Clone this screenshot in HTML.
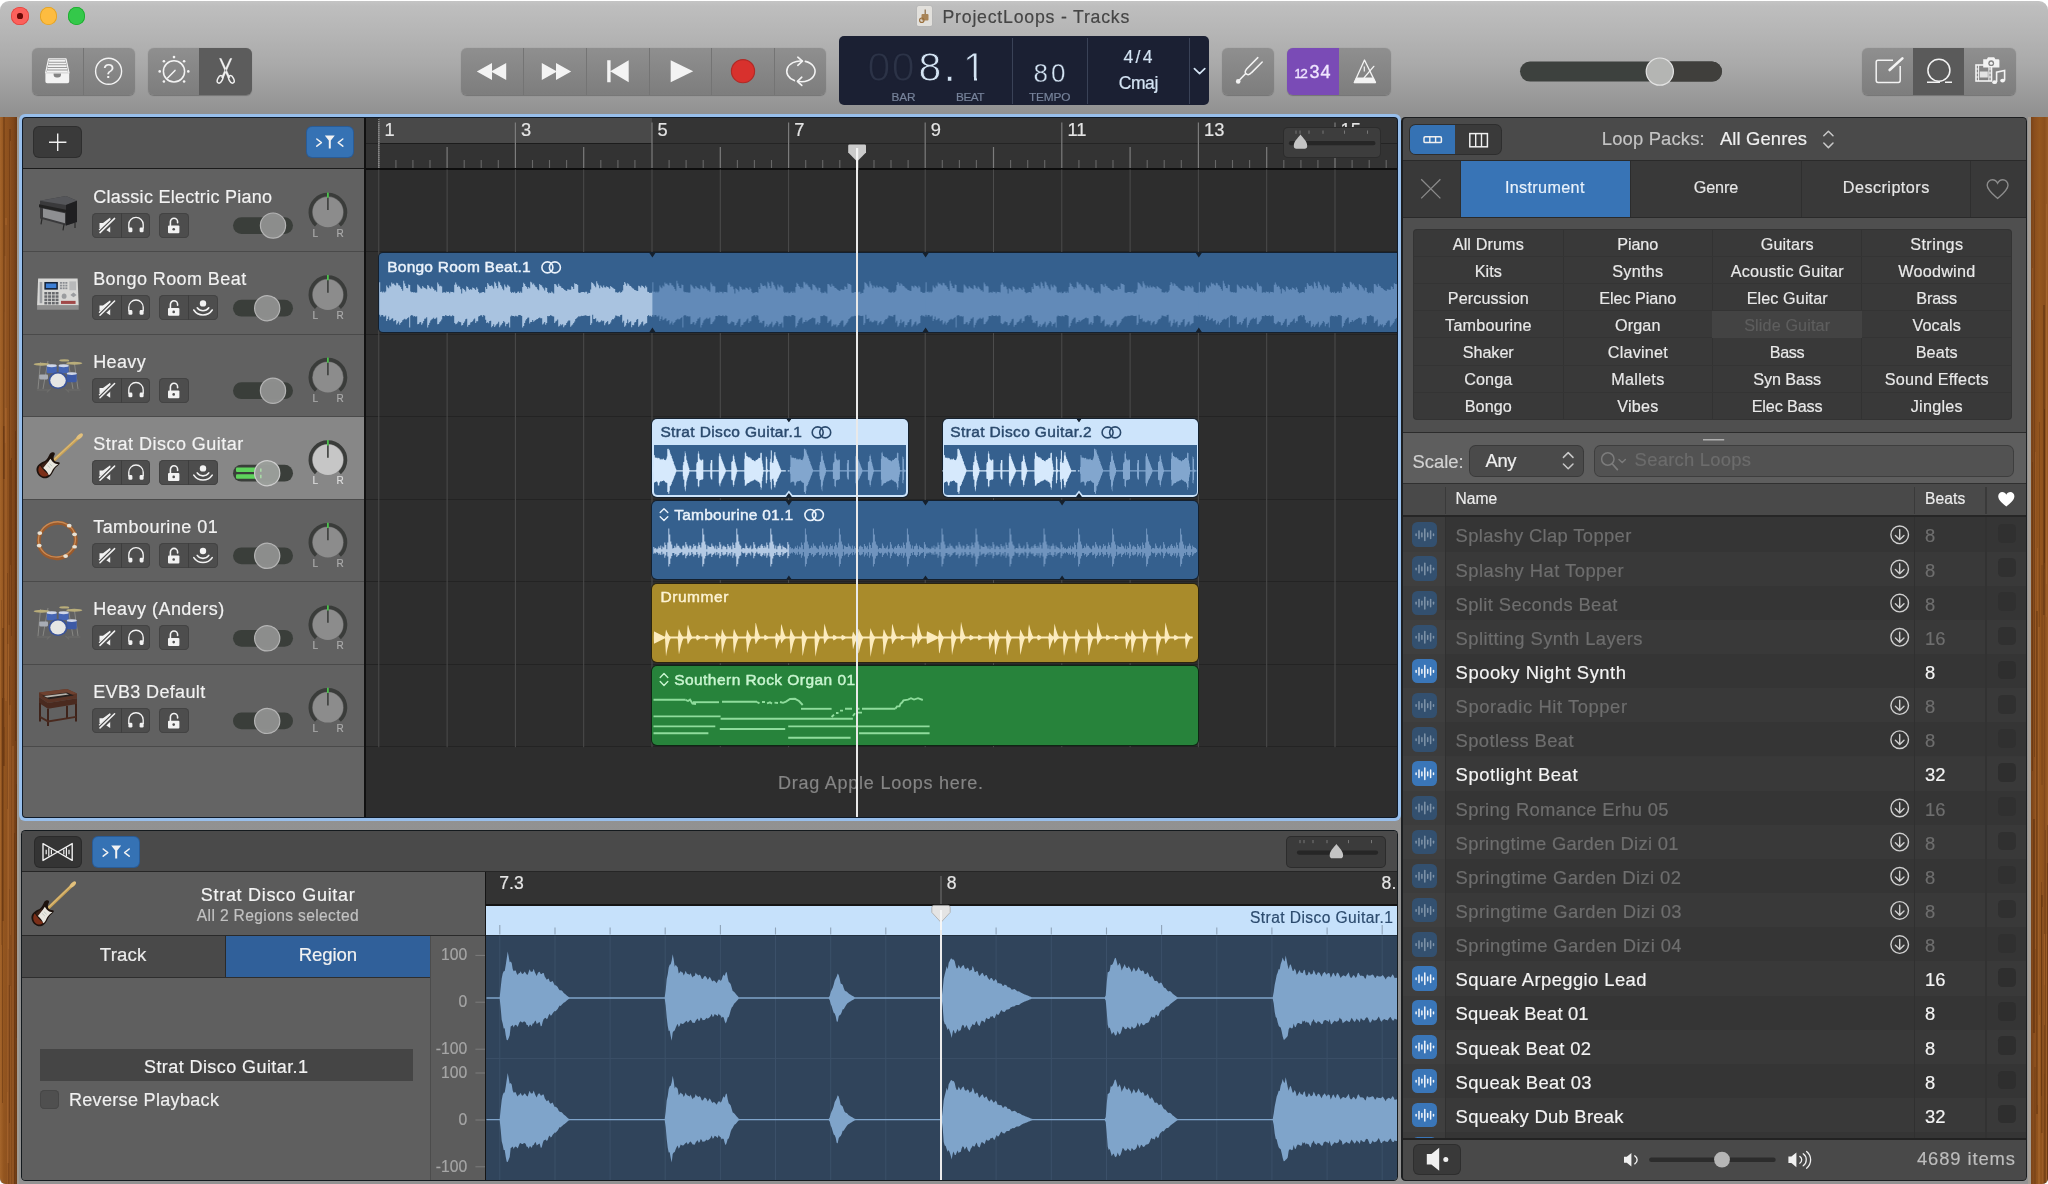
<!DOCTYPE html>
<html><head><meta charset="utf-8"><title>ProjectLoops - Tracks</title>
<style>
html,body{margin:0;padding:0;background:#fff;}
body{width:2048px;height:1184px;position:relative;overflow:hidden;font-family:"Liberation Sans",sans-serif;}
.a{position:absolute;box-sizing:border-box;}
.t{position:absolute;line-height:1;white-space:nowrap;font-family:"Liberation Sans",sans-serif;-webkit-text-stroke:0.18px currentColor;}
svg{overflow:visible;}
</style></head><body><div id="app" style="position:absolute;left:0;top:0;width:2048px;height:1184px;will-change:transform;">
<!-- toolbar -->
<div class="a" style="left:0;top:1.3px;width:2048px;height:1182.7px;border-radius:9px 9px 5px 5px;background:linear-gradient(to bottom,#c4c4c4 0px,#bebebe 5px,#b5b5b5 32px,#aaaaaa 62px,#919191 112px,#929292 100%);"></div>
<div class="a" style="left:11.4px;top:7.4px;width:17.2px;height:17.2px;border-radius:50%;background:#fc605b;box-shadow:inset 0 0 0 0.8px #e0443e;"></div>
<div class="a" style="left:39.9px;top:7.4px;width:17.2px;height:17.2px;border-radius:50%;background:#fdbc40;box-shadow:inset 0 0 0 0.8px #dfa023;"></div>
<div class="a" style="left:67.9px;top:7.4px;width:17.2px;height:17.2px;border-radius:50%;background:#34c84a;box-shadow:inset 0 0 0 0.8px #1aab2c;"></div>
<div class="a" style="left:17.4px;top:13.4px;width:5.2px;height:5.2px;background:#6b0a07;border-radius:50%;"></div>
<div class="a" style="left:917.0px;top:6.0px;width:14.5px;height:20.0px;background:#e2e0dc;border-radius:1.5px;box-shadow:0 0 1px #999;"></div>
<svg class="a" style="left:917.0px;top:6.0px;" width="14.5" height="20.0" viewBox="0 0 14.5 20.0"><path d="M8.2 3.5 L8.2 9" stroke="#8a6a45" stroke-width="1.2"/><rect x="4.5" y="8" width="7" height="6.5" rx="1" fill="#a88458"/><circle cx="4.8" cy="14.2" r="2.2" fill="none" stroke="#9a6f3c" stroke-width="1.2"/></svg>
<span class="t" style="left:942.5px;top:8.5px;font-size:17.7px;color:#454545;letter-spacing:0.79px;">ProjectLoops - Tracks</span>
<div class="a" style="left:31.5px;top:48px;width:103.5px;height:47.3px;border-radius:6px;background:linear-gradient(to bottom,#8f8f8f,#7d7d7d);box-shadow:0 0.5px 1px rgba(0,0,0,.25);overflow:hidden;"><div class="a" style="left:51.0px;top:0;width:1px;height:47.3px;background:#747474;"></div></div>
<div class="a" style="left:148px;top:48px;width:103.7px;height:47.3px;border-radius:6px;background:linear-gradient(to bottom,#8f8f8f,#7d7d7d);box-shadow:0 0.5px 1px rgba(0,0,0,.25);overflow:hidden;"><div class="a" style="left:51px;top:0;width:52.69999999999999px;height:47.3px;background:#5c5c5c;"></div></div>
<div class="a" style="left:460.7px;top:47.6px;width:365.3px;height:47.8px;border-radius:6px;background:linear-gradient(to bottom,#8f8f8f,#7d7d7d);box-shadow:0 0.5px 1px rgba(0,0,0,.25);overflow:hidden;"><div class="a" style="left:62.599999999999966px;top:0;width:1px;height:47.8px;background:#747474;"></div><div class="a" style="left:125.50000000000006px;top:0;width:1px;height:47.8px;background:#747474;"></div><div class="a" style="left:188.40000000000003px;top:0;width:1px;height:47.8px;background:#747474;"></div><div class="a" style="left:250.50000000000006px;top:0;width:1px;height:47.8px;background:#747474;"></div><div class="a" style="left:313.00000000000006px;top:0;width:1px;height:47.8px;background:#747474;"></div></div>
<div class="a" style="left:1222px;top:47.6px;width:52px;height:47.8px;border-radius:6px;background:linear-gradient(to bottom,#8f8f8f,#7d7d7d);box-shadow:0 0.5px 1px rgba(0,0,0,.25);overflow:hidden;"></div>
<div class="a" style="left:1287px;top:47.6px;width:103.7px;height:47.8px;border-radius:6px;background:linear-gradient(to bottom,#8f8f8f,#7d7d7d);box-shadow:0 0.5px 1px rgba(0,0,0,.25);overflow:hidden;"><div class="a" style="left:0px;top:0;width:51.5px;height:47.8px;background:#7a4bb6;"></div></div>
<div class="a" style="left:1861.8px;top:48px;width:154.7px;height:47px;border-radius:6px;background:linear-gradient(to bottom,#8f8f8f,#7d7d7d);box-shadow:0 0.5px 1px rgba(0,0,0,.25);overflow:hidden;"><div class="a" style="left:51.600000000000136px;top:0;width:50.899999999999864px;height:47px;background:#5a5a5a;"></div></div>
<svg class="a" style="left:0.0px;top:0.0px;" width="2048.0" height="116.0" viewBox="0 0 2048.0 116.0"><path d="M48.6 58.9 H66 L69 72.8 H45.6 Z" fill="none" stroke="#f3f3f3" stroke-width="1.2" stroke-linejoin="round"/><path d="M49.1 60.9 H65.5" stroke="#f3f3f3" stroke-width="1.75"/><path d="M48.5 63.5 H66.1" stroke="#f3f3f3" stroke-width="1.75"/><path d="M47.9 66.1 H66.7" stroke="#f3f3f3" stroke-width="1.75"/><path d="M47.4 68.7 H67.2" stroke="#f3f3f3" stroke-width="1.75"/><path d="M46.8 71.3 H67.8" stroke="#f3f3f3" stroke-width="1.75"/><path d="M45.4 73.2 H53.6 V74.4 Q53.6 77.4 56.6 77.4 H58 Q61 77.4 61 74.4 V73.2 H69.2 V81.4 Q69.2 83.2 67.4 83.2 H47.2 Q45.4 83.2 45.4 81.4 Z" fill="#f3f3f3"/><circle cx="108.6" cy="71.2" r="13" fill="none" stroke="#f3f3f3" stroke-width="1.4"/><text x="108.6" y="78.4" font-size="20" fill="#f3f3f3" text-anchor="middle" font-family="Liberation Sans,sans-serif">?</text><circle cx="174" cy="71.4" r="10.6" fill="none" stroke="#f3f3f3" stroke-width="1.5"/><path d="M175 70.4 L167.6 78" stroke="#f3f3f3" stroke-width="1.5" stroke-linecap="round"/><circle cx="174.0" cy="57.1" r="1.3" fill="#f3f3f3"/><circle cx="184.1" cy="61.3" r="1.3" fill="#f3f3f3"/><circle cx="188.3" cy="71.4" r="1.3" fill="#f3f3f3"/><circle cx="184.1" cy="81.5" r="1.3" fill="#f3f3f3"/><circle cx="163.9" cy="81.5" r="1.3" fill="#f3f3f3"/><circle cx="159.7" cy="71.4" r="1.3" fill="#f3f3f3"/><circle cx="163.9" cy="61.3" r="1.3" fill="#f3f3f3"/><path d="M219.6 58.4 L221.2 58.6 L229.9 77.4 L228.2 78.2 Z M231.8 58.4 L230.2 58.6 L221.5 77.4 L223.2 78.2 Z" fill="#f3f3f3" stroke="#f3f3f3" stroke-width="0.5" stroke-linejoin="round"/><ellipse cx="220" cy="79.4" rx="2.3" ry="4" transform="rotate(27 220 79.4)" fill="none" stroke="#f3f3f3" stroke-width="1.45"/><ellipse cx="231.4" cy="79.4" rx="2.3" ry="4" transform="rotate(-27 231.4 79.4)" fill="none" stroke="#f3f3f3" stroke-width="1.45"/><path d="M476.8 71.5 L492 63 V80 Z M491 71.5 L506.2 63 V80 Z" fill="#f3f3f3"/><path d="M571.2 71.5 L556 63 V80 Z M557 71.5 L541.8 63 V80 Z" fill="#f3f3f3"/><path d="M607.2 60.3 H610.6 V82.3 H607.2 Z M610.2 71.3 L628.7 60.3 V82.3 Z" fill="#f3f3f3"/><path d="M670.7 60.3 L693.2 71.3 L670.7 82.3 Z" fill="#f3f3f3"/><circle cx="743" cy="71.2" r="11.6" fill="#d8312d" stroke="#b02a26" stroke-width="1.1"/><path d="M794.4 80.6 A13.4 10.3 0 0 1 802 61.1" fill="none" stroke="#f3f3f3" stroke-width="1.6" stroke-linecap="round"/><path d="M797.8 57.2 L802.4 61.2 L797.8 65.3" fill="none" stroke="#f3f3f3" stroke-width="1.6" stroke-linejoin="round" stroke-linecap="round"/><path d="M805.4 61.4 A13.4 10.3 0 0 1 797.8 81.3" fill="none" stroke="#f3f3f3" stroke-width="1.6" stroke-linecap="round"/><path d="M801.8 77.2 L797.4 81.3 L801.8 85.4" fill="none" stroke="#f3f3f3" stroke-width="1.6" stroke-linejoin="round" stroke-linecap="round"/><circle cx="1238.2" cy="81.4" r="2.3" fill="#f3f3f3"/><path d="M1238.5 81 L1246 73.2" stroke="#f3f3f3" stroke-width="1.6"/><path d="M1257.8 57.6 L1246.6 69 Q1243.8 72.6 1246.6 74.2 Q1249 75.6 1251.6 72.6 L1262.2 62" fill="none" stroke="#f3f3f3" stroke-width="1.5" stroke-linecap="round"/><text y="77.9" fill="#f0e6ff" stroke="#f0e6ff" stroke-width="0.35" font-family="Liberation Sans,sans-serif"><tspan x="1294.6" font-size="12.6">1</tspan><tspan x="1300.3" font-size="13.6">2</tspan><tspan x="1309.6" font-size="18">3</tspan><tspan x="1320.6" font-size="18">4</tspan></text><path d="M1364.5 60 L1354.3 82.6 H1375.5 Z" fill="none" stroke="#f3f3f3" stroke-width="1.3" stroke-linejoin="round"/><path d="M1356.4 77.9 L1354.3 82.6 H1375.5 L1373.4 77.9 Z" fill="#f3f3f3" stroke="#f3f3f3" stroke-width="0.8" stroke-linejoin="round"/><path d="M1364.3 66.4 V71.6" stroke="#f3f3f3" stroke-width="1.2"/><path d="M1364.2 77.6 L1373.8 66.4" stroke="#f3f3f3" stroke-width="1.4" stroke-linecap="round"/><rect x="1520" y="61.6" width="202" height="20" rx="10" fill="#3d413e"/><rect x="1660" y="61.6" width="62" height="20" rx="10" fill="#403f3c"/><circle cx="1659.8" cy="71.6" r="13.6" fill="#b4b5b3" stroke="#e4e4e4" stroke-width="1.2"/><path d="M1893 60.3 H1878 Q1876.2 60.3 1876.2 62.1 V80.6 Q1876.2 82.4 1878 82.4 H1898.4 Q1900.2 82.4 1900.2 80.6 V66" fill="none" stroke="#f3f3f3" stroke-width="1.5"/><path d="M1889.6 70 L1902.4 58.4" stroke="#f3f3f3" stroke-width="2.6" stroke-linecap="round"/><circle cx="1938.9" cy="70.3" r="11" fill="none" stroke="#f3f3f3" stroke-width="1.5"/><path d="M1927 82.3 H1940 M1945 82.3 H1952" stroke="#f3f3f3" stroke-width="1.4"/><rect x="1976" y="65" width="15.5" height="16" fill="none" stroke="#f3f3f3" stroke-width="1.6"/><path d="M1978.6 65 V81 M1988.9 65 V81" stroke="#f3f3f3" stroke-width="1"/><path d="M1976 69 H1978.6 M1976 73 H1978.6 M1976 77 H1978.6 M1988.9 69 H1991.5 M1988.9 73 H1991.5 M1988.9 77 H1991.5" stroke="#f3f3f3" stroke-width="1"/><rect x="1979.8" y="71.5" width="8" height="6" fill="#f3f3f3" opacity=".85"/><path d="M1983.2 59.3 H1986.8 L1988 57.2 H1994.2 L1995.4 59.3 H1998.2 Q1999.4 59.3 1999.4 60.5 V67.6 H1983.2 Z" fill="#f3f3f3"/><circle cx="1991.2" cy="63.2" r="2.9" fill="#858585"/><circle cx="1991.2" cy="63.2" r="1.5" fill="#f3f3f3"/><path d="M1996.6 82 V72.2 L2004.6 70.4 V80.4" fill="none" stroke="#f3f3f3" stroke-width="1.6"/><ellipse cx="1994.6" cy="82.2" rx="2.4" ry="1.9" fill="#f3f3f3"/><ellipse cx="2002.6" cy="80.6" rx="2.4" ry="1.9" fill="#f3f3f3"/></svg>
<div class="a" style="left:839.2px;top:36.3px;width:370.0px;height:69.2px;background:#1b2033;border-radius:5px;"></div>
<div class="a" style="left:1011.5px;top:38.0px;width:1.0px;height:66.0px;background:#3a4257;"></div>
<div class="a" style="left:1086.9px;top:38.0px;width:1.0px;height:66.0px;background:#3a4257;"></div>
<div class="a" style="left:1189.3px;top:38.0px;width:1.0px;height:66.0px;background:#3a4257;"></div>
<span class="t" style="left:867.5px;top:46.9px;font-size:41px;color:#2c3347;letter-spacing:1.40px;-webkit-text-stroke:1.1px #1b2033;">00</span>
<span class="t" style="left:918.5px;top:46.9px;font-size:41px;color:#d4e4f4;-webkit-text-stroke:0.9px #1b2033;">8</span>
<span class="t" style="left:944.0px;top:46.9px;font-size:41px;color:#d4e4f4;-webkit-text-stroke:0.5px #1b2033;">.</span>
<span class="t" style="left:963.0px;top:46.9px;font-size:41px;color:#d4e4f4;-webkit-text-stroke:0.9px #1b2033;">1</span>
<div class="a" style="left:964.0px;top:77.2px;width:9.7px;height:4.6px;background:#1b2033;"></div>
<div class="a" style="left:977.3px;top:77.2px;width:8.0px;height:4.6px;background:#1b2033;"></div>
<span class="t" style="left:891.5px;top:92.0px;font-size:11.8px;color:#77839b;letter-spacing:-0.13px;">BAR</span>
<span class="t" style="left:956.0px;top:92.0px;font-size:11.8px;color:#77839b;letter-spacing:-0.48px;">BEAT</span>
<span class="t" style="left:1029.0px;top:92.0px;font-size:11.8px;color:#77839b;letter-spacing:-0.11px;">TEMPO</span>
<span class="t" style="left:1033.5px;top:59.6px;font-size:26px;color:#d4e4f4;letter-spacing:3.08px;-webkit-text-stroke:0.4px #1b2033;">80</span>
<span class="t" style="left:1123.5px;top:48.7px;font-size:17.5px;color:#d4e4f4;letter-spacing:2.34px;">4/4</span>
<span class="t" style="left:1118.8px;top:74.9px;font-size:17.5px;color:#d4e4f4;letter-spacing:-0.45px;">Cmaj</span>
<svg class="a" style="left:1190.0px;top:60.0px;" width="20.0" height="24.0" viewBox="0 0 20.0 24.0"><path d="M4.4 8.6 L9.6 13.6 L14.8 8.6" fill="none" stroke="#d4e4f4" stroke-width="1.7" stroke-linecap="round" stroke-linejoin="round"/></svg>
<!-- wood -->
<div class="a" style="left:0px;top:116.5px;width:16.5px;height:1067.5px;background:linear-gradient(to right,#a5652b 0%,#93551f 22%,#8c501e 50%,#80471a 78%,#6a3915 100%);overflow:hidden;border-radius:0 0 0 6px;"><div class="a" style="left:5.3px;top:108px;width:1.6px;height:183px;background:rgba(60,25,5,0.19);"></div><div class="a" style="left:1.0px;top:483px;width:0.8px;height:345px;background:rgba(60,25,5,0.16);"></div><div class="a" style="left:9.1px;top:12px;width:1.5px;height:576px;background:rgba(60,25,5,0.22);"></div><div class="a" style="left:6.5px;top:975px;width:0.9px;height:536px;background:rgba(190,120,60,0.20);"></div><div class="a" style="left:8.9px;top:549px;width:1.5px;height:457px;background:rgba(60,25,5,0.22);"></div><div class="a" style="left:10.5px;top:341px;width:1.5px;height:178px;background:rgba(60,25,5,0.23);"></div><div class="a" style="left:8.2px;top:508px;width:1.7px;height:360px;background:rgba(190,120,60,0.19);"></div><div class="a" style="left:4.1px;top:139px;width:1.7px;height:187px;background:rgba(190,120,60,0.21);"></div><div class="a" style="left:14.4px;top:716px;width:1.1px;height:591px;background:rgba(60,25,5,0.21);"></div><div class="a" style="left:2.7px;top:309px;width:1.9px;height:340px;background:rgba(60,25,5,0.26);"></div><div class="a" style="left:9.5px;top:869px;width:1.2px;height:463px;background:rgba(190,120,60,0.22);"></div><div class="a" style="left:7.5px;top:832px;width:1.9px;height:363px;background:rgba(60,25,5,0.13);"></div><div class="a" style="left:11.6px;top:629px;width:2.0px;height:520px;background:rgba(190,120,60,0.25);"></div><div class="a" style="left:14.6px;top:314px;width:1.9px;height:310px;background:rgba(60,25,5,0.21);"></div><div class="a" style="left:3.6px;top:252px;width:1.7px;height:329px;background:rgba(190,120,60,0.13);"></div><div class="a" style="left:7.4px;top:527px;width:1.9px;height:519px;background:rgba(190,120,60,0.25);"></div><div class="a" style="left:16.3px;top:667px;width:1.3px;height:254px;background:rgba(60,25,5,0.15);"></div><div class="a" style="left:3.8px;top:195px;width:1.4px;height:415px;background:rgba(190,120,60,0.17);"></div><div class="a" style="left:2.4px;top:511px;width:1.5px;height:293px;background:rgba(60,25,5,0.24);"></div><div class="a" style="left:8.5px;top:598px;width:1.6px;height:174px;background:rgba(190,120,60,0.19);"></div><div class="a" style="left:6.5px;top:456px;width:1.3px;height:236px;background:rgba(60,25,5,0.20);"></div><div class="a" style="left:1.8px;top:581px;width:0.9px;height:405px;background:rgba(60,25,5,0.29);"></div><div class="a" style="left:10.1px;top:24px;width:1.0px;height:319px;background:rgba(190,120,60,0.29);"></div><div class="a" style="left:9.9px;top:448px;width:0.9px;height:370px;background:rgba(190,120,60,0.21);"></div><div class="a" style="left:5.1px;top:101px;width:1.7px;height:483px;background:rgba(190,120,60,0.27);"></div><div class="a" style="left:2.7px;top:-26px;width:1.9px;height:388px;background:rgba(60,25,5,0.24);"></div></div>
<div class="a" style="left:2030.5px;top:116.5px;width:17.5px;height:1067.5px;background:linear-gradient(to right,#7a4318 0%,#8a4e1d 20%,#95571f 50%,#8b4f1d 80%,#9c5d26 100%);overflow:hidden;border-radius:0 0 6px 0;"><div class="a" style="left:16.0px;top:746px;width:1.2px;height:439px;background:rgba(60,25,5,0.25);"></div><div class="a" style="left:4.6px;top:335px;width:1.0px;height:497px;background:rgba(190,120,60,0.23);"></div><div class="a" style="left:10.7px;top:778px;width:1.7px;height:238px;background:rgba(60,25,5,0.27);"></div><div class="a" style="left:12.9px;top:188px;width:1.4px;height:310px;background:rgba(60,25,5,0.30);"></div><div class="a" style="left:13.8px;top:446px;width:1.0px;height:422px;background:rgba(190,120,60,0.20);"></div><div class="a" style="left:16.4px;top:987px;width:1.9px;height:314px;background:rgba(60,25,5,0.14);"></div><div class="a" style="left:8.2px;top:305px;width:1.4px;height:593px;background:rgba(60,25,5,0.21);"></div><div class="a" style="left:11.4px;top:790px;width:0.9px;height:447px;background:rgba(190,120,60,0.26);"></div><div class="a" style="left:13.1px;top:452px;width:1.0px;height:505px;background:rgba(190,120,60,0.14);"></div><div class="a" style="left:16.6px;top:708px;width:1.4px;height:485px;background:rgba(60,25,5,0.25);"></div><div class="a" style="left:3.0px;top:83px;width:1.0px;height:557px;background:rgba(60,25,5,0.23);"></div><div class="a" style="left:10.4px;top:448px;width:1.9px;height:220px;background:rgba(60,25,5,0.12);"></div><div class="a" style="left:14.0px;top:713px;width:0.9px;height:487px;background:rgba(60,25,5,0.20);"></div><div class="a" style="left:15.3px;top:817px;width:1.1px;height:263px;background:rgba(190,120,60,0.21);"></div><div class="a" style="left:13.4px;top:292px;width:1.5px;height:525px;background:rgba(60,25,5,0.28);"></div><div class="a" style="left:6.2px;top:431px;width:1.5px;height:557px;background:rgba(190,120,60,0.27);"></div><div class="a" style="left:15.4px;top:87px;width:1.0px;height:380px;background:rgba(190,120,60,0.26);"></div><div class="a" style="left:10.6px;top:765px;width:1.0px;height:214px;background:rgba(60,25,5,0.22);"></div><div class="a" style="left:5.7px;top:494px;width:1.5px;height:503px;background:rgba(60,25,5,0.28);"></div><div class="a" style="left:1.0px;top:151px;width:0.9px;height:194px;background:rgba(190,120,60,0.22);"></div><div class="a" style="left:13.3px;top:908px;width:1.3px;height:426px;background:rgba(60,25,5,0.24);"></div><div class="a" style="left:7.9px;top:510px;width:1.4px;height:574px;background:rgba(190,120,60,0.29);"></div><div class="a" style="left:15.6px;top:163px;width:1.3px;height:337px;background:rgba(190,120,60,0.20);"></div><div class="a" style="left:1.3px;top:203px;width:0.9px;height:451px;background:rgba(60,25,5,0.28);"></div><div class="a" style="left:2.7px;top:702px;width:1.6px;height:214px;background:rgba(60,25,5,0.29);"></div><div class="a" style="left:3.8px;top:950px;width:1.3px;height:369px;background:rgba(60,25,5,0.15);"></div></div>
<div class="a" style="left:16.5px;top:116.5px;width:2.0px;height:1067.5px;background:#a09a92;"></div>
<div class="a" style="left:2027.5px;top:116.5px;width:3.0px;height:1067.5px;background:#a39c94;"></div>
<!-- tracks -->
<div class="a" style="left:18.8px;top:113.8px;width:1382.4px;height:707.4px;background:#98bfec;border-radius:6px;"></div>
<div class="a" style="left:21.6px;top:116.8px;width:1376.8px;height:701.6px;background:#0f1a28;border-radius:4px;"></div>
<div class="a" style="left:22.6px;top:117.8px;width:1374.8px;height:699.6px;border-radius:3px;overflow:hidden;background:#2d2d2d;">
<div class="a" style="left:0.0px;top:0.0px;width:341.6px;height:51.0px;background:#545454;"></div>
<div class="a" style="left:0.0px;top:50.2px;width:343.6px;height:1.6px;background:#1b1b1b;"></div>
<div class="a" style="left:0.0px;top:51.0px;width:341.6px;height:83.0px;background:#616161;"></div>
<div class="a" style="left:0.0px;top:133.6px;width:341.6px;height:83.0px;background:#616161;"></div>
<div class="a" style="left:0.0px;top:216.1px;width:341.6px;height:83.0px;background:#616161;"></div>
<div class="a" style="left:0.0px;top:298.6px;width:341.6px;height:83.0px;background:#878787;"></div>
<div class="a" style="left:0.0px;top:381.2px;width:341.6px;height:83.0px;background:#616161;"></div>
<div class="a" style="left:0.0px;top:463.7px;width:341.6px;height:83.0px;background:#616161;"></div>
<div class="a" style="left:0.0px;top:546.3px;width:341.6px;height:83.0px;background:#616161;"></div>
<div class="a" style="left:0.0px;top:133.2px;width:341.6px;height:1.2px;background:#4a4a4a;"></div>
<div class="a" style="left:0.0px;top:215.8px;width:341.6px;height:1.2px;background:#4a4a4a;"></div>
<div class="a" style="left:0.0px;top:298.3px;width:341.6px;height:1.2px;background:#4a4a4a;"></div>
<div class="a" style="left:0.0px;top:380.9px;width:341.6px;height:1.2px;background:#4a4a4a;"></div>
<div class="a" style="left:0.0px;top:463.4px;width:341.6px;height:1.2px;background:#4a4a4a;"></div>
<div class="a" style="left:0.0px;top:546.0px;width:341.6px;height:1.2px;background:#4a4a4a;"></div>
<div class="a" style="left:0.0px;top:628.5px;width:341.6px;height:1.2px;background:#4a4a4a;"></div>
<div class="a" style="left:0.0px;top:628.9px;width:341.6px;height:80.0px;background:#646464;"></div>
<div class="a" style="left:341.6px;top:0.0px;width:2.1px;height:700.0px;background:#111111;"></div>
<div class="a" style="left:11.7px;top:9.2px;width:46.8px;height:30.4px;background:#3a3a3a;border-radius:5px;box-shadow:0 0 0 1px #2e2e2e;"></div>
<div class="a" style="left:284.0px;top:9.2px;width:46.6px;height:30.4px;background:#3572b4;border-radius:5px;box-shadow:0 0 0 1px #2a5c96;"></div>
<div class="a" style="left:343.6px;top:0.0px;width:1031.2px;height:25.4px;background:#343434;"></div>
<div class="a" style="left:356.2px;top:0.0px;width:273.2px;height:25.4px;background:#494949;"></div>
<div class="a" style="left:343.6px;top:25.4px;width:1031.2px;height:1.0px;background:#242424;"></div>
<div class="a" style="left:356.2px;top:25.4px;width:273.2px;height:1.2px;background:#1c1c1c;"></div>
<div class="a" style="left:343.6px;top:26.4px;width:1031.2px;height:24.0px;background:#333333;"></div>
<div class="a" style="left:343.6px;top:50.4px;width:1031.2px;height:1.5px;background:#0e0e0e;"></div>
<div class="a" style="left:343.6px;top:51.9px;width:12.6px;height:577.5px;background:#303030;"></div>
<div class="a" style="left:343.6px;top:133.2px;width:1031.2px;height:1.1px;background:#232323;"></div>
<div class="a" style="left:343.6px;top:215.8px;width:1031.2px;height:1.1px;background:#232323;"></div>
<div class="a" style="left:343.6px;top:298.3px;width:1031.2px;height:1.1px;background:#232323;"></div>
<div class="a" style="left:343.6px;top:380.9px;width:1031.2px;height:1.1px;background:#232323;"></div>
<div class="a" style="left:343.6px;top:463.4px;width:1031.2px;height:1.1px;background:#232323;"></div>
<div class="a" style="left:343.6px;top:546.0px;width:1031.2px;height:1.1px;background:#232323;"></div>
<div class="a" style="left:343.6px;top:628.6px;width:1031.2px;height:1.1px;background:#232323;"></div>
<svg class="a" style="left:-22.6px;top:-117.8px;" width="1400.0" height="830.0" viewBox="0 0 1400.0 830.0"><path d="M378.8 169.5 V747.2" stroke="#4c4c4c" stroke-width="1"/><path d="M378.8 122.5 V168" stroke="#7c7c7c" stroke-width="1.2"/><path d="M395.9 160 V168" stroke="#686868" stroke-width="1.1"/><path d="M412.9 160 V168" stroke="#686868" stroke-width="1.1"/><path d="M430.0 160 V168" stroke="#686868" stroke-width="1.1"/><path d="M447.1 169.5 V747.2" stroke="#4c4c4c" stroke-width="1"/><path d="M447.1 147 V168" stroke="#7c7c7c" stroke-width="1.2"/><path d="M464.2 160 V168" stroke="#686868" stroke-width="1.1"/><path d="M481.2 160 V168" stroke="#686868" stroke-width="1.1"/><path d="M498.3 160 V168" stroke="#686868" stroke-width="1.1"/><path d="M515.4 169.5 V747.2" stroke="#4c4c4c" stroke-width="1"/><path d="M515.4 122.5 V168" stroke="#7c7c7c" stroke-width="1.2"/><path d="M532.5 160 V168" stroke="#686868" stroke-width="1.1"/><path d="M549.5 160 V168" stroke="#686868" stroke-width="1.1"/><path d="M566.6 160 V168" stroke="#686868" stroke-width="1.1"/><path d="M583.7 169.5 V747.2" stroke="#4c4c4c" stroke-width="1"/><path d="M583.7 147 V168" stroke="#7c7c7c" stroke-width="1.2"/><path d="M600.8 160 V168" stroke="#686868" stroke-width="1.1"/><path d="M617.9 160 V168" stroke="#686868" stroke-width="1.1"/><path d="M634.9 160 V168" stroke="#686868" stroke-width="1.1"/><path d="M652.0 169.5 V747.2" stroke="#4c4c4c" stroke-width="1"/><path d="M652.0 122.5 V168" stroke="#7c7c7c" stroke-width="1.2"/><path d="M669.1 160 V168" stroke="#686868" stroke-width="1.1"/><path d="M686.1 160 V168" stroke="#686868" stroke-width="1.1"/><path d="M703.2 160 V168" stroke="#686868" stroke-width="1.1"/><path d="M720.3 169.5 V747.2" stroke="#4c4c4c" stroke-width="1"/><path d="M720.3 147 V168" stroke="#7c7c7c" stroke-width="1.2"/><path d="M737.4 160 V168" stroke="#686868" stroke-width="1.1"/><path d="M754.4 160 V168" stroke="#686868" stroke-width="1.1"/><path d="M771.5 160 V168" stroke="#686868" stroke-width="1.1"/><path d="M788.6 169.5 V747.2" stroke="#4c4c4c" stroke-width="1"/><path d="M788.6 122.5 V168" stroke="#7c7c7c" stroke-width="1.2"/><path d="M805.7 160 V168" stroke="#686868" stroke-width="1.1"/><path d="M822.7 160 V168" stroke="#686868" stroke-width="1.1"/><path d="M839.8 160 V168" stroke="#686868" stroke-width="1.1"/><path d="M856.9 169.5 V747.2" stroke="#4c4c4c" stroke-width="1"/><path d="M856.9 147 V168" stroke="#7c7c7c" stroke-width="1.2"/><path d="M874.0 160 V168" stroke="#686868" stroke-width="1.1"/><path d="M891.0 160 V168" stroke="#686868" stroke-width="1.1"/><path d="M908.1 160 V168" stroke="#686868" stroke-width="1.1"/><path d="M925.2 169.5 V747.2" stroke="#4c4c4c" stroke-width="1"/><path d="M925.2 122.5 V168" stroke="#7c7c7c" stroke-width="1.2"/><path d="M942.3 160 V168" stroke="#686868" stroke-width="1.1"/><path d="M959.4 160 V168" stroke="#686868" stroke-width="1.1"/><path d="M976.4 160 V168" stroke="#686868" stroke-width="1.1"/><path d="M993.5 169.5 V747.2" stroke="#4c4c4c" stroke-width="1"/><path d="M993.5 147 V168" stroke="#7c7c7c" stroke-width="1.2"/><path d="M1010.6 160 V168" stroke="#686868" stroke-width="1.1"/><path d="M1027.7 160 V168" stroke="#686868" stroke-width="1.1"/><path d="M1044.7 160 V168" stroke="#686868" stroke-width="1.1"/><path d="M1061.8 169.5 V747.2" stroke="#4c4c4c" stroke-width="1"/><path d="M1061.8 122.5 V168" stroke="#7c7c7c" stroke-width="1.2"/><path d="M1078.9 160 V168" stroke="#686868" stroke-width="1.1"/><path d="M1096.0 160 V168" stroke="#686868" stroke-width="1.1"/><path d="M1113.0 160 V168" stroke="#686868" stroke-width="1.1"/><path d="M1130.1 169.5 V747.2" stroke="#4c4c4c" stroke-width="1"/><path d="M1130.1 147 V168" stroke="#7c7c7c" stroke-width="1.2"/><path d="M1147.2 160 V168" stroke="#686868" stroke-width="1.1"/><path d="M1164.2 160 V168" stroke="#686868" stroke-width="1.1"/><path d="M1181.3 160 V168" stroke="#686868" stroke-width="1.1"/><path d="M1198.4 169.5 V747.2" stroke="#4c4c4c" stroke-width="1"/><path d="M1198.4 122.5 V168" stroke="#7c7c7c" stroke-width="1.2"/><path d="M1215.5 160 V168" stroke="#686868" stroke-width="1.1"/><path d="M1232.5 160 V168" stroke="#686868" stroke-width="1.1"/><path d="M1249.6 160 V168" stroke="#686868" stroke-width="1.1"/><path d="M1266.7 169.5 V747.2" stroke="#4c4c4c" stroke-width="1"/><path d="M1266.7 147 V168" stroke="#7c7c7c" stroke-width="1.2"/><path d="M1283.8 160 V168" stroke="#686868" stroke-width="1.1"/><path d="M1300.9 160 V168" stroke="#686868" stroke-width="1.1"/><path d="M1317.9 160 V168" stroke="#686868" stroke-width="1.1"/><path d="M1335.0 169.5 V747.2" stroke="#4c4c4c" stroke-width="1"/><path d="M1335.0 122.5 V168" stroke="#7c7c7c" stroke-width="1.2"/><path d="M1352.1 160 V168" stroke="#686868" stroke-width="1.1"/><path d="M1369.2 160 V168" stroke="#686868" stroke-width="1.1"/><path d="M1386.2 160 V168" stroke="#686868" stroke-width="1.1"/><path d="M378.8 119 V168" stroke="#8a8a8a" stroke-width="1.4" stroke-dasharray="1 1"/></svg>
<span class="t" style="left:361.8px;top:3.5px;font-size:18.3px;color:#e4e4e4;">1</span>
<span class="t" style="left:498.4px;top:3.5px;font-size:18.3px;color:#e4e4e4;">3</span>
<span class="t" style="left:635.0px;top:3.5px;font-size:18.3px;color:#e4e4e4;">5</span>
<span class="t" style="left:771.6px;top:3.5px;font-size:18.3px;color:#e4e4e4;">7</span>
<span class="t" style="left:908.2px;top:3.5px;font-size:18.3px;color:#e4e4e4;">9</span>
<span class="t" style="left:1044.8px;top:3.5px;font-size:18.3px;color:#e4e4e4;">11</span>
<span class="t" style="left:1181.4px;top:3.5px;font-size:18.3px;color:#e4e4e4;">13</span>
<span class="t" style="left:1318.0px;top:3.5px;font-size:18.3px;color:#e4e4e4;">15</span>
<div class="a" style="left:1261.1px;top:10.0px;width:96.0px;height:28.8px;background:#3d3d3d;border-radius:4px;box-shadow:0 0 0 1px #2c2c2c;"></div>
<div class="a" style="left:355.6px;top:134.6px;width:1030.0px;height:80.2px;background:#14202e;border-radius:5px 0 0 5px;"></div>
<div class="a" style="left:356.6px;top:135.6px;width:1030.0px;height:78.2px;background:#35608e;border-radius:4px 0 0 4px;"></div>
<span class="t" style="left:364.6px;top:141.5px;font-size:15.5px;color:#eaf2fb;letter-spacing:0.24px;-webkit-text-stroke:0.45px currentColor;">Bongo Room Beat.1</span>
<div class="a" style="left:628.9px;top:300.0px;width:257.1px;height:79.8px;background:#16222f;border-radius:6px;"></div>
<div class="a" style="left:629.9px;top:301.0px;width:255.1px;height:77.8px;background:#cde4fb;border-radius:5px;"></div>
<div class="a" style="left:631.3px;top:327.4px;width:252.3px;height:50.1px;background:#35608e;border-radius:0 0 3.5px 3.5px;"></div>
<span class="t" style="left:637.8px;top:306.6px;font-size:15.5px;color:#2b4a6d;letter-spacing:0.37px;-webkit-text-stroke:0.45px currentColor;">Strat Disco Guitar.1</span>
<div class="a" style="left:919.0px;top:300.0px;width:257.4px;height:79.8px;background:#16222f;border-radius:6px;"></div>
<div class="a" style="left:920.0px;top:301.0px;width:255.4px;height:77.8px;background:#cde4fb;border-radius:5px;"></div>
<div class="a" style="left:921.4px;top:327.4px;width:252.6px;height:50.1px;background:#35608e;border-radius:0 0 3.5px 3.5px;"></div>
<span class="t" style="left:927.7px;top:306.6px;font-size:15.5px;color:#2b4a6d;letter-spacing:0.37px;-webkit-text-stroke:0.45px currentColor;">Strat Disco Guitar.2</span>
<div class="a" style="left:628.9px;top:382.6px;width:547.5px;height:80.0px;background:#14202e;border-radius:6px;"></div>
<div class="a" style="left:629.9px;top:383.6px;width:545.5px;height:78.0px;background:#35608e;border-radius:5px;"></div>
<span class="t" style="left:651.6px;top:389.1px;font-size:15.5px;color:#eaf2fb;letter-spacing:0.25px;-webkit-text-stroke:0.45px currentColor;">Tambourine 01.1</span>
<div class="a" style="left:628.9px;top:465.2px;width:547.5px;height:79.8px;background:#2a2410;border-radius:6px;"></div>
<div class="a" style="left:629.9px;top:466.2px;width:545.5px;height:77.8px;background:#a98b2b;border-radius:5px;"></div>
<span class="t" style="left:637.8px;top:471.5px;font-size:15.5px;color:#fdf3d3;letter-spacing:0.57px;-webkit-text-stroke:0.45px currentColor;">Drummer</span>
<div class="a" style="left:628.9px;top:547.6px;width:547.5px;height:80.2px;background:#0f2614;border-radius:6px;"></div>
<div class="a" style="left:629.9px;top:548.6px;width:545.5px;height:78.2px;background:#27833b;border-radius:5px;"></div>
<span class="t" style="left:651.6px;top:554.1px;font-size:15.5px;color:#c9f5d0;letter-spacing:0.45px;-webkit-text-stroke:0.45px currentColor;">Southern Rock Organ 01</span>
<span class="t" style="left:755.4px;top:656.4px;font-size:18px;color:#858585;letter-spacing:0.76px;">Drag Apple Loops here.</span>
<span class="t" style="left:70.6px;top:69.9px;font-size:18px;color:#f2f2f2;letter-spacing:0.28px;">Classic Electric Piano</span>
<svg class="a" style="left:13.4px;top:73.0px;" width="44.0" height="40.0" viewBox="0 0 44.0 40.0"><g transform="translate(0 -2) scale(1.0 1.18)"><path d="M4 10 L30 6 L41 10 L41 28 L30 31 L4 25 Z" fill="#3a3a3c"/><path d="M4 10 L30 6 L41 10 L30 13.5 Z" fill="#55565a"/><path d="M3 13 L30 17.5 L30 20 L3 15.5 Z" fill="#222"/><path d="M7 16.5 L29 20.5 L29 29 L7 24 Z" fill="#8e8f92"/><path d="M30 13.5 L41 10 V28 L30 31 Z" fill="#1f1f21"/><path d="M6 25 L5 30 M28 30 L27 35 M39 28.5 L39 33" stroke="#2a2a2a" stroke-width="1.2"/></g></svg>
<div class="a" style="left:69.7px;top:94.9px;width:58.2px;height:25.0px;background:#4d4d4d;border-radius:4.5px;box-shadow:inset 0 0 0 1px #434343;"></div>
<div class="a" style="left:98.4px;top:94.9px;width:1.0px;height:25.0px;background:#3e3e3e;"></div>
<div class="a" style="left:136.7px;top:94.9px;width:30.0px;height:25.0px;background:#4d4d4d;border-radius:4.5px;box-shadow:inset 0 0 0 1px #434343;"></div>
<span class="t" style="left:289.8px;top:110.9px;font-size:10px;color:#ababab;">L</span>
<span class="t" style="left:314.0px;top:110.9px;font-size:10px;color:#ababab;">R</span>
<span class="t" style="left:70.6px;top:152.4px;font-size:18px;color:#f2f2f2;letter-spacing:0.42px;">Bongo Room Beat</span>
<svg class="a" style="left:13.4px;top:155.6px;" width="44.0" height="40.0" viewBox="0 0 44.0 40.0"><g transform="translate(-1 -4) scale(1.04 1.18)"><path d="M3 8 H41 L42 31 H2 Z" fill="#d8d8d6"/><path d="M2 31 H42 V34.5 H2 Z" fill="#8e8e8e"/><rect x="9" y="11" width="13" height="6.5" fill="#16243a"/><rect x="10.5" y="12.3" width="10" height="3.8" fill="#3c7fd6"/><rect x="9.0" y="19.5" width="2.8" height="2.1" fill="#66686c"/><rect x="12.6" y="19.5" width="2.8" height="2.1" fill="#66686c"/><rect x="16.2" y="19.5" width="2.8" height="2.1" fill="#66686c"/><rect x="19.8" y="19.5" width="2.8" height="2.1" fill="#66686c"/><rect x="9.0" y="22.3" width="2.8" height="2.1" fill="#66686c"/><rect x="12.6" y="22.3" width="2.8" height="2.1" fill="#66686c"/><rect x="16.2" y="22.3" width="2.8" height="2.1" fill="#66686c"/><rect x="19.8" y="22.3" width="2.8" height="2.1" fill="#66686c"/><rect x="9.0" y="25.1" width="2.8" height="2.1" fill="#66686c"/><rect x="12.6" y="25.1" width="2.8" height="2.1" fill="#66686c"/><rect x="16.2" y="25.1" width="2.8" height="2.1" fill="#66686c"/><rect x="19.8" y="25.1" width="2.8" height="2.1" fill="#66686c"/><rect x="9.0" y="27.9" width="2.8" height="2.1" fill="#66686c"/><rect x="12.6" y="27.9" width="2.8" height="2.1" fill="#66686c"/><rect x="16.2" y="27.9" width="2.8" height="2.1" fill="#66686c"/><rect x="19.8" y="27.9" width="2.8" height="2.1" fill="#66686c"/><rect x="24.0" y="11.0" width="1.9" height="1.5" fill="#8a8d92"/><rect x="26.6" y="11.0" width="1.9" height="1.5" fill="#8a8d92"/><rect x="29.2" y="11.0" width="1.9" height="1.5" fill="#8a8d92"/><rect x="24.0" y="13.3" width="1.9" height="1.5" fill="#8a8d92"/><rect x="26.6" y="13.3" width="1.9" height="1.5" fill="#8a8d92"/><rect x="29.2" y="13.3" width="1.9" height="1.5" fill="#8a8d92"/><rect x="24.0" y="15.6" width="1.9" height="1.5" fill="#8a8d92"/><rect x="26.6" y="15.6" width="1.9" height="1.5" fill="#8a8d92"/><rect x="29.2" y="15.6" width="1.9" height="1.5" fill="#8a8d92"/><rect x="33" y="10.5" width="6.5" height="7.5" fill="#b8b9ba"/><circle cx="28" cy="23" r="2.3" fill="#9a9c9f"/><rect x="25" y="27" width="14" height="2.6" fill="#a04848"/><rect x="4.5" y="11" width="2.5" height="18" fill="#9d9fa2"/><path d="M34 22 l3 -2 l3 2 l-3 2z" fill="#9a9c9f"/></g></svg>
<div class="a" style="left:69.7px;top:177.4px;width:58.2px;height:25.0px;background:#4d4d4d;border-radius:4.5px;box-shadow:inset 0 0 0 1px #434343;"></div>
<div class="a" style="left:98.4px;top:177.4px;width:1.0px;height:25.0px;background:#3e3e3e;"></div>
<div class="a" style="left:136.7px;top:177.4px;width:58.4px;height:25.0px;background:#4d4d4d;border-radius:4.5px;box-shadow:inset 0 0 0 1px #434343;"></div>
<div class="a" style="left:165.8px;top:177.4px;width:1.0px;height:25.0px;background:#3e3e3e;"></div>
<span class="t" style="left:289.8px;top:193.5px;font-size:10px;color:#ababab;">L</span>
<span class="t" style="left:314.0px;top:193.5px;font-size:10px;color:#ababab;">R</span>
<span class="t" style="left:70.6px;top:235.0px;font-size:18px;color:#f2f2f2;letter-spacing:0.37px;">Heavy</span>
<svg class="a" style="left:13.4px;top:238.1px;" width="44.0" height="40.0" viewBox="0 0 44.0 40.0"><g transform="translate(-5.5 -4) scale(1.25 1.12)"><path d="M8 9 L6 33 M35 9 L38 33 M14 8 L10 33 M30 8 L34 33" stroke="#8a8a86" stroke-width="0.8"/><ellipse cx="9" cy="11" rx="6.5" ry="1.3" fill="#b9ad7a"/><ellipse cx="35" cy="10" rx="6.5" ry="1.3" fill="#b9ad7a"/><ellipse cx="27" cy="7.5" rx="4" ry="1" fill="#b9ad7a"/><rect x="13" y="12" width="8" height="7" rx="1" fill="#4565b4"/><rect x="22.5" y="12" width="8" height="7" rx="1" fill="#4565b4"/><ellipse cx="17" cy="12.3" rx="4" ry="1.3" fill="#cfd6e8"/><ellipse cx="26.5" cy="12.3" rx="4" ry="1.3" fill="#cfd6e8"/><rect x="29" y="19" width="8" height="8" rx="1" fill="#3d5aa6"/><ellipse cx="33" cy="19.3" rx="4" ry="1.3" fill="#cfd6e8"/><rect x="7" y="20" width="7" height="4.5" rx="1" fill="#a8acb4"/><circle cx="22" cy="25.5" r="7.6" fill="#3a5398"/><circle cx="22" cy="25.5" r="6.2" fill="#e6e6e4"/><path d="M5 34 H15 M30 34 H40 M16 33 L13 36 M28 33 L31 36" stroke="#6e6e6c" stroke-width="0.9"/></g></svg>
<div class="a" style="left:69.7px;top:260.0px;width:58.2px;height:25.0px;background:#4d4d4d;border-radius:4.5px;box-shadow:inset 0 0 0 1px #434343;"></div>
<div class="a" style="left:98.4px;top:260.0px;width:1.0px;height:25.0px;background:#3e3e3e;"></div>
<div class="a" style="left:136.7px;top:260.0px;width:30.0px;height:25.0px;background:#4d4d4d;border-radius:4.5px;box-shadow:inset 0 0 0 1px #434343;"></div>
<span class="t" style="left:289.8px;top:276.0px;font-size:10px;color:#ababab;">L</span>
<span class="t" style="left:314.0px;top:276.0px;font-size:10px;color:#ababab;">R</span>
<span class="t" style="left:70.6px;top:317.5px;font-size:18px;color:#f2f2f2;letter-spacing:0.47px;">Strat Disco Guitar</span>
<svg class="a" style="left:13.4px;top:320.6px;" width="44.0" height="40.0" viewBox="0 0 44.0 40.0"><g transform="translate(0 0)"><path d="M16.6 23.4 L41.4 0.6" stroke="#c9a257" stroke-width="3" stroke-linecap="round"/><path d="M17.4 22.2 L41 0.4" stroke="#dcbb78" stroke-width="1.1"/><ellipse cx="43.6" cy="-1.6" rx="4" ry="2" transform="rotate(-42 43.6 -1.6)" fill="#e2c07c"/><path d="M16.4 14.2 C18.6 13.8 19.6 15.6 18.2 17.4 C17.2 19 17.4 21.6 18.6 23 C20.4 24.6 22.6 23.4 23.8 24.8 C24.2 26.4 20.6 28.4 18.6 31 C16.6 34 15.6 38.4 11.2 40 C6.6 41.4 1.6 38 0.6 33 C-0.2 28.6 3 25.6 7.6 23.6 C11.6 21.8 12.4 18.4 13.6 16.2 C14.2 15 15.2 14.4 16.4 14.2 Z" fill="#1d120d"/><path d="M4 27.6 C1.6 30 1.8 34.6 4.6 37 C7.4 39.4 11 38.8 12.6 36.4 C10.4 35 6.4 31.6 4 27.6 Z" fill="#7c2f18"/><path d="M5 27 C7 25.4 9.4 24.6 11 23 L13 25 L6.6 30.4 Z" fill="#3a2016"/><path d="M14.4 20.8 C15.6 22.6 17 24.6 19 25.4 C20.4 26 21.6 25.6 22.4 26 C20.4 27.6 18.2 29.2 16.8 31.6 C15.8 33.6 14.8 36.4 12.8 37.2 C12 34.4 9.4 31.8 7.2 30 C9.2 27.4 12 24.6 14.4 20.8 Z" fill="#e9e7df"/><path d="M11.6 27.4 L14.4 30 M13.4 25.6 L16.2 28.2" stroke="#b9c4bc" stroke-width="0.9"/></g></svg>
<div class="a" style="left:69.7px;top:342.5px;width:58.2px;height:25.0px;background:#4d4d4d;border-radius:4.5px;box-shadow:inset 0 0 0 1px #434343;"></div>
<div class="a" style="left:98.4px;top:342.5px;width:1.0px;height:25.0px;background:#3e3e3e;"></div>
<div class="a" style="left:136.7px;top:342.5px;width:58.4px;height:25.0px;background:#4d4d4d;border-radius:4.5px;box-shadow:inset 0 0 0 1px #434343;"></div>
<div class="a" style="left:165.8px;top:342.5px;width:1.0px;height:25.0px;background:#3e3e3e;"></div>
<span class="t" style="left:289.8px;top:358.6px;font-size:10px;color:#dcdcdc;">L</span>
<span class="t" style="left:314.0px;top:358.6px;font-size:10px;color:#dcdcdc;">R</span>
<span class="t" style="left:70.6px;top:400.1px;font-size:18px;color:#f2f2f2;letter-spacing:0.45px;">Tambourine 01</span>
<svg class="a" style="left:13.4px;top:403.2px;" width="44.0" height="40.0" viewBox="0 0 44.0 40.0"><g transform="translate(-4 -4) scale(1.2 1.24)"><ellipse cx="21" cy="19" rx="15.5" ry="14.2" fill="none" stroke="#9a5a2c" stroke-width="3.2" transform="rotate(-12 21 19)"/><ellipse cx="21" cy="19" rx="15.5" ry="14.2" fill="none" stroke="#c78a55" stroke-width="1.1" transform="rotate(-12 21 19) translate(0,-0.9)"/><ellipse cx="31" cy="7" rx="2" ry="1.5" fill="#e6e2d6"/><ellipse cx="35.5" cy="14" rx="2" ry="1.5" fill="#e6e2d6"/><ellipse cx="35.5" cy="24" rx="2" ry="1.5" fill="#e6e2d6"/><ellipse cx="28" cy="31.5" rx="2" ry="1.5" fill="#e6e2d6"/><ellipse cx="6.5" cy="13" rx="2" ry="1.5" fill="#e6e2d6"/><ellipse cx="6" cy="23" rx="2" ry="1.5" fill="#e6e2d6"/></g></svg>
<div class="a" style="left:69.7px;top:425.1px;width:58.2px;height:25.0px;background:#4d4d4d;border-radius:4.5px;box-shadow:inset 0 0 0 1px #434343;"></div>
<div class="a" style="left:98.4px;top:425.1px;width:1.0px;height:25.0px;background:#3e3e3e;"></div>
<div class="a" style="left:136.7px;top:425.1px;width:58.4px;height:25.0px;background:#4d4d4d;border-radius:4.5px;box-shadow:inset 0 0 0 1px #434343;"></div>
<div class="a" style="left:165.8px;top:425.1px;width:1.0px;height:25.0px;background:#3e3e3e;"></div>
<span class="t" style="left:289.8px;top:441.1px;font-size:10px;color:#ababab;">L</span>
<span class="t" style="left:314.0px;top:441.1px;font-size:10px;color:#ababab;">R</span>
<span class="t" style="left:70.6px;top:482.6px;font-size:18px;color:#f2f2f2;letter-spacing:0.46px;">Heavy (Anders)</span>
<svg class="a" style="left:13.4px;top:485.7px;" width="44.0" height="40.0" viewBox="0 0 44.0 40.0"><g transform="translate(-5.5 -4) scale(1.25 1.12)"><path d="M8 9 L6 33 M35 9 L38 33 M14 8 L10 33 M30 8 L34 33" stroke="#8a8a86" stroke-width="0.8"/><ellipse cx="9" cy="11" rx="6.5" ry="1.3" fill="#b9ad7a"/><ellipse cx="35" cy="10" rx="6.5" ry="1.3" fill="#b9ad7a"/><ellipse cx="27" cy="7.5" rx="4" ry="1" fill="#b9ad7a"/><rect x="13" y="12" width="8" height="7" rx="1" fill="#4565b4"/><rect x="22.5" y="12" width="8" height="7" rx="1" fill="#4565b4"/><ellipse cx="17" cy="12.3" rx="4" ry="1.3" fill="#cfd6e8"/><ellipse cx="26.5" cy="12.3" rx="4" ry="1.3" fill="#cfd6e8"/><rect x="29" y="19" width="8" height="8" rx="1" fill="#3d5aa6"/><ellipse cx="33" cy="19.3" rx="4" ry="1.3" fill="#cfd6e8"/><rect x="7" y="20" width="7" height="4.5" rx="1" fill="#a8acb4"/><circle cx="22" cy="25.5" r="7.6" fill="#3a5398"/><circle cx="22" cy="25.5" r="6.2" fill="#e6e6e4"/><path d="M5 34 H15 M30 34 H40 M16 33 L13 36 M28 33 L31 36" stroke="#6e6e6c" stroke-width="0.9"/></g></svg>
<div class="a" style="left:69.7px;top:507.6px;width:58.2px;height:25.0px;background:#4d4d4d;border-radius:4.5px;box-shadow:inset 0 0 0 1px #434343;"></div>
<div class="a" style="left:98.4px;top:507.6px;width:1.0px;height:25.0px;background:#3e3e3e;"></div>
<div class="a" style="left:136.7px;top:507.6px;width:30.0px;height:25.0px;background:#4d4d4d;border-radius:4.5px;box-shadow:inset 0 0 0 1px #434343;"></div>
<span class="t" style="left:289.8px;top:523.7px;font-size:10px;color:#ababab;">L</span>
<span class="t" style="left:314.0px;top:523.7px;font-size:10px;color:#ababab;">R</span>
<span class="t" style="left:70.6px;top:565.2px;font-size:18px;color:#f2f2f2;letter-spacing:0.36px;">EVB3 Default</span>
<svg class="a" style="left:13.4px;top:568.3px;" width="44.0" height="40.0" viewBox="0 0 44.0 40.0"><g transform="translate(0 -4) scale(1.0 1.16)"><path d="M3 9 L31 6 L41 10 L41 14 L12 18 L3 13 Z" fill="#5a3426"/><path d="M3 9 L31 6 L41 10 L13 13.6 Z" fill="#6f4230"/><path d="M6 11.8 L31 9 L38 11.6 L13 14.8 Z" fill="#26201e"/><path d="M8 12 L30 9.8 L33 10.8 L11 13.4 Z" fill="#b8b4ac"/><path d="M3 13 L12 18 L41 14 V19 L12 23 L3 18 Z" fill="#4a2a1f"/><path d="M4 18 V34 M12 23 V38 M40 19 V34 M31 20.5 V31" stroke="#3e231a" stroke-width="2"/><path d="M4 30 L12 34 L40 30" stroke="#4a2a1f" stroke-width="1.6" fill="none"/></g></svg>
<div class="a" style="left:69.7px;top:590.2px;width:58.2px;height:25.0px;background:#4d4d4d;border-radius:4.5px;box-shadow:inset 0 0 0 1px #434343;"></div>
<div class="a" style="left:98.4px;top:590.2px;width:1.0px;height:25.0px;background:#3e3e3e;"></div>
<div class="a" style="left:136.7px;top:590.2px;width:30.0px;height:25.0px;background:#4d4d4d;border-radius:4.5px;box-shadow:inset 0 0 0 1px #434343;"></div>
<span class="t" style="left:289.8px;top:606.2px;font-size:10px;color:#ababab;">L</span>
<span class="t" style="left:314.0px;top:606.2px;font-size:10px;color:#ababab;">R</span>
<svg class="a" style="left:-22.6px;top:-117.8px;" width="1400.0" height="830.0" viewBox="0 0 1400.0 830.0"><path d="M49 142.2 H66.4 M57.7 133.5 V150.9" stroke="#f0f0f0" stroke-width="1.4"/><path d="M324.8 135.6 H334.8 L330.8 140.6 V148.6 H328.8 V140.6 Z" fill="#f2f2f2"/><path d="M316.8 139.0 L321.4 142.6 L316.8 146.2 M342.8 139.0 L338.2 142.6 L342.8 146.2" fill="none" stroke="#f2f2f2" stroke-width="1.5" stroke-linecap="round" stroke-linejoin="round"/><path d="M1291 143.2 H1373.4" stroke="#262626" stroke-width="4.2" stroke-linecap="round"/><path d="M1296 130.5 V133.8" stroke="#777" stroke-width="1"/><path d="M1300 130.5 V133.8" stroke="#777" stroke-width="1"/><path d="M1309 130.5 V133.8" stroke="#777" stroke-width="1"/><path d="M1323 130.5 V133.8" stroke="#777" stroke-width="1"/><path d="M1344.5 130.5 V133.8" stroke="#777" stroke-width="1"/><path d="M1367.5 130.5 V133.8" stroke="#777" stroke-width="1"/><path d="M1300.5 134.6 C1303.5 138.5 1307.2 141.5 1307.2 146 Q1307.2 148.8 1304.6 148.8 H1296.4 Q1293.8 148.8 1293.8 146 C1293.8 141.5 1297.5 138.5 1300.5 134.6 Z" fill="#c4c4c4"/><path d="M379.2 304.3L379.2 282.3L380.2 282.3L380.2 292L381.2 292L381.2 291.4L382.2 291.4L382.2 292.5L383.2 292.5L383.2 291.4L384.2 291.4L384.2 292.5L385.2 292.5L385.2 291.4L386.2 291.4L386.2 285.4L387.2 285.4L387.2 287.3L388.2 287.3L388.2 288.2L389.2 288.2L389.2 285.5L390.2 285.5L390.2 286.6L391.2 286.6L391.2 282.4L392.2 282.4L392.2 283.8L393.2 283.8L393.2 283.5L394.2 283.5L394.2 284.8L395.2 284.8L395.2 285.5L396.2 285.5L396.2 282.8L397.2 282.8L397.2 283.2L398.2 283.2L398.2 285.3L399.2 285.3L399.2 285.6L400.2 285.6L400.2 287L401.2 287L401.2 289.1L402.2 289.1L402.2 290.7L403.2 290.7L403.2 280.8L404.2 280.8L404.2 283.6L405.2 283.6L405.2 286L406.2 286L406.2 288L407.2 288L407.2 288.3L408.2 288.3L408.2 284.4L409.2 284.4L409.2 285L410.2 285L410.2 291.6L411.2 291.6L411.2 292.2L412.2 292.2L412.2 292.1L413.2 292.1L413.2 292.4L414.2 292.4L414.2 292.3L415.2 292.3L415.2 292.7L416.2 292.7L416.2 292.5L417.2 292.5L417.2 284.4L418.2 284.4L418.2 285.6L419.2 285.6L419.2 286.7L420.2 286.7L420.2 288.3L421.2 288.3L421.2 288.7L422.2 288.7L422.2 285.9L423.2 285.9L423.2 287.2L424.2 287.2L424.2 288L425.2 288L425.2 288.4L426.2 288.4L426.2 289.3L427.2 289.3L427.2 285.1L428.2 285.1L428.2 285.7L429.2 285.7L429.2 287.8L430.2 287.8L430.2 288.7L431.2 288.7L431.2 286.4L432.2 286.4L432.2 287.5L433.2 287.5L433.2 289.1L434.2 289.1L434.2 290.6L435.2 290.6L435.2 290.3L436.2 290.3L436.2 291.8L437.2 291.8L437.2 282.4L438.2 282.4L438.2 284.3L439.2 284.3L439.2 286.3L440.2 286.3L440.2 285.8L441.2 285.8L441.2 286.4L442.2 286.4L442.2 292.7L443.2 292.7L443.2 292.2L444.2 292.2L444.2 292.3L445.2 292.3L445.2 292.8L446.2 292.8L446.2 291.4L447.2 291.4L447.2 292L448.2 292L448.2 291.8L449.2 291.8L449.2 293.2L450.2 293.2L450.2 291.8L451.2 291.8L451.2 292.1L452.2 292.1L452.2 292L453.2 292L453.2 292.5L454.2 292.5L454.2 284.7L455.2 284.7L455.2 282.4L456.2 282.4L456.2 284.5L457.2 284.5L457.2 287L458.2 287L458.2 285.8L459.2 285.8L459.2 286.8L460.2 286.8L460.2 289.3L461.2 289.3L461.2 293.6L462.2 293.6L462.2 288.3L463.2 288.3L463.2 289L464.2 289L464.2 290.1L465.2 290.1L465.2 291.4L466.2 291.4L466.2 286.2L467.2 286.2L467.2 287L468.2 287L468.2 288.7L469.2 288.7L469.2 290.1L470.2 290.1L470.2 288.9L471.2 288.9L471.2 289.8L472.2 289.8L472.2 287.4L473.2 287.4L473.2 288L474.2 288L474.2 288.8L475.2 288.8L475.2 290L476.2 290L476.2 287.3L477.2 287.3L477.2 288.8L478.2 288.8L478.2 291.9L479.2 291.9L479.2 293.2L480.2 293.2L480.2 292.7L481.2 292.7L481.2 292.5L482.2 292.5L482.2 292.1L483.2 292.1L483.2 291.9L484.2 291.9L484.2 292.7L485.2 292.7L485.2 287.1L486.2 287.1L486.2 289.1L487.2 289.1L487.2 283.1L488.2 283.1L488.2 284.5L489.2 284.5L489.2 286L490.2 286L490.2 286.1L491.2 286.1L491.2 285.3L492.2 285.3L492.2 286.5L493.2 286.5L493.2 288.4L494.2 288.4L494.2 281.8L495.2 281.8L495.2 283.3L496.2 283.3L496.2 285.9L497.2 285.9L497.2 288.2L498.2 288.2L498.2 281.6L499.2 281.6L499.2 282.6L500.2 282.6L500.2 285.1L501.2 285.1L501.2 286.6L502.2 286.6L502.2 288.7L503.2 288.7L503.2 290.2L504.2 290.2L504.2 284.5L505.2 284.5L505.2 286.4L506.2 286.4L506.2 287.6L507.2 287.6L507.2 284.8L508.2 284.8L508.2 285.8L509.2 285.8L509.2 286.8L510.2 286.8L510.2 291.7L511.2 291.7L511.2 292.9L512.2 292.9L512.2 291.9L513.2 291.9L513.2 292.8L514.2 292.8L514.2 291.8L515.2 291.8L515.2 293.2L516.2 293.2L516.2 293.1L517.2 293.1L517.2 291.7L518.2 291.7L518.2 291.5L519.2 291.5L519.2 293L520.2 293L520.2 291.4L521.2 291.4L521.2 292.8L522.2 292.8L522.2 287L523.2 287L523.2 282.7L524.2 282.7L524.2 284.1L525.2 284.1L525.2 286.1L526.2 286.1L526.2 286.9L527.2 286.9L527.2 288.7L528.2 288.7L528.2 287L529.2 287L529.2 288.3L530.2 288.3L530.2 281.7L531.2 281.7L531.2 282.4L532.2 282.4L532.2 284.4L533.2 284.4L533.2 283.5L534.2 283.5L534.2 285.3L535.2 285.3L535.2 286.7L536.2 286.7L536.2 287.2L537.2 287.2L537.2 289.2L538.2 289.2L538.2 290.2L539.2 290.2L539.2 283.9L540.2 283.9L540.2 284.9L541.2 284.9L541.2 285.4L542.2 285.4L542.2 287.2L543.2 287.2L543.2 288.4L544.2 288.4L544.2 290.6L545.2 290.6L545.2 287.6L546.2 287.6L546.2 288.1L547.2 288.1L547.2 291.9L548.2 291.9L548.2 293.2L549.2 293.2L549.2 292.5L550.2 292.5L550.2 293.1L551.2 293.1L551.2 291.6L552.2 291.6L552.2 292.6L553.2 292.6L553.2 293.6L554.2 293.6L554.2 284L555.2 284L555.2 284.2L556.2 284.2L556.2 285.6L557.2 285.6L557.2 286.9L558.2 286.9L558.2 283.8L559.2 283.8L559.2 285.7L560.2 285.7L560.2 286.3L561.2 286.3L561.2 287.7L562.2 287.7L562.2 287.9L563.2 287.9L563.2 289L564.2 289L564.2 290L565.2 290L565.2 290.6L566.2 290.6L566.2 291L567.2 291L567.2 289.2L568.2 289.2L568.2 289.6L569.2 289.6L569.2 289.7L570.2 289.7L570.2 289.7L571.2 289.7L571.2 286.2L572.2 286.2L572.2 286.9L573.2 286.9L573.2 289.1L574.2 289.1L574.2 283.3L575.2 283.3L575.2 284.1L576.2 284.1L576.2 283.9L577.2 283.9L577.2 285L578.2 285L578.2 292.6L579.2 292.6L579.2 293L580.2 293L580.2 292.5L581.2 292.5L581.2 292.1L582.2 292.1L582.2 292L583.2 292L583.2 291.9L584.2 291.9L584.2 292.6L585.2 292.6L585.2 291.8L586.2 291.8L586.2 291.7L587.2 291.7L587.2 293.7L588.2 293.7L588.2 292.7L589.2 292.7L589.2 293L590.2 293L590.2 289.5L591.2 289.5L591.2 282.3L592.2 282.3L592.2 283.1L593.2 283.1L593.2 284.3L594.2 284.3L594.2 285.7L595.2 285.7L595.2 287.3L596.2 287.3L596.2 281.2L597.2 281.2L597.2 283.6L598.2 283.6L598.2 285.3L599.2 285.3L599.2 288.3L600.2 288.3L600.2 285.5L601.2 285.5L601.2 286.8L602.2 286.8L602.2 287.8L603.2 287.8L603.2 285.5L604.2 285.5L604.2 287.3L605.2 287.3L605.2 287.6L606.2 287.6L606.2 286.2L607.2 286.2L607.2 286.9L608.2 286.9L608.2 287.6L609.2 287.6L609.2 288.8L610.2 288.8L610.2 285.9L611.2 285.9L611.2 286.9L612.2 286.9L612.2 287.7L613.2 287.7L613.2 288.6L614.2 288.6L614.2 288.9L615.2 288.9L615.2 292.3L616.2 292.3L616.2 292.3L617.2 292.3L617.2 292.7L618.2 292.7L618.2 292.3L619.2 292.3L619.2 291.6L620.2 291.6L620.2 292.8L621.2 292.8L621.2 292.1L622.2 292.1L622.2 290.6L623.2 290.6L623.2 285L624.2 285L624.2 282.1L625.2 282.1L625.2 283.6L626.2 283.6L626.2 285.8L627.2 285.8L627.2 283.3L628.2 283.3L628.2 284.2L629.2 284.2L629.2 285.8L630.2 285.8L630.2 286.1L631.2 286.1L631.2 287.3L632.2 287.3L632.2 288.2L633.2 288.2L633.2 288.7L634.2 288.7L634.2 289.9L635.2 289.9L635.2 290.3L636.2 290.3L636.2 290.7L637.2 290.7L637.2 291.1L638.2 291.1L638.2 285.8L639.2 285.8L639.2 286.3L640.2 286.3L640.2 287.4L641.2 287.4L641.2 285.4L642.2 285.4L642.2 286.1L643.2 286.1L643.2 287.1L644.2 287.1L644.2 288.2L645.2 288.2L645.2 285.8L646.2 285.8L646.2 287.2L647.2 287.2L647.2 291.8L648.2 291.8L648.2 291.9L649.2 291.9L649.2 292.9L650.2 292.9L650.2 292.7L651.2 292.7L651.2 292.8L652.2 292.8L652.2 291.4L653.2 291.4L653.2 304.3L653.2 314.8L652.2 314.8L652.2 316.8L651.2 316.8L651.2 315.8L650.2 315.8L650.2 316.3L649.2 316.3L649.2 315.1L648.2 315.1L648.2 316L647.2 316L647.2 323.1L646.2 323.1L646.2 323.5L645.2 323.5L645.2 324.2L644.2 324.2L644.2 325.4L643.2 325.4L643.2 321.5L642.2 321.5L642.2 322.2L641.2 322.2L641.2 324.2L640.2 324.2L640.2 325.4L639.2 325.4L639.2 326.8L638.2 326.8L638.2 319.1L637.2 319.1L637.2 319.8L636.2 319.8L636.2 322.1L635.2 322.1L635.2 322.4L634.2 322.4L634.2 325.2L633.2 325.2L633.2 325L632.2 325L632.2 327.3L631.2 327.3L631.2 321.2L630.2 321.2L630.2 321.9L629.2 321.9L629.2 323.3L628.2 323.3L628.2 319.5L627.2 319.5L627.2 323.1L626.2 323.1L626.2 325.4L625.2 325.4L625.2 326.8L624.2 326.8L624.2 320.7L623.2 320.7L623.2 322.6L622.2 322.6L622.2 314.7L621.2 314.7L621.2 315.1L620.2 315.1L620.2 316.7L619.2 316.7L619.2 316.2L618.2 316.2L618.2 316.2L617.2 316.2L617.2 315.7L616.2 315.7L616.2 315.4L615.2 315.4L615.2 317.8L614.2 317.8L614.2 319.3L613.2 319.3L613.2 319.1L612.2 319.1L612.2 320.3L611.2 320.3L611.2 322.4L610.2 322.4L610.2 324L609.2 324L609.2 324.5L608.2 324.5L608.2 321.1L607.2 321.1L607.2 322.1L606.2 322.1L606.2 323.2L605.2 323.2L605.2 325.3L604.2 325.3L604.2 320.7L603.2 320.7L603.2 321.3L602.2 321.3L602.2 320.2L601.2 320.2L601.2 321.5L600.2 321.5L600.2 322.3L599.2 322.3L599.2 322.3L598.2 322.3L598.2 320.8L597.2 320.8L597.2 321.7L596.2 321.7L596.2 318.2L595.2 318.2L595.2 318.9L594.2 318.9L594.2 318.9L593.2 318.9L593.2 314.8L592.2 314.8L592.2 323.3L591.2 323.3L591.2 325L590.2 325L590.2 315.7L589.2 315.7L589.2 316L588.2 316L588.2 316.1L587.2 316.1L587.2 315.8L586.2 315.8L586.2 315.3L585.2 315.3L585.2 315.6L584.2 315.6L584.2 315.8L583.2 315.8L583.2 316.1L582.2 316.1L582.2 315.8L581.2 315.8L581.2 316.3L580.2 316.3L580.2 316.4L579.2 316.4L579.2 316.3L578.2 316.3L578.2 317.3L577.2 317.3L577.2 318.3L576.2 318.3L576.2 318.9L575.2 318.9L575.2 321.4L574.2 321.4L574.2 323L573.2 323L573.2 324.6L572.2 324.6L572.2 325.6L571.2 325.6L571.2 326.7L570.2 326.7L570.2 320.4L569.2 320.4L569.2 320.6L568.2 320.6L568.2 321.5L567.2 321.5L567.2 323.1L566.2 323.1L566.2 325.1L565.2 325.1L565.2 325.6L564.2 325.6L564.2 327.3L563.2 327.3L563.2 324.2L562.2 324.2L562.2 325.3L561.2 325.3L561.2 324.2L560.2 324.2L560.2 325.8L559.2 325.8L559.2 326.4L558.2 326.4L558.2 319.5L557.2 319.5L557.2 320.7L556.2 320.7L556.2 321.5L555.2 321.5L555.2 323.1L554.2 323.1L554.2 316.4L553.2 316.4L553.2 316.2L552.2 316.2L552.2 315.7L551.2 315.7L551.2 314.9L550.2 314.9L550.2 316L549.2 316L549.2 316.2L548.2 316.2L548.2 316L547.2 316L547.2 323L546.2 323L546.2 324.7L545.2 324.7L545.2 322L544.2 322L544.2 323.6L543.2 323.6L543.2 324.4L542.2 324.4L542.2 318.3L541.2 318.3L541.2 318.2L540.2 318.2L540.2 317.4L539.2 317.4L539.2 318L538.2 318L538.2 318.9L537.2 318.9L537.2 319.2L536.2 319.2L536.2 320L535.2 320L535.2 320.8L534.2 320.8L534.2 321.7L533.2 321.7L533.2 320.1L532.2 320.1L532.2 322L531.2 322L531.2 322.1L530.2 322.1L530.2 323.6L529.2 323.6L529.2 317.4L528.2 317.4L528.2 317.8L527.2 317.8L527.2 319L526.2 319L526.2 320.6L525.2 320.6L525.2 323L524.2 323L524.2 325.9L523.2 325.9L523.2 327.5L522.2 327.5L522.2 316.1L521.2 316.1L521.2 315.2L520.2 315.2L520.2 315L519.2 315L519.2 314.9L518.2 314.9L518.2 316.5L517.2 316.5L517.2 316.2L516.2 316.2L516.2 315.8L515.2 315.8L515.2 316.4L514.2 316.4L514.2 316L513.2 316L513.2 316L512.2 316L512.2 315.5L511.2 315.5L511.2 316.6L510.2 316.6L510.2 327.6L509.2 327.6L509.2 322.4L508.2 322.4L508.2 323.8L507.2 323.8L507.2 324.1L506.2 324.1L506.2 326.3L505.2 326.3L505.2 322.3L504.2 322.3L504.2 321L503.2 321L503.2 322.9L502.2 322.9L502.2 324.5L501.2 324.5L501.2 325.6L500.2 325.6L500.2 327.3L499.2 327.3L499.2 321.8L498.2 321.8L498.2 323.5L497.2 323.5L497.2 324.3L496.2 324.3L496.2 325.5L495.2 325.5L495.2 326.9L494.2 326.9L494.2 324.3L493.2 324.3L493.2 326L492.2 326L492.2 327.2L491.2 327.2L491.2 320.7L490.2 320.7L490.2 321.1L489.2 321.1L489.2 323.2L488.2 323.2L488.2 322.2L487.2 322.2L487.2 323L486.2 323L486.2 319.8L485.2 319.8L485.2 315.7L484.2 315.7L484.2 314.9L483.2 314.9L483.2 316.7L482.2 316.7L482.2 315.2L481.2 315.2L481.2 315.3L480.2 315.3L480.2 316L479.2 316L479.2 316.5L478.2 316.5L478.2 321.2L477.2 321.2L477.2 321.2L476.2 321.2L476.2 323.1L475.2 323.1L475.2 318.4L474.2 318.4L474.2 319.6L473.2 319.6L473.2 321.2L472.2 321.2L472.2 321.9L471.2 321.9L471.2 322.6L470.2 322.6L470.2 324.8L469.2 324.8L469.2 325.1L468.2 325.1L468.2 326.8L467.2 326.8L467.2 318.8L466.2 318.8L466.2 319.2L465.2 319.2L465.2 321.6L464.2 321.6L464.2 322.9L463.2 322.9L463.2 324.9L462.2 324.9L462.2 325.5L461.2 325.5L461.2 322.2L460.2 322.2L460.2 322.1L459.2 322.1L459.2 321.2L458.2 321.2L458.2 322.5L457.2 322.5L457.2 323.7L456.2 323.7L456.2 324.3L455.2 324.3L455.2 323L454.2 323L454.2 315.9L453.2 315.9L453.2 315.3L452.2 315.3L452.2 316.2L451.2 316.2L451.2 316.2L450.2 316.2L450.2 315.3L449.2 315.3L449.2 315.9L448.2 315.9L448.2 316.1L447.2 316.1L447.2 315.7L446.2 315.7L446.2 315L445.2 315L445.2 316.3L444.2 316.3L444.2 316L443.2 316L443.2 315.9L442.2 315.9L442.2 319.6L441.2 319.6L441.2 321.3L440.2 321.3L440.2 322.2L439.2 322.2L439.2 323.9L438.2 323.9L438.2 324.2L437.2 324.2L437.2 317.4L436.2 317.4L436.2 318.4L435.2 318.4L435.2 319.1L434.2 319.1L434.2 317.7L433.2 317.7L433.2 318.7L432.2 318.7L432.2 319.5L431.2 319.5L431.2 320.5L430.2 320.5L430.2 322.8L429.2 322.8L429.2 325.1L428.2 325.1L428.2 327.4L427.2 327.4L427.2 317.2L426.2 317.2L426.2 318.6L425.2 318.6L425.2 318.7L424.2 318.7L424.2 321L423.2 321L423.2 323.2L422.2 323.2L422.2 324.8L421.2 324.8L421.2 322L420.2 322L420.2 322.6L419.2 322.6L419.2 323.9L418.2 323.9L418.2 324.3L417.2 324.3L417.2 316.3L416.2 316.3L416.2 316.8L415.2 316.8L415.2 316.1L414.2 316.1L414.2 316.5L413.2 316.5L413.2 315.4L412.2 315.4L412.2 314.9L411.2 314.9L411.2 315.8L410.2 315.8L410.2 327.4L409.2 327.4L409.2 317.3L408.2 317.3L408.2 318L407.2 318L407.2 319.2L406.2 319.2L406.2 319.5L405.2 319.5L405.2 318.7L404.2 318.7L404.2 319.6L403.2 319.6L403.2 320.2L402.2 320.2L402.2 321.9L401.2 321.9L401.2 322.9L400.2 322.9L400.2 324.8L399.2 324.8L399.2 321.6L398.2 321.6L398.2 323.3L397.2 323.3L397.2 324.6L396.2 324.6L396.2 320L395.2 320L395.2 320.7L394.2 320.7L394.2 321.3L393.2 321.3L393.2 318.2L392.2 318.2L392.2 318.8L391.2 318.8L391.2 319.8L390.2 319.8L390.2 320.2L389.2 320.2L389.2 316.5L388.2 316.5L388.2 319.1L387.2 319.1L387.2 321.1L386.2 321.1L386.2 315.4L385.2 315.4L385.2 316.6L384.2 316.6L384.2 316.4L383.2 316.4L383.2 314.9L382.2 314.9L382.2 314.9L381.2 314.9L381.2 316.6L380.2 316.6L380.2 314.8L379.2 314.8Z" fill="#a9c3e0"/><path d="M649.2 252.7 H655.6 L652.4 257.4 Z M649.2 332.3 H655.6 L652.4 327.6 Z" fill="#16202c"/><path d="M652.4 304.3L652.4 282.3L653.4 282.3L653.4 292L654.4 292L654.4 291.4L655.4 291.4L655.4 292.5L656.4 292.5L656.4 291.4L657.4 291.4L657.4 292.5L658.4 292.5L658.4 291.4L659.4 291.4L659.4 285.4L660.4 285.4L660.4 287.3L661.4 287.3L661.4 288.2L662.4 288.2L662.4 285.5L663.4 285.5L663.4 286.6L664.4 286.6L664.4 282.4L665.4 282.4L665.4 283.8L666.4 283.8L666.4 283.5L667.4 283.5L667.4 284.8L668.4 284.8L668.4 285.5L669.4 285.5L669.4 282.8L670.4 282.8L670.4 283.2L671.4 283.2L671.4 285.3L672.4 285.3L672.4 285.6L673.4 285.6L673.4 287L674.4 287L674.4 289.1L675.4 289.1L675.4 290.7L676.4 290.7L676.4 280.8L677.4 280.8L677.4 283.6L678.4 283.6L678.4 286L679.4 286L679.4 288L680.4 288L680.4 288.3L681.4 288.3L681.4 284.4L682.4 284.4L682.4 285L683.4 285L683.4 291.6L684.4 291.6L684.4 292.2L685.4 292.2L685.4 292.1L686.4 292.1L686.4 292.4L687.4 292.4L687.4 292.3L688.4 292.3L688.4 292.7L689.4 292.7L689.4 292.5L690.4 292.5L690.4 284.4L691.4 284.4L691.4 285.6L692.4 285.6L692.4 286.7L693.4 286.7L693.4 288.3L694.4 288.3L694.4 288.7L695.4 288.7L695.4 285.9L696.4 285.9L696.4 287.2L697.4 287.2L697.4 288L698.4 288L698.4 288.4L699.4 288.4L699.4 289.3L700.4 289.3L700.4 285.1L701.4 285.1L701.4 285.7L702.4 285.7L702.4 287.8L703.4 287.8L703.4 288.7L704.4 288.7L704.4 286.4L705.4 286.4L705.4 287.5L706.4 287.5L706.4 289.1L707.4 289.1L707.4 290.6L708.4 290.6L708.4 290.3L709.4 290.3L709.4 291.8L710.4 291.8L710.4 282.4L711.4 282.4L711.4 284.3L712.4 284.3L712.4 286.3L713.4 286.3L713.4 285.8L714.4 285.8L714.4 286.4L715.4 286.4L715.4 292.7L716.4 292.7L716.4 292.2L717.4 292.2L717.4 292.3L718.4 292.3L718.4 292.8L719.4 292.8L719.4 291.4L720.4 291.4L720.4 292L721.4 292L721.4 291.8L722.4 291.8L722.4 293.2L723.4 293.2L723.4 291.8L724.4 291.8L724.4 292.1L725.4 292.1L725.4 292L726.4 292L726.4 292.5L727.4 292.5L727.4 284.7L728.4 284.7L728.4 282.4L729.4 282.4L729.4 284.5L730.4 284.5L730.4 287L731.4 287L731.4 285.8L732.4 285.8L732.4 286.8L733.4 286.8L733.4 289.3L734.4 289.3L734.4 293.6L735.4 293.6L735.4 288.3L736.4 288.3L736.4 289L737.4 289L737.4 290.1L738.4 290.1L738.4 291.4L739.4 291.4L739.4 286.2L740.4 286.2L740.4 287L741.4 287L741.4 288.7L742.4 288.7L742.4 290.1L743.4 290.1L743.4 288.9L744.4 288.9L744.4 289.8L745.4 289.8L745.4 287.4L746.4 287.4L746.4 288L747.4 288L747.4 288.8L748.4 288.8L748.4 290L749.4 290L749.4 287.3L750.4 287.3L750.4 288.8L751.4 288.8L751.4 291.9L752.4 291.9L752.4 293.2L753.4 293.2L753.4 292.7L754.4 292.7L754.4 292.5L755.4 292.5L755.4 292.1L756.4 292.1L756.4 291.9L757.4 291.9L757.4 292.7L758.4 292.7L758.4 287.1L759.4 287.1L759.4 289.1L760.4 289.1L760.4 283.1L761.4 283.1L761.4 284.5L762.4 284.5L762.4 286L763.4 286L763.4 286.1L764.4 286.1L764.4 285.3L765.4 285.3L765.4 286.5L766.4 286.5L766.4 288.4L767.4 288.4L767.4 281.8L768.4 281.8L768.4 283.3L769.4 283.3L769.4 285.9L770.4 285.9L770.4 288.2L771.4 288.2L771.4 281.6L772.4 281.6L772.4 282.6L773.4 282.6L773.4 285.1L774.4 285.1L774.4 286.6L775.4 286.6L775.4 288.7L776.4 288.7L776.4 290.2L777.4 290.2L777.4 284.5L778.4 284.5L778.4 286.4L779.4 286.4L779.4 287.6L780.4 287.6L780.4 284.8L781.4 284.8L781.4 285.8L782.4 285.8L782.4 286.8L783.4 286.8L783.4 291.7L784.4 291.7L784.4 292.9L785.4 292.9L785.4 291.9L786.4 291.9L786.4 292.8L787.4 292.8L787.4 291.8L788.4 291.8L788.4 293.2L789.4 293.2L789.4 293.1L790.4 293.1L790.4 291.7L791.4 291.7L791.4 291.5L792.4 291.5L792.4 293L793.4 293L793.4 291.4L794.4 291.4L794.4 292.8L795.4 292.8L795.4 287L796.4 287L796.4 282.7L797.4 282.7L797.4 284.1L798.4 284.1L798.4 286.1L799.4 286.1L799.4 286.9L800.4 286.9L800.4 288.7L801.4 288.7L801.4 287L802.4 287L802.4 288.3L803.4 288.3L803.4 281.7L804.4 281.7L804.4 282.4L805.4 282.4L805.4 284.4L806.4 284.4L806.4 283.5L807.4 283.5L807.4 285.3L808.4 285.3L808.4 286.7L809.4 286.7L809.4 287.2L810.4 287.2L810.4 289.2L811.4 289.2L811.4 290.2L812.4 290.2L812.4 283.9L813.4 283.9L813.4 284.9L814.4 284.9L814.4 285.4L815.4 285.4L815.4 287.2L816.4 287.2L816.4 288.4L817.4 288.4L817.4 290.6L818.4 290.6L818.4 287.6L819.4 287.6L819.4 288.1L820.4 288.1L820.4 291.9L821.4 291.9L821.4 293.2L822.4 293.2L822.4 292.5L823.4 292.5L823.4 293.1L824.4 293.1L824.4 291.6L825.4 291.6L825.4 292.6L826.4 292.6L826.4 293.6L827.4 293.6L827.4 284L828.4 284L828.4 284.2L829.4 284.2L829.4 285.6L830.4 285.6L830.4 286.9L831.4 286.9L831.4 283.8L832.4 283.8L832.4 285.7L833.4 285.7L833.4 286.3L834.4 286.3L834.4 287.7L835.4 287.7L835.4 287.9L836.4 287.9L836.4 289L837.4 289L837.4 290L838.4 290L838.4 290.6L839.4 290.6L839.4 291L840.4 291L840.4 289.2L841.4 289.2L841.4 289.6L842.4 289.6L842.4 289.7L843.4 289.7L843.4 289.7L844.4 289.7L844.4 286.2L845.4 286.2L845.4 286.9L846.4 286.9L846.4 289.1L847.4 289.1L847.4 283.3L848.4 283.3L848.4 284.1L849.4 284.1L849.4 283.9L850.4 283.9L850.4 285L851.4 285L851.4 292.6L852.4 292.6L852.4 293L853.4 293L853.4 292.5L854.4 292.5L854.4 292.1L855.4 292.1L855.4 292L856.4 292L856.4 291.9L857.4 291.9L857.4 292.6L858.4 292.6L858.4 291.8L859.4 291.8L859.4 291.7L860.4 291.7L860.4 293.7L861.4 293.7L861.4 292.7L862.4 292.7L862.4 293L863.4 293L863.4 289.5L864.4 289.5L864.4 282.3L865.4 282.3L865.4 283.1L866.4 283.1L866.4 284.3L867.4 284.3L867.4 285.7L868.4 285.7L868.4 287.3L869.4 287.3L869.4 281.2L870.4 281.2L870.4 283.6L871.4 283.6L871.4 285.3L872.4 285.3L872.4 288.3L873.4 288.3L873.4 285.5L874.4 285.5L874.4 286.8L875.4 286.8L875.4 287.8L876.4 287.8L876.4 285.5L877.4 285.5L877.4 287.3L878.4 287.3L878.4 287.6L879.4 287.6L879.4 286.2L880.4 286.2L880.4 286.9L881.4 286.9L881.4 287.6L882.4 287.6L882.4 288.8L883.4 288.8L883.4 285.9L884.4 285.9L884.4 286.9L885.4 286.9L885.4 287.7L886.4 287.7L886.4 288.6L887.4 288.6L887.4 288.9L888.4 288.9L888.4 292.3L889.4 292.3L889.4 292.3L890.4 292.3L890.4 292.7L891.4 292.7L891.4 292.3L892.4 292.3L892.4 291.6L893.4 291.6L893.4 292.8L894.4 292.8L894.4 292.1L895.4 292.1L895.4 290.6L896.4 290.6L896.4 285L897.4 285L897.4 282.1L898.4 282.1L898.4 283.6L899.4 283.6L899.4 285.8L900.4 285.8L900.4 283.3L901.4 283.3L901.4 284.2L902.4 284.2L902.4 285.8L903.4 285.8L903.4 286.1L904.4 286.1L904.4 287.3L905.4 287.3L905.4 288.2L906.4 288.2L906.4 288.7L907.4 288.7L907.4 289.9L908.4 289.9L908.4 290.3L909.4 290.3L909.4 290.7L910.4 290.7L910.4 291.1L911.4 291.1L911.4 285.8L912.4 285.8L912.4 286.3L913.4 286.3L913.4 287.4L914.4 287.4L914.4 285.4L915.4 285.4L915.4 286.1L916.4 286.1L916.4 287.1L917.4 287.1L917.4 288.2L918.4 288.2L918.4 285.8L919.4 285.8L919.4 287.2L920.4 287.2L920.4 291.8L921.4 291.8L921.4 291.9L922.4 291.9L922.4 292.9L923.4 292.9L923.4 292.7L924.4 292.7L924.4 292.8L925.4 292.8L925.4 291.4L926.4 291.4L926.4 304.3L926.4 314.8L925.4 314.8L925.4 316.8L924.4 316.8L924.4 315.8L923.4 315.8L923.4 316.3L922.4 316.3L922.4 315.1L921.4 315.1L921.4 316L920.4 316L920.4 323.1L919.4 323.1L919.4 323.5L918.4 323.5L918.4 324.2L917.4 324.2L917.4 325.4L916.4 325.4L916.4 321.5L915.4 321.5L915.4 322.2L914.4 322.2L914.4 324.2L913.4 324.2L913.4 325.4L912.4 325.4L912.4 326.8L911.4 326.8L911.4 319.1L910.4 319.1L910.4 319.8L909.4 319.8L909.4 322.1L908.4 322.1L908.4 322.4L907.4 322.4L907.4 325.2L906.4 325.2L906.4 325L905.4 325L905.4 327.3L904.4 327.3L904.4 321.2L903.4 321.2L903.4 321.9L902.4 321.9L902.4 323.3L901.4 323.3L901.4 319.5L900.4 319.5L900.4 323.1L899.4 323.1L899.4 325.4L898.4 325.4L898.4 326.8L897.4 326.8L897.4 320.7L896.4 320.7L896.4 322.6L895.4 322.6L895.4 314.7L894.4 314.7L894.4 315.1L893.4 315.1L893.4 316.7L892.4 316.7L892.4 316.2L891.4 316.2L891.4 316.2L890.4 316.2L890.4 315.7L889.4 315.7L889.4 315.4L888.4 315.4L888.4 317.8L887.4 317.8L887.4 319.3L886.4 319.3L886.4 319.1L885.4 319.1L885.4 320.3L884.4 320.3L884.4 322.4L883.4 322.4L883.4 324L882.4 324L882.4 324.5L881.4 324.5L881.4 321.1L880.4 321.1L880.4 322.1L879.4 322.1L879.4 323.2L878.4 323.2L878.4 325.3L877.4 325.3L877.4 320.7L876.4 320.7L876.4 321.3L875.4 321.3L875.4 320.2L874.4 320.2L874.4 321.5L873.4 321.5L873.4 322.3L872.4 322.3L872.4 322.3L871.4 322.3L871.4 320.8L870.4 320.8L870.4 321.7L869.4 321.7L869.4 318.2L868.4 318.2L868.4 318.9L867.4 318.9L867.4 318.9L866.4 318.9L866.4 314.8L865.4 314.8L865.4 323.3L864.4 323.3L864.4 325L863.4 325L863.4 315.7L862.4 315.7L862.4 316L861.4 316L861.4 316.1L860.4 316.1L860.4 315.8L859.4 315.8L859.4 315.3L858.4 315.3L858.4 315.6L857.4 315.6L857.4 315.8L856.4 315.8L856.4 316.1L855.4 316.1L855.4 315.8L854.4 315.8L854.4 316.3L853.4 316.3L853.4 316.4L852.4 316.4L852.4 316.3L851.4 316.3L851.4 317.3L850.4 317.3L850.4 318.3L849.4 318.3L849.4 318.9L848.4 318.9L848.4 321.4L847.4 321.4L847.4 323L846.4 323L846.4 324.6L845.4 324.6L845.4 325.6L844.4 325.6L844.4 326.7L843.4 326.7L843.4 320.4L842.4 320.4L842.4 320.6L841.4 320.6L841.4 321.5L840.4 321.5L840.4 323.1L839.4 323.1L839.4 325.1L838.4 325.1L838.4 325.6L837.4 325.6L837.4 327.3L836.4 327.3L836.4 324.2L835.4 324.2L835.4 325.3L834.4 325.3L834.4 324.2L833.4 324.2L833.4 325.8L832.4 325.8L832.4 326.4L831.4 326.4L831.4 319.5L830.4 319.5L830.4 320.7L829.4 320.7L829.4 321.5L828.4 321.5L828.4 323.1L827.4 323.1L827.4 316.4L826.4 316.4L826.4 316.2L825.4 316.2L825.4 315.7L824.4 315.7L824.4 314.9L823.4 314.9L823.4 316L822.4 316L822.4 316.2L821.4 316.2L821.4 316L820.4 316L820.4 323L819.4 323L819.4 324.7L818.4 324.7L818.4 322L817.4 322L817.4 323.6L816.4 323.6L816.4 324.4L815.4 324.4L815.4 318.3L814.4 318.3L814.4 318.2L813.4 318.2L813.4 317.4L812.4 317.4L812.4 318L811.4 318L811.4 318.9L810.4 318.9L810.4 319.2L809.4 319.2L809.4 320L808.4 320L808.4 320.8L807.4 320.8L807.4 321.7L806.4 321.7L806.4 320.1L805.4 320.1L805.4 322L804.4 322L804.4 322.1L803.4 322.1L803.4 323.6L802.4 323.6L802.4 317.4L801.4 317.4L801.4 317.8L800.4 317.8L800.4 319L799.4 319L799.4 320.6L798.4 320.6L798.4 323L797.4 323L797.4 325.9L796.4 325.9L796.4 327.5L795.4 327.5L795.4 316.1L794.4 316.1L794.4 315.2L793.4 315.2L793.4 315L792.4 315L792.4 314.9L791.4 314.9L791.4 316.5L790.4 316.5L790.4 316.2L789.4 316.2L789.4 315.8L788.4 315.8L788.4 316.4L787.4 316.4L787.4 316L786.4 316L786.4 316L785.4 316L785.4 315.5L784.4 315.5L784.4 316.6L783.4 316.6L783.4 327.6L782.4 327.6L782.4 322.4L781.4 322.4L781.4 323.8L780.4 323.8L780.4 324.1L779.4 324.1L779.4 326.3L778.4 326.3L778.4 322.3L777.4 322.3L777.4 321L776.4 321L776.4 322.9L775.4 322.9L775.4 324.5L774.4 324.5L774.4 325.6L773.4 325.6L773.4 327.3L772.4 327.3L772.4 321.8L771.4 321.8L771.4 323.5L770.4 323.5L770.4 324.3L769.4 324.3L769.4 325.5L768.4 325.5L768.4 326.9L767.4 326.9L767.4 324.3L766.4 324.3L766.4 326L765.4 326L765.4 327.2L764.4 327.2L764.4 320.7L763.4 320.7L763.4 321.1L762.4 321.1L762.4 323.2L761.4 323.2L761.4 322.2L760.4 322.2L760.4 323L759.4 323L759.4 319.8L758.4 319.8L758.4 315.7L757.4 315.7L757.4 314.9L756.4 314.9L756.4 316.7L755.4 316.7L755.4 315.2L754.4 315.2L754.4 315.3L753.4 315.3L753.4 316L752.4 316L752.4 316.5L751.4 316.5L751.4 321.2L750.4 321.2L750.4 321.2L749.4 321.2L749.4 323.1L748.4 323.1L748.4 318.4L747.4 318.4L747.4 319.6L746.4 319.6L746.4 321.2L745.4 321.2L745.4 321.9L744.4 321.9L744.4 322.6L743.4 322.6L743.4 324.8L742.4 324.8L742.4 325.1L741.4 325.1L741.4 326.8L740.4 326.8L740.4 318.8L739.4 318.8L739.4 319.2L738.4 319.2L738.4 321.6L737.4 321.6L737.4 322.9L736.4 322.9L736.4 324.9L735.4 324.9L735.4 325.5L734.4 325.5L734.4 322.2L733.4 322.2L733.4 322.1L732.4 322.1L732.4 321.2L731.4 321.2L731.4 322.5L730.4 322.5L730.4 323.7L729.4 323.7L729.4 324.3L728.4 324.3L728.4 323L727.4 323L727.4 315.9L726.4 315.9L726.4 315.3L725.4 315.3L725.4 316.2L724.4 316.2L724.4 316.2L723.4 316.2L723.4 315.3L722.4 315.3L722.4 315.9L721.4 315.9L721.4 316.1L720.4 316.1L720.4 315.7L719.4 315.7L719.4 315L718.4 315L718.4 316.3L717.4 316.3L717.4 316L716.4 316L716.4 315.9L715.4 315.9L715.4 319.6L714.4 319.6L714.4 321.3L713.4 321.3L713.4 322.2L712.4 322.2L712.4 323.9L711.4 323.9L711.4 324.2L710.4 324.2L710.4 317.4L709.4 317.4L709.4 318.4L708.4 318.4L708.4 319.1L707.4 319.1L707.4 317.7L706.4 317.7L706.4 318.7L705.4 318.7L705.4 319.5L704.4 319.5L704.4 320.5L703.4 320.5L703.4 322.8L702.4 322.8L702.4 325.1L701.4 325.1L701.4 327.4L700.4 327.4L700.4 317.2L699.4 317.2L699.4 318.6L698.4 318.6L698.4 318.7L697.4 318.7L697.4 321L696.4 321L696.4 323.2L695.4 323.2L695.4 324.8L694.4 324.8L694.4 322L693.4 322L693.4 322.6L692.4 322.6L692.4 323.9L691.4 323.9L691.4 324.3L690.4 324.3L690.4 316.3L689.4 316.3L689.4 316.8L688.4 316.8L688.4 316.1L687.4 316.1L687.4 316.5L686.4 316.5L686.4 315.4L685.4 315.4L685.4 314.9L684.4 314.9L684.4 315.8L683.4 315.8L683.4 327.4L682.4 327.4L682.4 317.3L681.4 317.3L681.4 318L680.4 318L680.4 319.2L679.4 319.2L679.4 319.5L678.4 319.5L678.4 318.7L677.4 318.7L677.4 319.6L676.4 319.6L676.4 320.2L675.4 320.2L675.4 321.9L674.4 321.9L674.4 322.9L673.4 322.9L673.4 324.8L672.4 324.8L672.4 321.6L671.4 321.6L671.4 323.3L670.4 323.3L670.4 324.6L669.4 324.6L669.4 320L668.4 320L668.4 320.7L667.4 320.7L667.4 321.3L666.4 321.3L666.4 318.2L665.4 318.2L665.4 318.8L664.4 318.8L664.4 319.8L663.4 319.8L663.4 320.2L662.4 320.2L662.4 316.5L661.4 316.5L661.4 319.1L660.4 319.1L660.4 321.1L659.4 321.1L659.4 315.4L658.4 315.4L658.4 316.6L657.4 316.6L657.4 316.4L656.4 316.4L656.4 314.9L655.4 314.9L655.4 314.9L654.4 314.9L654.4 316.6L653.4 316.6L653.4 314.8L652.4 314.8Z" fill="#628ab8"/><path d="M922.4 252.7 H928.8 L925.6 257.4 Z M922.4 332.3 H928.8 L925.6 327.6 Z" fill="#16202c"/><path d="M925.6 304.3L925.6 282.3L926.6 282.3L926.6 292L927.6 292L927.6 291.4L928.6 291.4L928.6 292.5L929.6 292.5L929.6 291.4L930.6 291.4L930.6 292.5L931.6 292.5L931.6 291.4L932.6 291.4L932.6 285.4L933.6 285.4L933.6 287.3L934.6 287.3L934.6 288.2L935.6 288.2L935.6 285.5L936.6 285.5L936.6 286.6L937.6 286.6L937.6 282.4L938.6 282.4L938.6 283.8L939.6 283.8L939.6 283.5L940.6 283.5L940.6 284.8L941.6 284.8L941.6 285.5L942.6 285.5L942.6 282.8L943.6 282.8L943.6 283.2L944.6 283.2L944.6 285.3L945.6 285.3L945.6 285.6L946.6 285.6L946.6 287L947.6 287L947.6 289.1L948.6 289.1L948.6 290.7L949.6 290.7L949.6 280.8L950.6 280.8L950.6 283.6L951.6 283.6L951.6 286L952.6 286L952.6 288L953.6 288L953.6 288.3L954.6 288.3L954.6 284.4L955.6 284.4L955.6 285L956.6 285L956.6 291.6L957.6 291.6L957.6 292.2L958.6 292.2L958.6 292.1L959.6 292.1L959.6 292.4L960.6 292.4L960.6 292.3L961.6 292.3L961.6 292.7L962.6 292.7L962.6 292.5L963.6 292.5L963.6 284.4L964.6 284.4L964.6 285.6L965.6 285.6L965.6 286.7L966.6 286.7L966.6 288.3L967.6 288.3L967.6 288.7L968.6 288.7L968.6 285.9L969.6 285.9L969.6 287.2L970.6 287.2L970.6 288L971.6 288L971.6 288.4L972.6 288.4L972.6 289.3L973.6 289.3L973.6 285.1L974.6 285.1L974.6 285.7L975.6 285.7L975.6 287.8L976.6 287.8L976.6 288.7L977.6 288.7L977.6 286.4L978.6 286.4L978.6 287.5L979.6 287.5L979.6 289.1L980.6 289.1L980.6 290.6L981.6 290.6L981.6 290.3L982.6 290.3L982.6 291.8L983.6 291.8L983.6 282.4L984.6 282.4L984.6 284.3L985.6 284.3L985.6 286.3L986.6 286.3L986.6 285.8L987.6 285.8L987.6 286.4L988.6 286.4L988.6 292.7L989.6 292.7L989.6 292.2L990.6 292.2L990.6 292.3L991.6 292.3L991.6 292.8L992.6 292.8L992.6 291.4L993.6 291.4L993.6 292L994.6 292L994.6 291.8L995.6 291.8L995.6 293.2L996.6 293.2L996.6 291.8L997.6 291.8L997.6 292.1L998.6 292.1L998.6 292L999.6 292L999.6 292.5L1000.6 292.5L1000.6 284.7L1001.6 284.7L1001.6 282.4L1002.6 282.4L1002.6 284.5L1003.6 284.5L1003.6 287L1004.6 287L1004.6 285.8L1005.6 285.8L1005.6 286.8L1006.6 286.8L1006.6 289.3L1007.6 289.3L1007.6 293.6L1008.6 293.6L1008.6 288.3L1009.6 288.3L1009.6 289L1010.6 289L1010.6 290.1L1011.6 290.1L1011.6 291.4L1012.6 291.4L1012.6 286.2L1013.6 286.2L1013.6 287L1014.6 287L1014.6 288.7L1015.6 288.7L1015.6 290.1L1016.6 290.1L1016.6 288.9L1017.6 288.9L1017.6 289.8L1018.6 289.8L1018.6 287.4L1019.6 287.4L1019.6 288L1020.6 288L1020.6 288.8L1021.6 288.8L1021.6 290L1022.6 290L1022.6 287.3L1023.6 287.3L1023.6 288.8L1024.6 288.8L1024.6 291.9L1025.6 291.9L1025.6 293.2L1026.6 293.2L1026.6 292.7L1027.6 292.7L1027.6 292.5L1028.6 292.5L1028.6 292.1L1029.6 292.1L1029.6 291.9L1030.6 291.9L1030.6 292.7L1031.6 292.7L1031.6 287.1L1032.6 287.1L1032.6 289.1L1033.6 289.1L1033.6 283.1L1034.6 283.1L1034.6 284.5L1035.6 284.5L1035.6 286L1036.6 286L1036.6 286.1L1037.6 286.1L1037.6 285.3L1038.6 285.3L1038.6 286.5L1039.6 286.5L1039.6 288.4L1040.6 288.4L1040.6 281.8L1041.6 281.8L1041.6 283.3L1042.6 283.3L1042.6 285.9L1043.6 285.9L1043.6 288.2L1044.6 288.2L1044.6 281.6L1045.6 281.6L1045.6 282.6L1046.6 282.6L1046.6 285.1L1047.6 285.1L1047.6 286.6L1048.6 286.6L1048.6 288.7L1049.6 288.7L1049.6 290.2L1050.6 290.2L1050.6 284.5L1051.6 284.5L1051.6 286.4L1052.6 286.4L1052.6 287.6L1053.6 287.6L1053.6 284.8L1054.6 284.8L1054.6 285.8L1055.6 285.8L1055.6 286.8L1056.6 286.8L1056.6 291.7L1057.6 291.7L1057.6 292.9L1058.6 292.9L1058.6 291.9L1059.6 291.9L1059.6 292.8L1060.6 292.8L1060.6 291.8L1061.6 291.8L1061.6 293.2L1062.6 293.2L1062.6 293.1L1063.6 293.1L1063.6 291.7L1064.6 291.7L1064.6 291.5L1065.6 291.5L1065.6 293L1066.6 293L1066.6 291.4L1067.6 291.4L1067.6 292.8L1068.6 292.8L1068.6 287L1069.6 287L1069.6 282.7L1070.6 282.7L1070.6 284.1L1071.6 284.1L1071.6 286.1L1072.6 286.1L1072.6 286.9L1073.6 286.9L1073.6 288.7L1074.6 288.7L1074.6 287L1075.6 287L1075.6 288.3L1076.6 288.3L1076.6 281.7L1077.6 281.7L1077.6 282.4L1078.6 282.4L1078.6 284.4L1079.6 284.4L1079.6 283.5L1080.6 283.5L1080.6 285.3L1081.6 285.3L1081.6 286.7L1082.6 286.7L1082.6 287.2L1083.6 287.2L1083.6 289.2L1084.6 289.2L1084.6 290.2L1085.6 290.2L1085.6 283.9L1086.6 283.9L1086.6 284.9L1087.6 284.9L1087.6 285.4L1088.6 285.4L1088.6 287.2L1089.6 287.2L1089.6 288.4L1090.6 288.4L1090.6 290.6L1091.6 290.6L1091.6 287.6L1092.6 287.6L1092.6 288.1L1093.6 288.1L1093.6 291.9L1094.6 291.9L1094.6 293.2L1095.6 293.2L1095.6 292.5L1096.6 292.5L1096.6 293.1L1097.6 293.1L1097.6 291.6L1098.6 291.6L1098.6 292.6L1099.6 292.6L1099.6 293.6L1100.6 293.6L1100.6 284L1101.6 284L1101.6 284.2L1102.6 284.2L1102.6 285.6L1103.6 285.6L1103.6 286.9L1104.6 286.9L1104.6 283.8L1105.6 283.8L1105.6 285.7L1106.6 285.7L1106.6 286.3L1107.6 286.3L1107.6 287.7L1108.6 287.7L1108.6 287.9L1109.6 287.9L1109.6 289L1110.6 289L1110.6 290L1111.6 290L1111.6 290.6L1112.6 290.6L1112.6 291L1113.6 291L1113.6 289.2L1114.6 289.2L1114.6 289.6L1115.6 289.6L1115.6 289.7L1116.6 289.7L1116.6 289.7L1117.6 289.7L1117.6 286.2L1118.6 286.2L1118.6 286.9L1119.6 286.9L1119.6 289.1L1120.6 289.1L1120.6 283.3L1121.6 283.3L1121.6 284.1L1122.6 284.1L1122.6 283.9L1123.6 283.9L1123.6 285L1124.6 285L1124.6 292.6L1125.6 292.6L1125.6 293L1126.6 293L1126.6 292.5L1127.6 292.5L1127.6 292.1L1128.6 292.1L1128.6 292L1129.6 292L1129.6 291.9L1130.6 291.9L1130.6 292.6L1131.6 292.6L1131.6 291.8L1132.6 291.8L1132.6 291.7L1133.6 291.7L1133.6 293.7L1134.6 293.7L1134.6 292.7L1135.6 292.7L1135.6 293L1136.6 293L1136.6 289.5L1137.6 289.5L1137.6 282.3L1138.6 282.3L1138.6 283.1L1139.6 283.1L1139.6 284.3L1140.6 284.3L1140.6 285.7L1141.6 285.7L1141.6 287.3L1142.6 287.3L1142.6 281.2L1143.6 281.2L1143.6 283.6L1144.6 283.6L1144.6 285.3L1145.6 285.3L1145.6 288.3L1146.6 288.3L1146.6 285.5L1147.6 285.5L1147.6 286.8L1148.6 286.8L1148.6 287.8L1149.6 287.8L1149.6 285.5L1150.6 285.5L1150.6 287.3L1151.6 287.3L1151.6 287.6L1152.6 287.6L1152.6 286.2L1153.6 286.2L1153.6 286.9L1154.6 286.9L1154.6 287.6L1155.6 287.6L1155.6 288.8L1156.6 288.8L1156.6 285.9L1157.6 285.9L1157.6 286.9L1158.6 286.9L1158.6 287.7L1159.6 287.7L1159.6 288.6L1160.6 288.6L1160.6 288.9L1161.6 288.9L1161.6 292.3L1162.6 292.3L1162.6 292.3L1163.6 292.3L1163.6 292.7L1164.6 292.7L1164.6 292.3L1165.6 292.3L1165.6 291.6L1166.6 291.6L1166.6 292.8L1167.6 292.8L1167.6 292.1L1168.6 292.1L1168.6 290.6L1169.6 290.6L1169.6 285L1170.6 285L1170.6 282.1L1171.6 282.1L1171.6 283.6L1172.6 283.6L1172.6 285.8L1173.6 285.8L1173.6 283.3L1174.6 283.3L1174.6 284.2L1175.6 284.2L1175.6 285.8L1176.6 285.8L1176.6 286.1L1177.6 286.1L1177.6 287.3L1178.6 287.3L1178.6 288.2L1179.6 288.2L1179.6 288.7L1180.6 288.7L1180.6 289.9L1181.6 289.9L1181.6 290.3L1182.6 290.3L1182.6 290.7L1183.6 290.7L1183.6 291.1L1184.6 291.1L1184.6 285.8L1185.6 285.8L1185.6 286.3L1186.6 286.3L1186.6 287.4L1187.6 287.4L1187.6 285.4L1188.6 285.4L1188.6 286.1L1189.6 286.1L1189.6 287.1L1190.6 287.1L1190.6 288.2L1191.6 288.2L1191.6 285.8L1192.6 285.8L1192.6 287.2L1193.6 287.2L1193.6 291.8L1194.6 291.8L1194.6 291.9L1195.6 291.9L1195.6 292.9L1196.6 292.9L1196.6 292.7L1197.6 292.7L1197.6 292.8L1198.6 292.8L1198.6 291.4L1199.6 291.4L1199.6 304.3L1199.6 314.8L1198.6 314.8L1198.6 316.8L1197.6 316.8L1197.6 315.8L1196.6 315.8L1196.6 316.3L1195.6 316.3L1195.6 315.1L1194.6 315.1L1194.6 316L1193.6 316L1193.6 323.1L1192.6 323.1L1192.6 323.5L1191.6 323.5L1191.6 324.2L1190.6 324.2L1190.6 325.4L1189.6 325.4L1189.6 321.5L1188.6 321.5L1188.6 322.2L1187.6 322.2L1187.6 324.2L1186.6 324.2L1186.6 325.4L1185.6 325.4L1185.6 326.8L1184.6 326.8L1184.6 319.1L1183.6 319.1L1183.6 319.8L1182.6 319.8L1182.6 322.1L1181.6 322.1L1181.6 322.4L1180.6 322.4L1180.6 325.2L1179.6 325.2L1179.6 325L1178.6 325L1178.6 327.3L1177.6 327.3L1177.6 321.2L1176.6 321.2L1176.6 321.9L1175.6 321.9L1175.6 323.3L1174.6 323.3L1174.6 319.5L1173.6 319.5L1173.6 323.1L1172.6 323.1L1172.6 325.4L1171.6 325.4L1171.6 326.8L1170.6 326.8L1170.6 320.7L1169.6 320.7L1169.6 322.6L1168.6 322.6L1168.6 314.7L1167.6 314.7L1167.6 315.1L1166.6 315.1L1166.6 316.7L1165.6 316.7L1165.6 316.2L1164.6 316.2L1164.6 316.2L1163.6 316.2L1163.6 315.7L1162.6 315.7L1162.6 315.4L1161.6 315.4L1161.6 317.8L1160.6 317.8L1160.6 319.3L1159.6 319.3L1159.6 319.1L1158.6 319.1L1158.6 320.3L1157.6 320.3L1157.6 322.4L1156.6 322.4L1156.6 324L1155.6 324L1155.6 324.5L1154.6 324.5L1154.6 321.1L1153.6 321.1L1153.6 322.1L1152.6 322.1L1152.6 323.2L1151.6 323.2L1151.6 325.3L1150.6 325.3L1150.6 320.7L1149.6 320.7L1149.6 321.3L1148.6 321.3L1148.6 320.2L1147.6 320.2L1147.6 321.5L1146.6 321.5L1146.6 322.3L1145.6 322.3L1145.6 322.3L1144.6 322.3L1144.6 320.8L1143.6 320.8L1143.6 321.7L1142.6 321.7L1142.6 318.2L1141.6 318.2L1141.6 318.9L1140.6 318.9L1140.6 318.9L1139.6 318.9L1139.6 314.8L1138.6 314.8L1138.6 323.3L1137.6 323.3L1137.6 325L1136.6 325L1136.6 315.7L1135.6 315.7L1135.6 316L1134.6 316L1134.6 316.1L1133.6 316.1L1133.6 315.8L1132.6 315.8L1132.6 315.3L1131.6 315.3L1131.6 315.6L1130.6 315.6L1130.6 315.8L1129.6 315.8L1129.6 316.1L1128.6 316.1L1128.6 315.8L1127.6 315.8L1127.6 316.3L1126.6 316.3L1126.6 316.4L1125.6 316.4L1125.6 316.3L1124.6 316.3L1124.6 317.3L1123.6 317.3L1123.6 318.3L1122.6 318.3L1122.6 318.9L1121.6 318.9L1121.6 321.4L1120.6 321.4L1120.6 323L1119.6 323L1119.6 324.6L1118.6 324.6L1118.6 325.6L1117.6 325.6L1117.6 326.7L1116.6 326.7L1116.6 320.4L1115.6 320.4L1115.6 320.6L1114.6 320.6L1114.6 321.5L1113.6 321.5L1113.6 323.1L1112.6 323.1L1112.6 325.1L1111.6 325.1L1111.6 325.6L1110.6 325.6L1110.6 327.3L1109.6 327.3L1109.6 324.2L1108.6 324.2L1108.6 325.3L1107.6 325.3L1107.6 324.2L1106.6 324.2L1106.6 325.8L1105.6 325.8L1105.6 326.4L1104.6 326.4L1104.6 319.5L1103.6 319.5L1103.6 320.7L1102.6 320.7L1102.6 321.5L1101.6 321.5L1101.6 323.1L1100.6 323.1L1100.6 316.4L1099.6 316.4L1099.6 316.2L1098.6 316.2L1098.6 315.7L1097.6 315.7L1097.6 314.9L1096.6 314.9L1096.6 316L1095.6 316L1095.6 316.2L1094.6 316.2L1094.6 316L1093.6 316L1093.6 323L1092.6 323L1092.6 324.7L1091.6 324.7L1091.6 322L1090.6 322L1090.6 323.6L1089.6 323.6L1089.6 324.4L1088.6 324.4L1088.6 318.3L1087.6 318.3L1087.6 318.2L1086.6 318.2L1086.6 317.4L1085.6 317.4L1085.6 318L1084.6 318L1084.6 318.9L1083.6 318.9L1083.6 319.2L1082.6 319.2L1082.6 320L1081.6 320L1081.6 320.8L1080.6 320.8L1080.6 321.7L1079.6 321.7L1079.6 320.1L1078.6 320.1L1078.6 322L1077.6 322L1077.6 322.1L1076.6 322.1L1076.6 323.6L1075.6 323.6L1075.6 317.4L1074.6 317.4L1074.6 317.8L1073.6 317.8L1073.6 319L1072.6 319L1072.6 320.6L1071.6 320.6L1071.6 323L1070.6 323L1070.6 325.9L1069.6 325.9L1069.6 327.5L1068.6 327.5L1068.6 316.1L1067.6 316.1L1067.6 315.2L1066.6 315.2L1066.6 315L1065.6 315L1065.6 314.9L1064.6 314.9L1064.6 316.5L1063.6 316.5L1063.6 316.2L1062.6 316.2L1062.6 315.8L1061.6 315.8L1061.6 316.4L1060.6 316.4L1060.6 316L1059.6 316L1059.6 316L1058.6 316L1058.6 315.5L1057.6 315.5L1057.6 316.6L1056.6 316.6L1056.6 327.6L1055.6 327.6L1055.6 322.4L1054.6 322.4L1054.6 323.8L1053.6 323.8L1053.6 324.1L1052.6 324.1L1052.6 326.3L1051.6 326.3L1051.6 322.3L1050.6 322.3L1050.6 321L1049.6 321L1049.6 322.9L1048.6 322.9L1048.6 324.5L1047.6 324.5L1047.6 325.6L1046.6 325.6L1046.6 327.3L1045.6 327.3L1045.6 321.8L1044.6 321.8L1044.6 323.5L1043.6 323.5L1043.6 324.3L1042.6 324.3L1042.6 325.5L1041.6 325.5L1041.6 326.9L1040.6 326.9L1040.6 324.3L1039.6 324.3L1039.6 326L1038.6 326L1038.6 327.2L1037.6 327.2L1037.6 320.7L1036.6 320.7L1036.6 321.1L1035.6 321.1L1035.6 323.2L1034.6 323.2L1034.6 322.2L1033.6 322.2L1033.6 323L1032.6 323L1032.6 319.8L1031.6 319.8L1031.6 315.7L1030.6 315.7L1030.6 314.9L1029.6 314.9L1029.6 316.7L1028.6 316.7L1028.6 315.2L1027.6 315.2L1027.6 315.3L1026.6 315.3L1026.6 316L1025.6 316L1025.6 316.5L1024.6 316.5L1024.6 321.2L1023.6 321.2L1023.6 321.2L1022.6 321.2L1022.6 323.1L1021.6 323.1L1021.6 318.4L1020.6 318.4L1020.6 319.6L1019.6 319.6L1019.6 321.2L1018.6 321.2L1018.6 321.9L1017.6 321.9L1017.6 322.6L1016.6 322.6L1016.6 324.8L1015.6 324.8L1015.6 325.1L1014.6 325.1L1014.6 326.8L1013.6 326.8L1013.6 318.8L1012.6 318.8L1012.6 319.2L1011.6 319.2L1011.6 321.6L1010.6 321.6L1010.6 322.9L1009.6 322.9L1009.6 324.9L1008.6 324.9L1008.6 325.5L1007.6 325.5L1007.6 322.2L1006.6 322.2L1006.6 322.1L1005.6 322.1L1005.6 321.2L1004.6 321.2L1004.6 322.5L1003.6 322.5L1003.6 323.7L1002.6 323.7L1002.6 324.3L1001.6 324.3L1001.6 323L1000.6 323L1000.6 315.9L999.6 315.9L999.6 315.3L998.6 315.3L998.6 316.2L997.6 316.2L997.6 316.2L996.6 316.2L996.6 315.3L995.6 315.3L995.6 315.9L994.6 315.9L994.6 316.1L993.6 316.1L993.6 315.7L992.6 315.7L992.6 315L991.6 315L991.6 316.3L990.6 316.3L990.6 316L989.6 316L989.6 315.9L988.6 315.9L988.6 319.6L987.6 319.6L987.6 321.3L986.6 321.3L986.6 322.2L985.6 322.2L985.6 323.9L984.6 323.9L984.6 324.2L983.6 324.2L983.6 317.4L982.6 317.4L982.6 318.4L981.6 318.4L981.6 319.1L980.6 319.1L980.6 317.7L979.6 317.7L979.6 318.7L978.6 318.7L978.6 319.5L977.6 319.5L977.6 320.5L976.6 320.5L976.6 322.8L975.6 322.8L975.6 325.1L974.6 325.1L974.6 327.4L973.6 327.4L973.6 317.2L972.6 317.2L972.6 318.6L971.6 318.6L971.6 318.7L970.6 318.7L970.6 321L969.6 321L969.6 323.2L968.6 323.2L968.6 324.8L967.6 324.8L967.6 322L966.6 322L966.6 322.6L965.6 322.6L965.6 323.9L964.6 323.9L964.6 324.3L963.6 324.3L963.6 316.3L962.6 316.3L962.6 316.8L961.6 316.8L961.6 316.1L960.6 316.1L960.6 316.5L959.6 316.5L959.6 315.4L958.6 315.4L958.6 314.9L957.6 314.9L957.6 315.8L956.6 315.8L956.6 327.4L955.6 327.4L955.6 317.3L954.6 317.3L954.6 318L953.6 318L953.6 319.2L952.6 319.2L952.6 319.5L951.6 319.5L951.6 318.7L950.6 318.7L950.6 319.6L949.6 319.6L949.6 320.2L948.6 320.2L948.6 321.9L947.6 321.9L947.6 322.9L946.6 322.9L946.6 324.8L945.6 324.8L945.6 321.6L944.6 321.6L944.6 323.3L943.6 323.3L943.6 324.6L942.6 324.6L942.6 320L941.6 320L941.6 320.7L940.6 320.7L940.6 321.3L939.6 321.3L939.6 318.2L938.6 318.2L938.6 318.8L937.6 318.8L937.6 319.8L936.6 319.8L936.6 320.2L935.6 320.2L935.6 316.5L934.6 316.5L934.6 319.1L933.6 319.1L933.6 321.1L932.6 321.1L932.6 315.4L931.6 315.4L931.6 316.6L930.6 316.6L930.6 316.4L929.6 316.4L929.6 314.9L928.6 314.9L928.6 314.9L927.6 314.9L927.6 316.6L926.6 316.6L926.6 314.8L925.6 314.8Z" fill="#628ab8"/><path d="M1195.6 252.7 H1202.0 L1198.8 257.4 Z M1195.6 332.3 H1202.0 L1198.8 327.6 Z" fill="#16202c"/><path d="M1198.8 304.3L1198.8 282.3L1199.8 282.3L1199.8 292L1200.8 292L1200.8 291.4L1201.8 291.4L1201.8 292.5L1202.8 292.5L1202.8 291.4L1203.8 291.4L1203.8 292.5L1204.8 292.5L1204.8 291.4L1205.8 291.4L1205.8 285.4L1206.8 285.4L1206.8 287.3L1207.8 287.3L1207.8 288.2L1208.8 288.2L1208.8 285.5L1209.8 285.5L1209.8 286.6L1210.8 286.6L1210.8 282.4L1211.8 282.4L1211.8 283.8L1212.8 283.8L1212.8 283.5L1213.8 283.5L1213.8 284.8L1214.8 284.8L1214.8 285.5L1215.8 285.5L1215.8 282.8L1216.8 282.8L1216.8 283.2L1217.8 283.2L1217.8 285.3L1218.8 285.3L1218.8 285.6L1219.8 285.6L1219.8 287L1220.8 287L1220.8 289.1L1221.8 289.1L1221.8 290.7L1222.8 290.7L1222.8 280.8L1223.8 280.8L1223.8 283.6L1224.8 283.6L1224.8 286L1225.8 286L1225.8 288L1226.8 288L1226.8 288.3L1227.8 288.3L1227.8 284.4L1228.8 284.4L1228.8 285L1229.8 285L1229.8 291.6L1230.8 291.6L1230.8 292.2L1231.8 292.2L1231.8 292.1L1232.8 292.1L1232.8 292.4L1233.8 292.4L1233.8 292.3L1234.8 292.3L1234.8 292.7L1235.8 292.7L1235.8 292.5L1236.8 292.5L1236.8 284.4L1237.8 284.4L1237.8 285.6L1238.8 285.6L1238.8 286.7L1239.8 286.7L1239.8 288.3L1240.8 288.3L1240.8 288.7L1241.8 288.7L1241.8 285.9L1242.8 285.9L1242.8 287.2L1243.8 287.2L1243.8 288L1244.8 288L1244.8 288.4L1245.8 288.4L1245.8 289.3L1246.8 289.3L1246.8 285.1L1247.8 285.1L1247.8 285.7L1248.8 285.7L1248.8 287.8L1249.8 287.8L1249.8 288.7L1250.8 288.7L1250.8 286.4L1251.8 286.4L1251.8 287.5L1252.8 287.5L1252.8 289.1L1253.8 289.1L1253.8 290.6L1254.8 290.6L1254.8 290.3L1255.8 290.3L1255.8 291.8L1256.8 291.8L1256.8 282.4L1257.8 282.4L1257.8 284.3L1258.8 284.3L1258.8 286.3L1259.8 286.3L1259.8 285.8L1260.8 285.8L1260.8 286.4L1261.8 286.4L1261.8 292.7L1262.8 292.7L1262.8 292.2L1263.8 292.2L1263.8 292.3L1264.8 292.3L1264.8 292.8L1265.8 292.8L1265.8 291.4L1266.8 291.4L1266.8 292L1267.8 292L1267.8 291.8L1268.8 291.8L1268.8 293.2L1269.8 293.2L1269.8 291.8L1270.8 291.8L1270.8 292.1L1271.8 292.1L1271.8 292L1272.8 292L1272.8 292.5L1273.8 292.5L1273.8 284.7L1274.8 284.7L1274.8 282.4L1275.8 282.4L1275.8 284.5L1276.8 284.5L1276.8 287L1277.8 287L1277.8 285.8L1278.8 285.8L1278.8 286.8L1279.8 286.8L1279.8 289.3L1280.8 289.3L1280.8 293.6L1281.8 293.6L1281.8 288.3L1282.8 288.3L1282.8 289L1283.8 289L1283.8 290.1L1284.8 290.1L1284.8 291.4L1285.8 291.4L1285.8 286.2L1286.8 286.2L1286.8 287L1287.8 287L1287.8 288.7L1288.8 288.7L1288.8 290.1L1289.8 290.1L1289.8 288.9L1290.8 288.9L1290.8 289.8L1291.8 289.8L1291.8 287.4L1292.8 287.4L1292.8 288L1293.8 288L1293.8 288.8L1294.8 288.8L1294.8 290L1295.8 290L1295.8 287.3L1296.8 287.3L1296.8 288.8L1297.8 288.8L1297.8 291.9L1298.8 291.9L1298.8 293.2L1299.8 293.2L1299.8 292.7L1300.8 292.7L1300.8 292.5L1301.8 292.5L1301.8 292.1L1302.8 292.1L1302.8 291.9L1303.8 291.9L1303.8 292.7L1304.8 292.7L1304.8 287.1L1305.8 287.1L1305.8 289.1L1306.8 289.1L1306.8 283.1L1307.8 283.1L1307.8 284.5L1308.8 284.5L1308.8 286L1309.8 286L1309.8 286.1L1310.8 286.1L1310.8 285.3L1311.8 285.3L1311.8 286.5L1312.8 286.5L1312.8 288.4L1313.8 288.4L1313.8 281.8L1314.8 281.8L1314.8 283.3L1315.8 283.3L1315.8 285.9L1316.8 285.9L1316.8 288.2L1317.8 288.2L1317.8 281.6L1318.8 281.6L1318.8 282.6L1319.8 282.6L1319.8 285.1L1320.8 285.1L1320.8 286.6L1321.8 286.6L1321.8 288.7L1322.8 288.7L1322.8 290.2L1323.8 290.2L1323.8 284.5L1324.8 284.5L1324.8 286.4L1325.8 286.4L1325.8 287.6L1326.8 287.6L1326.8 284.8L1327.8 284.8L1327.8 285.8L1328.8 285.8L1328.8 286.8L1329.8 286.8L1329.8 291.7L1330.8 291.7L1330.8 292.9L1331.8 292.9L1331.8 291.9L1332.8 291.9L1332.8 292.8L1333.8 292.8L1333.8 291.8L1334.8 291.8L1334.8 293.2L1335.8 293.2L1335.8 293.1L1336.8 293.1L1336.8 291.7L1337.8 291.7L1337.8 291.5L1338.8 291.5L1338.8 293L1339.8 293L1339.8 291.4L1340.8 291.4L1340.8 292.8L1341.8 292.8L1341.8 287L1342.8 287L1342.8 282.7L1343.8 282.7L1343.8 284.1L1344.8 284.1L1344.8 286.1L1345.8 286.1L1345.8 286.9L1346.8 286.9L1346.8 288.7L1347.8 288.7L1347.8 287L1348.8 287L1348.8 288.3L1349.8 288.3L1349.8 281.7L1350.8 281.7L1350.8 282.4L1351.8 282.4L1351.8 284.4L1352.8 284.4L1352.8 283.5L1353.8 283.5L1353.8 285.3L1354.8 285.3L1354.8 286.7L1355.8 286.7L1355.8 287.2L1356.8 287.2L1356.8 289.2L1357.8 289.2L1357.8 290.2L1358.8 290.2L1358.8 283.9L1359.8 283.9L1359.8 284.9L1360.8 284.9L1360.8 285.4L1361.8 285.4L1361.8 287.2L1362.8 287.2L1362.8 288.4L1363.8 288.4L1363.8 290.6L1364.8 290.6L1364.8 287.6L1365.8 287.6L1365.8 288.1L1366.8 288.1L1366.8 291.9L1367.8 291.9L1367.8 293.2L1368.8 293.2L1368.8 292.5L1369.8 292.5L1369.8 293.1L1370.8 293.1L1370.8 291.6L1371.8 291.6L1371.8 292.6L1372.8 292.6L1372.8 293.6L1373.8 293.6L1373.8 284L1374.8 284L1374.8 284.2L1375.8 284.2L1375.8 285.6L1376.8 285.6L1376.8 286.9L1377.8 286.9L1377.8 283.8L1378.8 283.8L1378.8 285.7L1379.8 285.7L1379.8 286.3L1380.8 286.3L1380.8 287.7L1381.8 287.7L1381.8 287.9L1382.8 287.9L1382.8 289L1383.8 289L1383.8 290L1384.8 290L1384.8 290.6L1385.8 290.6L1385.8 291L1386.8 291L1386.8 289.2L1387.8 289.2L1387.8 289.6L1388.8 289.6L1388.8 289.7L1389.8 289.7L1389.8 289.7L1390.8 289.7L1390.8 286.2L1391.8 286.2L1391.8 286.9L1392.8 286.9L1392.8 289.1L1393.8 289.1L1393.8 283.3L1394.8 283.3L1394.8 284.1L1395.8 284.1L1395.8 283.9L1396.8 283.9L1396.8 285L1397.8 285L1397.8 304.3L1397.8 317.3L1396.8 317.3L1396.8 318.3L1395.8 318.3L1395.8 318.9L1394.8 318.9L1394.8 321.4L1393.8 321.4L1393.8 323L1392.8 323L1392.8 324.6L1391.8 324.6L1391.8 325.6L1390.8 325.6L1390.8 326.7L1389.8 326.7L1389.8 320.4L1388.8 320.4L1388.8 320.6L1387.8 320.6L1387.8 321.5L1386.8 321.5L1386.8 323.1L1385.8 323.1L1385.8 325.1L1384.8 325.1L1384.8 325.6L1383.8 325.6L1383.8 327.3L1382.8 327.3L1382.8 324.2L1381.8 324.2L1381.8 325.3L1380.8 325.3L1380.8 324.2L1379.8 324.2L1379.8 325.8L1378.8 325.8L1378.8 326.4L1377.8 326.4L1377.8 319.5L1376.8 319.5L1376.8 320.7L1375.8 320.7L1375.8 321.5L1374.8 321.5L1374.8 323.1L1373.8 323.1L1373.8 316.4L1372.8 316.4L1372.8 316.2L1371.8 316.2L1371.8 315.7L1370.8 315.7L1370.8 314.9L1369.8 314.9L1369.8 316L1368.8 316L1368.8 316.2L1367.8 316.2L1367.8 316L1366.8 316L1366.8 323L1365.8 323L1365.8 324.7L1364.8 324.7L1364.8 322L1363.8 322L1363.8 323.6L1362.8 323.6L1362.8 324.4L1361.8 324.4L1361.8 318.3L1360.8 318.3L1360.8 318.2L1359.8 318.2L1359.8 317.4L1358.8 317.4L1358.8 318L1357.8 318L1357.8 318.9L1356.8 318.9L1356.8 319.2L1355.8 319.2L1355.8 320L1354.8 320L1354.8 320.8L1353.8 320.8L1353.8 321.7L1352.8 321.7L1352.8 320.1L1351.8 320.1L1351.8 322L1350.8 322L1350.8 322.1L1349.8 322.1L1349.8 323.6L1348.8 323.6L1348.8 317.4L1347.8 317.4L1347.8 317.8L1346.8 317.8L1346.8 319L1345.8 319L1345.8 320.6L1344.8 320.6L1344.8 323L1343.8 323L1343.8 325.9L1342.8 325.9L1342.8 327.5L1341.8 327.5L1341.8 316.1L1340.8 316.1L1340.8 315.2L1339.8 315.2L1339.8 315L1338.8 315L1338.8 314.9L1337.8 314.9L1337.8 316.5L1336.8 316.5L1336.8 316.2L1335.8 316.2L1335.8 315.8L1334.8 315.8L1334.8 316.4L1333.8 316.4L1333.8 316L1332.8 316L1332.8 316L1331.8 316L1331.8 315.5L1330.8 315.5L1330.8 316.6L1329.8 316.6L1329.8 327.6L1328.8 327.6L1328.8 322.4L1327.8 322.4L1327.8 323.8L1326.8 323.8L1326.8 324.1L1325.8 324.1L1325.8 326.3L1324.8 326.3L1324.8 322.3L1323.8 322.3L1323.8 321L1322.8 321L1322.8 322.9L1321.8 322.9L1321.8 324.5L1320.8 324.5L1320.8 325.6L1319.8 325.6L1319.8 327.3L1318.8 327.3L1318.8 321.8L1317.8 321.8L1317.8 323.5L1316.8 323.5L1316.8 324.3L1315.8 324.3L1315.8 325.5L1314.8 325.5L1314.8 326.9L1313.8 326.9L1313.8 324.3L1312.8 324.3L1312.8 326L1311.8 326L1311.8 327.2L1310.8 327.2L1310.8 320.7L1309.8 320.7L1309.8 321.1L1308.8 321.1L1308.8 323.2L1307.8 323.2L1307.8 322.2L1306.8 322.2L1306.8 323L1305.8 323L1305.8 319.8L1304.8 319.8L1304.8 315.7L1303.8 315.7L1303.8 314.9L1302.8 314.9L1302.8 316.7L1301.8 316.7L1301.8 315.2L1300.8 315.2L1300.8 315.3L1299.8 315.3L1299.8 316L1298.8 316L1298.8 316.5L1297.8 316.5L1297.8 321.2L1296.8 321.2L1296.8 321.2L1295.8 321.2L1295.8 323.1L1294.8 323.1L1294.8 318.4L1293.8 318.4L1293.8 319.6L1292.8 319.6L1292.8 321.2L1291.8 321.2L1291.8 321.9L1290.8 321.9L1290.8 322.6L1289.8 322.6L1289.8 324.8L1288.8 324.8L1288.8 325.1L1287.8 325.1L1287.8 326.8L1286.8 326.8L1286.8 318.8L1285.8 318.8L1285.8 319.2L1284.8 319.2L1284.8 321.6L1283.8 321.6L1283.8 322.9L1282.8 322.9L1282.8 324.9L1281.8 324.9L1281.8 325.5L1280.8 325.5L1280.8 322.2L1279.8 322.2L1279.8 322.1L1278.8 322.1L1278.8 321.2L1277.8 321.2L1277.8 322.5L1276.8 322.5L1276.8 323.7L1275.8 323.7L1275.8 324.3L1274.8 324.3L1274.8 323L1273.8 323L1273.8 315.9L1272.8 315.9L1272.8 315.3L1271.8 315.3L1271.8 316.2L1270.8 316.2L1270.8 316.2L1269.8 316.2L1269.8 315.3L1268.8 315.3L1268.8 315.9L1267.8 315.9L1267.8 316.1L1266.8 316.1L1266.8 315.7L1265.8 315.7L1265.8 315L1264.8 315L1264.8 316.3L1263.8 316.3L1263.8 316L1262.8 316L1262.8 315.9L1261.8 315.9L1261.8 319.6L1260.8 319.6L1260.8 321.3L1259.8 321.3L1259.8 322.2L1258.8 322.2L1258.8 323.9L1257.8 323.9L1257.8 324.2L1256.8 324.2L1256.8 317.4L1255.8 317.4L1255.8 318.4L1254.8 318.4L1254.8 319.1L1253.8 319.1L1253.8 317.7L1252.8 317.7L1252.8 318.7L1251.8 318.7L1251.8 319.5L1250.8 319.5L1250.8 320.5L1249.8 320.5L1249.8 322.8L1248.8 322.8L1248.8 325.1L1247.8 325.1L1247.8 327.4L1246.8 327.4L1246.8 317.2L1245.8 317.2L1245.8 318.6L1244.8 318.6L1244.8 318.7L1243.8 318.7L1243.8 321L1242.8 321L1242.8 323.2L1241.8 323.2L1241.8 324.8L1240.8 324.8L1240.8 322L1239.8 322L1239.8 322.6L1238.8 322.6L1238.8 323.9L1237.8 323.9L1237.8 324.3L1236.8 324.3L1236.8 316.3L1235.8 316.3L1235.8 316.8L1234.8 316.8L1234.8 316.1L1233.8 316.1L1233.8 316.5L1232.8 316.5L1232.8 315.4L1231.8 315.4L1231.8 314.9L1230.8 314.9L1230.8 315.8L1229.8 315.8L1229.8 327.4L1228.8 327.4L1228.8 317.3L1227.8 317.3L1227.8 318L1226.8 318L1226.8 319.2L1225.8 319.2L1225.8 319.5L1224.8 319.5L1224.8 318.7L1223.8 318.7L1223.8 319.6L1222.8 319.6L1222.8 320.2L1221.8 320.2L1221.8 321.9L1220.8 321.9L1220.8 322.9L1219.8 322.9L1219.8 324.8L1218.8 324.8L1218.8 321.6L1217.8 321.6L1217.8 323.3L1216.8 323.3L1216.8 324.6L1215.8 324.6L1215.8 320L1214.8 320L1214.8 320.7L1213.8 320.7L1213.8 321.3L1212.8 321.3L1212.8 318.2L1211.8 318.2L1211.8 318.8L1210.8 318.8L1210.8 319.8L1209.8 319.8L1209.8 320.2L1208.8 320.2L1208.8 316.5L1207.8 316.5L1207.8 319.1L1206.8 319.1L1206.8 321.1L1205.8 321.1L1205.8 315.4L1204.8 315.4L1204.8 316.6L1203.8 316.6L1203.8 316.4L1202.8 316.4L1202.8 314.9L1201.8 314.9L1201.8 314.9L1200.8 314.9L1200.8 316.6L1199.8 316.6L1199.8 314.8L1198.8 314.8Z" fill="#628ab8"/><circle cx="547.4" cy="267.4" r="5.5" fill="none" stroke="#eaf2fb" stroke-width="1.6"/><circle cx="554.9" cy="267.4" r="5.5" fill="none" stroke="#eaf2fb" stroke-width="1.6"/><path d="M652.3 470.8L652.3 470.2L652.8 470.2L652.8 470.2L653.3 470.2L653.3 467L653.8 467L653.8 455.1L654.3 455.1L654.3 455.2L654.8 455.2L654.8 457.4L655.3 457.4L655.3 457.7L655.8 457.7L655.8 457.6L656.3 457.6L656.3 457.9L656.8 457.9L656.8 457.6L657.3 457.6L657.3 458.3L657.8 458.3L657.8 458.2L658.3 458.2L658.3 457.7L658.8 457.7L658.8 457.9L659.3 457.9L659.3 458.4L659.8 458.4L659.8 459.4L660.3 459.4L660.3 459.4L660.8 459.4L660.8 458.7L661.3 458.7L661.3 459.6L661.8 459.6L661.8 459.2L662.3 459.2L662.3 459.5L662.8 459.5L662.8 458.7L663.3 458.7L663.3 458.6L663.8 458.6L663.8 459.4L664.3 459.4L664.3 459.9L664.8 459.9L664.8 460L665.3 460L665.3 460.2L665.8 460.2L665.8 459.4L666.3 459.4L666.3 458.4L666.8 458.4L666.8 456.5L667.3 456.5L667.3 449L667.8 449L667.8 448.4L668.3 448.4L668.3 448.9L668.8 448.9L668.8 450.5L669.3 450.5L669.3 449.7L669.8 449.7L669.8 452.4L670.3 452.4L670.3 454L670.8 454L670.8 455.4L671.3 455.4L671.3 455.7L671.8 455.7L671.8 458L672.3 458L672.3 459.2L672.8 459.2L672.8 461L673.3 461L673.3 461.8L673.8 461.8L673.8 463.9L674.3 463.9L674.3 465.2L674.8 465.2L674.8 466.3L675.3 466.3L675.3 467.8L675.8 467.8L675.8 469.1L676.3 469.1L676.3 470.2L676.8 470.2L676.8 470.2L677.3 470.2L677.3 470.2L677.8 470.2L677.8 470.2L678.3 470.2L678.3 470.2L678.8 470.2L678.8 470.2L679.3 470.2L679.3 470.2L679.8 470.2L679.8 470.2L680.3 470.2L680.3 470.2L680.8 470.2L680.8 470.2L681.3 470.2L681.3 470.2L681.8 470.2L681.8 470.2L682.3 470.2L682.3 470.2L682.8 470.2L682.8 465.2L683.3 465.2L683.3 462.1L683.8 462.1L683.8 461.8L684.3 461.8L684.3 456.2L684.8 456.2L684.8 451.3L685.3 451.3L685.3 453.2L685.8 453.2L685.8 455.8L686.3 455.8L686.3 459.7L686.8 459.7L686.8 460.8L687.3 460.8L687.3 463L687.8 463L687.8 464.4L688.3 464.4L688.3 466.5L688.8 466.5L688.8 468.1L689.3 468.1L689.3 470L689.8 470L689.8 470.2L690.3 470.2L690.3 470.2L690.8 470.2L690.8 470.2L691.3 470.2L691.3 470.2L691.8 470.2L691.8 470.2L692.3 470.2L692.3 470.2L692.8 470.2L692.8 470.2L693.3 470.2L693.3 470.2L693.8 470.2L693.8 470.2L694.3 470.2L694.3 470.2L694.8 470.2L694.8 470.2L695.3 470.2L695.3 470.2L695.8 470.2L695.8 469.8L696.3 469.8L696.3 463.4L696.8 463.4L696.8 462.3L697.3 462.3L697.3 462.1L697.8 462.1L697.8 453.4L698.3 453.4L698.3 451.3L698.8 451.3L698.8 453.8L699.3 453.8L699.3 458.5L699.8 458.5L699.8 459.6L700.3 459.6L700.3 459.8L700.8 459.8L700.8 460.5L701.3 460.5L701.3 460.5L701.8 460.5L701.8 459.4L702.3 459.4L702.3 459.6L702.8 459.6L702.8 459.8L703.3 459.8L703.3 470.2L703.8 470.2L703.8 470.2L704.3 470.2L704.3 470.2L704.8 470.2L704.8 470.2L705.3 470.2L705.3 470.2L705.8 470.2L705.8 470.2L706.3 470.2L706.3 470.2L706.8 470.2L706.8 470.2L707.3 470.2L707.3 470.2L707.8 470.2L707.8 470.2L708.3 470.2L708.3 470.2L708.8 470.2L708.8 470.2L709.3 470.2L709.3 470.2L709.8 470.2L709.8 470.2L710.3 470.2L710.3 463.2L710.8 463.2L710.8 459.9L711.3 459.9L711.3 460L711.8 460L711.8 460.1L712.3 460.1L712.3 470.2L712.8 470.2L712.8 470.2L713.3 470.2L713.3 470.2L713.8 470.2L713.8 470.2L714.3 470.2L714.3 470.2L714.8 470.2L714.8 470.2L715.3 470.2L715.3 470.2L715.8 470.2L715.8 470.2L716.3 470.2L716.3 470.2L716.8 470.2L716.8 470.2L717.3 470.2L717.3 470.2L717.8 470.2L717.8 470.2L718.3 470.2L718.3 470.2L718.8 470.2L718.8 456.2L719.3 456.2L719.3 453.3L719.8 453.3L719.8 453.7L720.3 453.7L720.3 455.9L720.8 455.9L720.8 457.3L721.3 457.3L721.3 459.1L721.8 459.1L721.8 460.4L722.3 460.4L722.3 461.6L722.8 461.6L722.8 462.7L723.3 462.7L723.3 464.1L723.8 464.1L723.8 465.5L724.3 465.5L724.3 466.7L724.8 466.7L724.8 467.9L725.3 467.9L725.3 469.3L725.8 469.3L725.8 470.2L726.3 470.2L726.3 470.2L726.8 470.2L726.8 470.2L727.3 470.2L727.3 470.2L727.8 470.2L727.8 470.2L728.3 470.2L728.3 470.2L728.8 470.2L728.8 470.2L729.3 470.2L729.3 470.2L729.8 470.2L729.8 470.2L730.3 470.2L730.3 470.2L730.8 470.2L730.8 470.2L731.3 470.2L731.3 461.9L731.8 461.9L731.8 461.6L732.3 461.6L732.3 461L732.8 461L732.8 455.9L733.3 455.9L733.3 454.6L733.8 454.6L733.8 456.2L734.3 456.2L734.3 459.3L734.8 459.3L734.8 461.9L735.3 461.9L735.3 463.6L735.8 463.6L735.8 465.7L736.3 465.7L736.3 467.5L736.8 467.5L736.8 469.6L737.3 469.6L737.3 470.2L737.8 470.2L737.8 470.2L738.3 470.2L738.3 470.2L738.8 470.2L738.8 470.2L739.3 470.2L739.3 470.2L739.8 470.2L739.8 470.2L740.3 470.2L740.3 470.2L740.8 470.2L740.8 470.2L741.3 470.2L741.3 470.2L741.8 470.2L741.8 470.2L742.3 470.2L742.3 470.2L742.8 470.2L742.8 470.2L743.3 470.2L743.3 470.2L743.8 470.2L743.8 470.2L744.3 470.2L744.3 458.8L744.8 458.8L744.8 452.7L745.3 452.7L745.3 451.7L745.8 451.7L745.8 453.5L746.3 453.5L746.3 456.1L746.8 456.1L746.8 456.1L747.3 456.1L747.3 456.6L747.8 456.6L747.8 456.9L748.3 456.9L748.3 457.4L748.8 457.4L748.8 457.3L749.3 457.3L749.3 457.4L749.8 457.4L749.8 457.3L750.3 457.3L750.3 458.3L750.8 458.3L750.8 458.7L751.3 458.7L751.3 458.5L751.8 458.5L751.8 459.9L752.3 459.9L752.3 460.1L752.8 460.1L752.8 460.2L753.3 460.2L753.3 459.9L753.8 459.9L753.8 460.8L754.3 460.8L754.3 461L754.8 461L754.8 461.5L755.3 461.5L755.3 460.6L755.8 460.6L755.8 459.8L756.3 459.8L756.3 460.1L756.8 460.1L756.8 460.1L757.3 460.1L757.3 459L757.8 459L757.8 459.1L758.3 459.1L758.3 457.7L758.8 457.7L758.8 458L759.3 458L759.3 458L759.8 458L759.8 457.8L760.3 457.8L760.3 453.3L760.8 453.3L760.8 452.5L761.3 452.5L761.3 452.9L761.8 452.9L761.8 460.6L762.3 460.6L762.3 463.5L762.8 463.5L762.8 466.7L763.3 466.7L763.3 469.9L763.8 469.9L763.8 470.2L764.3 470.2L764.3 470.2L764.8 470.2L764.8 470.2L765.3 470.2L765.3 470.2L765.8 470.2L765.8 456.4L766.3 456.4L766.3 456.9L766.8 456.9L766.8 459.1L767.3 459.1L767.3 469.2L767.8 469.2L767.8 470.2L768.3 470.2L768.3 470.2L768.8 470.2L768.8 470.2L769.3 470.2L769.3 470.2L769.8 470.2L769.8 462L770.3 462L770.3 458.8L770.8 458.8L770.8 450.2L771.3 450.2L771.3 450.4L771.8 450.4L771.8 462.5L772.3 462.5L772.3 462.7L772.8 462.7L772.8 463.1L773.3 463.1L773.3 460.8L773.8 460.8L773.8 455.4L774.3 455.4L774.3 452.3L774.8 452.3L774.8 451.9L775.3 451.9L775.3 455.4L775.8 455.4L775.8 457.3L776.3 457.3L776.3 459L776.8 459L776.8 459.4L777.3 459.4L777.3 461.1L777.8 461.1L777.8 462.1L778.3 462.1L778.3 463.6L778.8 463.6L778.8 464.8L779.3 464.8L779.3 465.9L779.8 465.9L779.8 467.4L780.3 467.4L780.3 468.5L780.8 468.5L780.8 469.8L781.3 469.8L781.3 470.2L781.8 470.2L781.8 470.2L782.3 470.2L782.3 470.2L782.8 470.2L782.8 470.2L783.3 470.2L783.3 470.2L783.8 470.2L783.8 470.2L784.3 470.2L784.3 470.2L784.8 470.2L784.8 470.2L785.3 470.2L785.3 470.2L785.8 470.2L785.8 470.8L786.3 470.8L786.3 470.8L786.8 470.8L786.8 470.8L787.3 470.8L787.3 470.8L787.8 470.8L787.8 470.2L788.3 470.2L788.3 470.2L788.8 470.2L788.8 470.8L788.8 471.4L788.3 471.4L788.3 471.4L787.8 471.4L787.8 470.8L787.3 470.8L787.3 470.8L786.8 470.8L786.8 470.8L786.3 470.8L786.3 470.8L785.8 470.8L785.8 471.4L785.3 471.4L785.3 471.4L784.8 471.4L784.8 471.4L784.3 471.4L784.3 471.4L783.8 471.4L783.8 471.4L783.3 471.4L783.3 471.4L782.8 471.4L782.8 471.4L782.3 471.4L782.3 471.4L781.8 471.4L781.8 471.4L781.3 471.4L781.3 471.8L780.8 471.8L780.8 472.9L780.3 472.9L780.3 474L779.8 474L779.8 475L779.3 475L779.3 476.2L778.8 476.2L778.8 477.4L778.3 477.4L778.3 478.3L777.8 478.3L777.8 479.1L777.3 479.1L777.3 481L776.8 481L776.8 481.7L776.3 481.7L776.3 482.3L775.8 482.3L775.8 485.2L775.3 485.2L775.3 487.5L774.8 487.5L774.8 487.2L774.3 487.2L774.3 485L773.8 485L773.8 480.8L773.3 480.8L773.3 478.6L772.8 478.6L772.8 479L772.3 479L772.3 479.4L771.8 479.4L771.8 489.8L771.3 489.8L771.3 488.4L770.8 488.4L770.8 482L770.3 482L770.3 479.4L769.8 479.4L769.8 471.4L769.3 471.4L769.3 471.4L768.8 471.4L768.8 471.4L768.3 471.4L768.3 471.4L767.8 471.4L767.8 472.3L767.3 472.3L767.3 480.1L766.8 480.1L766.8 483.5L766.3 483.5L766.3 483.1L765.8 483.1L765.8 471.4L765.3 471.4L765.3 471.4L764.8 471.4L764.8 471.4L764.3 471.4L764.3 471.4L763.8 471.4L763.8 471.7L763.3 471.7L763.3 474.4L762.8 474.4L762.8 477.3L762.3 477.3L762.3 480.9L761.8 480.9L761.8 487.7L761.3 487.7L761.3 489.8L760.8 489.8L760.8 486.9L760.3 486.9L760.3 483.6L759.8 483.6L759.8 483.2L759.3 483.2L759.3 482L758.8 482L758.8 481.8L758.3 481.8L758.3 481.8L757.8 481.8L757.8 481.4L757.3 481.4L757.3 480.5L756.8 480.5L756.8 481L756.3 481L756.3 480.3L755.8 480.3L755.8 480.3L755.3 480.3L755.3 479.6L754.8 479.6L754.8 479.4L754.3 479.4L754.3 480.1L753.8 480.1L753.8 480.4L753.3 480.4L753.3 480.5L752.8 480.5L752.8 480.8L752.3 480.8L752.3 481.2L751.8 481.2L751.8 481.2L751.3 481.2L751.3 481.2L750.8 481.2L750.8 481.7L750.3 481.7L750.3 481.7L749.8 481.7L749.8 482.3L749.3 482.3L749.3 483L748.8 483L748.8 483.1L748.3 483.1L748.3 483.1L747.8 483.1L747.8 483.6L747.3 483.6L747.3 483.5L746.8 483.5L746.8 484.4L746.3 484.4L746.3 485.4L745.8 485.4L745.8 485.6L745.3 485.6L745.3 485.9L744.8 485.9L744.8 479.8L744.3 479.8L744.3 471.4L743.8 471.4L743.8 471.4L743.3 471.4L743.3 471.4L742.8 471.4L742.8 471.4L742.3 471.4L742.3 471.4L741.8 471.4L741.8 471.4L741.3 471.4L741.3 471.4L740.8 471.4L740.8 471.4L740.3 471.4L740.3 471.4L739.8 471.4L739.8 471.4L739.3 471.4L739.3 471.4L738.8 471.4L738.8 471.4L738.3 471.4L738.3 471.4L737.8 471.4L737.8 471.4L737.3 471.4L737.3 472L736.8 472L736.8 473.8L736.3 473.8L736.3 475.6L735.8 475.6L735.8 477.5L735.3 477.5L735.3 479.5L734.8 479.5L734.8 481.3L734.3 481.3L734.3 485.1L733.8 485.1L733.8 486.7L733.3 486.7L733.3 484.8L732.8 484.8L732.8 480.2L732.3 480.2L732.3 480.2L731.8 480.2L731.8 479.7L731.3 479.7L731.3 471.4L730.8 471.4L730.8 471.4L730.3 471.4L730.3 471.4L729.8 471.4L729.8 471.4L729.3 471.4L729.3 471.4L728.8 471.4L728.8 471.4L728.3 471.4L728.3 471.4L727.8 471.4L727.8 471.4L727.3 471.4L727.3 471.4L726.8 471.4L726.8 471.4L726.3 471.4L726.3 471.4L725.8 471.4L725.8 472.2L725.3 472.2L725.3 473.4L724.8 473.4L724.8 474.4L724.3 474.4L724.3 475.7L723.8 475.7L723.8 476.6L723.3 476.6L723.3 477.9L722.8 477.9L722.8 478.9L722.3 478.9L722.3 479.8L721.8 479.8L721.8 480.7L721.3 480.7L721.3 482.5L720.8 482.5L720.8 483.6L720.3 483.6L720.3 486.4L719.8 486.4L719.8 485.6L719.3 485.6L719.3 483.3L718.8 483.3L718.8 471.4L718.3 471.4L718.3 471.4L717.8 471.4L717.8 471.4L717.3 471.4L717.3 471.4L716.8 471.4L716.8 471.4L716.3 471.4L716.3 471.4L715.8 471.4L715.8 471.4L715.3 471.4L715.3 471.4L714.8 471.4L714.8 471.4L714.3 471.4L714.3 471.4L713.8 471.4L713.8 471.4L713.3 471.4L713.3 471.4L712.8 471.4L712.8 471.4L712.3 471.4L712.3 479.5L711.8 479.5L711.8 479.6L711.3 479.6L711.3 479.2L710.8 479.2L710.8 477.4L710.3 477.4L710.3 471.4L709.8 471.4L709.8 471.4L709.3 471.4L709.3 471.4L708.8 471.4L708.8 471.4L708.3 471.4L708.3 471.4L707.8 471.4L707.8 471.4L707.3 471.4L707.3 471.4L706.8 471.4L706.8 471.4L706.3 471.4L706.3 471.4L705.8 471.4L705.8 471.4L705.3 471.4L705.3 471.4L704.8 471.4L704.8 471.4L704.3 471.4L704.3 471.4L703.8 471.4L703.8 471.4L703.3 471.4L703.3 479L702.8 479L702.8 479.5L702.3 479.5L702.3 480.1L701.8 480.1L701.8 479.6L701.3 479.6L701.3 479.8L700.8 479.8L700.8 480L700.3 480L700.3 480.1L699.8 480.1L699.8 480.8L699.3 480.8L699.3 486.5L698.8 486.5L698.8 487.2L698.3 487.2L698.3 485.9L697.8 485.9L697.8 478.9L697.3 478.9L697.3 479L696.8 479L696.8 478.7L696.3 478.7L696.3 471.8L695.8 471.8L695.8 471.4L695.3 471.4L695.3 471.4L694.8 471.4L694.8 471.4L694.3 471.4L694.3 471.4L693.8 471.4L693.8 471.4L693.3 471.4L693.3 471.4L692.8 471.4L692.8 471.4L692.3 471.4L692.3 471.4L691.8 471.4L691.8 471.4L691.3 471.4L691.3 471.4L690.8 471.4L690.8 471.4L690.3 471.4L690.3 471.4L689.8 471.4L689.8 471.6L689.3 471.6L689.3 473.3L688.8 473.3L688.8 475L688.3 475L688.3 476.2L687.8 476.2L687.8 477.8L687.3 477.8L687.3 479.7L686.8 479.7L686.8 481.5L686.3 481.5L686.3 485.4L685.8 485.4L685.8 491.3L685.3 491.3L685.3 489.6L684.8 489.6L684.8 486.8L684.3 486.8L684.3 479.7L683.8 479.7L683.8 479.5L683.3 479.5L683.3 476.2L682.8 476.2L682.8 471.4L682.3 471.4L682.3 471.4L681.8 471.4L681.8 471.4L681.3 471.4L681.3 471.4L680.8 471.4L680.8 471.4L680.3 471.4L680.3 471.4L679.8 471.4L679.8 471.4L679.3 471.4L679.3 471.4L678.8 471.4L678.8 471.4L678.3 471.4L678.3 471.4L677.8 471.4L677.8 471.4L677.3 471.4L677.3 471.4L676.8 471.4L676.8 471.4L676.3 471.4L676.3 472.3L675.8 472.3L675.8 473.6L675.3 473.6L675.3 474.9L674.8 474.9L674.8 475.9L674.3 475.9L674.3 477.5L673.8 477.5L673.8 478.8L673.3 478.8L673.3 480L672.8 480L672.8 481.3L672.3 481.3L672.3 482.1L671.8 482.1L671.8 484.1L671.3 484.1L671.3 485L670.8 485L670.8 486.3L670.3 486.3L670.3 485.9L669.8 485.9L669.8 490.7L669.3 490.7L669.3 493.7L668.8 493.7L668.8 493.8L668.3 493.8L668.3 491.9L667.8 491.9L667.8 492L667.3 492L667.3 483.1L666.8 483.1L666.8 482.8L666.3 482.8L666.3 482.4L665.8 482.4L665.8 482.5L665.3 482.5L665.3 482.1L664.8 482.1L664.8 481L664.3 481L664.3 480.7L663.8 480.7L663.8 480.3L663.3 480.3L663.3 480.9L662.8 480.9L662.8 481.1L662.3 481.1L662.3 481L661.8 481L661.8 481.5L661.3 481.5L661.3 481.6L660.8 481.6L660.8 481.1L660.3 481.1L660.3 482L659.8 482L659.8 482.8L659.3 482.8L659.3 485.4L658.8 485.4L658.8 485.5L658.3 485.5L658.3 485.6L657.8 485.6L657.8 482.4L657.3 482.4L657.3 481.8L656.8 481.8L656.8 481.5L656.3 481.5L656.3 481.4L655.8 481.4L655.8 482.1L655.3 482.1L655.3 482L654.8 482L654.8 482.6L654.3 482.6L654.3 482.7L653.8 482.7L653.8 473.7L653.3 473.7L653.3 471.4L652.8 471.4L652.8 471.4L652.3 471.4Z" fill="#d6e9fc"/><path d="M788.9 470.8L788.9 470.2L789.4 470.2L789.4 470.2L789.9 470.2L789.9 467L790.4 467L790.4 455.1L790.9 455.1L790.9 455.2L791.4 455.2L791.4 457.4L791.9 457.4L791.9 457.7L792.4 457.7L792.4 457.6L792.9 457.6L792.9 457.9L793.4 457.9L793.4 457.6L793.9 457.6L793.9 458.3L794.4 458.3L794.4 458.2L794.9 458.2L794.9 457.7L795.4 457.7L795.4 457.9L795.9 457.9L795.9 458.4L796.4 458.4L796.4 459.4L796.9 459.4L796.9 459.4L797.4 459.4L797.4 458.7L797.9 458.7L797.9 459.6L798.4 459.6L798.4 459.2L798.9 459.2L798.9 459.5L799.4 459.5L799.4 458.7L799.9 458.7L799.9 458.6L800.4 458.6L800.4 459.4L800.9 459.4L800.9 459.9L801.4 459.9L801.4 460L801.9 460L801.9 460.2L802.4 460.2L802.4 459.4L802.9 459.4L802.9 458.4L803.4 458.4L803.4 456.5L803.9 456.5L803.9 449L804.4 449L804.4 448.4L804.9 448.4L804.9 448.9L805.4 448.9L805.4 450.5L805.9 450.5L805.9 449.7L806.4 449.7L806.4 452.4L806.9 452.4L806.9 454L807.4 454L807.4 455.4L807.9 455.4L807.9 455.7L808.4 455.7L808.4 458L808.9 458L808.9 459.2L809.4 459.2L809.4 461L809.9 461L809.9 461.8L810.4 461.8L810.4 463.9L810.9 463.9L810.9 465.2L811.4 465.2L811.4 466.3L811.9 466.3L811.9 467.8L812.4 467.8L812.4 469.1L812.9 469.1L812.9 470.2L813.4 470.2L813.4 470.2L813.9 470.2L813.9 470.2L814.4 470.2L814.4 470.2L814.9 470.2L814.9 470.2L815.4 470.2L815.4 470.2L815.9 470.2L815.9 470.2L816.4 470.2L816.4 470.2L816.9 470.2L816.9 470.2L817.4 470.2L817.4 470.2L817.9 470.2L817.9 470.2L818.4 470.2L818.4 470.2L818.9 470.2L818.9 470.2L819.4 470.2L819.4 465.2L819.9 465.2L819.9 462.1L820.4 462.1L820.4 461.8L820.9 461.8L820.9 456.2L821.4 456.2L821.4 451.3L821.9 451.3L821.9 453.2L822.4 453.2L822.4 455.8L822.9 455.8L822.9 459.7L823.4 459.7L823.4 460.8L823.9 460.8L823.9 463L824.4 463L824.4 464.4L824.9 464.4L824.9 466.5L825.4 466.5L825.4 468.1L825.9 468.1L825.9 470L826.4 470L826.4 470.2L826.9 470.2L826.9 470.2L827.4 470.2L827.4 470.2L827.9 470.2L827.9 470.2L828.4 470.2L828.4 470.2L828.9 470.2L828.9 470.2L829.4 470.2L829.4 470.2L829.9 470.2L829.9 470.2L830.4 470.2L830.4 470.2L830.9 470.2L830.9 470.2L831.4 470.2L831.4 470.2L831.9 470.2L831.9 470.2L832.4 470.2L832.4 469.8L832.9 469.8L832.9 463.4L833.4 463.4L833.4 462.3L833.9 462.3L833.9 462.1L834.4 462.1L834.4 453.4L834.9 453.4L834.9 451.3L835.4 451.3L835.4 453.8L835.9 453.8L835.9 458.5L836.4 458.5L836.4 459.6L836.9 459.6L836.9 459.8L837.4 459.8L837.4 460.5L837.9 460.5L837.9 460.5L838.4 460.5L838.4 459.4L838.9 459.4L838.9 459.6L839.4 459.6L839.4 459.8L839.9 459.8L839.9 470.2L840.4 470.2L840.4 470.2L840.9 470.2L840.9 470.2L841.4 470.2L841.4 470.2L841.9 470.2L841.9 470.2L842.4 470.2L842.4 470.2L842.9 470.2L842.9 470.2L843.4 470.2L843.4 470.2L843.9 470.2L843.9 470.2L844.4 470.2L844.4 470.2L844.9 470.2L844.9 470.2L845.4 470.2L845.4 470.2L845.9 470.2L845.9 470.2L846.4 470.2L846.4 470.2L846.9 470.2L846.9 463.2L847.4 463.2L847.4 459.9L847.9 459.9L847.9 460L848.4 460L848.4 460.1L848.9 460.1L848.9 470.2L849.4 470.2L849.4 470.2L849.9 470.2L849.9 470.2L850.4 470.2L850.4 470.2L850.9 470.2L850.9 470.2L851.4 470.2L851.4 470.2L851.9 470.2L851.9 470.2L852.4 470.2L852.4 470.2L852.9 470.2L852.9 470.2L853.4 470.2L853.4 470.2L853.9 470.2L853.9 470.2L854.4 470.2L854.4 470.2L854.9 470.2L854.9 470.2L855.4 470.2L855.4 456.2L855.9 456.2L855.9 453.3L856.4 453.3L856.4 453.7L856.9 453.7L856.9 455.9L857.4 455.9L857.4 457.3L857.9 457.3L857.9 459.1L858.4 459.1L858.4 460.4L858.9 460.4L858.9 461.6L859.4 461.6L859.4 462.7L859.9 462.7L859.9 464.1L860.4 464.1L860.4 465.5L860.9 465.5L860.9 466.7L861.4 466.7L861.4 467.9L861.9 467.9L861.9 469.3L862.4 469.3L862.4 470.2L862.9 470.2L862.9 470.2L863.4 470.2L863.4 470.2L863.9 470.2L863.9 470.2L864.4 470.2L864.4 470.2L864.9 470.2L864.9 470.2L865.4 470.2L865.4 470.2L865.9 470.2L865.9 470.2L866.4 470.2L866.4 470.2L866.9 470.2L866.9 470.2L867.4 470.2L867.4 470.2L867.9 470.2L867.9 461.9L868.4 461.9L868.4 461.6L868.9 461.6L868.9 461L869.4 461L869.4 455.9L869.9 455.9L869.9 454.6L870.4 454.6L870.4 456.2L870.9 456.2L870.9 459.3L871.4 459.3L871.4 461.9L871.9 461.9L871.9 463.6L872.4 463.6L872.4 465.7L872.9 465.7L872.9 467.5L873.4 467.5L873.4 469.6L873.9 469.6L873.9 470.2L874.4 470.2L874.4 470.2L874.9 470.2L874.9 470.2L875.4 470.2L875.4 470.2L875.9 470.2L875.9 470.2L876.4 470.2L876.4 470.2L876.9 470.2L876.9 470.2L877.4 470.2L877.4 470.2L877.9 470.2L877.9 470.2L878.4 470.2L878.4 470.2L878.9 470.2L878.9 470.2L879.4 470.2L879.4 470.2L879.9 470.2L879.9 470.2L880.4 470.2L880.4 470.2L880.9 470.2L880.9 458.8L881.4 458.8L881.4 452.7L881.9 452.7L881.9 451.7L882.4 451.7L882.4 453.5L882.9 453.5L882.9 456.1L883.4 456.1L883.4 456.1L883.9 456.1L883.9 456.6L884.4 456.6L884.4 456.9L884.9 456.9L884.9 457.4L885.4 457.4L885.4 457.3L885.9 457.3L885.9 457.4L886.4 457.4L886.4 457.3L886.9 457.3L886.9 458.3L887.4 458.3L887.4 458.7L887.9 458.7L887.9 458.5L888.4 458.5L888.4 459.9L888.9 459.9L888.9 460.1L889.4 460.1L889.4 460.2L889.9 460.2L889.9 459.9L890.4 459.9L890.4 460.8L890.9 460.8L890.9 461L891.4 461L891.4 461.5L891.9 461.5L891.9 460.6L892.4 460.6L892.4 459.8L892.9 459.8L892.9 460.1L893.4 460.1L893.4 460.1L893.9 460.1L893.9 459L894.4 459L894.4 459.1L894.9 459.1L894.9 457.7L895.4 457.7L895.4 458L895.9 458L895.9 458L896.4 458L896.4 457.8L896.9 457.8L896.9 453.3L897.4 453.3L897.4 452.5L897.9 452.5L897.9 452.9L898.4 452.9L898.4 460.6L898.9 460.6L898.9 463.5L899.4 463.5L899.4 466.7L899.9 466.7L899.9 469.9L900.4 469.9L900.4 470.2L900.9 470.2L900.9 470.2L901.4 470.2L901.4 470.2L901.9 470.2L901.9 470.2L902.4 470.2L902.4 456.4L902.9 456.4L902.9 456.9L903.4 456.9L903.4 459.1L903.9 459.1L903.9 469.2L904.4 469.2L904.4 470.2L904.9 470.2L904.9 470.2L905.4 470.2L905.4 470.2L905.9 470.2L905.9 470.8L905.9 471.4L905.4 471.4L905.4 471.4L904.9 471.4L904.9 471.4L904.4 471.4L904.4 472.3L903.9 472.3L903.9 480.1L903.4 480.1L903.4 483.5L902.9 483.5L902.9 483.1L902.4 483.1L902.4 471.4L901.9 471.4L901.9 471.4L901.4 471.4L901.4 471.4L900.9 471.4L900.9 471.4L900.4 471.4L900.4 471.7L899.9 471.7L899.9 474.4L899.4 474.4L899.4 477.3L898.9 477.3L898.9 480.9L898.4 480.9L898.4 487.7L897.9 487.7L897.9 489.8L897.4 489.8L897.4 486.9L896.9 486.9L896.9 483.6L896.4 483.6L896.4 483.2L895.9 483.2L895.9 482L895.4 482L895.4 481.8L894.9 481.8L894.9 481.8L894.4 481.8L894.4 481.4L893.9 481.4L893.9 480.5L893.4 480.5L893.4 481L892.9 481L892.9 480.3L892.4 480.3L892.4 480.3L891.9 480.3L891.9 479.6L891.4 479.6L891.4 479.4L890.9 479.4L890.9 480.1L890.4 480.1L890.4 480.4L889.9 480.4L889.9 480.5L889.4 480.5L889.4 480.8L888.9 480.8L888.9 481.2L888.4 481.2L888.4 481.2L887.9 481.2L887.9 481.2L887.4 481.2L887.4 481.7L886.9 481.7L886.9 481.7L886.4 481.7L886.4 482.3L885.9 482.3L885.9 483L885.4 483L885.4 483.1L884.9 483.1L884.9 483.1L884.4 483.1L884.4 483.6L883.9 483.6L883.9 483.5L883.4 483.5L883.4 484.4L882.9 484.4L882.9 485.4L882.4 485.4L882.4 485.6L881.9 485.6L881.9 485.9L881.4 485.9L881.4 479.8L880.9 479.8L880.9 471.4L880.4 471.4L880.4 471.4L879.9 471.4L879.9 471.4L879.4 471.4L879.4 471.4L878.9 471.4L878.9 471.4L878.4 471.4L878.4 471.4L877.9 471.4L877.9 471.4L877.4 471.4L877.4 471.4L876.9 471.4L876.9 471.4L876.4 471.4L876.4 471.4L875.9 471.4L875.9 471.4L875.4 471.4L875.4 471.4L874.9 471.4L874.9 471.4L874.4 471.4L874.4 471.4L873.9 471.4L873.9 472L873.4 472L873.4 473.8L872.9 473.8L872.9 475.6L872.4 475.6L872.4 477.5L871.9 477.5L871.9 479.5L871.4 479.5L871.4 481.3L870.9 481.3L870.9 485.1L870.4 485.1L870.4 486.7L869.9 486.7L869.9 484.8L869.4 484.8L869.4 480.2L868.9 480.2L868.9 480.2L868.4 480.2L868.4 479.7L867.9 479.7L867.9 471.4L867.4 471.4L867.4 471.4L866.9 471.4L866.9 471.4L866.4 471.4L866.4 471.4L865.9 471.4L865.9 471.4L865.4 471.4L865.4 471.4L864.9 471.4L864.9 471.4L864.4 471.4L864.4 471.4L863.9 471.4L863.9 471.4L863.4 471.4L863.4 471.4L862.9 471.4L862.9 471.4L862.4 471.4L862.4 472.2L861.9 472.2L861.9 473.4L861.4 473.4L861.4 474.4L860.9 474.4L860.9 475.7L860.4 475.7L860.4 476.6L859.9 476.6L859.9 477.9L859.4 477.9L859.4 478.9L858.9 478.9L858.9 479.8L858.4 479.8L858.4 480.7L857.9 480.7L857.9 482.5L857.4 482.5L857.4 483.6L856.9 483.6L856.9 486.4L856.4 486.4L856.4 485.6L855.9 485.6L855.9 483.3L855.4 483.3L855.4 471.4L854.9 471.4L854.9 471.4L854.4 471.4L854.4 471.4L853.9 471.4L853.9 471.4L853.4 471.4L853.4 471.4L852.9 471.4L852.9 471.4L852.4 471.4L852.4 471.4L851.9 471.4L851.9 471.4L851.4 471.4L851.4 471.4L850.9 471.4L850.9 471.4L850.4 471.4L850.4 471.4L849.9 471.4L849.9 471.4L849.4 471.4L849.4 471.4L848.9 471.4L848.9 479.5L848.4 479.5L848.4 479.6L847.9 479.6L847.9 479.2L847.4 479.2L847.4 477.4L846.9 477.4L846.9 471.4L846.4 471.4L846.4 471.4L845.9 471.4L845.9 471.4L845.4 471.4L845.4 471.4L844.9 471.4L844.9 471.4L844.4 471.4L844.4 471.4L843.9 471.4L843.9 471.4L843.4 471.4L843.4 471.4L842.9 471.4L842.9 471.4L842.4 471.4L842.4 471.4L841.9 471.4L841.9 471.4L841.4 471.4L841.4 471.4L840.9 471.4L840.9 471.4L840.4 471.4L840.4 471.4L839.9 471.4L839.9 479L839.4 479L839.4 479.5L838.9 479.5L838.9 480.1L838.4 480.1L838.4 479.6L837.9 479.6L837.9 479.8L837.4 479.8L837.4 480L836.9 480L836.9 480.1L836.4 480.1L836.4 480.8L835.9 480.8L835.9 486.5L835.4 486.5L835.4 487.2L834.9 487.2L834.9 485.9L834.4 485.9L834.4 478.9L833.9 478.9L833.9 479L833.4 479L833.4 478.7L832.9 478.7L832.9 471.8L832.4 471.8L832.4 471.4L831.9 471.4L831.9 471.4L831.4 471.4L831.4 471.4L830.9 471.4L830.9 471.4L830.4 471.4L830.4 471.4L829.9 471.4L829.9 471.4L829.4 471.4L829.4 471.4L828.9 471.4L828.9 471.4L828.4 471.4L828.4 471.4L827.9 471.4L827.9 471.4L827.4 471.4L827.4 471.4L826.9 471.4L826.9 471.4L826.4 471.4L826.4 471.6L825.9 471.6L825.9 473.3L825.4 473.3L825.4 475L824.9 475L824.9 476.2L824.4 476.2L824.4 477.8L823.9 477.8L823.9 479.7L823.4 479.7L823.4 481.5L822.9 481.5L822.9 485.4L822.4 485.4L822.4 491.3L821.9 491.3L821.9 489.6L821.4 489.6L821.4 486.8L820.9 486.8L820.9 479.7L820.4 479.7L820.4 479.5L819.9 479.5L819.9 476.2L819.4 476.2L819.4 471.4L818.9 471.4L818.9 471.4L818.4 471.4L818.4 471.4L817.9 471.4L817.9 471.4L817.4 471.4L817.4 471.4L816.9 471.4L816.9 471.4L816.4 471.4L816.4 471.4L815.9 471.4L815.9 471.4L815.4 471.4L815.4 471.4L814.9 471.4L814.9 471.4L814.4 471.4L814.4 471.4L813.9 471.4L813.9 471.4L813.4 471.4L813.4 471.4L812.9 471.4L812.9 472.3L812.4 472.3L812.4 473.6L811.9 473.6L811.9 474.9L811.4 474.9L811.4 475.9L810.9 475.9L810.9 477.5L810.4 477.5L810.4 478.8L809.9 478.8L809.9 480L809.4 480L809.4 481.3L808.9 481.3L808.9 482.1L808.4 482.1L808.4 484.1L807.9 484.1L807.9 485L807.4 485L807.4 486.3L806.9 486.3L806.9 485.9L806.4 485.9L806.4 490.7L805.9 490.7L805.9 493.7L805.4 493.7L805.4 493.8L804.9 493.8L804.9 491.9L804.4 491.9L804.4 492L803.9 492L803.9 483.1L803.4 483.1L803.4 482.8L802.9 482.8L802.9 482.4L802.4 482.4L802.4 482.5L801.9 482.5L801.9 482.1L801.4 482.1L801.4 481L800.9 481L800.9 480.7L800.4 480.7L800.4 480.3L799.9 480.3L799.9 480.9L799.4 480.9L799.4 481.1L798.9 481.1L798.9 481L798.4 481L798.4 481.5L797.9 481.5L797.9 481.6L797.4 481.6L797.4 481.1L796.9 481.1L796.9 482L796.4 482L796.4 482.8L795.9 482.8L795.9 485.4L795.4 485.4L795.4 485.5L794.9 485.5L794.9 485.6L794.4 485.6L794.4 482.4L793.9 482.4L793.9 481.8L793.4 481.8L793.4 481.5L792.9 481.5L792.9 481.4L792.4 481.4L792.4 482.1L791.9 482.1L791.9 482L791.4 482L791.4 482.6L790.9 482.6L790.9 482.7L790.4 482.7L790.4 473.7L789.9 473.7L789.9 471.4L789.4 471.4L789.4 471.4L788.9 471.4Z" fill="#82a6ce"/><path d="M785.7 418.1 H792.1 L788.9 422.8 Z M785.7 497.3 H792.1 L788.9 492.6 Z" fill="#16222f"/><path d="M785.5 419.4 L788.9 423.6 L792.3 419.4 M785.5 496.0 L788.9 491.8 L792.3 496.0" fill="none" stroke="#cde4fb" stroke-width="1.5"/><circle cx="817.7" cy="432.4" r="5.5" fill="none" stroke="#2b4a6d" stroke-width="1.6"/><circle cx="825.2" cy="432.4" r="5.5" fill="none" stroke="#2b4a6d" stroke-width="1.6"/><path d="M942.4 470.8L942.4 470.2L942.9 470.2L942.9 470.2L943.4 470.2L943.4 467L943.9 467L943.9 455.1L944.4 455.1L944.4 455.2L944.9 455.2L944.9 457.4L945.4 457.4L945.4 457.7L945.9 457.7L945.9 457.6L946.4 457.6L946.4 457.9L946.9 457.9L946.9 457.6L947.4 457.6L947.4 458.3L947.9 458.3L947.9 458.2L948.4 458.2L948.4 457.7L948.9 457.7L948.9 457.9L949.4 457.9L949.4 458.4L949.9 458.4L949.9 459.4L950.4 459.4L950.4 459.4L950.9 459.4L950.9 458.7L951.4 458.7L951.4 459.6L951.9 459.6L951.9 459.2L952.4 459.2L952.4 459.5L952.9 459.5L952.9 458.7L953.4 458.7L953.4 458.6L953.9 458.6L953.9 459.4L954.4 459.4L954.4 459.9L954.9 459.9L954.9 460L955.4 460L955.4 460.2L955.9 460.2L955.9 459.4L956.4 459.4L956.4 458.4L956.9 458.4L956.9 456.5L957.4 456.5L957.4 449L957.9 449L957.9 448.4L958.4 448.4L958.4 448.9L958.9 448.9L958.9 450.5L959.4 450.5L959.4 449.7L959.9 449.7L959.9 452.4L960.4 452.4L960.4 454L960.9 454L960.9 455.4L961.4 455.4L961.4 455.7L961.9 455.7L961.9 458L962.4 458L962.4 459.2L962.9 459.2L962.9 461L963.4 461L963.4 461.8L963.9 461.8L963.9 463.9L964.4 463.9L964.4 465.2L964.9 465.2L964.9 466.3L965.4 466.3L965.4 467.8L965.9 467.8L965.9 469.1L966.4 469.1L966.4 470.2L966.9 470.2L966.9 470.2L967.4 470.2L967.4 470.2L967.9 470.2L967.9 470.2L968.4 470.2L968.4 470.2L968.9 470.2L968.9 470.2L969.4 470.2L969.4 470.2L969.9 470.2L969.9 470.2L970.4 470.2L970.4 470.2L970.9 470.2L970.9 470.2L971.4 470.2L971.4 470.2L971.9 470.2L971.9 470.2L972.4 470.2L972.4 470.2L972.9 470.2L972.9 465.2L973.4 465.2L973.4 462.1L973.9 462.1L973.9 461.8L974.4 461.8L974.4 456.2L974.9 456.2L974.9 451.3L975.4 451.3L975.4 453.2L975.9 453.2L975.9 455.8L976.4 455.8L976.4 459.7L976.9 459.7L976.9 460.8L977.4 460.8L977.4 463L977.9 463L977.9 464.4L978.4 464.4L978.4 466.5L978.9 466.5L978.9 468.1L979.4 468.1L979.4 470L979.9 470L979.9 470.2L980.4 470.2L980.4 470.2L980.9 470.2L980.9 470.2L981.4 470.2L981.4 470.2L981.9 470.2L981.9 470.2L982.4 470.2L982.4 470.2L982.9 470.2L982.9 470.2L983.4 470.2L983.4 470.2L983.9 470.2L983.9 470.2L984.4 470.2L984.4 470.2L984.9 470.2L984.9 470.2L985.4 470.2L985.4 470.2L985.9 470.2L985.9 469.8L986.4 469.8L986.4 463.4L986.9 463.4L986.9 462.3L987.4 462.3L987.4 462.1L987.9 462.1L987.9 453.4L988.4 453.4L988.4 451.3L988.9 451.3L988.9 453.8L989.4 453.8L989.4 458.5L989.9 458.5L989.9 459.6L990.4 459.6L990.4 459.8L990.9 459.8L990.9 460.5L991.4 460.5L991.4 460.5L991.9 460.5L991.9 459.4L992.4 459.4L992.4 459.6L992.9 459.6L992.9 459.8L993.4 459.8L993.4 470.2L993.9 470.2L993.9 470.2L994.4 470.2L994.4 470.2L994.9 470.2L994.9 470.2L995.4 470.2L995.4 470.2L995.9 470.2L995.9 470.2L996.4 470.2L996.4 470.2L996.9 470.2L996.9 470.2L997.4 470.2L997.4 470.2L997.9 470.2L997.9 470.2L998.4 470.2L998.4 470.2L998.9 470.2L998.9 470.2L999.4 470.2L999.4 470.2L999.9 470.2L999.9 470.2L1000.4 470.2L1000.4 463.2L1000.9 463.2L1000.9 459.9L1001.4 459.9L1001.4 460L1001.9 460L1001.9 460.1L1002.4 460.1L1002.4 470.2L1002.9 470.2L1002.9 470.2L1003.4 470.2L1003.4 470.2L1003.9 470.2L1003.9 470.2L1004.4 470.2L1004.4 470.2L1004.9 470.2L1004.9 470.2L1005.4 470.2L1005.4 470.2L1005.9 470.2L1005.9 470.2L1006.4 470.2L1006.4 470.2L1006.9 470.2L1006.9 470.2L1007.4 470.2L1007.4 470.2L1007.9 470.2L1007.9 470.2L1008.4 470.2L1008.4 470.2L1008.9 470.2L1008.9 456.2L1009.4 456.2L1009.4 453.3L1009.9 453.3L1009.9 453.7L1010.4 453.7L1010.4 455.9L1010.9 455.9L1010.9 457.3L1011.4 457.3L1011.4 459.1L1011.9 459.1L1011.9 460.4L1012.4 460.4L1012.4 461.6L1012.9 461.6L1012.9 462.7L1013.4 462.7L1013.4 464.1L1013.9 464.1L1013.9 465.5L1014.4 465.5L1014.4 466.7L1014.9 466.7L1014.9 467.9L1015.4 467.9L1015.4 469.3L1015.9 469.3L1015.9 470.2L1016.4 470.2L1016.4 470.2L1016.9 470.2L1016.9 470.2L1017.4 470.2L1017.4 470.2L1017.9 470.2L1017.9 470.2L1018.4 470.2L1018.4 470.2L1018.9 470.2L1018.9 470.2L1019.4 470.2L1019.4 470.2L1019.9 470.2L1019.9 470.2L1020.4 470.2L1020.4 470.2L1020.9 470.2L1020.9 470.2L1021.4 470.2L1021.4 461.9L1021.9 461.9L1021.9 461.6L1022.4 461.6L1022.4 461L1022.9 461L1022.9 455.9L1023.4 455.9L1023.4 454.6L1023.9 454.6L1023.9 456.2L1024.4 456.2L1024.4 459.3L1024.9 459.3L1024.9 461.9L1025.4 461.9L1025.4 463.6L1025.9 463.6L1025.9 465.7L1026.4 465.7L1026.4 467.5L1026.9 467.5L1026.9 469.6L1027.4 469.6L1027.4 470.2L1027.9 470.2L1027.9 470.2L1028.4 470.2L1028.4 470.2L1028.9 470.2L1028.9 470.2L1029.4 470.2L1029.4 470.2L1029.9 470.2L1029.9 470.2L1030.4 470.2L1030.4 470.2L1030.9 470.2L1030.9 470.2L1031.4 470.2L1031.4 470.2L1031.9 470.2L1031.9 470.2L1032.4 470.2L1032.4 470.2L1032.9 470.2L1032.9 470.2L1033.4 470.2L1033.4 470.2L1033.9 470.2L1033.9 470.2L1034.4 470.2L1034.4 458.8L1034.9 458.8L1034.9 452.7L1035.4 452.7L1035.4 451.7L1035.9 451.7L1035.9 453.5L1036.4 453.5L1036.4 456.1L1036.9 456.1L1036.9 456.1L1037.4 456.1L1037.4 456.6L1037.9 456.6L1037.9 456.9L1038.4 456.9L1038.4 457.4L1038.9 457.4L1038.9 457.3L1039.4 457.3L1039.4 457.4L1039.9 457.4L1039.9 457.3L1040.4 457.3L1040.4 458.3L1040.9 458.3L1040.9 458.7L1041.4 458.7L1041.4 458.5L1041.9 458.5L1041.9 459.9L1042.4 459.9L1042.4 460.1L1042.9 460.1L1042.9 460.2L1043.4 460.2L1043.4 459.9L1043.9 459.9L1043.9 460.8L1044.4 460.8L1044.4 461L1044.9 461L1044.9 461.5L1045.4 461.5L1045.4 460.6L1045.9 460.6L1045.9 459.8L1046.4 459.8L1046.4 460.1L1046.9 460.1L1046.9 460.1L1047.4 460.1L1047.4 459L1047.9 459L1047.9 459.1L1048.4 459.1L1048.4 457.7L1048.9 457.7L1048.9 458L1049.4 458L1049.4 458L1049.9 458L1049.9 457.8L1050.4 457.8L1050.4 453.3L1050.9 453.3L1050.9 452.5L1051.4 452.5L1051.4 452.9L1051.9 452.9L1051.9 460.6L1052.4 460.6L1052.4 463.5L1052.9 463.5L1052.9 466.7L1053.4 466.7L1053.4 469.9L1053.9 469.9L1053.9 470.2L1054.4 470.2L1054.4 470.2L1054.9 470.2L1054.9 470.2L1055.4 470.2L1055.4 470.2L1055.9 470.2L1055.9 456.4L1056.4 456.4L1056.4 456.9L1056.9 456.9L1056.9 459.1L1057.4 459.1L1057.4 469.2L1057.9 469.2L1057.9 470.2L1058.4 470.2L1058.4 470.2L1058.9 470.2L1058.9 470.2L1059.4 470.2L1059.4 470.2L1059.9 470.2L1059.9 462L1060.4 462L1060.4 458.8L1060.9 458.8L1060.9 450.2L1061.4 450.2L1061.4 450.4L1061.9 450.4L1061.9 462.5L1062.4 462.5L1062.4 462.7L1062.9 462.7L1062.9 463.1L1063.4 463.1L1063.4 460.8L1063.9 460.8L1063.9 455.4L1064.4 455.4L1064.4 452.3L1064.9 452.3L1064.9 451.9L1065.4 451.9L1065.4 455.4L1065.9 455.4L1065.9 457.3L1066.4 457.3L1066.4 459L1066.9 459L1066.9 459.4L1067.4 459.4L1067.4 461.1L1067.9 461.1L1067.9 462.1L1068.4 462.1L1068.4 463.6L1068.9 463.6L1068.9 464.8L1069.4 464.8L1069.4 465.9L1069.9 465.9L1069.9 467.4L1070.4 467.4L1070.4 468.5L1070.9 468.5L1070.9 469.8L1071.4 469.8L1071.4 470.2L1071.9 470.2L1071.9 470.2L1072.4 470.2L1072.4 470.2L1072.9 470.2L1072.9 470.2L1073.4 470.2L1073.4 470.2L1073.9 470.2L1073.9 470.2L1074.4 470.2L1074.4 470.2L1074.9 470.2L1074.9 470.2L1075.4 470.2L1075.4 470.2L1075.9 470.2L1075.9 470.8L1076.4 470.8L1076.4 470.8L1076.9 470.8L1076.9 470.8L1077.4 470.8L1077.4 470.8L1077.9 470.8L1077.9 470.2L1078.4 470.2L1078.4 470.2L1078.9 470.2L1078.9 470.8L1078.9 471.4L1078.4 471.4L1078.4 471.4L1077.9 471.4L1077.9 470.8L1077.4 470.8L1077.4 470.8L1076.9 470.8L1076.9 470.8L1076.4 470.8L1076.4 470.8L1075.9 470.8L1075.9 471.4L1075.4 471.4L1075.4 471.4L1074.9 471.4L1074.9 471.4L1074.4 471.4L1074.4 471.4L1073.9 471.4L1073.9 471.4L1073.4 471.4L1073.4 471.4L1072.9 471.4L1072.9 471.4L1072.4 471.4L1072.4 471.4L1071.9 471.4L1071.9 471.4L1071.4 471.4L1071.4 471.8L1070.9 471.8L1070.9 472.9L1070.4 472.9L1070.4 474L1069.9 474L1069.9 475L1069.4 475L1069.4 476.2L1068.9 476.2L1068.9 477.4L1068.4 477.4L1068.4 478.3L1067.9 478.3L1067.9 479.1L1067.4 479.1L1067.4 481L1066.9 481L1066.9 481.7L1066.4 481.7L1066.4 482.3L1065.9 482.3L1065.9 485.2L1065.4 485.2L1065.4 487.5L1064.9 487.5L1064.9 487.2L1064.4 487.2L1064.4 485L1063.9 485L1063.9 480.8L1063.4 480.8L1063.4 478.6L1062.9 478.6L1062.9 479L1062.4 479L1062.4 479.4L1061.9 479.4L1061.9 489.8L1061.4 489.8L1061.4 488.4L1060.9 488.4L1060.9 482L1060.4 482L1060.4 479.4L1059.9 479.4L1059.9 471.4L1059.4 471.4L1059.4 471.4L1058.9 471.4L1058.9 471.4L1058.4 471.4L1058.4 471.4L1057.9 471.4L1057.9 472.3L1057.4 472.3L1057.4 480.1L1056.9 480.1L1056.9 483.5L1056.4 483.5L1056.4 483.1L1055.9 483.1L1055.9 471.4L1055.4 471.4L1055.4 471.4L1054.9 471.4L1054.9 471.4L1054.4 471.4L1054.4 471.4L1053.9 471.4L1053.9 471.7L1053.4 471.7L1053.4 474.4L1052.9 474.4L1052.9 477.3L1052.4 477.3L1052.4 480.9L1051.9 480.9L1051.9 487.7L1051.4 487.7L1051.4 489.8L1050.9 489.8L1050.9 486.9L1050.4 486.9L1050.4 483.6L1049.9 483.6L1049.9 483.2L1049.4 483.2L1049.4 482L1048.9 482L1048.9 481.8L1048.4 481.8L1048.4 481.8L1047.9 481.8L1047.9 481.4L1047.4 481.4L1047.4 480.5L1046.9 480.5L1046.9 481L1046.4 481L1046.4 480.3L1045.9 480.3L1045.9 480.3L1045.4 480.3L1045.4 479.6L1044.9 479.6L1044.9 479.4L1044.4 479.4L1044.4 480.1L1043.9 480.1L1043.9 480.4L1043.4 480.4L1043.4 480.5L1042.9 480.5L1042.9 480.8L1042.4 480.8L1042.4 481.2L1041.9 481.2L1041.9 481.2L1041.4 481.2L1041.4 481.2L1040.9 481.2L1040.9 481.7L1040.4 481.7L1040.4 481.7L1039.9 481.7L1039.9 482.3L1039.4 482.3L1039.4 483L1038.9 483L1038.9 483.1L1038.4 483.1L1038.4 483.1L1037.9 483.1L1037.9 483.6L1037.4 483.6L1037.4 483.5L1036.9 483.5L1036.9 484.4L1036.4 484.4L1036.4 485.4L1035.9 485.4L1035.9 485.6L1035.4 485.6L1035.4 485.9L1034.9 485.9L1034.9 479.8L1034.4 479.8L1034.4 471.4L1033.9 471.4L1033.9 471.4L1033.4 471.4L1033.4 471.4L1032.9 471.4L1032.9 471.4L1032.4 471.4L1032.4 471.4L1031.9 471.4L1031.9 471.4L1031.4 471.4L1031.4 471.4L1030.9 471.4L1030.9 471.4L1030.4 471.4L1030.4 471.4L1029.9 471.4L1029.9 471.4L1029.4 471.4L1029.4 471.4L1028.9 471.4L1028.9 471.4L1028.4 471.4L1028.4 471.4L1027.9 471.4L1027.9 471.4L1027.4 471.4L1027.4 472L1026.9 472L1026.9 473.8L1026.4 473.8L1026.4 475.6L1025.9 475.6L1025.9 477.5L1025.4 477.5L1025.4 479.5L1024.9 479.5L1024.9 481.3L1024.4 481.3L1024.4 485.1L1023.9 485.1L1023.9 486.7L1023.4 486.7L1023.4 484.8L1022.9 484.8L1022.9 480.2L1022.4 480.2L1022.4 480.2L1021.9 480.2L1021.9 479.7L1021.4 479.7L1021.4 471.4L1020.9 471.4L1020.9 471.4L1020.4 471.4L1020.4 471.4L1019.9 471.4L1019.9 471.4L1019.4 471.4L1019.4 471.4L1018.9 471.4L1018.9 471.4L1018.4 471.4L1018.4 471.4L1017.9 471.4L1017.9 471.4L1017.4 471.4L1017.4 471.4L1016.9 471.4L1016.9 471.4L1016.4 471.4L1016.4 471.4L1015.9 471.4L1015.9 472.2L1015.4 472.2L1015.4 473.4L1014.9 473.4L1014.9 474.4L1014.4 474.4L1014.4 475.7L1013.9 475.7L1013.9 476.6L1013.4 476.6L1013.4 477.9L1012.9 477.9L1012.9 478.9L1012.4 478.9L1012.4 479.8L1011.9 479.8L1011.9 480.7L1011.4 480.7L1011.4 482.5L1010.9 482.5L1010.9 483.6L1010.4 483.6L1010.4 486.4L1009.9 486.4L1009.9 485.6L1009.4 485.6L1009.4 483.3L1008.9 483.3L1008.9 471.4L1008.4 471.4L1008.4 471.4L1007.9 471.4L1007.9 471.4L1007.4 471.4L1007.4 471.4L1006.9 471.4L1006.9 471.4L1006.4 471.4L1006.4 471.4L1005.9 471.4L1005.9 471.4L1005.4 471.4L1005.4 471.4L1004.9 471.4L1004.9 471.4L1004.4 471.4L1004.4 471.4L1003.9 471.4L1003.9 471.4L1003.4 471.4L1003.4 471.4L1002.9 471.4L1002.9 471.4L1002.4 471.4L1002.4 479.5L1001.9 479.5L1001.9 479.6L1001.4 479.6L1001.4 479.2L1000.9 479.2L1000.9 477.4L1000.4 477.4L1000.4 471.4L999.9 471.4L999.9 471.4L999.4 471.4L999.4 471.4L998.9 471.4L998.9 471.4L998.4 471.4L998.4 471.4L997.9 471.4L997.9 471.4L997.4 471.4L997.4 471.4L996.9 471.4L996.9 471.4L996.4 471.4L996.4 471.4L995.9 471.4L995.9 471.4L995.4 471.4L995.4 471.4L994.9 471.4L994.9 471.4L994.4 471.4L994.4 471.4L993.9 471.4L993.9 471.4L993.4 471.4L993.4 479L992.9 479L992.9 479.5L992.4 479.5L992.4 480.1L991.9 480.1L991.9 479.6L991.4 479.6L991.4 479.8L990.9 479.8L990.9 480L990.4 480L990.4 480.1L989.9 480.1L989.9 480.8L989.4 480.8L989.4 486.5L988.9 486.5L988.9 487.2L988.4 487.2L988.4 485.9L987.9 485.9L987.9 478.9L987.4 478.9L987.4 479L986.9 479L986.9 478.7L986.4 478.7L986.4 471.8L985.9 471.8L985.9 471.4L985.4 471.4L985.4 471.4L984.9 471.4L984.9 471.4L984.4 471.4L984.4 471.4L983.9 471.4L983.9 471.4L983.4 471.4L983.4 471.4L982.9 471.4L982.9 471.4L982.4 471.4L982.4 471.4L981.9 471.4L981.9 471.4L981.4 471.4L981.4 471.4L980.9 471.4L980.9 471.4L980.4 471.4L980.4 471.4L979.9 471.4L979.9 471.6L979.4 471.6L979.4 473.3L978.9 473.3L978.9 475L978.4 475L978.4 476.2L977.9 476.2L977.9 477.8L977.4 477.8L977.4 479.7L976.9 479.7L976.9 481.5L976.4 481.5L976.4 485.4L975.9 485.4L975.9 491.3L975.4 491.3L975.4 489.6L974.9 489.6L974.9 486.8L974.4 486.8L974.4 479.7L973.9 479.7L973.9 479.5L973.4 479.5L973.4 476.2L972.9 476.2L972.9 471.4L972.4 471.4L972.4 471.4L971.9 471.4L971.9 471.4L971.4 471.4L971.4 471.4L970.9 471.4L970.9 471.4L970.4 471.4L970.4 471.4L969.9 471.4L969.9 471.4L969.4 471.4L969.4 471.4L968.9 471.4L968.9 471.4L968.4 471.4L968.4 471.4L967.9 471.4L967.9 471.4L967.4 471.4L967.4 471.4L966.9 471.4L966.9 471.4L966.4 471.4L966.4 472.3L965.9 472.3L965.9 473.6L965.4 473.6L965.4 474.9L964.9 474.9L964.9 475.9L964.4 475.9L964.4 477.5L963.9 477.5L963.9 478.8L963.4 478.8L963.4 480L962.9 480L962.9 481.3L962.4 481.3L962.4 482.1L961.9 482.1L961.9 484.1L961.4 484.1L961.4 485L960.9 485L960.9 486.3L960.4 486.3L960.4 485.9L959.9 485.9L959.9 490.7L959.4 490.7L959.4 493.7L958.9 493.7L958.9 493.8L958.4 493.8L958.4 491.9L957.9 491.9L957.9 492L957.4 492L957.4 483.1L956.9 483.1L956.9 482.8L956.4 482.8L956.4 482.4L955.9 482.4L955.9 482.5L955.4 482.5L955.4 482.1L954.9 482.1L954.9 481L954.4 481L954.4 480.7L953.9 480.7L953.9 480.3L953.4 480.3L953.4 480.9L952.9 480.9L952.9 481.1L952.4 481.1L952.4 481L951.9 481L951.9 481.5L951.4 481.5L951.4 481.6L950.9 481.6L950.9 481.1L950.4 481.1L950.4 482L949.9 482L949.9 482.8L949.4 482.8L949.4 485.4L948.9 485.4L948.9 485.5L948.4 485.5L948.4 485.6L947.9 485.6L947.9 482.4L947.4 482.4L947.4 481.8L946.9 481.8L946.9 481.5L946.4 481.5L946.4 481.4L945.9 481.4L945.9 482.1L945.4 482.1L945.4 482L944.9 482L944.9 482.6L944.4 482.6L944.4 482.7L943.9 482.7L943.9 473.7L943.4 473.7L943.4 471.4L942.9 471.4L942.9 471.4L942.4 471.4Z" fill="#d6e9fc"/><path d="M1079 470.8L1079 470.2L1079.5 470.2L1079.5 470.2L1080 470.2L1080 467L1080.5 467L1080.5 455.1L1081 455.1L1081 455.2L1081.5 455.2L1081.5 457.4L1082 457.4L1082 457.7L1082.5 457.7L1082.5 457.6L1083 457.6L1083 457.9L1083.5 457.9L1083.5 457.6L1084 457.6L1084 458.3L1084.5 458.3L1084.5 458.2L1085 458.2L1085 457.7L1085.5 457.7L1085.5 457.9L1086 457.9L1086 458.4L1086.5 458.4L1086.5 459.4L1087 459.4L1087 459.4L1087.5 459.4L1087.5 458.7L1088 458.7L1088 459.6L1088.5 459.6L1088.5 459.2L1089 459.2L1089 459.5L1089.5 459.5L1089.5 458.7L1090 458.7L1090 458.6L1090.5 458.6L1090.5 459.4L1091 459.4L1091 459.9L1091.5 459.9L1091.5 460L1092 460L1092 460.2L1092.5 460.2L1092.5 459.4L1093 459.4L1093 458.4L1093.5 458.4L1093.5 456.5L1094 456.5L1094 449L1094.5 449L1094.5 448.4L1095 448.4L1095 448.9L1095.5 448.9L1095.5 450.5L1096 450.5L1096 449.7L1096.5 449.7L1096.5 452.4L1097 452.4L1097 454L1097.5 454L1097.5 455.4L1098 455.4L1098 455.7L1098.5 455.7L1098.5 458L1099 458L1099 459.2L1099.5 459.2L1099.5 461L1100 461L1100 461.8L1100.5 461.8L1100.5 463.9L1101 463.9L1101 465.2L1101.5 465.2L1101.5 466.3L1102 466.3L1102 467.8L1102.5 467.8L1102.5 469.1L1103 469.1L1103 470.2L1103.5 470.2L1103.5 470.2L1104 470.2L1104 470.2L1104.5 470.2L1104.5 470.2L1105 470.2L1105 470.2L1105.5 470.2L1105.5 470.2L1106 470.2L1106 470.2L1106.5 470.2L1106.5 470.2L1107 470.2L1107 470.2L1107.5 470.2L1107.5 470.2L1108 470.2L1108 470.2L1108.5 470.2L1108.5 470.2L1109 470.2L1109 470.2L1109.5 470.2L1109.5 465.2L1110 465.2L1110 462.1L1110.5 462.1L1110.5 461.8L1111 461.8L1111 456.2L1111.5 456.2L1111.5 451.3L1112 451.3L1112 453.2L1112.5 453.2L1112.5 455.8L1113 455.8L1113 459.7L1113.5 459.7L1113.5 460.8L1114 460.8L1114 463L1114.5 463L1114.5 464.4L1115 464.4L1115 466.5L1115.5 466.5L1115.5 468.1L1116 468.1L1116 470L1116.5 470L1116.5 470.2L1117 470.2L1117 470.2L1117.5 470.2L1117.5 470.2L1118 470.2L1118 470.2L1118.5 470.2L1118.5 470.2L1119 470.2L1119 470.2L1119.5 470.2L1119.5 470.2L1120 470.2L1120 470.2L1120.5 470.2L1120.5 470.2L1121 470.2L1121 470.2L1121.5 470.2L1121.5 470.2L1122 470.2L1122 470.2L1122.5 470.2L1122.5 469.8L1123 469.8L1123 463.4L1123.5 463.4L1123.5 462.3L1124 462.3L1124 462.1L1124.5 462.1L1124.5 453.4L1125 453.4L1125 451.3L1125.5 451.3L1125.5 453.8L1126 453.8L1126 458.5L1126.5 458.5L1126.5 459.6L1127 459.6L1127 459.8L1127.5 459.8L1127.5 460.5L1128 460.5L1128 460.5L1128.5 460.5L1128.5 459.4L1129 459.4L1129 459.6L1129.5 459.6L1129.5 459.8L1130 459.8L1130 470.2L1130.5 470.2L1130.5 470.2L1131 470.2L1131 470.2L1131.5 470.2L1131.5 470.2L1132 470.2L1132 470.2L1132.5 470.2L1132.5 470.2L1133 470.2L1133 470.2L1133.5 470.2L1133.5 470.2L1134 470.2L1134 470.2L1134.5 470.2L1134.5 470.2L1135 470.2L1135 470.2L1135.5 470.2L1135.5 470.2L1136 470.2L1136 470.2L1136.5 470.2L1136.5 470.2L1137 470.2L1137 463.2L1137.5 463.2L1137.5 459.9L1138 459.9L1138 460L1138.5 460L1138.5 460.1L1139 460.1L1139 470.2L1139.5 470.2L1139.5 470.2L1140 470.2L1140 470.2L1140.5 470.2L1140.5 470.2L1141 470.2L1141 470.2L1141.5 470.2L1141.5 470.2L1142 470.2L1142 470.2L1142.5 470.2L1142.5 470.2L1143 470.2L1143 470.2L1143.5 470.2L1143.5 470.2L1144 470.2L1144 470.2L1144.5 470.2L1144.5 470.2L1145 470.2L1145 470.2L1145.5 470.2L1145.5 456.2L1146 456.2L1146 453.3L1146.5 453.3L1146.5 453.7L1147 453.7L1147 455.9L1147.5 455.9L1147.5 457.3L1148 457.3L1148 459.1L1148.5 459.1L1148.5 460.4L1149 460.4L1149 461.6L1149.5 461.6L1149.5 462.7L1150 462.7L1150 464.1L1150.5 464.1L1150.5 465.5L1151 465.5L1151 466.7L1151.5 466.7L1151.5 467.9L1152 467.9L1152 469.3L1152.5 469.3L1152.5 470.2L1153 470.2L1153 470.2L1153.5 470.2L1153.5 470.2L1154 470.2L1154 470.2L1154.5 470.2L1154.5 470.2L1155 470.2L1155 470.2L1155.5 470.2L1155.5 470.2L1156 470.2L1156 470.2L1156.5 470.2L1156.5 470.2L1157 470.2L1157 470.2L1157.5 470.2L1157.5 470.2L1158 470.2L1158 461.9L1158.5 461.9L1158.5 461.6L1159 461.6L1159 461L1159.5 461L1159.5 455.9L1160 455.9L1160 454.6L1160.5 454.6L1160.5 456.2L1161 456.2L1161 459.3L1161.5 459.3L1161.5 461.9L1162 461.9L1162 463.6L1162.5 463.6L1162.5 465.7L1163 465.7L1163 467.5L1163.5 467.5L1163.5 469.6L1164 469.6L1164 470.2L1164.5 470.2L1164.5 470.2L1165 470.2L1165 470.2L1165.5 470.2L1165.5 470.2L1166 470.2L1166 470.2L1166.5 470.2L1166.5 470.2L1167 470.2L1167 470.2L1167.5 470.2L1167.5 470.2L1168 470.2L1168 470.2L1168.5 470.2L1168.5 470.2L1169 470.2L1169 470.2L1169.5 470.2L1169.5 470.2L1170 470.2L1170 470.2L1170.5 470.2L1170.5 470.2L1171 470.2L1171 458.8L1171.5 458.8L1171.5 452.7L1172 452.7L1172 451.7L1172.5 451.7L1172.5 453.5L1173 453.5L1173 456.1L1173.5 456.1L1173.5 456.1L1174 456.1L1174 456.6L1174.5 456.6L1174.5 456.9L1175 456.9L1175 457.4L1175.5 457.4L1175.5 457.3L1176 457.3L1176 457.4L1176.5 457.4L1176.5 457.3L1177 457.3L1177 458.3L1177.5 458.3L1177.5 458.7L1178 458.7L1178 458.5L1178.5 458.5L1178.5 459.9L1179 459.9L1179 460.1L1179.5 460.1L1179.5 460.2L1180 460.2L1180 459.9L1180.5 459.9L1180.5 460.8L1181 460.8L1181 461L1181.5 461L1181.5 461.5L1182 461.5L1182 460.6L1182.5 460.6L1182.5 459.8L1183 459.8L1183 460.1L1183.5 460.1L1183.5 460.1L1184 460.1L1184 459L1184.5 459L1184.5 459.1L1185 459.1L1185 457.7L1185.5 457.7L1185.5 458L1186 458L1186 458L1186.5 458L1186.5 457.8L1187 457.8L1187 453.3L1187.5 453.3L1187.5 452.5L1188 452.5L1188 452.9L1188.5 452.9L1188.5 460.6L1189 460.6L1189 463.5L1189.5 463.5L1189.5 466.7L1190 466.7L1190 469.9L1190.5 469.9L1190.5 470.2L1191 470.2L1191 470.2L1191.5 470.2L1191.5 470.2L1192 470.2L1192 470.2L1192.5 470.2L1192.5 456.4L1193 456.4L1193 456.9L1193.5 456.9L1193.5 459.1L1194 459.1L1194 469.2L1194.5 469.2L1194.5 470.2L1195 470.2L1195 470.2L1195.5 470.2L1195.5 470.2L1196 470.2L1196 470.2L1196.5 470.2L1196.5 470.8L1196.5 471.4L1196 471.4L1196 471.4L1195.5 471.4L1195.5 471.4L1195 471.4L1195 471.4L1194.5 471.4L1194.5 472.3L1194 472.3L1194 480.1L1193.5 480.1L1193.5 483.5L1193 483.5L1193 483.1L1192.5 483.1L1192.5 471.4L1192 471.4L1192 471.4L1191.5 471.4L1191.5 471.4L1191 471.4L1191 471.4L1190.5 471.4L1190.5 471.7L1190 471.7L1190 474.4L1189.5 474.4L1189.5 477.3L1189 477.3L1189 480.9L1188.5 480.9L1188.5 487.7L1188 487.7L1188 489.8L1187.5 489.8L1187.5 486.9L1187 486.9L1187 483.6L1186.5 483.6L1186.5 483.2L1186 483.2L1186 482L1185.5 482L1185.5 481.8L1185 481.8L1185 481.8L1184.5 481.8L1184.5 481.4L1184 481.4L1184 480.5L1183.5 480.5L1183.5 481L1183 481L1183 480.3L1182.5 480.3L1182.5 480.3L1182 480.3L1182 479.6L1181.5 479.6L1181.5 479.4L1181 479.4L1181 480.1L1180.5 480.1L1180.5 480.4L1180 480.4L1180 480.5L1179.5 480.5L1179.5 480.8L1179 480.8L1179 481.2L1178.5 481.2L1178.5 481.2L1178 481.2L1178 481.2L1177.5 481.2L1177.5 481.7L1177 481.7L1177 481.7L1176.5 481.7L1176.5 482.3L1176 482.3L1176 483L1175.5 483L1175.5 483.1L1175 483.1L1175 483.1L1174.5 483.1L1174.5 483.6L1174 483.6L1174 483.5L1173.5 483.5L1173.5 484.4L1173 484.4L1173 485.4L1172.5 485.4L1172.5 485.6L1172 485.6L1172 485.9L1171.5 485.9L1171.5 479.8L1171 479.8L1171 471.4L1170.5 471.4L1170.5 471.4L1170 471.4L1170 471.4L1169.5 471.4L1169.5 471.4L1169 471.4L1169 471.4L1168.5 471.4L1168.5 471.4L1168 471.4L1168 471.4L1167.5 471.4L1167.5 471.4L1167 471.4L1167 471.4L1166.5 471.4L1166.5 471.4L1166 471.4L1166 471.4L1165.5 471.4L1165.5 471.4L1165 471.4L1165 471.4L1164.5 471.4L1164.5 471.4L1164 471.4L1164 472L1163.5 472L1163.5 473.8L1163 473.8L1163 475.6L1162.5 475.6L1162.5 477.5L1162 477.5L1162 479.5L1161.5 479.5L1161.5 481.3L1161 481.3L1161 485.1L1160.5 485.1L1160.5 486.7L1160 486.7L1160 484.8L1159.5 484.8L1159.5 480.2L1159 480.2L1159 480.2L1158.5 480.2L1158.5 479.7L1158 479.7L1158 471.4L1157.5 471.4L1157.5 471.4L1157 471.4L1157 471.4L1156.5 471.4L1156.5 471.4L1156 471.4L1156 471.4L1155.5 471.4L1155.5 471.4L1155 471.4L1155 471.4L1154.5 471.4L1154.5 471.4L1154 471.4L1154 471.4L1153.5 471.4L1153.5 471.4L1153 471.4L1153 471.4L1152.5 471.4L1152.5 472.2L1152 472.2L1152 473.4L1151.5 473.4L1151.5 474.4L1151 474.4L1151 475.7L1150.5 475.7L1150.5 476.6L1150 476.6L1150 477.9L1149.5 477.9L1149.5 478.9L1149 478.9L1149 479.8L1148.5 479.8L1148.5 480.7L1148 480.7L1148 482.5L1147.5 482.5L1147.5 483.6L1147 483.6L1147 486.4L1146.5 486.4L1146.5 485.6L1146 485.6L1146 483.3L1145.5 483.3L1145.5 471.4L1145 471.4L1145 471.4L1144.5 471.4L1144.5 471.4L1144 471.4L1144 471.4L1143.5 471.4L1143.5 471.4L1143 471.4L1143 471.4L1142.5 471.4L1142.5 471.4L1142 471.4L1142 471.4L1141.5 471.4L1141.5 471.4L1141 471.4L1141 471.4L1140.5 471.4L1140.5 471.4L1140 471.4L1140 471.4L1139.5 471.4L1139.5 471.4L1139 471.4L1139 479.5L1138.5 479.5L1138.5 479.6L1138 479.6L1138 479.2L1137.5 479.2L1137.5 477.4L1137 477.4L1137 471.4L1136.5 471.4L1136.5 471.4L1136 471.4L1136 471.4L1135.5 471.4L1135.5 471.4L1135 471.4L1135 471.4L1134.5 471.4L1134.5 471.4L1134 471.4L1134 471.4L1133.5 471.4L1133.5 471.4L1133 471.4L1133 471.4L1132.5 471.4L1132.5 471.4L1132 471.4L1132 471.4L1131.5 471.4L1131.5 471.4L1131 471.4L1131 471.4L1130.5 471.4L1130.5 471.4L1130 471.4L1130 479L1129.5 479L1129.5 479.5L1129 479.5L1129 480.1L1128.5 480.1L1128.5 479.6L1128 479.6L1128 479.8L1127.5 479.8L1127.5 480L1127 480L1127 480.1L1126.5 480.1L1126.5 480.8L1126 480.8L1126 486.5L1125.5 486.5L1125.5 487.2L1125 487.2L1125 485.9L1124.5 485.9L1124.5 478.9L1124 478.9L1124 479L1123.5 479L1123.5 478.7L1123 478.7L1123 471.8L1122.5 471.8L1122.5 471.4L1122 471.4L1122 471.4L1121.5 471.4L1121.5 471.4L1121 471.4L1121 471.4L1120.5 471.4L1120.5 471.4L1120 471.4L1120 471.4L1119.5 471.4L1119.5 471.4L1119 471.4L1119 471.4L1118.5 471.4L1118.5 471.4L1118 471.4L1118 471.4L1117.5 471.4L1117.5 471.4L1117 471.4L1117 471.4L1116.5 471.4L1116.5 471.6L1116 471.6L1116 473.3L1115.5 473.3L1115.5 475L1115 475L1115 476.2L1114.5 476.2L1114.5 477.8L1114 477.8L1114 479.7L1113.5 479.7L1113.5 481.5L1113 481.5L1113 485.4L1112.5 485.4L1112.5 491.3L1112 491.3L1112 489.6L1111.5 489.6L1111.5 486.8L1111 486.8L1111 479.7L1110.5 479.7L1110.5 479.5L1110 479.5L1110 476.2L1109.5 476.2L1109.5 471.4L1109 471.4L1109 471.4L1108.5 471.4L1108.5 471.4L1108 471.4L1108 471.4L1107.5 471.4L1107.5 471.4L1107 471.4L1107 471.4L1106.5 471.4L1106.5 471.4L1106 471.4L1106 471.4L1105.5 471.4L1105.5 471.4L1105 471.4L1105 471.4L1104.5 471.4L1104.5 471.4L1104 471.4L1104 471.4L1103.5 471.4L1103.5 471.4L1103 471.4L1103 472.3L1102.5 472.3L1102.5 473.6L1102 473.6L1102 474.9L1101.5 474.9L1101.5 475.9L1101 475.9L1101 477.5L1100.5 477.5L1100.5 478.8L1100 478.8L1100 480L1099.5 480L1099.5 481.3L1099 481.3L1099 482.1L1098.5 482.1L1098.5 484.1L1098 484.1L1098 485L1097.5 485L1097.5 486.3L1097 486.3L1097 485.9L1096.5 485.9L1096.5 490.7L1096 490.7L1096 493.7L1095.5 493.7L1095.5 493.8L1095 493.8L1095 491.9L1094.5 491.9L1094.5 492L1094 492L1094 483.1L1093.5 483.1L1093.5 482.8L1093 482.8L1093 482.4L1092.5 482.4L1092.5 482.5L1092 482.5L1092 482.1L1091.5 482.1L1091.5 481L1091 481L1091 480.7L1090.5 480.7L1090.5 480.3L1090 480.3L1090 480.9L1089.5 480.9L1089.5 481.1L1089 481.1L1089 481L1088.5 481L1088.5 481.5L1088 481.5L1088 481.6L1087.5 481.6L1087.5 481.1L1087 481.1L1087 482L1086.5 482L1086.5 482.8L1086 482.8L1086 485.4L1085.5 485.4L1085.5 485.5L1085 485.5L1085 485.6L1084.5 485.6L1084.5 482.4L1084 482.4L1084 481.8L1083.5 481.8L1083.5 481.5L1083 481.5L1083 481.4L1082.5 481.4L1082.5 482.1L1082 482.1L1082 482L1081.5 482L1081.5 482.6L1081 482.6L1081 482.7L1080.5 482.7L1080.5 473.7L1080 473.7L1080 471.4L1079.5 471.4L1079.5 471.4L1079 471.4Z" fill="#82a6ce"/><path d="M1075.8 418.1 H1082.2 L1079.0 422.8 Z M1075.8 497.3 H1082.2 L1079.0 492.6 Z" fill="#16222f"/><path d="M1075.6 419.4 L1079.0 423.6 L1082.4 419.4 M1075.6 496.0 L1079.0 491.8 L1082.4 496.0" fill="none" stroke="#cde4fb" stroke-width="1.5"/><circle cx="1107.6" cy="432.4" r="5.5" fill="none" stroke="#2b4a6d" stroke-width="1.6"/><circle cx="1115.1" cy="432.4" r="5.5" fill="none" stroke="#2b4a6d" stroke-width="1.6"/><path d="M653.3 550.6L653.3 547.1L654.3 547.1L654.3 548.4L655.3 548.4L655.3 548L656.3 548L656.3 549.2L657.3 549.2L657.3 548.4L658.3 548.4L658.3 546.6L659.3 546.6L659.3 548L660.3 548L660.3 545.6L661.3 545.6L661.3 549.2L662.3 549.2L662.3 546.6L663.3 546.6L663.3 547.6L664.3 547.6L664.3 542.6L665.3 542.6L665.3 545L666.3 545L666.3 549.2L667.3 549.2L667.3 542.6L668.3 542.6L668.3 528.6L669.3 528.6L669.3 534.6L670.3 534.6L670.3 541.6L671.3 541.6L671.3 544.6L672.3 544.6L672.3 548.4L673.3 548.4L673.3 548L674.3 548L674.3 545.8L675.3 545.8L675.3 547.6L676.3 547.6L676.3 543.6L677.3 543.6L677.3 545.7L678.3 545.7L678.3 545.8L679.3 545.8L679.3 547.6L680.3 547.6L680.3 548.4L681.3 548.4L681.3 549.2L682.3 549.2L682.3 545.8L683.3 545.8L683.3 545.6L684.3 545.6L684.3 547.6L685.3 547.6L685.3 542.1L686.3 542.1L686.3 544.6L687.3 544.6L687.3 546.6L688.3 546.6L688.3 548.4L689.3 548.4L689.3 545.6L690.3 545.6L690.3 545.8L691.3 545.8L691.3 549.2L692.3 549.2L692.3 547.6L693.3 547.6L693.3 544.1L694.3 544.1L694.3 546.1L695.3 546.1L695.3 545.6L696.3 545.6L696.3 549.2L697.3 549.2L697.3 546.2L698.3 546.2L698.3 542.6L699.3 542.6L699.3 545L700.3 545L700.3 547.6L701.3 547.6L701.3 542.6L702.3 542.6L702.3 528.6L703.3 528.6L703.3 534.6L704.3 534.6L704.3 541.6L705.3 541.6L705.3 544.6L706.3 544.6L706.3 549.2L707.3 549.2L707.3 545.6L708.3 545.6L708.3 546.2L709.3 546.2L709.3 547.1L710.3 547.1L710.3 547.1L711.3 547.1L711.3 543.6L712.3 543.6L712.3 545.7L713.3 545.7L713.3 546.6L714.3 546.6L714.3 548.4L715.3 548.4L715.3 545.6L716.3 545.6L716.3 549.2L717.3 549.2L717.3 546.2L718.3 546.2L718.3 548L719.3 548L719.3 542.1L720.3 542.1L720.3 544.6L721.3 544.6L721.3 549.2L722.3 549.2L722.3 546.6L723.3 546.6L723.3 545.6L724.3 545.6L724.3 546.6L725.3 546.6L725.3 547.1L726.3 547.1L726.3 549.2L727.3 549.2L727.3 544.1L728.3 544.1L728.3 546.1L729.3 546.1L729.3 547.6L730.3 547.6L730.3 545.8L731.3 545.8L731.3 549.2L732.3 549.2L732.3 542.6L733.3 542.6L733.3 545L734.3 545L734.3 548L735.3 548L735.3 542.6L736.3 542.6L736.3 528.6L737.3 528.6L737.3 534.6L738.3 534.6L738.3 541.6L739.3 541.6L739.3 544.6L740.3 544.6L740.3 545.8L741.3 545.8L741.3 549.2L742.3 549.2L742.3 548L743.3 548L743.3 548L744.3 548L744.3 548.4L745.3 548.4L745.3 543.6L746.3 543.6L746.3 545.7L747.3 545.7L747.3 548L748.3 548L748.3 548.4L749.3 548.4L749.3 547.6L750.3 547.6L750.3 545.6L751.3 545.6L751.3 549.2L752.3 549.2L752.3 548.4L753.3 548.4L753.3 542.1L754.3 542.1L754.3 544.6L755.3 544.6L755.3 548L756.3 548L756.3 549.2L757.3 549.2L757.3 547.6L758.3 547.6L758.3 546.2L759.3 546.2L759.3 548L760.3 548L760.3 545.6L761.3 545.6L761.3 544.1L762.3 544.1L762.3 546.1L763.3 546.1L763.3 548L764.3 548L764.3 545.8L765.3 545.8L765.3 547.6L766.3 547.6L766.3 542.6L767.3 542.6L767.3 545L768.3 545L768.3 548.4L769.3 548.4L769.3 542.6L770.3 542.6L770.3 528.6L771.3 528.6L771.3 534.6L772.3 534.6L772.3 541.6L773.3 541.6L773.3 544.6L774.3 544.6L774.3 548.4L775.3 548.4L775.3 545.6L776.3 545.6L776.3 549.2L777.3 549.2L777.3 546.2L778.3 546.2L778.3 545.8L779.3 545.8L779.3 543.6L780.3 543.6L780.3 545.7L781.3 545.7L781.3 549.2L782.3 549.2L782.3 545.6L783.3 545.6L783.3 547.1L784.3 547.1L784.3 547.6L785.3 547.6L785.3 548L786.3 548L786.3 549.2L787.3 549.2L787.3 542.1L788.3 542.1L788.3 544.6L789.3 544.6L789.3 550.6L789.3 556L788.3 556L788.3 558.2L787.3 558.2L787.3 552L786.3 552L786.3 553L785.3 553L785.3 553.2L784.3 553.2L784.3 554.4L783.3 554.4L783.3 556L782.3 556L782.3 552.1L781.3 552.1L781.3 555L780.3 555L780.3 556.9L779.3 556.9L779.3 555.4L778.3 555.4L778.3 555L777.3 555L777.3 552L776.3 552L776.3 554.9L775.3 554.9L775.3 553L774.3 553L774.3 556.1L773.3 556.1L773.3 558.6L772.3 558.6L772.3 564.1L771.3 564.1L771.3 566.6L770.3 566.6L770.3 556.6L769.3 556.6L769.3 552.7L768.3 552.7L768.3 555.6L767.3 555.6L767.3 557.8L766.3 557.8L766.3 553.2L765.3 553.2L765.3 555.8L764.3 555.8L764.3 553.3L763.3 553.3L763.3 555.1L762.3 555.1L762.3 556.5L761.3 556.5L761.3 556.1L760.3 556.1L760.3 553.2L759.3 553.2L759.3 554.3L758.3 554.3L758.3 553.4L757.3 553.4L757.3 551.8L756.3 551.8L756.3 553.2L755.3 553.2L755.3 556L754.3 556L754.3 558.2L753.3 558.2L753.3 552.8L752.3 552.8L752.3 551.8L751.3 551.8L751.3 555.4L750.3 555.4L750.3 553.6L749.3 553.6L749.3 552.8L748.3 552.8L748.3 553.4L747.3 553.4L747.3 555L746.3 555L746.3 556.9L745.3 556.9L745.3 552.8L744.3 552.8L744.3 553.4L743.3 553.4L743.3 553.1L742.3 553.1L742.3 551.8L741.3 551.8L741.3 555.5L740.3 555.5L740.3 556.1L739.3 556.1L739.3 558.6L738.3 558.6L738.3 564.1L737.3 564.1L737.3 566.6L736.3 566.6L736.3 556.6L735.3 556.6L735.3 553.2L734.3 553.2L734.3 555.6L733.3 555.6L733.3 557.8L732.3 557.8L732.3 551.9L731.3 551.9L731.3 555.7L730.3 555.7L730.3 553.3L729.3 553.3L729.3 554.7L728.3 554.7L728.3 556.5L727.3 556.5L727.3 551.9L726.3 551.9L726.3 554.3L725.3 554.3L725.3 554.7L724.3 554.7L724.3 555.6L723.3 555.6L723.3 554.7L722.3 554.7L722.3 551.9L721.3 551.9L721.3 556L720.3 556L720.3 558.2L719.3 558.2L719.3 553.2L718.3 553.2L718.3 554.7L717.3 554.7L717.3 552.1L716.3 552.1L716.3 555.2L715.3 555.2L715.3 552.7L714.3 552.7L714.3 554L713.3 554L713.3 555L712.3 555L712.3 556.9L711.3 556.9L711.3 553.6L710.3 553.6L710.3 553.7L709.3 553.7L709.3 554.5L708.3 554.5L708.3 555.5L707.3 555.5L707.3 551.8L706.3 551.8L706.3 556.1L705.3 556.1L705.3 558.6L704.3 558.6L704.3 564.1L703.3 564.1L703.3 566.6L702.3 566.6L702.3 556.6L701.3 556.6L701.3 553.4L700.3 553.4L700.3 555.6L699.3 555.6L699.3 557.8L698.3 557.8L698.3 554.3L697.3 554.3L697.3 551.9L696.3 551.9L696.3 555.1L695.3 555.1L695.3 554.8L694.3 554.8L694.3 556.5L693.3 556.5L693.3 553.8L692.3 553.8L692.3 552L691.3 552L691.3 554.9L690.3 554.9L690.3 556L689.3 556L689.3 552.5L688.3 552.5L688.3 554.7L687.3 554.7L687.3 556L686.3 556L686.3 558.2L685.3 558.2L685.3 553.7L684.3 553.7L684.3 555.1L683.3 555.1L683.3 555.2L682.3 555.2L682.3 552L681.3 552L681.3 552.7L680.3 552.7L680.3 553.2L679.3 553.2L679.3 555.1L678.3 555.1L678.3 555.8L677.3 555.8L677.3 556.9L676.3 556.9L676.3 553.9L675.3 553.9L675.3 555.2L674.3 555.2L674.3 552.9L673.3 552.9L673.3 553L672.3 553L672.3 556.1L671.3 556.1L671.3 558.6L670.3 558.6L670.3 564.1L669.3 564.1L669.3 566.6L668.3 566.6L668.3 556.6L667.3 556.6L667.3 552L666.3 552L666.3 555.6L665.3 555.6L665.3 557.8L664.3 557.8L664.3 553.7L663.3 553.7L663.3 554.5L662.3 554.5L662.3 551.8L661.3 551.8L661.3 555L660.3 555L660.3 553.4L659.3 553.4L659.3 554.7L658.3 554.7L658.3 552.9L657.3 552.9L657.3 551.9L656.3 551.9L656.3 553.4L655.3 553.4L655.3 552.7L654.3 552.7L654.3 553.7L653.3 553.7Z" fill="#b4cae4"/><path d="M788.9 550.6L788.9 548L789.9 548L789.9 547.1L790.9 547.1L790.9 548.4L791.9 548.4L791.9 548L792.9 548L792.9 549.2L793.9 549.2L793.9 548.4L794.9 548.4L794.9 546.6L795.9 546.6L795.9 548L796.9 548L796.9 545.6L797.9 545.6L797.9 549.2L798.9 549.2L798.9 546.6L799.9 546.6L799.9 547.6L800.9 547.6L800.9 542.6L801.9 542.6L801.9 545L802.9 545L802.9 549.2L803.9 549.2L803.9 542.6L804.9 542.6L804.9 528.6L805.9 528.6L805.9 534.6L806.9 534.6L806.9 541.6L807.9 541.6L807.9 544.6L808.9 544.6L808.9 548.4L809.9 548.4L809.9 548L810.9 548L810.9 545.8L811.9 545.8L811.9 547.6L812.9 547.6L812.9 543.6L813.9 543.6L813.9 545.7L814.9 545.7L814.9 545.8L815.9 545.8L815.9 547.6L816.9 547.6L816.9 548.4L817.9 548.4L817.9 549.2L818.9 549.2L818.9 545.8L819.9 545.8L819.9 545.6L820.9 545.6L820.9 547.6L821.9 547.6L821.9 542.1L822.9 542.1L822.9 544.6L823.9 544.6L823.9 546.6L824.9 546.6L824.9 548.4L825.9 548.4L825.9 545.6L826.9 545.6L826.9 545.8L827.9 545.8L827.9 549.2L828.9 549.2L828.9 547.6L829.9 547.6L829.9 544.1L830.9 544.1L830.9 546.1L831.9 546.1L831.9 545.6L832.9 545.6L832.9 549.2L833.9 549.2L833.9 546.2L834.9 546.2L834.9 542.6L835.9 542.6L835.9 545L836.9 545L836.9 547.6L837.9 547.6L837.9 542.6L838.9 542.6L838.9 528.6L839.9 528.6L839.9 534.6L840.9 534.6L840.9 541.6L841.9 541.6L841.9 544.6L842.9 544.6L842.9 549.2L843.9 549.2L843.9 545.6L844.9 545.6L844.9 546.2L845.9 546.2L845.9 547.1L846.9 547.1L846.9 547.1L847.9 547.1L847.9 543.6L848.9 543.6L848.9 545.7L849.9 545.7L849.9 546.6L850.9 546.6L850.9 548.4L851.9 548.4L851.9 545.6L852.9 545.6L852.9 549.2L853.9 549.2L853.9 546.2L854.9 546.2L854.9 548L855.9 548L855.9 542.1L856.9 542.1L856.9 544.6L857.9 544.6L857.9 549.2L858.9 549.2L858.9 546.6L859.9 546.6L859.9 545.6L860.9 545.6L860.9 546.6L861.9 546.6L861.9 547.1L862.9 547.1L862.9 549.2L863.9 549.2L863.9 544.1L864.9 544.1L864.9 546.1L865.9 546.1L865.9 547.6L866.9 547.6L866.9 545.8L867.9 545.8L867.9 549.2L868.9 549.2L868.9 542.6L869.9 542.6L869.9 545L870.9 545L870.9 548L871.9 548L871.9 542.6L872.9 542.6L872.9 528.6L873.9 528.6L873.9 534.6L874.9 534.6L874.9 541.6L875.9 541.6L875.9 544.6L876.9 544.6L876.9 545.8L877.9 545.8L877.9 549.2L878.9 549.2L878.9 548L879.9 548L879.9 548L880.9 548L880.9 548.4L881.9 548.4L881.9 543.6L882.9 543.6L882.9 545.7L883.9 545.7L883.9 548L884.9 548L884.9 548.4L885.9 548.4L885.9 547.6L886.9 547.6L886.9 545.6L887.9 545.6L887.9 549.2L888.9 549.2L888.9 548.4L889.9 548.4L889.9 542.1L890.9 542.1L890.9 544.6L891.9 544.6L891.9 548L892.9 548L892.9 549.2L893.9 549.2L893.9 547.6L894.9 547.6L894.9 546.2L895.9 546.2L895.9 548L896.9 548L896.9 545.6L897.9 545.6L897.9 544.1L898.9 544.1L898.9 546.1L899.9 546.1L899.9 548L900.9 548L900.9 545.8L901.9 545.8L901.9 547.6L902.9 547.6L902.9 542.6L903.9 542.6L903.9 545L904.9 545L904.9 548.4L905.9 548.4L905.9 542.6L906.9 542.6L906.9 528.6L907.9 528.6L907.9 534.6L908.9 534.6L908.9 541.6L909.9 541.6L909.9 544.6L910.9 544.6L910.9 548.4L911.9 548.4L911.9 545.6L912.9 545.6L912.9 549.2L913.9 549.2L913.9 546.2L914.9 546.2L914.9 545.8L915.9 545.8L915.9 543.6L916.9 543.6L916.9 545.7L917.9 545.7L917.9 549.2L918.9 549.2L918.9 545.6L919.9 545.6L919.9 547.1L920.9 547.1L920.9 547.6L921.9 547.6L921.9 548L922.9 548L922.9 549.2L923.9 549.2L923.9 542.1L924.9 542.1L924.9 544.6L925.9 544.6L925.9 550.6L925.9 556L924.9 556L924.9 558.2L923.9 558.2L923.9 552L922.9 552L922.9 553L921.9 553L921.9 553.2L920.9 553.2L920.9 554.4L919.9 554.4L919.9 556L918.9 556L918.9 552.1L917.9 552.1L917.9 555L916.9 555L916.9 556.9L915.9 556.9L915.9 555.4L914.9 555.4L914.9 555L913.9 555L913.9 552L912.9 552L912.9 554.9L911.9 554.9L911.9 553L910.9 553L910.9 556.1L909.9 556.1L909.9 558.6L908.9 558.6L908.9 564.1L907.9 564.1L907.9 566.6L906.9 566.6L906.9 556.6L905.9 556.6L905.9 552.7L904.9 552.7L904.9 555.6L903.9 555.6L903.9 557.8L902.9 557.8L902.9 553.2L901.9 553.2L901.9 555.8L900.9 555.8L900.9 553.3L899.9 553.3L899.9 555.1L898.9 555.1L898.9 556.5L897.9 556.5L897.9 556.1L896.9 556.1L896.9 553.2L895.9 553.2L895.9 554.3L894.9 554.3L894.9 553.4L893.9 553.4L893.9 551.8L892.9 551.8L892.9 553.2L891.9 553.2L891.9 556L890.9 556L890.9 558.2L889.9 558.2L889.9 552.8L888.9 552.8L888.9 551.8L887.9 551.8L887.9 555.4L886.9 555.4L886.9 553.6L885.9 553.6L885.9 552.8L884.9 552.8L884.9 553.4L883.9 553.4L883.9 555L882.9 555L882.9 556.9L881.9 556.9L881.9 552.8L880.9 552.8L880.9 553.4L879.9 553.4L879.9 553.1L878.9 553.1L878.9 551.8L877.9 551.8L877.9 555.5L876.9 555.5L876.9 556.1L875.9 556.1L875.9 558.6L874.9 558.6L874.9 564.1L873.9 564.1L873.9 566.6L872.9 566.6L872.9 556.6L871.9 556.6L871.9 553.2L870.9 553.2L870.9 555.6L869.9 555.6L869.9 557.8L868.9 557.8L868.9 551.9L867.9 551.9L867.9 555.7L866.9 555.7L866.9 553.3L865.9 553.3L865.9 554.7L864.9 554.7L864.9 556.5L863.9 556.5L863.9 551.9L862.9 551.9L862.9 554.3L861.9 554.3L861.9 554.7L860.9 554.7L860.9 555.6L859.9 555.6L859.9 554.7L858.9 554.7L858.9 551.9L857.9 551.9L857.9 556L856.9 556L856.9 558.2L855.9 558.2L855.9 553.2L854.9 553.2L854.9 554.7L853.9 554.7L853.9 552.1L852.9 552.1L852.9 555.2L851.9 555.2L851.9 552.7L850.9 552.7L850.9 554L849.9 554L849.9 555L848.9 555L848.9 556.9L847.9 556.9L847.9 553.6L846.9 553.6L846.9 553.7L845.9 553.7L845.9 554.5L844.9 554.5L844.9 555.5L843.9 555.5L843.9 551.8L842.9 551.8L842.9 556.1L841.9 556.1L841.9 558.6L840.9 558.6L840.9 564.1L839.9 564.1L839.9 566.6L838.9 566.6L838.9 556.6L837.9 556.6L837.9 553.4L836.9 553.4L836.9 555.6L835.9 555.6L835.9 557.8L834.9 557.8L834.9 554.3L833.9 554.3L833.9 551.9L832.9 551.9L832.9 555.1L831.9 555.1L831.9 554.8L830.9 554.8L830.9 556.5L829.9 556.5L829.9 553.8L828.9 553.8L828.9 552L827.9 552L827.9 554.9L826.9 554.9L826.9 556L825.9 556L825.9 552.5L824.9 552.5L824.9 554.7L823.9 554.7L823.9 556L822.9 556L822.9 558.2L821.9 558.2L821.9 553.7L820.9 553.7L820.9 555.1L819.9 555.1L819.9 555.2L818.9 555.2L818.9 552L817.9 552L817.9 552.7L816.9 552.7L816.9 553.2L815.9 553.2L815.9 555.1L814.9 555.1L814.9 555.8L813.9 555.8L813.9 556.9L812.9 556.9L812.9 553.9L811.9 553.9L811.9 555.2L810.9 555.2L810.9 552.9L809.9 552.9L809.9 553L808.9 553L808.9 556.1L807.9 556.1L807.9 558.6L806.9 558.6L806.9 564.1L805.9 564.1L805.9 566.6L804.9 566.6L804.9 556.6L803.9 556.6L803.9 552L802.9 552L802.9 555.6L801.9 555.6L801.9 557.8L800.9 557.8L800.9 553.7L799.9 553.7L799.9 554.5L798.9 554.5L798.9 551.8L797.9 551.8L797.9 555L796.9 555L796.9 553.4L795.9 553.4L795.9 554.7L794.9 554.7L794.9 552.9L793.9 552.9L793.9 551.9L792.9 551.9L792.9 553.4L791.9 553.4L791.9 552.7L790.9 552.7L790.9 553.7L789.9 553.7L789.9 553.2L788.9 553.2Z" fill="#7094be"/><path d="M785.7 500.7 H792.1 L788.9 505.4 Z M785.7 580.1 H792.1 L788.9 575.4 Z" fill="#16202c"/><path d="M925.5 550.6L925.5 548L926.5 548L926.5 547.1L927.5 547.1L927.5 548.4L928.5 548.4L928.5 548L929.5 548L929.5 549.2L930.5 549.2L930.5 548.4L931.5 548.4L931.5 546.6L932.5 546.6L932.5 548L933.5 548L933.5 545.6L934.5 545.6L934.5 549.2L935.5 549.2L935.5 546.6L936.5 546.6L936.5 547.6L937.5 547.6L937.5 542.6L938.5 542.6L938.5 545L939.5 545L939.5 549.2L940.5 549.2L940.5 542.6L941.5 542.6L941.5 528.6L942.5 528.6L942.5 534.6L943.5 534.6L943.5 541.6L944.5 541.6L944.5 544.6L945.5 544.6L945.5 548.4L946.5 548.4L946.5 548L947.5 548L947.5 545.8L948.5 545.8L948.5 547.6L949.5 547.6L949.5 543.6L950.5 543.6L950.5 545.7L951.5 545.7L951.5 545.8L952.5 545.8L952.5 547.6L953.5 547.6L953.5 548.4L954.5 548.4L954.5 549.2L955.5 549.2L955.5 545.8L956.5 545.8L956.5 545.6L957.5 545.6L957.5 547.6L958.5 547.6L958.5 542.1L959.5 542.1L959.5 544.6L960.5 544.6L960.5 546.6L961.5 546.6L961.5 548.4L962.5 548.4L962.5 545.6L963.5 545.6L963.5 545.8L964.5 545.8L964.5 549.2L965.5 549.2L965.5 547.6L966.5 547.6L966.5 544.1L967.5 544.1L967.5 546.1L968.5 546.1L968.5 545.6L969.5 545.6L969.5 549.2L970.5 549.2L970.5 546.2L971.5 546.2L971.5 542.6L972.5 542.6L972.5 545L973.5 545L973.5 547.6L974.5 547.6L974.5 542.6L975.5 542.6L975.5 528.6L976.5 528.6L976.5 534.6L977.5 534.6L977.5 541.6L978.5 541.6L978.5 544.6L979.5 544.6L979.5 549.2L980.5 549.2L980.5 545.6L981.5 545.6L981.5 546.2L982.5 546.2L982.5 547.1L983.5 547.1L983.5 547.1L984.5 547.1L984.5 543.6L985.5 543.6L985.5 545.7L986.5 545.7L986.5 546.6L987.5 546.6L987.5 548.4L988.5 548.4L988.5 545.6L989.5 545.6L989.5 549.2L990.5 549.2L990.5 546.2L991.5 546.2L991.5 548L992.5 548L992.5 542.1L993.5 542.1L993.5 544.6L994.5 544.6L994.5 549.2L995.5 549.2L995.5 546.6L996.5 546.6L996.5 545.6L997.5 545.6L997.5 546.6L998.5 546.6L998.5 547.1L999.5 547.1L999.5 549.2L1000.5 549.2L1000.5 544.1L1001.5 544.1L1001.5 546.1L1002.5 546.1L1002.5 547.6L1003.5 547.6L1003.5 545.8L1004.5 545.8L1004.5 549.2L1005.5 549.2L1005.5 542.6L1006.5 542.6L1006.5 545L1007.5 545L1007.5 548L1008.5 548L1008.5 542.6L1009.5 542.6L1009.5 528.6L1010.5 528.6L1010.5 534.6L1011.5 534.6L1011.5 541.6L1012.5 541.6L1012.5 544.6L1013.5 544.6L1013.5 545.8L1014.5 545.8L1014.5 549.2L1015.5 549.2L1015.5 548L1016.5 548L1016.5 548L1017.5 548L1017.5 548.4L1018.5 548.4L1018.5 543.6L1019.5 543.6L1019.5 545.7L1020.5 545.7L1020.5 548L1021.5 548L1021.5 548.4L1022.5 548.4L1022.5 547.6L1023.5 547.6L1023.5 545.6L1024.5 545.6L1024.5 549.2L1025.5 549.2L1025.5 548.4L1026.5 548.4L1026.5 542.1L1027.5 542.1L1027.5 544.6L1028.5 544.6L1028.5 548L1029.5 548L1029.5 549.2L1030.5 549.2L1030.5 547.6L1031.5 547.6L1031.5 546.2L1032.5 546.2L1032.5 548L1033.5 548L1033.5 545.6L1034.5 545.6L1034.5 544.1L1035.5 544.1L1035.5 546.1L1036.5 546.1L1036.5 548L1037.5 548L1037.5 545.8L1038.5 545.8L1038.5 547.6L1039.5 547.6L1039.5 542.6L1040.5 542.6L1040.5 545L1041.5 545L1041.5 548.4L1042.5 548.4L1042.5 542.6L1043.5 542.6L1043.5 528.6L1044.5 528.6L1044.5 534.6L1045.5 534.6L1045.5 541.6L1046.5 541.6L1046.5 544.6L1047.5 544.6L1047.5 548.4L1048.5 548.4L1048.5 545.6L1049.5 545.6L1049.5 549.2L1050.5 549.2L1050.5 546.2L1051.5 546.2L1051.5 545.8L1052.5 545.8L1052.5 543.6L1053.5 543.6L1053.5 545.7L1054.5 545.7L1054.5 549.2L1055.5 549.2L1055.5 545.6L1056.5 545.6L1056.5 547.1L1057.5 547.1L1057.5 547.6L1058.5 547.6L1058.5 548L1059.5 548L1059.5 549.2L1060.5 549.2L1060.5 542.1L1061.5 542.1L1061.5 544.6L1062.5 544.6L1062.5 550.6L1062.5 556L1061.5 556L1061.5 558.2L1060.5 558.2L1060.5 552L1059.5 552L1059.5 553L1058.5 553L1058.5 553.2L1057.5 553.2L1057.5 554.4L1056.5 554.4L1056.5 556L1055.5 556L1055.5 552.1L1054.5 552.1L1054.5 555L1053.5 555L1053.5 556.9L1052.5 556.9L1052.5 555.4L1051.5 555.4L1051.5 555L1050.5 555L1050.5 552L1049.5 552L1049.5 554.9L1048.5 554.9L1048.5 553L1047.5 553L1047.5 556.1L1046.5 556.1L1046.5 558.6L1045.5 558.6L1045.5 564.1L1044.5 564.1L1044.5 566.6L1043.5 566.6L1043.5 556.6L1042.5 556.6L1042.5 552.7L1041.5 552.7L1041.5 555.6L1040.5 555.6L1040.5 557.8L1039.5 557.8L1039.5 553.2L1038.5 553.2L1038.5 555.8L1037.5 555.8L1037.5 553.3L1036.5 553.3L1036.5 555.1L1035.5 555.1L1035.5 556.5L1034.5 556.5L1034.5 556.1L1033.5 556.1L1033.5 553.2L1032.5 553.2L1032.5 554.3L1031.5 554.3L1031.5 553.4L1030.5 553.4L1030.5 551.8L1029.5 551.8L1029.5 553.2L1028.5 553.2L1028.5 556L1027.5 556L1027.5 558.2L1026.5 558.2L1026.5 552.8L1025.5 552.8L1025.5 551.8L1024.5 551.8L1024.5 555.4L1023.5 555.4L1023.5 553.6L1022.5 553.6L1022.5 552.8L1021.5 552.8L1021.5 553.4L1020.5 553.4L1020.5 555L1019.5 555L1019.5 556.9L1018.5 556.9L1018.5 552.8L1017.5 552.8L1017.5 553.4L1016.5 553.4L1016.5 553.1L1015.5 553.1L1015.5 551.8L1014.5 551.8L1014.5 555.5L1013.5 555.5L1013.5 556.1L1012.5 556.1L1012.5 558.6L1011.5 558.6L1011.5 564.1L1010.5 564.1L1010.5 566.6L1009.5 566.6L1009.5 556.6L1008.5 556.6L1008.5 553.2L1007.5 553.2L1007.5 555.6L1006.5 555.6L1006.5 557.8L1005.5 557.8L1005.5 551.9L1004.5 551.9L1004.5 555.7L1003.5 555.7L1003.5 553.3L1002.5 553.3L1002.5 554.7L1001.5 554.7L1001.5 556.5L1000.5 556.5L1000.5 551.9L999.5 551.9L999.5 554.3L998.5 554.3L998.5 554.7L997.5 554.7L997.5 555.6L996.5 555.6L996.5 554.7L995.5 554.7L995.5 551.9L994.5 551.9L994.5 556L993.5 556L993.5 558.2L992.5 558.2L992.5 553.2L991.5 553.2L991.5 554.7L990.5 554.7L990.5 552.1L989.5 552.1L989.5 555.2L988.5 555.2L988.5 552.7L987.5 552.7L987.5 554L986.5 554L986.5 555L985.5 555L985.5 556.9L984.5 556.9L984.5 553.6L983.5 553.6L983.5 553.7L982.5 553.7L982.5 554.5L981.5 554.5L981.5 555.5L980.5 555.5L980.5 551.8L979.5 551.8L979.5 556.1L978.5 556.1L978.5 558.6L977.5 558.6L977.5 564.1L976.5 564.1L976.5 566.6L975.5 566.6L975.5 556.6L974.5 556.6L974.5 553.4L973.5 553.4L973.5 555.6L972.5 555.6L972.5 557.8L971.5 557.8L971.5 554.3L970.5 554.3L970.5 551.9L969.5 551.9L969.5 555.1L968.5 555.1L968.5 554.8L967.5 554.8L967.5 556.5L966.5 556.5L966.5 553.8L965.5 553.8L965.5 552L964.5 552L964.5 554.9L963.5 554.9L963.5 556L962.5 556L962.5 552.5L961.5 552.5L961.5 554.7L960.5 554.7L960.5 556L959.5 556L959.5 558.2L958.5 558.2L958.5 553.7L957.5 553.7L957.5 555.1L956.5 555.1L956.5 555.2L955.5 555.2L955.5 552L954.5 552L954.5 552.7L953.5 552.7L953.5 553.2L952.5 553.2L952.5 555.1L951.5 555.1L951.5 555.8L950.5 555.8L950.5 556.9L949.5 556.9L949.5 553.9L948.5 553.9L948.5 555.2L947.5 555.2L947.5 552.9L946.5 552.9L946.5 553L945.5 553L945.5 556.1L944.5 556.1L944.5 558.6L943.5 558.6L943.5 564.1L942.5 564.1L942.5 566.6L941.5 566.6L941.5 556.6L940.5 556.6L940.5 552L939.5 552L939.5 555.6L938.5 555.6L938.5 557.8L937.5 557.8L937.5 553.7L936.5 553.7L936.5 554.5L935.5 554.5L935.5 551.8L934.5 551.8L934.5 555L933.5 555L933.5 553.4L932.5 553.4L932.5 554.7L931.5 554.7L931.5 552.9L930.5 552.9L930.5 551.9L929.5 551.9L929.5 553.4L928.5 553.4L928.5 552.7L927.5 552.7L927.5 553.7L926.5 553.7L926.5 553.2L925.5 553.2Z" fill="#7094be"/><path d="M922.3 500.7 H928.7 L925.5 505.4 Z M922.3 580.1 H928.7 L925.5 575.4 Z" fill="#16202c"/><path d="M1062.1 550.6L1062.1 548L1063.1 548L1063.1 547.1L1064.1 547.1L1064.1 548.4L1065.1 548.4L1065.1 548L1066.1 548L1066.1 549.2L1067.1 549.2L1067.1 548.4L1068.1 548.4L1068.1 546.6L1069.1 546.6L1069.1 548L1070.1 548L1070.1 545.6L1071.1 545.6L1071.1 549.2L1072.1 549.2L1072.1 546.6L1073.1 546.6L1073.1 547.6L1074.1 547.6L1074.1 542.6L1075.1 542.6L1075.1 545L1076.1 545L1076.1 549.2L1077.1 549.2L1077.1 542.6L1078.1 542.6L1078.1 528.6L1079.1 528.6L1079.1 534.6L1080.1 534.6L1080.1 541.6L1081.1 541.6L1081.1 544.6L1082.1 544.6L1082.1 548.4L1083.1 548.4L1083.1 548L1084.1 548L1084.1 545.8L1085.1 545.8L1085.1 547.6L1086.1 547.6L1086.1 543.6L1087.1 543.6L1087.1 545.7L1088.1 545.7L1088.1 545.8L1089.1 545.8L1089.1 547.6L1090.1 547.6L1090.1 548.4L1091.1 548.4L1091.1 549.2L1092.1 549.2L1092.1 545.8L1093.1 545.8L1093.1 545.6L1094.1 545.6L1094.1 547.6L1095.1 547.6L1095.1 542.1L1096.1 542.1L1096.1 544.6L1097.1 544.6L1097.1 546.6L1098.1 546.6L1098.1 548.4L1099.1 548.4L1099.1 545.6L1100.1 545.6L1100.1 545.8L1101.1 545.8L1101.1 549.2L1102.1 549.2L1102.1 547.6L1103.1 547.6L1103.1 544.1L1104.1 544.1L1104.1 546.1L1105.1 546.1L1105.1 545.6L1106.1 545.6L1106.1 549.2L1107.1 549.2L1107.1 546.2L1108.1 546.2L1108.1 542.6L1109.1 542.6L1109.1 545L1110.1 545L1110.1 547.6L1111.1 547.6L1111.1 542.6L1112.1 542.6L1112.1 528.6L1113.1 528.6L1113.1 534.6L1114.1 534.6L1114.1 541.6L1115.1 541.6L1115.1 544.6L1116.1 544.6L1116.1 549.2L1117.1 549.2L1117.1 545.6L1118.1 545.6L1118.1 546.2L1119.1 546.2L1119.1 547.1L1120.1 547.1L1120.1 547.1L1121.1 547.1L1121.1 543.6L1122.1 543.6L1122.1 545.7L1123.1 545.7L1123.1 546.6L1124.1 546.6L1124.1 548.4L1125.1 548.4L1125.1 545.6L1126.1 545.6L1126.1 549.2L1127.1 549.2L1127.1 546.2L1128.1 546.2L1128.1 548L1129.1 548L1129.1 542.1L1130.1 542.1L1130.1 544.6L1131.1 544.6L1131.1 549.2L1132.1 549.2L1132.1 546.6L1133.1 546.6L1133.1 545.6L1134.1 545.6L1134.1 546.6L1135.1 546.6L1135.1 547.1L1136.1 547.1L1136.1 549.2L1137.1 549.2L1137.1 544.1L1138.1 544.1L1138.1 546.1L1139.1 546.1L1139.1 547.6L1140.1 547.6L1140.1 545.8L1141.1 545.8L1141.1 549.2L1142.1 549.2L1142.1 542.6L1143.1 542.6L1143.1 545L1144.1 545L1144.1 548L1145.1 548L1145.1 542.6L1146.1 542.6L1146.1 528.6L1147.1 528.6L1147.1 534.6L1148.1 534.6L1148.1 541.6L1149.1 541.6L1149.1 544.6L1150.1 544.6L1150.1 545.8L1151.1 545.8L1151.1 549.2L1152.1 549.2L1152.1 548L1153.1 548L1153.1 548L1154.1 548L1154.1 548.4L1155.1 548.4L1155.1 543.6L1156.1 543.6L1156.1 545.7L1157.1 545.7L1157.1 548L1158.1 548L1158.1 548.4L1159.1 548.4L1159.1 547.6L1160.1 547.6L1160.1 545.6L1161.1 545.6L1161.1 549.2L1162.1 549.2L1162.1 548.4L1163.1 548.4L1163.1 542.1L1164.1 542.1L1164.1 544.6L1165.1 544.6L1165.1 548L1166.1 548L1166.1 549.2L1167.1 549.2L1167.1 547.6L1168.1 547.6L1168.1 546.2L1169.1 546.2L1169.1 548L1170.1 548L1170.1 545.6L1171.1 545.6L1171.1 544.1L1172.1 544.1L1172.1 546.1L1173.1 546.1L1173.1 548L1174.1 548L1174.1 545.8L1175.1 545.8L1175.1 547.6L1176.1 547.6L1176.1 542.6L1177.1 542.6L1177.1 545L1178.1 545L1178.1 548.4L1179.1 548.4L1179.1 542.6L1180.1 542.6L1180.1 528.6L1181.1 528.6L1181.1 534.6L1182.1 534.6L1182.1 541.6L1183.1 541.6L1183.1 544.6L1184.1 544.6L1184.1 548.4L1185.1 548.4L1185.1 545.6L1186.1 545.6L1186.1 549.2L1187.1 549.2L1187.1 546.2L1188.1 546.2L1188.1 545.8L1189.1 545.8L1189.1 543.6L1190.1 543.6L1190.1 545.7L1191.1 545.7L1191.1 549.2L1192.1 549.2L1192.1 545.6L1193.1 545.6L1193.1 547.1L1194.1 547.1L1194.1 547.6L1195.1 547.6L1195.1 548L1196.1 548L1196.1 549.2L1197.1 549.2L1197.1 550.6L1197.1 552L1196.1 552L1196.1 553L1195.1 553L1195.1 553.2L1194.1 553.2L1194.1 554.4L1193.1 554.4L1193.1 556L1192.1 556L1192.1 552.1L1191.1 552.1L1191.1 555L1190.1 555L1190.1 556.9L1189.1 556.9L1189.1 555.4L1188.1 555.4L1188.1 555L1187.1 555L1187.1 552L1186.1 552L1186.1 554.9L1185.1 554.9L1185.1 553L1184.1 553L1184.1 556.1L1183.1 556.1L1183.1 558.6L1182.1 558.6L1182.1 564.1L1181.1 564.1L1181.1 566.6L1180.1 566.6L1180.1 556.6L1179.1 556.6L1179.1 552.7L1178.1 552.7L1178.1 555.6L1177.1 555.6L1177.1 557.8L1176.1 557.8L1176.1 553.2L1175.1 553.2L1175.1 555.8L1174.1 555.8L1174.1 553.3L1173.1 553.3L1173.1 555.1L1172.1 555.1L1172.1 556.5L1171.1 556.5L1171.1 556.1L1170.1 556.1L1170.1 553.2L1169.1 553.2L1169.1 554.3L1168.1 554.3L1168.1 553.4L1167.1 553.4L1167.1 551.8L1166.1 551.8L1166.1 553.2L1165.1 553.2L1165.1 556L1164.1 556L1164.1 558.2L1163.1 558.2L1163.1 552.8L1162.1 552.8L1162.1 551.8L1161.1 551.8L1161.1 555.4L1160.1 555.4L1160.1 553.6L1159.1 553.6L1159.1 552.8L1158.1 552.8L1158.1 553.4L1157.1 553.4L1157.1 555L1156.1 555L1156.1 556.9L1155.1 556.9L1155.1 552.8L1154.1 552.8L1154.1 553.4L1153.1 553.4L1153.1 553.1L1152.1 553.1L1152.1 551.8L1151.1 551.8L1151.1 555.5L1150.1 555.5L1150.1 556.1L1149.1 556.1L1149.1 558.6L1148.1 558.6L1148.1 564.1L1147.1 564.1L1147.1 566.6L1146.1 566.6L1146.1 556.6L1145.1 556.6L1145.1 553.2L1144.1 553.2L1144.1 555.6L1143.1 555.6L1143.1 557.8L1142.1 557.8L1142.1 551.9L1141.1 551.9L1141.1 555.7L1140.1 555.7L1140.1 553.3L1139.1 553.3L1139.1 554.7L1138.1 554.7L1138.1 556.5L1137.1 556.5L1137.1 551.9L1136.1 551.9L1136.1 554.3L1135.1 554.3L1135.1 554.7L1134.1 554.7L1134.1 555.6L1133.1 555.6L1133.1 554.7L1132.1 554.7L1132.1 551.9L1131.1 551.9L1131.1 556L1130.1 556L1130.1 558.2L1129.1 558.2L1129.1 553.2L1128.1 553.2L1128.1 554.7L1127.1 554.7L1127.1 552.1L1126.1 552.1L1126.1 555.2L1125.1 555.2L1125.1 552.7L1124.1 552.7L1124.1 554L1123.1 554L1123.1 555L1122.1 555L1122.1 556.9L1121.1 556.9L1121.1 553.6L1120.1 553.6L1120.1 553.7L1119.1 553.7L1119.1 554.5L1118.1 554.5L1118.1 555.5L1117.1 555.5L1117.1 551.8L1116.1 551.8L1116.1 556.1L1115.1 556.1L1115.1 558.6L1114.1 558.6L1114.1 564.1L1113.1 564.1L1113.1 566.6L1112.1 566.6L1112.1 556.6L1111.1 556.6L1111.1 553.4L1110.1 553.4L1110.1 555.6L1109.1 555.6L1109.1 557.8L1108.1 557.8L1108.1 554.3L1107.1 554.3L1107.1 551.9L1106.1 551.9L1106.1 555.1L1105.1 555.1L1105.1 554.8L1104.1 554.8L1104.1 556.5L1103.1 556.5L1103.1 553.8L1102.1 553.8L1102.1 552L1101.1 552L1101.1 554.9L1100.1 554.9L1100.1 556L1099.1 556L1099.1 552.5L1098.1 552.5L1098.1 554.7L1097.1 554.7L1097.1 556L1096.1 556L1096.1 558.2L1095.1 558.2L1095.1 553.7L1094.1 553.7L1094.1 555.1L1093.1 555.1L1093.1 555.2L1092.1 555.2L1092.1 552L1091.1 552L1091.1 552.7L1090.1 552.7L1090.1 553.2L1089.1 553.2L1089.1 555.1L1088.1 555.1L1088.1 555.8L1087.1 555.8L1087.1 556.9L1086.1 556.9L1086.1 553.9L1085.1 553.9L1085.1 555.2L1084.1 555.2L1084.1 552.9L1083.1 552.9L1083.1 553L1082.1 553L1082.1 556.1L1081.1 556.1L1081.1 558.6L1080.1 558.6L1080.1 564.1L1079.1 564.1L1079.1 566.6L1078.1 566.6L1078.1 556.6L1077.1 556.6L1077.1 552L1076.1 552L1076.1 555.6L1075.1 555.6L1075.1 557.8L1074.1 557.8L1074.1 553.7L1073.1 553.7L1073.1 554.5L1072.1 554.5L1072.1 551.8L1071.1 551.8L1071.1 555L1070.1 555L1070.1 553.4L1069.1 553.4L1069.1 554.7L1068.1 554.7L1068.1 552.9L1067.1 552.9L1067.1 551.9L1066.1 551.9L1066.1 553.4L1065.1 553.4L1065.1 552.7L1064.1 552.7L1064.1 553.7L1063.1 553.7L1063.1 553.2L1062.1 553.2Z" fill="#7094be"/><path d="M1058.9 500.7 H1065.3 L1062.1 505.4 Z M1058.9 580.1 H1065.3 L1062.1 575.4 Z" fill="#16202c"/><path d="M660.2 512.6 L664.0 508.8 L667.8 512.6 M660.2 516.8 L664.0 520.6 L667.8 516.8" fill="none" stroke="#eaf2fb" stroke-width="1.4" stroke-linejoin="round" stroke-linecap="round"/><circle cx="810.4" cy="515" r="5.5" fill="none" stroke="#eaf2fb" stroke-width="1.6"/><circle cx="817.9" cy="515" r="5.5" fill="none" stroke="#eaf2fb" stroke-width="1.6"/><path d="M653.8 637.6L654 631.4L654.5 631.6L655 631.9L655.5 632.1L656 632.4L656.5 632.6L657 632.9L657.5 633.1L658 633.4L658.5 633.6L659 633.9L659.5 634.1L660 634.4L660.5 634.6L661 634.9L661.5 635.1L662 635.4L662.5 635.6L663 635.9L663.5 636.1L664 636.4L664.5 636.6L665 636.6L665.5 633.4L666 629.4L666.5 630.6L667 631.7L667.5 632.8L668 633.7L668.5 634.6L669 635.4L669.5 636.1L670 636.3L670.5 636.5L671 636.6L671.5 636.6L672 636.6L672.5 636.6L673 636.6L673.5 636.6L674 636.6L674.5 636.6L675 636.6L675.5 636.6L676 636.6L676.5 636.6L677 636.6L677.5 636.6L678 636.2L678.5 631.1L679 629.1L679.5 630.4L680 631.6L680.5 632.8L681 633.8L681.5 634.7L682 635.5L682.5 636.2L683 636.4L683.5 636.6L684 636.6L684.5 636.6L685 636.6L685.5 636.6L686 636.6L686.5 636.6L687 634.8L687.5 626.9L688 624.5L688.5 626.5L689 628.4L689.5 630.1L690 631.7L690.5 633.1L691 634.4L691.5 635.5L692 636.4L692.5 636.6L693 636.6L693.5 636.6L694 636.6L694.5 636.6L695 636.6L695.5 636.6L696 636.6L696.5 635.4L697 634.8L697.5 635L698 635.3L698.5 635.6L699 635.9L699.5 636.1L700 636.4L700.5 636.6L701 636.6L701.5 636.6L702 636.6L702.5 636.6L703 636.6L703.5 636.6L704 636.6L704.5 636.6L705 635.7L705.5 634.8L706 635L706.5 635.3L707 635.6L707.5 635.8L708 636.1L708.5 636.4L709 636.6L709.5 636.6L710 636.6L710.5 636.6L711 636.6L711.5 636.6L712 636.6L712.5 636.6L713 636.6L713.5 636.6L714 636.6L714.5 636.6L715 636.6L715.5 636.6L716 634.1L716.5 632.5L717 633.3L717.5 634L718 634.6L718.5 635.3L719 635.7L719.5 636L720 636.2L720.5 636.4L721 636.6L721.5 633.2L722 628.7L722.5 630L723 631.2L723.5 632.4L724 633.4L724.5 634.4L725 635.2L725.5 635.9L726 636.3L726.5 636.5L727 636.6L727.5 636.6L728 636.6L728.5 636.6L729 636.6L729.5 636.6L730 636.6L730.5 636.6L731 636.6L731.5 636.6L732 636.6L732.5 636.6L733 636.6L733.5 631.6L734 628.7L734.5 630.1L735 631.3L735.5 632.5L736 633.5L736.5 634.5L737 635.3L737.5 636.1L738 636.4L738.5 636.6L739 636.6L739.5 636.6L740 636.6L740.5 636.6L741 636.6L741.5 636.6L742 636.6L742.5 636.6L743 636.6L743.5 636.6L744 636.6L744.5 636.6L745 636.6L745.5 636.6L746 636.6L746.5 634.4L747 629.7L747.5 630.2L748 631.4L748.5 632.5L749 633.5L749.5 634.4L750 635.2L750.5 635.9L751 636.3L751.5 636.5L752 636.6L752.5 636.6L753 636.6L753.5 636.6L754 636.6L754.5 636.6L755 632.1L755.5 622.9L756 623.2L756.5 625.4L757 627.6L757.5 629.5L758 631.3L758.5 632.9L759 634.3L759.5 635.4L760 636.4L760.5 636.6L761 636.6L761.5 636.6L762 636.6L762.5 636.6L763 636.6L763.5 636.6L764 636.6L764.5 635L765 634.8L765.5 635.1L766 635.4L766.5 635.7L767 635.9L767.5 636.2L768 636.5L768.5 636.6L769 636.6L769.5 636.6L770 636.6L770.5 636.6L771 636.6L771.5 636.6L772 636.6L772.5 636.6L773 636.6L773.5 636.6L774 636.6L774.5 636.6L775 636.6L775.5 635.7L776 632.7L776.5 632.8L777 633.6L777.5 634.3L778 634.9L778.5 635.5L779 635.8L779.5 636.1L780 636.3L780.5 634.4L781 626L781.5 623.9L782 626L782.5 628L783 629.8L783.5 631.5L784 632.9L784.5 634.3L785 635.4L785.5 636.3L786 636.6L786.5 636.6L787 636.6L787.5 636.6L788 636.6L788.5 636.6L789 636.6L789.5 636.6L790 634.4L790.5 629L791 629.1L791.5 630.4L792 631.7L792.5 632.8L793 633.9L793.5 634.8L794 635.6L794.5 636.3L795 636.5L795.5 636.6L796 636.6L796.5 636.6L797 636.6L797.5 636.6L798 636.6L798.5 636.6L799 636.6L799.5 636.6L800 636.6L800.5 636.6L801 636.6L801.5 636.6L802 634.4L802.5 629.7L803 630.4L803.5 631.5L804 632.6L804.5 633.6L805 634.5L805.5 635.3L806 636L806.5 636.3L807 636.5L807.5 636.6L808 636.6L808.5 636.6L809 636.6L809.5 636.6L810 636.6L810.5 636.6L811 636.6L811.5 636.6L812 636.6L812.5 636.6L813 636.6L813.5 636.6L814 636.6L814.5 636.6L815 632.6L815.5 629.7L816 630.8L816.5 632L817 633L817.5 633.9L818 634.8L818.5 635.6L819 636.2L819.5 636.4L820 636.6L820.5 636.6L821 636.6L821.5 636.6L822 636.6L822.5 636.6L823 636.6L823.5 636.3L824 628L824.5 623.5L825 625.6L825.5 627.6L826 629.5L826.5 631.1L827 632.7L827.5 634L828 635.2L828.5 636.1L829 636.6L829.5 636.6L830 636.6L830.5 636.6L831 636.6L831.5 636.6L832 636.6L832.5 636.6L833 635.9L833.5 634.7L834 635L834.5 635.3L835 635.5L835.5 635.8L836 636.1L836.5 636.4L837 636.6L837.5 636.6L838 636.6L838.5 636.6L839 636.6L839.5 636.6L840 636.6L840.5 636.6L841 636.6L841.5 636L842 634.7L842.5 635L843 635.2L843.5 635.5L844 635.8L844.5 636.1L845 636.3L845.5 636.6L846 636.6L846.5 636.6L847 636.6L847.5 636.6L848 636.6L848.5 636.6L849 636.6L849.5 636.6L850 636.6L850.5 636.6L851 636.6L851.5 636.6L852 636.6L852.5 634.2L853 631.4L853.5 632.3L854 633.2L854.5 634L855 634.7L855.5 635.4L856 635.9L856.5 636.1L857 636.3L857.5 636.6L858 634L858.5 628.8L859 629.5L859.5 630.8L860 632L860.5 633.1L861 634.1L861.5 635L862 635.7L862.5 636.3L863 636.5L863.5 636.6L864 636.6L864.5 636.6L865 636.6L865.5 636.6L866 636.6L866.5 636.6L867 636.6L867.5 636.6L868 636.6L868.5 636.6L869 636.6L869.5 636.6L870 632.5L870.5 628.1L871 629.6L871.5 630.9L872 632.1L872.5 633.2L873 634.2L873.5 635.1L874 635.9L874.5 636.3L875 636.6L875.5 636.6L876 636.6L876.5 636.6L877 636.6L877.5 636.6L878 636.6L878.5 636.6L879 636.6L879.5 636.6L880 636.6L880.5 636.6L881 636.6L881.5 636.6L882 636.6L882.5 636.6L883 635.1L883.5 629.9L884 629.2L884.5 630.5L885 631.7L885.5 632.9L886 633.9L886.5 634.8L887 635.6L887.5 636.2L888 636.5L888.5 636.6L889 636.6L889.5 636.6L890 636.6L890.5 636.6L891 636.6L891.5 634.1L892 625.7L892.5 623.7L893 625.9L893.5 627.9L894 629.7L894.5 631.4L895 632.9L895.5 634.2L896 635.4L896.5 636.3L897 636.6L897.5 636.6L898 636.6L898.5 636.6L899 636.6L899.5 636.6L900 636.6L900.5 636.6L901 635.6L901.5 634.8L902 635.1L902.5 635.3L903 635.6L903.5 635.9L904 636.1L904.5 636.4L905 636.6L905.5 636.6L906 636.6L906.5 636.6L907 636.6L907.5 636.6L908 636.6L908.5 636.6L909 636.6L909.5 636.6L910 636.6L910.5 636.6L911 636.6L911.5 636.6L912 636.1L912.5 632.6L913 631.9L913.5 632.8L914 633.6L914.5 634.4L915 635.1L915.5 635.7L916 636L916.5 636.2L917 636L917.5 627L918 622.3L918.5 624.6L919 626.8L919.5 628.8L920 630.6L920.5 632.3L921 633.7L921.5 635L922 636L922.5 636.6L923 636.6L923.5 636.6L924 636.6L924.5 636.6L925 636.6L925.5 636.6L926 636.6L926.5 636.6L927 631.3L927.5 631.5L928 631.8L928.5 632L929 632.3L929.5 632.5L930 632.8L930.5 633L931 633.3L931.5 633.5L932 633.8L932.5 634L933 634.3L933.5 634.5L934 634.8L934.5 635L935 635.3L935.5 635.5L936 635.8L936.5 636L937 636.3L937.5 636.5L938 636.6L938.5 635.2L939 630.3L939.5 629.7L940 631L940.5 632.1L941 633.2L941.5 634.1L942 635L942.5 635.7L943 636.2L943.5 636.5L944 636.6L944.5 636.6L945 636.6L945.5 636.6L946 636.6L946.5 636.6L947 636.6L947.5 636.6L948 636.6L948.5 636.6L949 636.6L949.5 636.6L950 636.6L950.5 636.6L951 636.6L951.5 633.3L952 628.9L952.5 630.2L953 631.4L953.5 632.5L954 633.5L954.5 634.4L955 635.3L955.5 636L956 636.3L956.5 636.5L957 636.6L957.5 636.6L958 636.6L958.5 636.6L959 636.6L959.5 636.6L960 636.6L960.5 628.9L961 621.6L961.5 624L962 626.2L962.5 628.3L963 630.1L963.5 631.8L964 633.4L964.5 634.7L965 635.8L965.5 636.6L966 636.6L966.5 636.6L967 636.6L967.5 636.6L968 636.6L968.5 636.6L969 636.6L969.5 636.3L970 634.7L970.5 634.9L971 635.2L971.5 635.5L972 635.8L972.5 636L973 636.3L973.5 636.6L974 636.6L974.5 636.6L975 636.6L975.5 636.6L976 636.6L976.5 636.6L977 636.6L977.5 636.6L978 636.2L978.5 634.6L979 634.9L979.5 635.2L980 635.5L980.5 635.7L981 636L981.5 636.3L982 636.6L982.5 636.6L983 636.6L983.5 636.6L984 636.6L984.5 636.6L985 636.6L985.5 636.6L986 636.6L986.5 636.6L987 636.6L987.5 636.6L988 636.6L988.5 636.6L989 635.1L989.5 631.8L990 632.5L990.5 633.3L991 634.1L991.5 634.8L992 635.4L992.5 635.9L993 636.1L993.5 636.3L994 636.5L994.5 635.2L995 630.2L995.5 629.5L996 630.8L996.5 632L997 633L997.5 634L998 634.9L998.5 635.7L999 636.2L999.5 636.5L1000 636.6L1000.5 636.6L1001 636.6L1001.5 636.6L1002 636.6L1002.5 636.6L1003 636.6L1003.5 636.6L1004 636.6L1004.5 636.6L1005 636.6L1005.5 636.6L1006 636.6L1006.5 634.1L1007 629.4L1007.5 630.3L1008 631.5L1008.5 632.6L1009 633.6L1009.5 634.5L1010 635.3L1010.5 636L1011 636.3L1011.5 636.5L1012 636.6L1012.5 636.6L1013 636.6L1013.5 636.6L1014 636.6L1014.5 636.6L1015 636.6L1015.5 636.6L1016 636.6L1016.5 636.6L1017 636.6L1017.5 636.6L1018 636.6L1018.5 636.6L1019 636.6L1019.5 636.2L1020 631.2L1020.5 629.2L1021 630.5L1021.5 631.7L1022 632.8L1022.5 633.8L1023 634.7L1023.5 635.5L1024 636.2L1024.5 636.4L1025 636.6L1025.5 636.6L1026 636.6L1026.5 636.6L1027 636.6L1027.5 636.6L1028 636L1028.5 628.1L1029 624.3L1029.5 626.3L1030 628.2L1030.5 629.9L1031 631.5L1031.5 633L1032 634.3L1032.5 635.4L1033 636.3L1033.5 636.6L1034 636.6L1034.5 636.6L1035 636.6L1035.5 636.6L1036 636.6L1036.5 636.6L1037 636.6L1037.5 635.8L1038 634.7L1038.5 635L1039 635.3L1039.5 635.5L1040 635.8L1040.5 636.1L1041 636.4L1041.5 636.6L1042 636.6L1042.5 636.6L1043 636.6L1043.5 636.6L1044 636.6L1044.5 636.6L1045 636.6L1045.5 636.6L1046 636.6L1046.5 636.6L1047 636.6L1047.5 636.6L1048 636.6L1048.5 636.6L1049 633.7L1049.5 632.2L1050 633L1050.5 633.8L1051 634.5L1051.5 635.1L1052 635.7L1052.5 636L1053 636.2L1053.5 636.4L1054 629.7L1054.5 623.5L1055 625.6L1055.5 627.6L1056 629.4L1056.5 631L1057 632.6L1057.5 633.9L1058 635.1L1058.5 636L1059 636.6L1059.5 636.6L1060 636.6L1060.5 636.6L1061 636.6L1061.5 636.6L1062 636.6L1062.5 636.6L1063 636.6L1063.5 632.1L1064 629.9L1064.5 631.1L1065 632.2L1065.5 633.2L1066 634.1L1066.5 634.9L1067 635.7L1067.5 636.2L1068 636.4L1068.5 636.6L1069 636.6L1069.5 636.6L1070 636.6L1070.5 636.6L1071 636.6L1071.5 636.6L1072 636.6L1072.5 636.6L1073 636.6L1073.5 636.6L1074 636.6L1074.5 636.6L1075 636.1L1075.5 630.9L1076 628.9L1076.5 630.3L1077 631.5L1077.5 632.6L1078 633.7L1078.5 634.6L1079 635.5L1079.5 636.2L1080 636.4L1080.5 636.6L1081 636.6L1081.5 636.6L1082 636.6L1082.5 636.6L1083 636.6L1083.5 636.6L1084 636.6L1084.5 636.6L1085 636.6L1085.5 636.6L1086 636.6L1086.5 636.6L1087 636.6L1087.5 636.6L1088 634.1L1088.5 629L1089 629.6L1089.5 630.9L1090 632L1090.5 633.1L1091 634.1L1091.5 635L1092 635.8L1092.5 636.3L1093 636.5L1093.5 636.6L1094 636.6L1094.5 636.6L1095 636.6L1095.5 636.6L1096 636.6L1096.5 636.6L1097 630.8L1097.5 621.9L1098 623.7L1098.5 625.9L1099 628L1099.5 629.9L1100 631.6L1100.5 633.2L1101 634.5L1101.5 635.6L1102 636.5L1102.5 636.6L1103 636.6L1103.5 636.6L1104 636.6L1104.5 636.6L1105 636.6L1105.5 636.6L1106 636.4L1106.5 634.6L1107 634.9L1107.5 635.2L1108 635.4L1108.5 635.7L1109 636L1109.5 636.2L1110 636.5L1110.5 636.6L1111 636.6L1111.5 636.6L1112 636.6L1112.5 636.6L1113 636.6L1113.5 636.6L1114 636.6L1114.5 636.4L1115 634.9L1115.5 634.9L1116 635.1L1116.5 635.4L1117 635.7L1117.5 636L1118 636.2L1118.5 636.5L1119 636.6L1119.5 636.6L1120 636.6L1120.5 636.6L1121 636.6L1121.5 636.6L1122 636.6L1122.5 636.6L1123 636.6L1123.5 636.6L1124 636.6L1124.5 636.6L1125 636.6L1125.5 635.6L1126 632.1L1126.5 632L1127 632.8L1127.5 633.7L1128 634.4L1128.5 635.1L1129 635.7L1129.5 636L1130 636.3L1130.5 636.5L1131 636.2L1131.5 631.4L1132 629.5L1132.5 630.8L1133 631.9L1133.5 633L1134 633.9L1134.5 634.8L1135 635.6L1135.5 636.2L1136 636.4L1136.5 636.6L1137 636.6L1137.5 636.6L1138 636.6L1138.5 636.6L1139 636.6L1139.5 636.6L1140 636.6L1140.5 636.6L1141 636.6L1141.5 636.6L1142 636.6L1142.5 636.6L1143 634.7L1143.5 629.4L1144 629.1L1144.5 630.5L1145 631.7L1145.5 632.8L1146 633.9L1146.5 634.8L1147 635.6L1147.5 636.3L1148 636.5L1148.5 636.6L1149 636.6L1149.5 636.6L1150 636.6L1150.5 636.6L1151 636.6L1151.5 636.6L1152 636.6L1152.5 636.6L1153 636.6L1153.5 636.6L1154 636.6L1154.5 636.6L1155 636.6L1155.5 636.6L1156 636.6L1156.5 632.7L1157 629.7L1157.5 630.9L1158 632L1158.5 633L1159 634L1159.5 634.8L1160 635.6L1160.5 636.2L1161 636.4L1161.5 636.6L1162 636.6L1162.5 636.6L1163 636.6L1163.5 636.6L1164 636.6L1164.5 636.6L1165 628.8L1165.5 622.3L1166 624.6L1166.5 626.7L1167 628.7L1167.5 630.5L1168 632.1L1168.5 633.6L1169 634.9L1169.5 635.9L1170 636.6L1170.5 636.6L1171 636.6L1171.5 636.6L1172 636.6L1172.5 636.6L1173 636.6L1173.5 636.6L1174 636L1174.5 634.7L1175 634.9L1175.5 635.2L1176 635.5L1176.5 635.8L1177 636L1177.5 636.3L1178 636.6L1178.5 636.6L1179 636.6L1179.5 636.6L1180 636.6L1180.5 636.6L1181 636.6L1181.5 636.6L1182 636.6L1182.5 636.6L1183 636.6L1183.5 636.6L1184 636.6L1184.5 636.6L1185 636.6L1185.5 634.4L1186 632.1L1186.5 632.9L1187 633.7L1187.5 634.4L1188 635.1L1188.5 635.6L1189 635.9L1189.5 636.1L1190 636.4L1190.5 636.6L1191 636.6L1191.5 636.6L1192 636.6L1192.5 636.6L1192.8 637.6L1192.5 638.6L1192 638.6L1191.5 638.6L1191 638.6L1190.5 638.6L1190 638.9L1189.5 639.7L1189 640.7L1188.5 641.8L1188 643.1L1187.5 644.5L1187 646L1186.5 647.7L1186 649.4L1185.5 644.6L1185 638.6L1184.5 638.6L1184 638.6L1183.5 638.6L1183 638.6L1182.5 638.6L1182 638.6L1181.5 638.6L1181 638.6L1180.5 638.6L1180 638.6L1179.5 638.6L1179 638.6L1178.5 638.6L1178 638.6L1177.5 638.9L1177 639.2L1176.5 639.4L1176 639.7L1175.5 640L1175 640.3L1174.5 640.5L1174 639L1173.5 638.6L1173 638.6L1172.5 638.6L1172 638.6L1171.5 638.6L1171 638.6L1170.5 638.6L1170 638.6L1169.5 638.8L1169 639.1L1168.5 639.3L1168 640L1167.5 640.7L1167 641.5L1166.5 642.4L1166 643.3L1165.5 644.3L1165 641.5L1164.5 638.6L1164 638.6L1163.5 638.6L1163 638.6L1162.5 638.6L1162 638.6L1161.5 638.6L1161 639.6L1160.5 640.9L1160 642.4L1159.5 644.2L1159 646.2L1158.5 648.4L1158 650.9L1157.5 653.5L1157 656.3L1156.5 649.4L1156 638.6L1155.5 638.6L1155 638.6L1154.5 638.6L1154 638.6L1153.5 638.6L1153 638.6L1152.5 638.6L1152 638.6L1151.5 638.6L1151 638.6L1150.5 638.6L1150 638.6L1149.5 638.6L1149 638.6L1148.5 638.6L1148 638.9L1147.5 639.9L1147 641.1L1146.5 642.6L1146 644.2L1145.5 646.1L1145 648.1L1144.5 650.3L1144 652.7L1143.5 652.2L1143 642.8L1142.5 638.6L1142 638.6L1141.5 638.6L1141 638.6L1140.5 638.6L1140 638.6L1139.5 638.6L1139 638.6L1138.5 638.6L1138 638.6L1137.5 638.6L1137 638.6L1136.5 638.6L1136 639.2L1135.5 640.3L1135 641.6L1134.5 643.1L1134 644.8L1133.5 646.8L1133 648.9L1132.5 651.2L1132 653.6L1131.5 649.9L1131 640.3L1130.5 638.7L1130 639.3L1129.5 640.3L1129 641.4L1128.5 642.6L1128 644L1127.5 645.6L1127 647.2L1126.5 649L1126 648.7L1125.5 641.5L1125 638.6L1124.5 638.6L1124 638.6L1123.5 638.6L1123 638.6L1122.5 638.6L1122 638.6L1121.5 638.6L1121 638.6L1120.5 638.6L1120 638.6L1119.5 638.6L1119 638.6L1118.5 638.7L1118 639L1117.5 639.2L1117 639.5L1116.5 639.8L1116 640.1L1115.5 640.3L1115 640.2L1114.5 638.7L1114 638.6L1113.5 638.6L1113 638.6L1112.5 638.6L1112 638.6L1111.5 638.6L1111 638.6L1110.5 638.6L1110 638.7L1109.5 639L1109 639.2L1108.5 639.5L1108 639.8L1107.5 640L1107 640.3L1106.5 640.6L1106 638.9L1105.5 638.6L1105 638.6L1104.5 638.6L1104 638.6L1103.5 638.6L1103 638.6L1102.5 638.6L1102 638.7L1101.5 638.9L1101 639.1L1100.5 639.7L1100 640.4L1099.5 641.2L1099 642.1L1098.5 643.1L1098 644.2L1097.5 645L1097 640.8L1096.5 638.6L1096 638.6L1095.5 638.6L1095 638.6L1094.5 638.6L1094 638.6L1093.5 638.6L1093 638.9L1092.5 640L1092 641.4L1091.5 643L1091 644.8L1090.5 646.8L1090 649.1L1089.5 651.5L1089 654.2L1088.5 655.4L1088 644.8L1087.5 638.6L1087 638.6L1086.5 638.6L1086 638.6L1085.5 638.6L1085 638.6L1084.5 638.6L1084 638.6L1083.5 638.6L1083 638.6L1082.5 638.6L1082 638.6L1081.5 638.6L1081 638.6L1080.5 638.6L1080 639.2L1079.5 640.3L1079 641.7L1078.5 643.3L1078 645L1077.5 647L1077 649.2L1076.5 651.6L1076 654.1L1075.5 650.4L1075 640.5L1074.5 638.6L1074 638.6L1073.5 638.6L1073 638.6L1072.5 638.6L1072 638.6L1071.5 638.6L1071 638.6L1070.5 638.6L1070 638.6L1069.5 638.6L1069 638.6L1068.5 638.6L1068 639.5L1067.5 640.7L1067 642.2L1066.5 644L1066 646L1065.5 648.2L1065 650.6L1064.5 653.2L1064 656L1063.5 650.7L1063 639.8L1062.5 638.6L1062 638.6L1061.5 638.6L1061 638.6L1060.5 638.6L1060 638.6L1059.5 638.6L1059 638.6L1058.5 638.8L1058 639.1L1057.5 639.3L1057 639.8L1056.5 640.5L1056 641.2L1055.5 642L1055 642.8L1054.5 643.7L1054 641L1053.5 638.8L1053 639.7L1052.5 640.7L1052 641.9L1051.5 643.2L1051 644.7L1050.5 646.3L1050 648L1049.5 649.9L1049 646.6L1048.5 639.3L1048 638.6L1047.5 638.6L1047 638.6L1046.5 638.6L1046 638.6L1045.5 638.6L1045 638.6L1044.5 638.6L1044 638.6L1043.5 638.6L1043 638.6L1042.5 638.6L1042 638.6L1041.5 638.6L1041 638.8L1040.5 639.1L1040 639.4L1039.5 639.7L1039 639.9L1038.5 640.2L1038 640.5L1037.5 639.6L1037 638.6L1036.5 638.6L1036 638.6L1035.5 638.6L1035 638.6L1034.5 638.6L1034 638.6L1033.5 638.6L1033 638.8L1032.5 639L1032 639.2L1031.5 639.7L1031 640.3L1030.5 641.1L1030 641.9L1029.5 642.7L1029 643.6L1028.5 641.9L1028 638.6L1027.5 638.6L1027 638.6L1026.5 638.6L1026 638.6L1025.5 638.6L1025 638.6L1024.5 639.3L1024 640.5L1023.5 641.9L1023 643.6L1022.5 645.5L1022 647.6L1021.5 649.9L1021 652.4L1020.5 655.1L1020 651L1019.5 640.6L1019 638.6L1018.5 638.6L1018 638.6L1017.5 638.6L1017 638.6L1016.5 638.6L1016 638.6L1015.5 638.6L1015 638.6L1014.5 638.6L1014 638.6L1013.5 638.6L1013 638.6L1012.5 638.6L1012 638.6L1011.5 638.8L1011 639.9L1010.5 641.2L1010 642.8L1009.5 644.6L1009 646.6L1008.5 648.8L1008 651.2L1007.5 653.7L1007 655.8L1006.5 645.4L1006 638.6L1005.5 638.6L1005 638.6L1004.5 638.6L1004 638.6L1003.5 638.6L1003 638.6L1002.5 638.6L1002 638.6L1001.5 638.6L1001 638.6L1000.5 638.6L1000 638.6L999.5 639.1L999 640.3L998.5 641.7L998 643.4L997.5 645.3L997 647.4L996.5 649.7L996 652.3L995.5 655L995 653.5L994.5 642.8L994 638.7L993.5 639.2L993 640.1L992.5 641.1L992 642.4L991.5 643.7L991 645.2L990.5 646.9L990 648.6L989.5 650.1L989 643L988.5 638.6L988 638.6L987.5 638.6L987 638.6L986.5 638.6L986 638.6L985.5 638.6L985 638.6L984.5 638.6L984 638.6L983.5 638.6L983 638.6L982.5 638.6L982 638.6L981.5 638.9L981 639.2L980.5 639.5L980 639.7L979.5 640L979 640.3L978.5 640.6L978 639.1L977.5 638.6L977 638.6L976.5 638.6L976 638.6L975.5 638.6L975 638.6L974.5 638.6L974 638.6L973.5 638.6L973 638.9L972.5 639.2L972 639.4L971.5 639.7L971 640L970.5 640.3L970 640.5L969.5 638.9L969 638.6L968.5 638.6L968 638.6L967.5 638.6L967 638.6L966.5 638.6L966 638.6L965.5 638.6L965 638.9L964.5 639.1L964 639.3L963.5 640L963 640.7L962.5 641.5L962 642.3L961.5 643.2L961 644.2L960.5 641.2L960 638.6L959.5 638.6L959 638.6L958.5 638.6L958 638.6L957.5 638.6L957 638.6L956.5 638.7L956 639.6L955.5 640.9L955 642.3L954.5 644L954 645.9L953.5 647.9L953 650.2L952.5 652.6L952 655.2L951.5 646.4L951 638.6L950.5 638.6L950 638.6L949.5 638.6L949 638.6L948.5 638.6L948 638.6L947.5 638.6L947 638.6L946.5 638.6L946 638.6L945.5 638.6L945 638.6L944.5 638.6L944 638.6L943.5 639L943 640.1L942.5 641.4L942 642.9L941.5 644.7L941 646.6L940.5 648.7L940 651L939.5 653.5L939 652.4L938.5 642.5L938 638.6L937.5 638.7L937 638.9L936.5 639.2L936 639.4L935.5 639.7L935 639.9L934.5 640.2L934 640.4L933.5 640.7L933 640.9L932.5 641.2L932 641.4L931.5 641.7L931 641.9L930.5 642.2L930 642.4L929.5 642.7L929 642.9L928.5 643.2L928 643.4L927.5 643.7L927 643.9L926.5 638.6L926 638.6L925.5 638.6L925 638.6L924.5 638.6L924 638.6L923.5 638.6L923 638.6L922.5 638.6L922 638.8L921.5 639L921 639.4L920.5 640.1L920 640.8L919.5 641.7L919 642.6L918.5 643.6L918 644.7L917.5 642.5L917 638.8L916.5 639.3L916 640.2L915.5 641.3L915 642.5L914.5 643.8L914 645.2L913.5 646.8L913 648.5L912.5 647.1L912 640.5L911.5 638.6L911 638.6L910.5 638.6L910 638.6L909.5 638.6L909 638.6L908.5 638.6L908 638.6L907.5 638.6L907 638.6L906.5 638.6L906 638.6L905.5 638.6L905 638.6L904.5 638.8L904 639.1L903.5 639.3L903 639.6L902.5 639.9L902 640.1L901.5 640.4L901 639.7L900.5 638.6L900 638.6L899.5 638.6L899 638.6L898.5 638.6L898 638.6L897.5 638.6L897 638.6L896.5 638.8L896 639L895.5 639.2L895 639.8L894.5 640.6L894 641.4L893.5 642.2L893 643.2L892.5 644.2L892 643.3L891.5 639.2L891 638.6L890.5 638.6L890 638.6L889.5 638.6L889 638.6L888.5 638.6L888 639.1L887.5 640.3L887 641.7L886.5 643.4L886 645.3L885.5 647.4L885 649.8L884.5 652.3L884 655L883.5 653.6L883 642.8L882.5 638.6L882 638.6L881.5 638.6L881 638.6L880.5 638.6L880 638.6L879.5 638.6L879 638.6L878.5 638.6L878 638.6L877.5 638.6L877 638.6L876.5 638.6L876 638.6L875.5 638.6L875 638.7L874.5 639.8L874 641.1L873.5 642.7L873 644.6L872.5 646.7L872 649L871.5 651.5L871 654.2L870.5 657.1L870 648.1L869.5 638.6L869 638.6L868.5 638.6L868 638.6L867.5 638.6L867 638.6L866.5 638.6L866 638.6L865.5 638.6L865 638.6L864.5 638.6L864 638.6L863.5 638.6L863 638.8L862.5 639.8L862 641L861.5 642.4L861 644.1L860.5 645.9L860 647.9L859.5 650.1L859 652.5L858.5 653.6L858 644.1L857.5 638.6L857 638.9L856.5 639.7L856 640.7L855.5 641.8L855 643.1L854.5 644.5L854 646L853.5 647.7L853 649.4L852.5 644L852 638.6L851.5 638.6L851 638.6L850.5 638.6L850 638.6L849.5 638.6L849 638.6L848.5 638.6L848 638.6L847.5 638.6L847 638.6L846.5 638.6L846 638.6L845.5 638.6L845 638.9L844.5 639.1L844 639.4L843.5 639.7L843 640L842.5 640.2L842 640.5L841.5 639.1L841 638.6L840.5 638.6L840 638.6L839.5 638.6L839 638.6L838.5 638.6L838 638.6L837.5 638.6L837 638.6L836.5 638.8L836 639.1L835.5 639.4L835 639.7L834.5 639.9L834 640.2L833.5 640.5L833 639.3L832.5 638.6L832 638.6L831.5 638.6L831 638.6L830.5 638.6L830 638.6L829.5 638.6L829 638.6L828.5 638.8L828 639L827.5 639.3L827 639.9L826.5 640.6L826 641.4L825.5 642.3L825 643.2L824.5 644.2L824 642.1L823.5 638.6L823 638.6L822.5 638.6L822 638.6L821.5 638.6L821 638.6L820.5 638.6L820 638.6L819.5 639.6L819 641L818.5 642.5L818 644.4L817.5 646.4L817 648.7L816.5 651.2L816 653.9L815.5 656.8L815 649.7L814.5 638.6L814 638.6L813.5 638.6L813 638.6L812.5 638.6L812 638.6L811.5 638.6L811 638.6L810.5 638.6L810 638.6L809.5 638.6L809 638.6L808.5 638.6L808 638.6L807.5 638.6L807 638.9L806.5 640.1L806 641.5L805.5 643.1L805 645L804.5 647.1L804 649.4L803.5 651.9L803 654.6L802.5 656.1L802 645.2L801.5 638.6L801 638.6L800.5 638.6L800 638.6L799.5 638.6L799 638.6L798.5 638.6L798 638.6L797.5 638.6L797 638.6L796.5 638.6L796 638.6L795.5 638.6L795 638.9L794.5 639.9L794 641.2L793.5 642.7L793 644.5L792.5 646.4L792 648.5L791.5 650.8L791 653.3L790.5 653.4L790 643.5L789.5 638.6L789 638.6L788.5 638.6L788 638.6L787.5 638.6L787 638.6L786.5 638.6L786 638.6L785.5 638.8L785 639L784.5 639.2L784 639.6L783.5 640.2L783 640.9L782.5 641.7L782 642.5L781.5 643.4L781 642.5L780.5 638.9L780 639.2L779.5 640.1L779 641.2L778.5 642.3L778 643.7L777.5 645.1L777 646.7L776.5 648.5L776 648.8L775.5 641.9L775 638.6L774.5 638.6L774 638.6L773.5 638.6L773 638.6L772.5 638.6L772 638.6L771.5 638.6L771 638.6L770.5 638.6L770 638.6L769.5 638.6L769 638.6L768.5 638.6L768 638.7L767.5 639L767 639.3L766.5 639.5L766 639.8L765.5 640.1L765 640.4L764.5 640.1L764 638.6L763.5 638.6L763 638.6L762.5 638.6L762 638.6L761.5 638.6L761 638.6L760.5 638.6L760 638.7L759.5 638.9L759 639.1L758.5 639.7L758 640.4L757.5 641.2L757 642.1L756.5 643L756 644L755.5 644.1L755 640.1L754.5 638.6L754 638.6L753.5 638.6L753 638.6L752.5 638.6L752 638.6L751.5 638.7L751 639.7L750.5 640.9L750 642.2L749.5 643.8L749 645.6L748.5 647.5L748 649.6L747.5 651.9L747 653L746.5 643.8L746 638.6L745.5 638.6L745 638.6L744.5 638.6L744 638.6L743.5 638.6L743 638.6L742.5 638.6L742 638.6L741.5 638.6L741 638.6L740.5 638.6L740 638.6L739.5 638.6L739 638.6L738.5 638.6L738 639.3L737.5 640.4L737 641.8L736.5 643.3L736 645.1L735.5 647L735 649.1L734.5 651.4L734 653.9L733.5 648.6L733 639L732.5 638.6L732 638.6L731.5 638.6L731 638.6L730.5 638.6L730 638.6L729.5 638.6L729 638.6L728.5 638.6L728 638.6L727.5 638.6L727 638.6L726.5 638.7L726 639.5L725.5 640.6L725 642L724.5 643.5L724 645.3L723.5 647.2L723 649.3L722.5 651.5L722 654L721.5 645.7L721 638.6L720.5 638.8L720 639.6L719.5 640.6L719 641.7L718.5 643L718 644.4L717.5 646L717 647.6L716.5 649.4L716 645.6L715.5 638.7L715 638.6L714.5 638.6L714 638.6L713.5 638.6L713 638.6L712.5 638.6L712 638.6L711.5 638.6L711 638.6L710.5 638.6L710 638.6L709.5 638.6L709 638.6L708.5 638.8L708 639.1L707.5 639.4L707 639.6L706.5 639.9L706 640.2L705.5 640.5L705 639.4L704.5 638.6L704 638.6L703.5 638.6L703 638.6L702.5 638.6L702 638.6L701.5 638.6L701 638.6L700.5 638.6L700 638.8L699.5 639.1L699 639.3L698.5 639.6L698 639.9L697.5 640.2L697 640.4L696.5 639.6L696 638.6L695.5 638.6L695 638.6L694.5 638.6L694 638.6L693.5 638.6L693 638.6L692.5 638.6L692 638.8L691.5 639L691 639.3L690.5 639.9L690 640.6L689.5 641.5L689 642.4L688.5 643.3L688 644.4L687.5 643.2L687 639.1L686.5 638.6L686 638.6L685.5 638.6L685 638.6L684.5 638.6L684 638.6L683.5 638.6L683 639.2L682.5 640.4L682 641.8L681.5 643.4L681 645.2L680.5 647.3L680 649.5L679.5 651.9L679 654.5L678.5 650.6L678 640.5L677.5 638.6L677 638.6L676.5 638.6L676 638.6L675.5 638.6L675 638.6L674.5 638.6L674 638.6L673.5 638.6L673 638.6L672.5 638.6L672 638.6L671.5 638.6L671 638.6L670.5 638.7L670 639.8L669.5 641.1L669 642.6L668.5 644.4L668 646.4L667.5 648.6L667 651L666.5 653.6L666 656.4L665.5 647.1L665 638.6L664.5 638.6L664 638.8L663.5 639.1L663 639.3L662.5 639.6L662 639.8L661.5 640.1L661 640.3L660.5 640.6L660 640.8L659.5 641.1L659 641.3L658.5 641.6L658 641.8L657.5 642.1L657 642.3L656.5 642.6L656 642.8L655.5 643.1L655 643.3L654.5 643.6L654 643.8Z" fill="#fcebbd"/><path d="M660.2 677.4 L664.0 673.6 L667.8 677.4 M660.2 681.6 L664.0 685.4 L667.8 681.6" fill="none" stroke="#c9f5d0" stroke-width="1.4" stroke-linejoin="round" stroke-linecap="round"/><path d="M653.5 699.8 H685.6" stroke="#8fdc9c" stroke-width="1.9"/><path d="M693.0 702.2 H719.0" stroke="#8fdc9c" stroke-width="1.9"/><path d="M722.0 701.8 H757.0" stroke="#8fdc9c" stroke-width="1.9"/><path d="M801.0 708.8 H831.6" stroke="#8fdc9c" stroke-width="1.9"/><path d="M862.0 708.8 H895.4" stroke="#8fdc9c" stroke-width="1.9"/><path d="M653.5 716.4 H720.6" stroke="#8fdc9c" stroke-width="1.9"/><path d="M720.6 718.8 H852.9" stroke="#8fdc9c" stroke-width="1.9"/><path d="M653.5 726.4 H715.3" stroke="#8fdc9c" stroke-width="1.9"/><path d="M719.8 729 H785.2" stroke="#8fdc9c" stroke-width="1.9"/><path d="M788.2 726.4 H929.6" stroke="#8fdc9c" stroke-width="1.9"/><path d="M653.5 733.2 H708.4" stroke="#8fdc9c" stroke-width="1.9"/><path d="M859.0 733.2 H929.6" stroke="#8fdc9c" stroke-width="1.9"/><path d="M788.2 737.8 H850.6" stroke="#8fdc9c" stroke-width="1.9"/><path d="M685.6 699.8 L688 701 L690 699.6 L692.5 703.6 L696 704" fill="none" stroke="#8fdc9c" stroke-width="1.9"/><path d="M757 702 L759.5 703.4 M762 702 L765 702 M767 703.4 L770 702.4 L772 703.6 M774.5 702.6 L778 703 M780 702 L783 702.8 L786 701.6 L790 699 L795 698.8 L799 701 L802.7 705" fill="none" stroke="#8fdc9c" stroke-width="1.9"/><path d="M831.6 717 L834 714.6 M836 713 L838.5 713 M840 710.6 L843 710.6 M845 708.8 L852 708.8 M853 716 L855 713.2 M857 712.6 L862 712.6 M857 708.8 L859.5 708.8" fill="none" stroke="#8fdc9c" stroke-width="1.9"/><path d="M895.4 708.8 L897 706.4 L899.5 706.4 L900.5 703.8 L902 702.6 L903.5 700.4 L908 699.6 L911 698.2 L914 699.6 L918 698.2 L922.8 700" fill="none" stroke="#8fdc9c" stroke-width="1.9"/><path d="M99.5 223.0 H103.0 L110.2 217.6 V232.6 L103.0 228.0 H99.5 Z" fill="#f2f2f2"/><path d="M98.2 234.0 L115.4 218.2" stroke="#4d4d4d" stroke-width="5.4"/><path d="M100.0 232.6 L114.6 218.4" stroke="#f2f2f2" stroke-width="1.5" stroke-linecap="round"/><path d="M99.4 229.6 L110.0 219.2" stroke="#f2f2f2" stroke-width="1.3" stroke-linecap="round"/><path d="M128.8 228.6 V224.6 A7.2 7.2 0 0 1 143.2 224.6 V228.6" fill="none" stroke="#f2f2f2" stroke-width="1.35"/><rect x="128.4" y="227.5" width="4" height="4.7" rx="1.3" fill="#f2f2f2"/><rect x="139.6" y="227.5" width="4" height="4.7" rx="1.3" fill="#f2f2f2"/><rect x="168.0" y="225.4" width="11.4" height="7.8" rx="1" fill="#f2f2f2"/><path d="M170.4 225.4 V221.8 A3.6 3.6 0 0 1 177.6 221.8 V222.7" fill="none" stroke="#f2f2f2" stroke-width="1.6" stroke-linecap="round"/><circle cx="173.7" cy="229.3" r="1.3" fill="#4d4d4d"/><rect x="233" y="217.2" width="60" height="16.8" rx="8.4" fill="#3a3e3a"/><circle cx="273" cy="225.6" r="12.6" fill="#8e908e" stroke="#b4b4b4" stroke-width="1.2" fill-opacity="0.97"/><path d="M316.1 225.2 A17.6 17.6 0 1 1 339.7 225.2" fill="none" stroke="#3a3c3a" stroke-width="3.6"/><circle cx="327.9" cy="212.1" r="15.2" fill="#8c8c8c"/><path d="M327.9 192.7 V210.1" stroke="#3c3e3c" stroke-width="1.6"/><path d="M327.9 192.5 V197.7" stroke="#4fd24f" stroke-width="1.6"/><path d="M99.5 305.6 H103.0 L110.2 300.2 V315.2 L103.0 310.6 H99.5 Z" fill="#f2f2f2"/><path d="M98.2 316.6 L115.4 300.8" stroke="#4d4d4d" stroke-width="5.4"/><path d="M100.0 315.2 L114.6 301.0" stroke="#f2f2f2" stroke-width="1.5" stroke-linecap="round"/><path d="M99.4 312.2 L110.0 301.8" stroke="#f2f2f2" stroke-width="1.3" stroke-linecap="round"/><path d="M128.8 311.2 V307.2 A7.2 7.2 0 0 1 143.2 307.2 V311.2" fill="none" stroke="#f2f2f2" stroke-width="1.35"/><rect x="128.4" y="310.1" width="4" height="4.7" rx="1.3" fill="#f2f2f2"/><rect x="139.6" y="310.1" width="4" height="4.7" rx="1.3" fill="#f2f2f2"/><rect x="168.0" y="308.0" width="11.4" height="7.8" rx="1" fill="#f2f2f2"/><path d="M170.4 308.0 V304.4 A3.6 3.6 0 0 1 177.6 304.4 V305.3" fill="none" stroke="#f2f2f2" stroke-width="1.6" stroke-linecap="round"/><circle cx="173.7" cy="311.9" r="1.3" fill="#4d4d4d"/><circle cx="203" cy="303.4" r="3.2" fill="#f2f2f2"/><path d="M197.2 307.8 A7.2 7.2 0 0 0 208.8 307.8" fill="none" stroke="#f2f2f2" stroke-width="1.6" stroke-linecap="round"/><path d="M193.8 310.0 A11 11 0 0 0 212.2 310.0" fill="none" stroke="#f2f2f2" stroke-width="1.6" stroke-linecap="round"/><rect x="233" y="299.8" width="60" height="16.8" rx="8.4" fill="#3a3e3a"/><circle cx="267.2" cy="308.2" r="12.6" fill="#8e908e" stroke="#b4b4b4" stroke-width="1.2" fill-opacity="0.97"/><path d="M316.1 307.7 A17.6 17.6 0 1 1 339.7 307.7" fill="none" stroke="#3a3c3a" stroke-width="3.6"/><circle cx="327.9" cy="294.7" r="15.2" fill="#8c8c8c"/><path d="M327.9 275.3 V292.7" stroke="#3c3e3c" stroke-width="1.6"/><path d="M327.9 275.1 V280.3" stroke="#4fd24f" stroke-width="1.6"/><path d="M99.5 388.1 H103.0 L110.2 382.7 V397.7 L103.0 393.1 H99.5 Z" fill="#f2f2f2"/><path d="M98.2 399.1 L115.4 383.3" stroke="#4d4d4d" stroke-width="5.4"/><path d="M100.0 397.7 L114.6 383.5" stroke="#f2f2f2" stroke-width="1.5" stroke-linecap="round"/><path d="M99.4 394.7 L110.0 384.3" stroke="#f2f2f2" stroke-width="1.3" stroke-linecap="round"/><path d="M128.8 393.7 V389.7 A7.2 7.2 0 0 1 143.2 389.7 V393.7" fill="none" stroke="#f2f2f2" stroke-width="1.35"/><rect x="128.4" y="392.6" width="4" height="4.7" rx="1.3" fill="#f2f2f2"/><rect x="139.6" y="392.6" width="4" height="4.7" rx="1.3" fill="#f2f2f2"/><rect x="168.0" y="390.5" width="11.4" height="7.8" rx="1" fill="#f2f2f2"/><path d="M170.4 390.5 V386.9 A3.6 3.6 0 0 1 177.6 386.9 V387.8" fill="none" stroke="#f2f2f2" stroke-width="1.6" stroke-linecap="round"/><circle cx="173.7" cy="394.4" r="1.3" fill="#4d4d4d"/><rect x="233" y="382.3" width="60" height="16.8" rx="8.4" fill="#3a3e3a"/><circle cx="273" cy="390.7" r="12.6" fill="#8e908e" stroke="#b4b4b4" stroke-width="1.2" fill-opacity="0.97"/><path d="M316.1 390.3 A17.6 17.6 0 1 1 339.7 390.3" fill="none" stroke="#3a3c3a" stroke-width="3.6"/><circle cx="327.9" cy="377.2" r="15.2" fill="#8c8c8c"/><path d="M327.9 357.8 V375.2" stroke="#3c3e3c" stroke-width="1.6"/><path d="M327.9 357.6 V362.8" stroke="#4fd24f" stroke-width="1.6"/><path d="M99.5 470.6 H103.0 L110.2 465.2 V480.2 L103.0 475.6 H99.5 Z" fill="#f2f2f2"/><path d="M98.2 481.6 L115.4 465.9" stroke="#4d4d4d" stroke-width="5.4"/><path d="M100.0 480.2 L114.6 466.1" stroke="#f2f2f2" stroke-width="1.5" stroke-linecap="round"/><path d="M99.4 477.2 L110.0 466.9" stroke="#f2f2f2" stroke-width="1.3" stroke-linecap="round"/><path d="M128.8 476.2 V472.2 A7.2 7.2 0 0 1 143.2 472.2 V476.2" fill="none" stroke="#f2f2f2" stroke-width="1.35"/><rect x="128.4" y="475.1" width="4" height="4.7" rx="1.3" fill="#f2f2f2"/><rect x="139.6" y="475.1" width="4" height="4.7" rx="1.3" fill="#f2f2f2"/><rect x="168.0" y="473.1" width="11.4" height="7.8" rx="1" fill="#f2f2f2"/><path d="M170.4 473.1 V469.4 A3.6 3.6 0 0 1 177.6 469.4 V470.4" fill="none" stroke="#f2f2f2" stroke-width="1.6" stroke-linecap="round"/><circle cx="173.7" cy="476.9" r="1.3" fill="#4d4d4d"/><circle cx="203" cy="468.4" r="3.2" fill="#f2f2f2"/><path d="M197.2 472.9 A7.2 7.2 0 0 0 208.8 472.9" fill="none" stroke="#f2f2f2" stroke-width="1.6" stroke-linecap="round"/><path d="M193.8 475.1 A11 11 0 0 0 212.2 475.1" fill="none" stroke="#f2f2f2" stroke-width="1.6" stroke-linecap="round"/><rect x="233" y="464.8" width="60" height="16.8" rx="8.4" fill="#3a3e3a"/><rect x="236" y="467.4" width="20" height="4.6" rx="1" fill="#5ed35c"/><rect x="236" y="474.2" width="20" height="4.6" rx="1" fill="#5ed35c"/><circle cx="267.2" cy="473.2" r="12.6" fill="#9b9f9b" stroke="#cdcdcd" stroke-width="1.2" fill-opacity="0.97"/><path d="M260.8 468.4 V471.8 M260.8 474.8 V478.2" stroke="#a9d9a6" stroke-width="1.6"/><path d="M316.1 472.8 A17.6 17.6 0 1 1 339.7 472.8" fill="none" stroke="#3a3c3a" stroke-width="3.6"/><circle cx="327.9" cy="459.8" r="15.2" fill="#c6c6c6"/><path d="M327.9 440.4 V457.8" stroke="#3c3e3c" stroke-width="1.6"/><path d="M327.9 440.1 V445.4" stroke="#4fd24f" stroke-width="1.6"/><path d="M99.5 553.2 H103.0 L110.2 547.8 V562.8 L103.0 558.2 H99.5 Z" fill="#f2f2f2"/><path d="M98.2 564.2 L115.4 548.4" stroke="#4d4d4d" stroke-width="5.4"/><path d="M100.0 562.8 L114.6 548.6" stroke="#f2f2f2" stroke-width="1.5" stroke-linecap="round"/><path d="M99.4 559.8 L110.0 549.4" stroke="#f2f2f2" stroke-width="1.3" stroke-linecap="round"/><path d="M128.8 558.8 V554.8 A7.2 7.2 0 0 1 143.2 554.8 V558.8" fill="none" stroke="#f2f2f2" stroke-width="1.35"/><rect x="128.4" y="557.7" width="4" height="4.7" rx="1.3" fill="#f2f2f2"/><rect x="139.6" y="557.7" width="4" height="4.7" rx="1.3" fill="#f2f2f2"/><rect x="168.0" y="555.6" width="11.4" height="7.8" rx="1" fill="#f2f2f2"/><path d="M170.4 555.6 V552.0 A3.6 3.6 0 0 1 177.6 552.0 V552.9" fill="none" stroke="#f2f2f2" stroke-width="1.6" stroke-linecap="round"/><circle cx="173.7" cy="559.5" r="1.3" fill="#4d4d4d"/><circle cx="203" cy="551.0" r="3.2" fill="#f2f2f2"/><path d="M197.2 555.4 A7.2 7.2 0 0 0 208.8 555.4" fill="none" stroke="#f2f2f2" stroke-width="1.6" stroke-linecap="round"/><path d="M193.8 557.6 A11 11 0 0 0 212.2 557.6" fill="none" stroke="#f2f2f2" stroke-width="1.6" stroke-linecap="round"/><rect x="233" y="547.4" width="60" height="16.8" rx="8.4" fill="#3a3e3a"/><circle cx="267.2" cy="555.8" r="12.6" fill="#8e908e" stroke="#b4b4b4" stroke-width="1.2" fill-opacity="0.97"/><path d="M316.1 555.4 A17.6 17.6 0 1 1 339.7 555.4" fill="none" stroke="#3a3c3a" stroke-width="3.6"/><circle cx="327.9" cy="542.3" r="15.2" fill="#8c8c8c"/><path d="M327.9 522.9 V540.3" stroke="#3c3e3c" stroke-width="1.6"/><path d="M327.9 522.7 V527.9" stroke="#4fd24f" stroke-width="1.6"/><path d="M99.5 635.8 H103.0 L110.2 630.4 V645.4 L103.0 640.8 H99.5 Z" fill="#f2f2f2"/><path d="M98.2 646.8 L115.4 631.0" stroke="#4d4d4d" stroke-width="5.4"/><path d="M100.0 645.4 L114.6 631.1" stroke="#f2f2f2" stroke-width="1.5" stroke-linecap="round"/><path d="M99.4 642.4 L110.0 632.0" stroke="#f2f2f2" stroke-width="1.3" stroke-linecap="round"/><path d="M128.8 641.4 V637.4 A7.2 7.2 0 0 1 143.2 637.4 V641.4" fill="none" stroke="#f2f2f2" stroke-width="1.35"/><rect x="128.4" y="640.2" width="4" height="4.7" rx="1.3" fill="#f2f2f2"/><rect x="139.6" y="640.2" width="4" height="4.7" rx="1.3" fill="#f2f2f2"/><rect x="168.0" y="638.1" width="11.4" height="7.8" rx="1" fill="#f2f2f2"/><path d="M170.4 638.1 V634.6 A3.6 3.6 0 0 1 177.6 634.6 V635.5" fill="none" stroke="#f2f2f2" stroke-width="1.6" stroke-linecap="round"/><circle cx="173.7" cy="642.1" r="1.3" fill="#4d4d4d"/><rect x="233" y="629.9" width="60" height="16.8" rx="8.4" fill="#3a3e3a"/><circle cx="267.2" cy="638.3" r="12.6" fill="#8e908e" stroke="#b4b4b4" stroke-width="1.2" fill-opacity="0.97"/><path d="M316.1 637.9 A17.6 17.6 0 1 1 339.7 637.9" fill="none" stroke="#3a3c3a" stroke-width="3.6"/><circle cx="327.9" cy="624.8" r="15.2" fill="#8c8c8c"/><path d="M327.9 605.4 V622.8" stroke="#3c3e3c" stroke-width="1.6"/><path d="M327.9 605.2 V610.4" stroke="#4fd24f" stroke-width="1.6"/><path d="M99.5 718.3 H103.0 L110.2 712.9 V727.9 L103.0 723.3 H99.5 Z" fill="#f2f2f2"/><path d="M98.2 729.3 L115.4 713.5" stroke="#4d4d4d" stroke-width="5.4"/><path d="M100.0 727.9 L114.6 713.7" stroke="#f2f2f2" stroke-width="1.5" stroke-linecap="round"/><path d="M99.4 724.9 L110.0 714.5" stroke="#f2f2f2" stroke-width="1.3" stroke-linecap="round"/><path d="M128.8 723.9 V719.9 A7.2 7.2 0 0 1 143.2 719.9 V723.9" fill="none" stroke="#f2f2f2" stroke-width="1.35"/><rect x="128.4" y="722.8" width="4" height="4.7" rx="1.3" fill="#f2f2f2"/><rect x="139.6" y="722.8" width="4" height="4.7" rx="1.3" fill="#f2f2f2"/><rect x="168.0" y="720.7" width="11.4" height="7.8" rx="1" fill="#f2f2f2"/><path d="M170.4 720.7 V717.1 A3.6 3.6 0 0 1 177.6 717.1 V718.0" fill="none" stroke="#f2f2f2" stroke-width="1.6" stroke-linecap="round"/><circle cx="173.7" cy="724.6" r="1.3" fill="#4d4d4d"/><rect x="233" y="712.5" width="60" height="16.8" rx="8.4" fill="#3a3e3a"/><circle cx="267.2" cy="720.9" r="12.6" fill="#8e908e" stroke="#b4b4b4" stroke-width="1.2" fill-opacity="0.97"/><path d="M316.1 720.5 A17.6 17.6 0 1 1 339.7 720.5" fill="none" stroke="#3a3c3a" stroke-width="3.6"/><circle cx="327.9" cy="707.4" r="15.2" fill="#8c8c8c"/><path d="M327.9 688.0 V705.4" stroke="#3c3e3c" stroke-width="1.6"/><path d="M327.9 687.8 V693.0" stroke="#4fd24f" stroke-width="1.6"/></svg>
<div class="a" style="left:833.4px;top:42.2px;width:2.2px;height:660.0px;background:#e9e9e9;"></div>
<svg class="a" style="left:-22.6px;top:-117.8px;" width="1400.0" height="200.0" viewBox="0 0 1400.0 200.0"><path d="M849.6 144.4 H864.6 Q866 144.4 866 145.8 V152.6 L857.1 161.6 L848.2 152.6 V145.8 Q848.2 144.4 849.6 144.4 Z" fill="#cbcbcb"/><path d="M857.1 148 V170" stroke="#f4f4f4" stroke-width="2.2"/></svg>
</div>
<!-- editor -->
<div class="a" style="left:20.6px;top:829.6px;width:1377.6px;height:351.4px;background:#141a1e;border-radius:4.5px;"></div>
<div class="a" style="left:21.8px;top:830.8px;width:1375.2px;height:349px;border-radius:3.5px;overflow:hidden;background:#5f5f5f;">
<div class="a" style="left:0.0px;top:0.0px;width:1376.0px;height:40.6px;background:#4a4a4a;"></div>
<div class="a" style="left:0.0px;top:40.4px;width:1376.0px;height:1.2px;background:#262626;"></div>
<div class="a" style="left:12.8px;top:6.2px;width:46.0px;height:29.8px;background:#343434;border-radius:5px;box-shadow:0 0 0 1px #2a2a2a;"></div>
<div class="a" style="left:71.2px;top:6.2px;width:46.2px;height:29.8px;background:#3572b4;border-radius:5px;box-shadow:0 0 0 1px #2a5c96;"></div>
<div class="a" style="left:1265.2px;top:6.2px;width:97.6px;height:29.6px;background:#3b3b3b;border-radius:4px;box-shadow:0 0 0 1px #2c2c2c;"></div>
<div class="a" style="left:0.0px;top:41.6px;width:463.2px;height:62.6px;background:#5b5b5b;"></div>
<div class="a" style="left:0.0px;top:104.2px;width:463.2px;height:1.2px;background:#2a2a2a;"></div>
<svg class="a" style="left:9.6px;top:55.2px;" width="44.0" height="40.0" viewBox="0 0 44.0 40.0"><g transform="scale(0.96 1.0)"><path d="M16.6 23.4 L41.4 0.6" stroke="#c9a257" stroke-width="3" stroke-linecap="round"/><path d="M17.4 22.2 L41 0.4" stroke="#dcbb78" stroke-width="1.1"/><ellipse cx="43.6" cy="-1.6" rx="4" ry="2" transform="rotate(-42 43.6 -1.6)" fill="#e2c07c"/><path d="M16.4 14.2 C18.6 13.8 19.6 15.6 18.2 17.4 C17.2 19 17.4 21.6 18.6 23 C20.4 24.6 22.6 23.4 23.8 24.8 C24.2 26.4 20.6 28.4 18.6 31 C16.6 34 15.6 38.4 11.2 40 C6.6 41.4 1.6 38 0.6 33 C-0.2 28.6 3 25.6 7.6 23.6 C11.6 21.8 12.4 18.4 13.6 16.2 C14.2 15 15.2 14.4 16.4 14.2 Z" fill="#1d120d"/><path d="M4 27.6 C1.6 30 1.8 34.6 4.6 37 C7.4 39.4 11 38.8 12.6 36.4 C10.4 35 6.4 31.6 4 27.6 Z" fill="#7c2f18"/><path d="M5 27 C7 25.4 9.4 24.6 11 23 L13 25 L6.6 30.4 Z" fill="#3a2016"/><path d="M14.4 20.8 C15.6 22.6 17 24.6 19 25.4 C20.4 26 21.6 25.6 22.4 26 C20.4 27.6 18.2 29.2 16.8 31.6 C15.8 33.6 14.8 36.4 12.8 37.2 C12 34.4 9.4 31.8 7.2 30 C9.2 27.4 12 24.6 14.4 20.8 Z" fill="#e9e7df"/><path d="M11.6 27.4 L14.4 30 M13.4 25.6 L16.2 28.2" stroke="#b9c4bc" stroke-width="0.9"/></g></svg>
<span class="t" style="left:179.0px;top:55.0px;font-size:18px;color:#f4f4f4;letter-spacing:0.70px;">Strat Disco Guitar</span>
<span class="t" style="left:175.0px;top:77.0px;font-size:15.6px;color:#c2c2c2;letter-spacing:0.36px;">All 2 Regions selected</span>
<div class="a" style="left:0.0px;top:105.4px;width:203.4px;height:40.4px;background:#494949;"></div>
<div class="a" style="left:203.4px;top:105.4px;width:205.2px;height:40.4px;background:#30609a;"></div>
<div class="a" style="left:202.8px;top:105.4px;width:1.2px;height:40.4px;background:#2a2a2a;"></div>
<div class="a" style="left:0.0px;top:145.8px;width:408.6px;height:1.2px;background:#2e2e2e;"></div>
<span class="t" style="left:78.0px;top:114.9px;font-size:18.6px;color:#ececec;letter-spacing:0.17px;">Track</span>
<span class="t" style="left:276.9px;top:114.9px;font-size:18.6px;color:#f2f2f2;letter-spacing:-0.09px;">Region</span>
<div class="a" style="left:0.0px;top:147.0px;width:408.6px;height:202.0px;background:#5f5f5f;"></div>
<div class="a" style="left:18.2px;top:218.4px;width:372.8px;height:32.2px;background:#454545;"></div>
<span class="t" style="left:122.2px;top:226.8px;font-size:18px;color:#f2f2f2;letter-spacing:0.42px;">Strat Disco Guitar.1</span>
<div class="a" style="left:18.2px;top:259.2px;width:19.4px;height:19.0px;background:#4f4f4f;border-radius:4.5px;box-shadow:inset 0 0 0 1px #474747;"></div>
<span class="t" style="left:47.1px;top:260.4px;font-size:18px;color:#f0f0f0;letter-spacing:0.33px;">Reverse Playback</span>
<div class="a" style="left:408.6px;top:105.4px;width:54.6px;height:244.0px;background:#5c5c5c;"></div>
<div class="a" style="left:408.2px;top:105.4px;width:1.0px;height:244.0px;background:#4c4c4c;"></div>
<span class="t" style="left:419.2px;top:116.5px;font-size:15.7px;color:#a6a6a6;">100</span>
<span class="t" style="left:436.7px;top:163.3px;font-size:15.7px;color:#a6a6a6;">0</span>
<span class="t" style="left:414.0px;top:210.3px;font-size:15.7px;color:#a6a6a6;">-100</span>
<span class="t" style="left:419.2px;top:234.1px;font-size:15.7px;color:#a6a6a6;">100</span>
<span class="t" style="left:436.7px;top:281.1px;font-size:15.7px;color:#a6a6a6;">0</span>
<span class="t" style="left:414.0px;top:327.9px;font-size:15.7px;color:#a6a6a6;">-100</span>
<div class="a" style="left:462.8px;top:41.6px;width:1.7px;height:308.0px;background:#151515;"></div>
<div class="a" style="left:464.4px;top:41.6px;width:912.0px;height:32.2px;background:#333333;"></div>
<div class="a" style="left:464.4px;top:73.6px;width:912.0px;height:1.2px;background:#141414;"></div>
<div class="a" style="left:464.4px;top:74.8px;width:912.0px;height:29.4px;background:#c6e1fb;"></div>
<div class="a" style="left:464.4px;top:104.2px;width:912.0px;height:245.0px;background:#30445b;"></div>
<div class="a" style="left:464.4px;top:103.8px;width:912.0px;height:1.0px;background:#22303f;"></div>
<div class="a" style="left:464.4px;top:227.2px;width:912.0px;height:1.0px;background:#3a4e66;"></div>
<span class="t" style="left:477.5px;top:44.1px;font-size:17.6px;color:#e6e6e6;">7.3</span>
<span class="t" style="left:925.0px;top:44.1px;font-size:17.6px;color:#e6e6e6;">8</span>
<span class="t" style="left:1359.8px;top:44.1px;font-size:17.6px;color:#e6e6e6;">8.</span>
<span class="t" style="left:1228.2px;top:79.6px;font-size:15.6px;color:#2c4b6e;letter-spacing:0.41px;">Strat Disco Guitar.1</span>
<svg class="a" style="left:-21.8px;top:-830.8px;" width="1400.0" height="360.0" viewBox="0 0 1400.0 360.0"><path d="M111.2 845.6 H121.2 L117.2 850.6 V858.6 H115.2 V850.6 Z" fill="#f2f2f2"/><path d="M103.2 849.0 L107.8 852.6 L103.2 856.2 M129.2 849.0 L124.6 852.6 L129.2 856.2" fill="none" stroke="#f2f2f2" stroke-width="1.5" stroke-linecap="round" stroke-linejoin="round"/><path d="M43 843.6 L57.6 852 L72.2 843.6 V860.4 L57.6 852 L43 860.4 Z" fill="none" stroke="#f0f0f0" stroke-width="1.4" stroke-linejoin="round"/><path d="M46.2 849.8 V854.2" stroke="#f0f0f0" stroke-width="1.2"/><path d="M48.8 847.4 V856.6" stroke="#f0f0f0" stroke-width="1.2"/><path d="M51.4 849.6 V854.4" stroke="#f0f0f0" stroke-width="1.2"/><path d="M63.8 849.6 V854.4" stroke="#f0f0f0" stroke-width="1.2"/><path d="M66.4 847.4 V856.6" stroke="#f0f0f0" stroke-width="1.2"/><path d="M69 849.8 V854.2" stroke="#f0f0f0" stroke-width="1.2"/><path d="M1299 852.6 H1376" stroke="#262626" stroke-width="4.2" stroke-linecap="round"/><path d="M1300 840 V843.2" stroke="#777" stroke-width="1"/><path d="M1304 840 V843.2" stroke="#777" stroke-width="1"/><path d="M1313 840 V843.2" stroke="#777" stroke-width="1"/><path d="M1327 840 V843.2" stroke="#777" stroke-width="1"/><path d="M1348.5 840 V843.2" stroke="#777" stroke-width="1"/><path d="M1371.5 840 V843.2" stroke="#777" stroke-width="1"/><path d="M1336.4 844 C1339.4 848 1343.1 851 1343.1 855.4 Q1343.1 858.2 1340.5 858.2 H1332.3 Q1329.7 858.2 1329.7 855.4 C1329.7 851 1333.4 848 1336.4 844 Z" fill="#c4c4c4"/><path d="M475.4 955.4 H485" stroke="#7c7c7c" stroke-width="1"/><path d="M475.4 1002.2 H485" stroke="#7c7c7c" stroke-width="1"/><path d="M475.4 1049.2 H485" stroke="#7c7c7c" stroke-width="1"/><path d="M475.4 1073 H485" stroke="#7c7c7c" stroke-width="1"/><path d="M475.4 1120 H485" stroke="#7c7c7c" stroke-width="1"/><path d="M475.4 1166.8 H485" stroke="#7c7c7c" stroke-width="1"/><path d="M499.8 925 V934.6" stroke="#8fa3b8" stroke-width="1.1"/><path d="M499.8 935.6 V1180" stroke="#3b5069" stroke-width="1"/><path d="M555.0 927.4 V934.6" stroke="#8fa3b8" stroke-width="1.1"/><path d="M555.0 935.6 V1180" stroke="#3b5069" stroke-width="1"/><path d="M610.1 927.4 V934.6" stroke="#8fa3b8" stroke-width="1.1"/><path d="M610.1 935.6 V1180" stroke="#3b5069" stroke-width="1"/><path d="M665.2 927.4 V934.6" stroke="#8fa3b8" stroke-width="1.1"/><path d="M665.2 935.6 V1180" stroke="#3b5069" stroke-width="1"/><path d="M720.4 925 V934.6" stroke="#8fa3b8" stroke-width="1.1"/><path d="M720.4 935.6 V1180" stroke="#3b5069" stroke-width="1"/><path d="M775.5 927.4 V934.6" stroke="#8fa3b8" stroke-width="1.1"/><path d="M775.5 935.6 V1180" stroke="#3b5069" stroke-width="1"/><path d="M830.7 927.4 V934.6" stroke="#8fa3b8" stroke-width="1.1"/><path d="M830.7 935.6 V1180" stroke="#3b5069" stroke-width="1"/><path d="M885.8 927.4 V934.6" stroke="#8fa3b8" stroke-width="1.1"/><path d="M885.8 935.6 V1180" stroke="#3b5069" stroke-width="1"/><path d="M941.0 925 V934.6" stroke="#8fa3b8" stroke-width="1.1"/><path d="M941.0 935.6 V1180" stroke="#3b5069" stroke-width="1"/><path d="M996.1 927.4 V934.6" stroke="#8fa3b8" stroke-width="1.1"/><path d="M996.1 935.6 V1180" stroke="#3b5069" stroke-width="1"/><path d="M1051.3 927.4 V934.6" stroke="#8fa3b8" stroke-width="1.1"/><path d="M1051.3 935.6 V1180" stroke="#3b5069" stroke-width="1"/><path d="M1106.5 927.4 V934.6" stroke="#8fa3b8" stroke-width="1.1"/><path d="M1106.5 935.6 V1180" stroke="#3b5069" stroke-width="1"/><path d="M1161.6 925 V934.6" stroke="#8fa3b8" stroke-width="1.1"/><path d="M1161.6 935.6 V1180" stroke="#3b5069" stroke-width="1"/><path d="M1216.8 927.4 V934.6" stroke="#8fa3b8" stroke-width="1.1"/><path d="M1216.8 935.6 V1180" stroke="#3b5069" stroke-width="1"/><path d="M1271.9 927.4 V934.6" stroke="#8fa3b8" stroke-width="1.1"/><path d="M1271.9 935.6 V1180" stroke="#3b5069" stroke-width="1"/><path d="M1327.1 927.4 V934.6" stroke="#8fa3b8" stroke-width="1.1"/><path d="M1327.1 935.6 V1180" stroke="#3b5069" stroke-width="1"/><path d="M1382.2 925 V934.6" stroke="#8fa3b8" stroke-width="1.1"/><path d="M1382.2 935.6 V1180" stroke="#3b5069" stroke-width="1"/><path d="M941 876 V904" stroke="#6e6e6e" stroke-width="1.1"/><path d="M486.2 998L486.7 997.3L487.7 997.3L488.7 997.3L489.7 997.3L490.7 997.3L491.7 997.3L492.7 997.3L493.7 997.3L494.7 997.3L495.7 997.3L496.7 997.3L497.7 997.3L498.7 997.3L499.7 997.3L500.7 987.4L501.7 978.5L502.7 973.4L503.7 971.2L504.7 971L505.7 965.2L506.7 958.4L507.7 951.5L508.7 956.7L509.7 962.2L510.7 961.4L511.7 963L512.7 969L513.7 971.2L514.7 970.6L515.7 970.6L516.7 973.4L517.7 975L518.7 973.2L519.7 972.9L520.7 971.2L521.7 973.6L522.7 974.1L523.7 973L524.7 971.6L525.7 972.9L526.7 974.5L527.7 974.8L528.7 971.7L529.7 969.2L530.7 971.7L531.7 971.8L532.7 971.6L533.7 968.8L534.7 972L535.7 974.1L536.7 975.9L537.7 973.2L538.7 972L539.7 971.8L540.7 973.9L541.7 973.9L542.7 972.9L543.7 972.9L544.7 976.6L545.7 978.1L546.7 979.7L547.7 978.9L548.7 978.6L549.7 981.5L550.7 982.1L551.7 981.4L552.7 980.9L553.7 983.3L554.7 985.3L555.7 985.2L556.7 986L557.7 987L558.7 989.1L559.7 990.2L560.7 990.3L561.7 990.6L562.7 991.6L563.7 992.9L564.7 993.7L565.7 994.5L566.7 995.4L567.7 996.3L568.7 997.1L569.7 997.3L570.7 997.3L571.7 997.3L572.7 997.3L573.7 997.3L574.7 997.3L575.7 997.3L576.7 997.3L577.7 997.3L578.7 997.3L579.7 997.3L580.7 997.3L581.7 997.3L582.7 997.3L583.7 997.3L584.7 997.3L585.7 997.3L586.7 997.3L587.7 997.3L588.7 997.3L589.7 997.3L590.7 997.3L591.7 997.3L592.7 997.3L593.7 997.3L594.7 997.3L595.7 997.3L596.7 997.3L597.7 997.3L598.7 997.3L599.7 997.3L600.7 997.3L601.7 997.3L602.7 997.3L603.7 997.3L604.7 997.3L605.7 997.3L606.7 997.3L607.7 997.3L608.7 997.3L609.7 997.3L610.7 997.3L611.7 997.3L612.7 997.3L613.7 997.3L614.7 997.3L615.7 997.3L616.7 997.3L617.7 997.3L618.7 997.3L619.7 997.3L620.7 997.3L621.7 997.3L622.7 997.3L623.7 997.3L624.7 997.3L625.7 997.3L626.7 997.3L627.7 997.3L628.7 997.3L629.7 997.3L630.7 997.3L631.7 997.3L632.7 997.3L633.7 997.3L634.7 997.3L635.7 997.3L636.7 997.3L637.7 997.3L638.7 997.3L639.7 997.3L640.7 997.3L641.7 997.3L642.7 997.3L643.7 997.3L644.7 997.3L645.7 997.3L646.7 997.3L647.7 997.3L648.7 997.3L649.7 997.3L650.7 997.3L651.7 997.3L652.7 997.3L653.7 997.3L654.7 997.3L655.7 997.3L656.7 997.3L657.7 997.3L658.7 997.3L659.7 997.3L660.7 997.3L661.7 997.3L662.7 997.3L663.7 997.3L664.7 997.3L665.7 989.9L666.7 978.9L667.7 974.6L668.7 967.4L669.7 964.7L670.7 964.2L671.7 960.6L672.7 954.2L673.7 959.4L674.7 966.8L675.7 964.8L676.7 966.2L677.7 967.2L678.7 973.6L679.7 972.4L680.7 970.9L681.7 972.2L682.7 972.6L683.7 975.5L684.7 973.6L685.7 970.8L686.7 973.3L687.7 973.9L688.7 974.3L689.7 974.8L690.7 973L691.7 975.9L692.7 977.6L693.7 976L694.7 975.9L695.7 972.4L696.7 974.3L697.7 974.8L698.7 975.5L699.7 974.5L700.7 975.9L701.7 978.7L702.7 978.9L703.7 977.3L704.7 975.9L705.7 976.3L706.7 977.7L707.7 979.8L708.7 978.4L709.7 976.7L710.7 978.4L711.7 980.4L712.7 981.4L713.7 980.2L714.7 980.9L715.7 982L716.7 983.2L717.7 981L718.7 979.6L719.7 979.8L720.7 981.1L721.7 979.5L722.7 976.3L723.7 974.6L724.7 976.1L725.7 972.7L726.7 972L727.7 977.7L728.7 981.7L729.7 982.7L730.7 984L731.7 987.4L732.7 990.9L733.7 991.5L734.7 992.4L735.7 993.7L736.7 994.9L737.7 996L738.7 997.2L739.7 997.3L740.7 997.3L741.7 997.3L742.7 997.3L743.7 997.3L744.7 997.3L745.7 997.3L746.7 997.3L747.7 997.3L748.7 997.3L749.7 997.3L750.7 997.3L751.7 997.3L752.7 997.3L753.7 997.3L754.7 997.3L755.7 997.3L756.7 997.3L757.7 997.3L758.7 997.3L759.7 997.3L760.7 997.3L761.7 997.3L762.7 997.3L763.7 997.3L764.7 997.3L765.7 997.3L766.7 997.3L767.7 997.3L768.7 997.3L769.7 997.3L770.7 997.3L771.7 997.3L772.7 997.3L773.7 997.3L774.7 997.3L775.7 997.3L776.7 997.3L777.7 997.3L778.7 997.3L779.7 997.3L780.7 997.3L781.7 997.3L782.7 997.3L783.7 997.3L784.7 997.3L785.7 997.3L786.7 997.3L787.7 997.3L788.7 997.3L789.7 997.3L790.7 997.3L791.7 997.3L792.7 997.3L793.7 997.3L794.7 997.3L795.7 997.3L796.7 997.3L797.7 997.3L798.7 997.3L799.7 997.3L800.7 997.3L801.7 997.3L802.7 997.3L803.7 997.3L804.7 997.3L805.7 997.3L806.7 997.3L807.7 997.3L808.7 997.3L809.7 997.3L810.7 997.3L811.7 997.3L812.7 997.3L813.7 997.3L814.7 997.3L815.7 997.3L816.7 997.3L817.7 997.3L818.7 997.3L819.7 997.3L820.7 997.3L821.7 997.3L822.7 997.3L823.7 997.3L824.7 997.3L825.7 997.3L826.7 997.3L827.7 997.3L828.7 997.3L829.7 996L830.7 992.1L831.7 989.7L832.7 987.7L833.7 984.6L834.7 980.4L835.7 978.6L836.7 976.6L837.7 973.6L838.7 975L839.7 978.7L840.7 983.4L841.7 983.9L842.7 984.8L843.7 988L844.7 990.4L845.7 991.2L846.7 991.4L847.7 992.5L848.7 993.6L849.7 994.2L850.7 994.8L851.7 995.4L852.7 996L853.7 996.6L854.7 997.2L855.7 997.3L856.7 997.3L857.7 997.3L858.7 997.3L859.7 997.3L860.7 997.3L861.7 997.3L862.7 997.3L863.7 997.3L864.7 997.3L865.7 997.3L866.7 997.3L867.7 997.3L868.7 997.3L869.7 997.3L870.7 997.3L871.7 997.3L872.7 997.3L873.7 997.3L874.7 997.3L875.7 997.3L876.7 997.3L877.7 997.3L878.7 997.3L879.7 997.3L880.7 997.3L881.7 997.3L882.7 997.3L883.7 997.3L884.7 997.3L885.7 997.3L886.7 997.3L887.7 997.3L888.7 997.3L889.7 997.3L890.7 997.3L891.7 997.3L892.7 997.3L893.7 997.3L894.7 997.3L895.7 997.3L896.7 997.3L897.7 997.3L898.7 997.3L899.7 997.3L900.7 997.3L901.7 997.3L902.7 997.3L903.7 997.3L904.7 997.3L905.7 997.3L906.7 997.3L907.7 997.3L908.7 997.3L909.7 997.3L910.7 997.3L911.7 997.3L912.7 997.3L913.7 997.3L914.7 997.3L915.7 997.3L916.7 997.3L917.7 997.3L918.7 997.3L919.7 997.3L920.7 997.3L921.7 997.3L922.7 997.3L923.7 997.3L924.7 997.3L925.7 997.3L926.7 997.3L927.7 997.3L928.7 997.3L929.7 997.3L930.7 997.3L931.7 997.3L932.7 997.3L933.7 997.3L934.7 997.3L935.7 997.3L936.7 997.3L937.7 997.3L938.7 997.3L939.7 997.3L940.7 997.3L941.7 997.3L942.7 989.1L943.7 978.7L944.7 974.3L945.7 970.6L946.7 966.2L947.7 969.2L948.7 962.7L949.7 960.9L950.7 958.8L951.7 958.4L952.7 959.7L953.7 959.5L954.7 961.3L955.7 965.8L956.7 968.5L957.7 968.1L958.7 964.8L959.7 966.9L960.7 968.6L961.7 966.6L962.7 965.5L963.7 964.9L964.7 968.3L965.7 969.1L966.7 968.6L967.7 967.6L968.7 968.7L969.7 971.3L970.7 970.1L971.7 970L972.7 965.8L973.7 968.2L974.7 971.9L975.7 972.1L976.7 971L977.7 971.3L978.7 975.1L979.7 976.1L980.7 974.4L981.7 973.3L982.7 972.7L983.7 975.3L984.7 976.5L985.7 975.1L986.7 975L987.7 977.6L988.7 979.1L989.7 979.9L990.7 977.9L991.7 977.9L992.7 979.6L993.7 981.2L994.7 980.2L995.7 979L996.7 980.4L997.7 983.4L998.7 983.1L999.7 983.6L1000.7 983.5L1001.7 984L1002.7 986.1L1003.7 985.8L1004.7 984.6L1005.7 985L1006.7 985.5L1007.7 987.3L1008.7 987.2L1009.7 987.5L1010.7 988.3L1011.7 989.8L1012.7 989.6L1013.7 989.3L1014.7 989.1L1015.7 990L1016.7 990.7L1017.7 991.6L1018.7 991.3L1019.7 991.8L1020.7 992.5L1021.7 993.1L1022.7 993.6L1023.7 994L1024.7 994.4L1025.7 994.8L1026.7 995.2L1027.7 995.6L1028.7 996L1029.7 996.4L1030.7 996.8L1031.7 997.2L1032.7 997.3L1033.7 997.3L1034.7 997.3L1035.7 997.3L1036.7 997.3L1037.7 997.3L1038.7 997.3L1039.7 997.3L1040.7 997.3L1041.7 997.3L1042.7 997.3L1043.7 997.3L1044.7 997.3L1045.7 997.3L1046.7 997.3L1047.7 997.3L1048.7 997.3L1049.7 997.3L1050.7 997.3L1051.7 997.3L1052.7 997.3L1053.7 997.3L1054.7 997.3L1055.7 997.3L1056.7 997.3L1057.7 997.3L1058.7 997.3L1059.7 997.3L1060.7 997.3L1061.7 997.3L1062.7 997.3L1063.7 997.3L1064.7 997.3L1065.7 997.3L1066.7 997.3L1067.7 997.3L1068.7 997.3L1069.7 997.3L1070.7 997.3L1071.7 997.3L1072.7 997.3L1073.7 997.3L1074.7 997.3L1075.7 997.3L1076.7 997.3L1077.7 997.3L1078.7 997.3L1079.7 997.3L1080.7 997.3L1081.7 997.3L1082.7 997.3L1083.7 997.3L1084.7 997.3L1085.7 997.3L1086.7 997.3L1087.7 997.3L1088.7 997.3L1089.7 997.3L1090.7 997.3L1091.7 997.3L1092.7 997.3L1093.7 997.3L1094.7 997.3L1095.7 997.3L1096.7 997.3L1097.7 997.3L1098.7 997.3L1099.7 997.3L1100.7 997.3L1101.7 997.3L1102.7 997.3L1103.7 997.3L1104.7 997.3L1105.7 995.6L1106.7 982.5L1107.7 972.3L1108.7 971.9L1109.7 970.8L1110.7 964.7L1111.7 965.1L1112.7 964L1113.7 961.6L1114.7 958.5L1115.7 957.8L1116.7 961.3L1117.7 965.7L1118.7 964.6L1119.7 962.7L1120.7 965.9L1121.7 970.4L1122.7 968L1123.7 966.3L1124.7 964L1125.7 966.8L1126.7 968L1127.7 968.1L1128.7 965.9L1129.7 968.1L1130.7 969.5L1131.7 972.3L1132.7 970L1133.7 967.5L1134.7 969.1L1135.7 971.4L1136.7 970.6L1137.7 969L1138.7 966.7L1139.7 969.5L1140.7 970.8L1141.7 971.3L1142.7 970.2L1143.7 971.3L1144.7 974.3L1145.7 974L1146.7 973.6L1147.7 972L1148.7 974.4L1149.7 976.9L1150.7 977.2L1151.7 975.4L1152.7 976.8L1153.7 978.9L1154.7 981.1L1155.7 981.1L1156.7 980.8L1157.7 981.8L1158.7 983.6L1159.7 983.2L1160.7 982.6L1161.7 983.1L1162.7 985.3L1163.7 987.2L1164.7 988L1165.7 988.2L1166.7 989.7L1167.7 991L1168.7 991.4L1169.7 991.1L1170.7 991.6L1171.7 992.6L1172.7 993.8L1173.7 994.5L1174.7 995.3L1175.7 996.1L1176.7 996.8L1177.7 997.3L1178.7 997.3L1179.7 997.3L1180.7 997.3L1181.7 997.3L1182.7 997.3L1183.7 997.3L1184.7 997.3L1185.7 997.3L1186.7 997.3L1187.7 997.3L1188.7 997.3L1189.7 997.3L1190.7 997.3L1191.7 997.3L1192.7 997.3L1193.7 997.3L1194.7 997.3L1195.7 997.3L1196.7 997.3L1197.7 997.3L1198.7 997.3L1199.7 997.3L1200.7 997.3L1201.7 997.3L1202.7 997.3L1203.7 997.3L1204.7 997.3L1205.7 997.3L1206.7 997.3L1207.7 997.3L1208.7 997.3L1209.7 997.3L1210.7 997.3L1211.7 997.3L1212.7 997.3L1213.7 997.3L1214.7 997.3L1215.7 997.3L1216.7 997.3L1217.7 997.3L1218.7 997.3L1219.7 997.3L1220.7 997.3L1221.7 997.3L1222.7 997.3L1223.7 997.3L1224.7 997.3L1225.7 997.3L1226.7 997.3L1227.7 997.3L1228.7 997.3L1229.7 997.3L1230.7 997.3L1231.7 997.3L1232.7 997.3L1233.7 997.3L1234.7 997.3L1235.7 997.3L1236.7 997.3L1237.7 997.3L1238.7 997.3L1239.7 997.3L1240.7 997.3L1241.7 997.3L1242.7 997.3L1243.7 997.3L1244.7 997.3L1245.7 997.3L1246.7 997.3L1247.7 997.3L1248.7 997.3L1249.7 997.3L1250.7 997.3L1251.7 997.3L1252.7 997.3L1253.7 997.3L1254.7 997.3L1255.7 997.3L1256.7 997.3L1257.7 997.3L1258.7 997.3L1259.7 997.3L1260.7 997.3L1261.7 997.3L1262.7 997.3L1263.7 997.3L1264.7 997.3L1265.7 997.3L1266.7 997.3L1267.7 997.3L1268.7 997.3L1269.7 997.3L1270.7 997.3L1271.7 997.3L1272.7 997.3L1273.7 992L1274.7 984.8L1275.7 980L1276.7 975L1277.7 972.5L1278.7 969.1L1279.7 969.5L1280.7 964L1281.7 961.3L1282.7 957.5L1283.7 960.3L1284.7 961.5L1285.7 955.6L1286.7 960.5L1287.7 965.4L1288.7 969.2L1289.7 965.3L1290.7 964.2L1291.7 967.5L1292.7 971.1L1293.7 970.7L1294.7 968.5L1295.7 970.5L1296.7 974.7L1297.7 973.6L1298.7 971.6L1299.7 970L1300.7 972.7L1301.7 972.7L1302.7 973.3L1303.7 970.3L1304.7 969.7L1305.7 974.7L1306.7 975.5L1307.7 974.7L1308.7 971.6L1309.7 972.4L1310.7 974.6L1311.7 974.3L1312.7 973.5L1313.7 969.8L1314.7 971.9L1315.7 974.5L1316.7 975L1317.7 972.6L1318.7 972.2L1319.7 973.1L1320.7 975.1L1321.7 976.7L1322.7 973.8L1323.7 972.8L1324.7 971.7L1325.7 973.5L1326.7 974.8L1327.7 973.2L1328.7 972.9L1329.7 973.6L1330.7 977.8L1331.7 975.9L1332.7 973.4L1333.7 972.8L1334.7 975.3L1335.7 976.5L1336.7 973.2L1337.7 972.4L1338.7 973.8L1339.7 975.9L1340.7 978L1341.7 976.5L1342.7 975.7L1343.7 975.3L1344.7 976.1L1345.7 976.4L1346.7 975.1L1347.7 973.8L1348.7 972.2L1349.7 976.1L1350.7 977.7L1351.7 977.7L1352.7 976.1L1353.7 975.1L1354.7 976.3L1355.7 978L1356.7 976.4L1357.7 973.3L1358.7 972.7L1359.7 975L1360.7 975.9L1361.7 975.6L1362.7 976L1363.7 976.3L1364.7 978.2L1365.7 978.8L1366.7 974.8L1367.7 974.6L1368.7 975.8L1369.7 975.6L1370.7 975.5L1371.7 974.8L1372.7 974.6L1373.7 975.5L1374.7 977.6L1375.7 978L1376.7 975.7L1377.7 975.8L1378.7 976.5L1379.7 976.5L1380.7 976.6L1381.7 976L1382.7 974.9L1383.7 976.3L1384.7 977.8L1385.7 979.6L1386.7 977.5L1387.7 976.8L1388.7 976.2L1389.7 976.7L1390.7 977.5L1391.7 975.8L1392.7 974.3L1393.7 975.9L1394.7 978.3L1395.7 977.8L1396.7 977.9L1397.7 975.9L1398.2 998L1397.7 1020.1L1396.7 1019.4L1395.7 1019.3L1394.7 1018.6L1393.7 1020.5L1392.7 1020.4L1391.7 1019.3L1390.7 1016.9L1389.7 1017.6L1388.7 1018.8L1387.7 1020.4L1386.7 1020.1L1385.7 1020.1L1384.7 1018.9L1383.7 1019.6L1382.7 1019.9L1381.7 1021.7L1380.7 1021.1L1379.7 1018.5L1378.7 1016.4L1377.7 1018.2L1376.7 1019.7L1375.7 1020.2L1374.7 1020.6L1373.7 1020.5L1372.7 1018.9L1371.7 1020.8L1370.7 1022.5L1369.7 1022.5L1368.7 1020L1367.7 1017.7L1366.7 1017.2L1365.7 1018L1364.7 1020.1L1363.7 1020.4L1362.7 1019.9L1361.7 1018.8L1360.7 1018.3L1359.7 1022.4L1358.7 1020.6L1357.7 1019.9L1356.7 1018.6L1355.7 1020.6L1354.7 1022.1L1353.7 1020.9L1352.7 1019.6L1351.7 1017.8L1350.7 1019.7L1349.7 1022.1L1348.7 1021.7L1347.7 1021.3L1346.7 1020.2L1345.7 1020.9L1344.7 1021.7L1343.7 1022.4L1342.7 1023.3L1341.7 1019.4L1340.7 1019L1339.7 1017.4L1338.7 1020.4L1337.7 1021.2L1336.7 1021.7L1335.7 1021.4L1334.7 1020.5L1333.7 1021.8L1332.7 1022.7L1331.7 1024.6L1330.7 1023.4L1329.7 1019L1328.7 1021.9L1327.7 1021L1326.7 1020.7L1325.7 1019.9L1324.7 1020.2L1323.7 1020.8L1322.7 1023.8L1321.7 1024.2L1320.7 1023.3L1319.7 1021.9L1318.7 1021.6L1317.7 1021.2L1316.7 1023.5L1315.7 1022.5L1314.7 1021.9L1313.7 1018.9L1312.7 1020.9L1311.7 1021.9L1310.7 1026L1309.7 1024.8L1308.7 1022.6L1307.7 1022.7L1306.7 1021.6L1305.7 1023.1L1304.7 1020.6L1303.7 1021.8L1302.7 1020.5L1301.7 1023.9L1300.7 1024.1L1299.7 1023.6L1298.7 1023.1L1297.7 1023L1296.7 1024.4L1295.7 1027.3L1294.7 1026.8L1293.7 1023.5L1292.7 1028.1L1291.7 1028.6L1290.7 1027.8L1289.7 1027.6L1288.7 1029.2L1287.7 1035.9L1286.7 1037.3L1285.7 1038.2L1284.7 1039.4L1283.7 1039.7L1282.7 1036.5L1281.7 1031.6L1280.7 1027.6L1279.7 1027L1278.7 1025.7L1277.7 1022.4L1276.7 1018L1275.7 1017.1L1274.7 1012L1273.7 1003.4L1272.7 998.7L1271.7 998.7L1270.7 998.7L1269.7 998.7L1268.7 998.7L1267.7 998.7L1266.7 998.7L1265.7 998.7L1264.7 998.7L1263.7 998.7L1262.7 998.7L1261.7 998.7L1260.7 998.7L1259.7 998.7L1258.7 998.7L1257.7 998.7L1256.7 998.7L1255.7 998.7L1254.7 998.7L1253.7 998.7L1252.7 998.7L1251.7 998.7L1250.7 998.7L1249.7 998.7L1248.7 998.7L1247.7 998.7L1246.7 998.7L1245.7 998.7L1244.7 998.7L1243.7 998.7L1242.7 998.7L1241.7 998.7L1240.7 998.7L1239.7 998.7L1238.7 998.7L1237.7 998.7L1236.7 998.7L1235.7 998.7L1234.7 998.7L1233.7 998.7L1232.7 998.7L1231.7 998.7L1230.7 998.7L1229.7 998.7L1228.7 998.7L1227.7 998.7L1226.7 998.7L1225.7 998.7L1224.7 998.7L1223.7 998.7L1222.7 998.7L1221.7 998.7L1220.7 998.7L1219.7 998.7L1218.7 998.7L1217.7 998.7L1216.7 998.7L1215.7 998.7L1214.7 998.7L1213.7 998.7L1212.7 998.7L1211.7 998.7L1210.7 998.7L1209.7 998.7L1208.7 998.7L1207.7 998.7L1206.7 998.7L1205.7 998.7L1204.7 998.7L1203.7 998.7L1202.7 998.7L1201.7 998.7L1200.7 998.7L1199.7 998.7L1198.7 998.7L1197.7 998.7L1196.7 998.7L1195.7 998.7L1194.7 998.7L1193.7 998.7L1192.7 998.7L1191.7 998.7L1190.7 998.7L1189.7 998.7L1188.7 998.7L1187.7 998.7L1186.7 998.7L1185.7 998.7L1184.7 998.7L1183.7 998.7L1182.7 998.7L1181.7 998.7L1180.7 998.7L1179.7 998.7L1178.7 998.7L1177.7 998.7L1176.7 999.2L1175.7 999.9L1174.7 1000.7L1173.7 1001.5L1172.7 1002.2L1171.7 1003L1170.7 1003.7L1169.7 1004.7L1168.7 1005.9L1167.7 1006.5L1166.7 1006.5L1165.7 1007.2L1164.7 1008.5L1163.7 1010L1162.7 1009.5L1161.7 1010.2L1160.7 1011.1L1159.7 1012.5L1158.7 1015.6L1157.7 1016.6L1156.7 1014.8L1155.7 1014.8L1154.7 1018.1L1153.7 1017.1L1152.7 1017.7L1151.7 1016.2L1150.7 1017.7L1149.7 1020.3L1148.7 1022.2L1147.7 1022.7L1146.7 1022.9L1145.7 1023.2L1144.7 1024.6L1143.7 1025.3L1142.7 1025L1141.7 1023.1L1140.7 1023.8L1139.7 1027L1138.7 1025L1137.7 1022.5L1136.7 1025.8L1135.7 1027.5L1134.7 1028.1L1133.7 1028.7L1132.7 1027.4L1131.7 1026.3L1130.7 1029.6L1129.7 1028.8L1128.7 1028L1127.7 1026.7L1126.7 1028.7L1125.7 1029.2L1124.7 1028.8L1123.7 1027.1L1122.7 1026.5L1121.7 1029.9L1120.7 1032.9L1119.7 1034.6L1118.7 1033.5L1117.7 1030.8L1116.7 1034.5L1115.7 1035.7L1114.7 1034.7L1113.7 1031.9L1112.7 1032.9L1111.7 1034.6L1110.7 1030.7L1109.7 1027.5L1108.7 1028.5L1107.7 1024.8L1106.7 1011.6L1105.7 1000.4L1104.7 998.7L1103.7 998.7L1102.7 998.7L1101.7 998.7L1100.7 998.7L1099.7 998.7L1098.7 998.7L1097.7 998.7L1096.7 998.7L1095.7 998.7L1094.7 998.7L1093.7 998.7L1092.7 998.7L1091.7 998.7L1090.7 998.7L1089.7 998.7L1088.7 998.7L1087.7 998.7L1086.7 998.7L1085.7 998.7L1084.7 998.7L1083.7 998.7L1082.7 998.7L1081.7 998.7L1080.7 998.7L1079.7 998.7L1078.7 998.7L1077.7 998.7L1076.7 998.7L1075.7 998.7L1074.7 998.7L1073.7 998.7L1072.7 998.7L1071.7 998.7L1070.7 998.7L1069.7 998.7L1068.7 998.7L1067.7 998.7L1066.7 998.7L1065.7 998.7L1064.7 998.7L1063.7 998.7L1062.7 998.7L1061.7 998.7L1060.7 998.7L1059.7 998.7L1058.7 998.7L1057.7 998.7L1056.7 998.7L1055.7 998.7L1054.7 998.7L1053.7 998.7L1052.7 998.7L1051.7 998.7L1050.7 998.7L1049.7 998.7L1048.7 998.7L1047.7 998.7L1046.7 998.7L1045.7 998.7L1044.7 998.7L1043.7 998.7L1042.7 998.7L1041.7 998.7L1040.7 998.7L1039.7 998.7L1038.7 998.7L1037.7 998.7L1036.7 998.7L1035.7 998.7L1034.7 998.7L1033.7 998.7L1032.7 998.7L1031.7 998.8L1030.7 999.2L1029.7 999.6L1028.7 1000L1027.7 1000.4L1026.7 1000.8L1025.7 1001.2L1024.7 1001.6L1023.7 1002L1022.7 1002.4L1021.7 1002.9L1020.7 1003.6L1019.7 1004.5L1018.7 1004.9L1017.7 1004.9L1016.7 1004.9L1015.7 1005.3L1014.7 1006.3L1013.7 1006.6L1012.7 1006.5L1011.7 1007.1L1010.7 1007.2L1009.7 1008.8L1008.7 1009.3L1007.7 1009.4L1006.7 1009.5L1005.7 1010.4L1004.7 1011.9L1003.7 1011.7L1002.7 1011.7L1001.7 1010L1000.7 1010.9L999.7 1013L998.7 1014.7L997.7 1015L996.7 1013.5L995.7 1015.4L994.7 1018.2L993.7 1017.9L992.7 1016L991.7 1016.7L990.7 1016.3L989.7 1018.4L988.7 1019L987.7 1019.1L986.7 1017.8L985.7 1019.1L984.7 1022.7L983.7 1021.6L982.7 1020.9L981.7 1020.4L980.7 1022.7L979.7 1025.9L978.7 1025.5L977.7 1024.3L976.7 1020.9L975.7 1022.3L974.7 1024.9L973.7 1024.9L972.7 1023.8L971.7 1026L970.7 1027.2L969.7 1030.5L968.7 1029.6L967.7 1028.1L966.7 1025L965.7 1026.5L964.7 1028.2L963.7 1025.5L962.7 1024.7L961.7 1026.6L960.7 1030.3L959.7 1030.5L958.7 1031.7L957.7 1028.8L956.7 1030.9L955.7 1033.3L954.7 1033.3L953.7 1029.8L952.7 1032.1L951.7 1038L950.7 1034.1L949.7 1030.9L948.7 1028.3L947.7 1030.1L946.7 1027.6L945.7 1024.5L944.7 1024L943.7 1020.5L942.7 1006.7L941.7 998.7L940.7 998.7L939.7 998.7L938.7 998.7L937.7 998.7L936.7 998.7L935.7 998.7L934.7 998.7L933.7 998.7L932.7 998.7L931.7 998.7L930.7 998.7L929.7 998.7L928.7 998.7L927.7 998.7L926.7 998.7L925.7 998.7L924.7 998.7L923.7 998.7L922.7 998.7L921.7 998.7L920.7 998.7L919.7 998.7L918.7 998.7L917.7 998.7L916.7 998.7L915.7 998.7L914.7 998.7L913.7 998.7L912.7 998.7L911.7 998.7L910.7 998.7L909.7 998.7L908.7 998.7L907.7 998.7L906.7 998.7L905.7 998.7L904.7 998.7L903.7 998.7L902.7 998.7L901.7 998.7L900.7 998.7L899.7 998.7L898.7 998.7L897.7 998.7L896.7 998.7L895.7 998.7L894.7 998.7L893.7 998.7L892.7 998.7L891.7 998.7L890.7 998.7L889.7 998.7L888.7 998.7L887.7 998.7L886.7 998.7L885.7 998.7L884.7 998.7L883.7 998.7L882.7 998.7L881.7 998.7L880.7 998.7L879.7 998.7L878.7 998.7L877.7 998.7L876.7 998.7L875.7 998.7L874.7 998.7L873.7 998.7L872.7 998.7L871.7 998.7L870.7 998.7L869.7 998.7L868.7 998.7L867.7 998.7L866.7 998.7L865.7 998.7L864.7 998.7L863.7 998.7L862.7 998.7L861.7 998.7L860.7 998.7L859.7 998.7L858.7 998.7L857.7 998.7L856.7 998.7L855.7 998.7L854.7 998.8L853.7 999.4L852.7 1000L851.7 1000.6L850.7 1001.2L849.7 1001.8L848.7 1002.4L847.7 1003.1L846.7 1004.3L845.7 1005.8L844.7 1007.4L843.7 1009.2L842.7 1009.2L841.7 1012.3L840.7 1014.4L839.7 1015.1L838.7 1016.6L837.7 1021.7L836.7 1021.5L835.7 1016.2L834.7 1013.6L833.7 1012.8L832.7 1009.7L831.7 1006.2L830.7 1003.9L829.7 1000L828.7 998.7L827.7 998.7L826.7 998.7L825.7 998.7L824.7 998.7L823.7 998.7L822.7 998.7L821.7 998.7L820.7 998.7L819.7 998.7L818.7 998.7L817.7 998.7L816.7 998.7L815.7 998.7L814.7 998.7L813.7 998.7L812.7 998.7L811.7 998.7L810.7 998.7L809.7 998.7L808.7 998.7L807.7 998.7L806.7 998.7L805.7 998.7L804.7 998.7L803.7 998.7L802.7 998.7L801.7 998.7L800.7 998.7L799.7 998.7L798.7 998.7L797.7 998.7L796.7 998.7L795.7 998.7L794.7 998.7L793.7 998.7L792.7 998.7L791.7 998.7L790.7 998.7L789.7 998.7L788.7 998.7L787.7 998.7L786.7 998.7L785.7 998.7L784.7 998.7L783.7 998.7L782.7 998.7L781.7 998.7L780.7 998.7L779.7 998.7L778.7 998.7L777.7 998.7L776.7 998.7L775.7 998.7L774.7 998.7L773.7 998.7L772.7 998.7L771.7 998.7L770.7 998.7L769.7 998.7L768.7 998.7L767.7 998.7L766.7 998.7L765.7 998.7L764.7 998.7L763.7 998.7L762.7 998.7L761.7 998.7L760.7 998.7L759.7 998.7L758.7 998.7L757.7 998.7L756.7 998.7L755.7 998.7L754.7 998.7L753.7 998.7L752.7 998.7L751.7 998.7L750.7 998.7L749.7 998.7L748.7 998.7L747.7 998.7L746.7 998.7L745.7 998.7L744.7 998.7L743.7 998.7L742.7 998.7L741.7 998.7L740.7 998.7L739.7 998.7L738.7 998.8L737.7 1000L736.7 1001.1L735.7 1002.3L734.7 1003L733.7 1004.5L732.7 1006.5L731.7 1007.6L730.7 1010.2L729.7 1014L728.7 1016.9L727.7 1017.5L726.7 1021.2L725.7 1023.6L724.7 1021.3L723.7 1017.4L722.7 1016.8L721.7 1017.9L720.7 1015.6L719.7 1015.2L718.7 1013.5L717.7 1016.3L716.7 1015.3L715.7 1014.7L714.7 1014.1L713.7 1016.3L712.7 1017.1L711.7 1013.8L710.7 1016.1L709.7 1017.3L708.7 1018.1L707.7 1018.8L706.7 1017.8L705.7 1018.8L704.7 1019.9L703.7 1019.9L702.7 1020.3L701.7 1018.3L700.7 1017.4L699.7 1020.5L698.7 1021.1L697.7 1018.6L696.7 1019.6L695.7 1020.8L694.7 1023.1L693.7 1022.8L692.7 1023L691.7 1021.3L690.7 1019.8L689.7 1020.4L688.7 1021.8L687.7 1022.8L686.7 1020.7L685.7 1021.5L684.7 1022.4L683.7 1023.6L682.7 1024L681.7 1023.7L680.7 1023L679.7 1025.7L678.7 1027.1L677.7 1023.8L676.7 1025.5L675.7 1027.7L674.7 1030.4L673.7 1030.9L672.7 1032.5L671.7 1040.8L670.7 1036.3L669.7 1030.6L668.7 1030.9L667.7 1025.8L666.7 1017.4L665.7 1005.7L664.7 998.7L663.7 998.7L662.7 998.7L661.7 998.7L660.7 998.7L659.7 998.7L658.7 998.7L657.7 998.7L656.7 998.7L655.7 998.7L654.7 998.7L653.7 998.7L652.7 998.7L651.7 998.7L650.7 998.7L649.7 998.7L648.7 998.7L647.7 998.7L646.7 998.7L645.7 998.7L644.7 998.7L643.7 998.7L642.7 998.7L641.7 998.7L640.7 998.7L639.7 998.7L638.7 998.7L637.7 998.7L636.7 998.7L635.7 998.7L634.7 998.7L633.7 998.7L632.7 998.7L631.7 998.7L630.7 998.7L629.7 998.7L628.7 998.7L627.7 998.7L626.7 998.7L625.7 998.7L624.7 998.7L623.7 998.7L622.7 998.7L621.7 998.7L620.7 998.7L619.7 998.7L618.7 998.7L617.7 998.7L616.7 998.7L615.7 998.7L614.7 998.7L613.7 998.7L612.7 998.7L611.7 998.7L610.7 998.7L609.7 998.7L608.7 998.7L607.7 998.7L606.7 998.7L605.7 998.7L604.7 998.7L603.7 998.7L602.7 998.7L601.7 998.7L600.7 998.7L599.7 998.7L598.7 998.7L597.7 998.7L596.7 998.7L595.7 998.7L594.7 998.7L593.7 998.7L592.7 998.7L591.7 998.7L590.7 998.7L589.7 998.7L588.7 998.7L587.7 998.7L586.7 998.7L585.7 998.7L584.7 998.7L583.7 998.7L582.7 998.7L581.7 998.7L580.7 998.7L579.7 998.7L578.7 998.7L577.7 998.7L576.7 998.7L575.7 998.7L574.7 998.7L573.7 998.7L572.7 998.7L571.7 998.7L570.7 998.7L569.7 998.7L568.7 998.9L567.7 999.7L566.7 1000.6L565.7 1001.5L564.7 1002.3L563.7 1002.8L562.7 1003.8L561.7 1004.7L560.7 1006L559.7 1005.4L558.7 1007.1L557.7 1009L556.7 1009.9L555.7 1011.2L554.7 1011L553.7 1012.1L552.7 1013.2L551.7 1015.1L550.7 1015.8L549.7 1013.8L548.7 1015.2L547.7 1018.3L546.7 1019.3L545.7 1017.8L544.7 1018.3L543.7 1018.9L542.7 1021.7L541.7 1026L540.7 1026.2L539.7 1021.9L538.7 1022.5L537.7 1023.2L536.7 1024L535.7 1020.5L534.7 1021.4L533.7 1023.4L532.7 1023.6L531.7 1026.4L530.7 1024.8L529.7 1024.7L528.7 1027.2L527.7 1025.1L526.7 1025.1L525.7 1022.4L524.7 1021.4L523.7 1021.6L522.7 1022.5L521.7 1022.3L520.7 1021.3L519.7 1022L518.7 1024.3L517.7 1027L516.7 1025.6L515.7 1024.8L514.7 1025.3L513.7 1027.5L512.7 1024.9L511.7 1026L510.7 1026.4L509.7 1035.3L508.7 1037.9L507.7 1040.3L506.7 1040.1L505.7 1035.2L504.7 1028.3L503.7 1028.5L502.7 1023.5L501.7 1019.7L500.7 1008.2L499.7 998.7L498.7 998.7L497.7 998.7L496.7 998.7L495.7 998.7L494.7 998.7L493.7 998.7L492.7 998.7L491.7 998.7L490.7 998.7L489.7 998.7L488.7 998.7L487.7 998.7L486.7 998.7Z" fill="#7fa4ca"/><path d="M486.2 1119.6L486.7 1118.9L487.7 1118.9L488.7 1118.9L489.7 1118.9L490.7 1118.9L491.7 1118.9L492.7 1118.9L493.7 1118.9L494.7 1118.9L495.7 1118.9L496.7 1118.9L497.7 1118.9L498.7 1118.9L499.7 1118.9L500.7 1109L501.7 1100.1L502.7 1095L503.7 1092.8L504.7 1092.6L505.7 1086.8L506.7 1080L507.7 1073.1L508.7 1078.3L509.7 1083.8L510.7 1083L511.7 1084.6L512.7 1090.6L513.7 1092.8L514.7 1092.2L515.7 1092.2L516.7 1095L517.7 1096.6L518.7 1094.8L519.7 1094.5L520.7 1092.8L521.7 1095.2L522.7 1095.7L523.7 1094.6L524.7 1093.2L525.7 1094.5L526.7 1096.1L527.7 1096.4L528.7 1093.3L529.7 1090.8L530.7 1093.3L531.7 1093.4L532.7 1093.2L533.7 1090.4L534.7 1093.6L535.7 1095.7L536.7 1097.5L537.7 1094.8L538.7 1093.6L539.7 1093.4L540.7 1095.5L541.7 1095.5L542.7 1094.5L543.7 1094.5L544.7 1098.2L545.7 1099.7L546.7 1101.3L547.7 1100.5L548.7 1100.2L549.7 1103.1L550.7 1103.7L551.7 1103L552.7 1102.5L553.7 1104.9L554.7 1106.9L555.7 1106.8L556.7 1107.6L557.7 1108.6L558.7 1110.7L559.7 1111.8L560.7 1111.9L561.7 1112.2L562.7 1113.2L563.7 1114.5L564.7 1115.2L565.7 1116.1L566.7 1117L567.7 1117.9L568.7 1118.7L569.7 1118.9L570.7 1118.9L571.7 1118.9L572.7 1118.9L573.7 1118.9L574.7 1118.9L575.7 1118.9L576.7 1118.9L577.7 1118.9L578.7 1118.9L579.7 1118.9L580.7 1118.9L581.7 1118.9L582.7 1118.9L583.7 1118.9L584.7 1118.9L585.7 1118.9L586.7 1118.9L587.7 1118.9L588.7 1118.9L589.7 1118.9L590.7 1118.9L591.7 1118.9L592.7 1118.9L593.7 1118.9L594.7 1118.9L595.7 1118.9L596.7 1118.9L597.7 1118.9L598.7 1118.9L599.7 1118.9L600.7 1118.9L601.7 1118.9L602.7 1118.9L603.7 1118.9L604.7 1118.9L605.7 1118.9L606.7 1118.9L607.7 1118.9L608.7 1118.9L609.7 1118.9L610.7 1118.9L611.7 1118.9L612.7 1118.9L613.7 1118.9L614.7 1118.9L615.7 1118.9L616.7 1118.9L617.7 1118.9L618.7 1118.9L619.7 1118.9L620.7 1118.9L621.7 1118.9L622.7 1118.9L623.7 1118.9L624.7 1118.9L625.7 1118.9L626.7 1118.9L627.7 1118.9L628.7 1118.9L629.7 1118.9L630.7 1118.9L631.7 1118.9L632.7 1118.9L633.7 1118.9L634.7 1118.9L635.7 1118.9L636.7 1118.9L637.7 1118.9L638.7 1118.9L639.7 1118.9L640.7 1118.9L641.7 1118.9L642.7 1118.9L643.7 1118.9L644.7 1118.9L645.7 1118.9L646.7 1118.9L647.7 1118.9L648.7 1118.9L649.7 1118.9L650.7 1118.9L651.7 1118.9L652.7 1118.9L653.7 1118.9L654.7 1118.9L655.7 1118.9L656.7 1118.9L657.7 1118.9L658.7 1118.9L659.7 1118.9L660.7 1118.9L661.7 1118.9L662.7 1118.9L663.7 1118.9L664.7 1118.9L665.7 1111.5L666.7 1100.5L667.7 1096.2L668.7 1089L669.7 1086.3L670.7 1085.8L671.7 1082.2L672.7 1075.8L673.7 1081L674.7 1088.4L675.7 1086.4L676.7 1087.8L677.7 1088.8L678.7 1095.2L679.7 1094L680.7 1092.5L681.7 1093.8L682.7 1094.2L683.7 1097.1L684.7 1095.2L685.7 1092.4L686.7 1094.9L687.7 1095.5L688.7 1095.9L689.7 1096.4L690.7 1094.6L691.7 1097.5L692.7 1099.2L693.7 1097.6L694.7 1097.5L695.7 1094L696.7 1095.9L697.7 1096.4L698.7 1097.1L699.7 1096.1L700.7 1097.5L701.7 1100.3L702.7 1100.5L703.7 1098.9L704.7 1097.5L705.7 1097.9L706.7 1099.3L707.7 1101.4L708.7 1100L709.7 1098.3L710.7 1100L711.7 1102L712.7 1103L713.7 1101.8L714.7 1102.5L715.7 1103.6L716.7 1104.8L717.7 1102.6L718.7 1101.2L719.7 1101.4L720.7 1102.7L721.7 1101.1L722.7 1097.9L723.7 1096.2L724.7 1097.7L725.7 1094.3L726.7 1093.6L727.7 1099.3L728.7 1103.3L729.7 1104.3L730.7 1105.6L731.7 1109L732.7 1112.5L733.7 1113.1L734.7 1114L735.7 1115.3L736.7 1116.5L737.7 1117.6L738.7 1118.8L739.7 1118.9L740.7 1118.9L741.7 1118.9L742.7 1118.9L743.7 1118.9L744.7 1118.9L745.7 1118.9L746.7 1118.9L747.7 1118.9L748.7 1118.9L749.7 1118.9L750.7 1118.9L751.7 1118.9L752.7 1118.9L753.7 1118.9L754.7 1118.9L755.7 1118.9L756.7 1118.9L757.7 1118.9L758.7 1118.9L759.7 1118.9L760.7 1118.9L761.7 1118.9L762.7 1118.9L763.7 1118.9L764.7 1118.9L765.7 1118.9L766.7 1118.9L767.7 1118.9L768.7 1118.9L769.7 1118.9L770.7 1118.9L771.7 1118.9L772.7 1118.9L773.7 1118.9L774.7 1118.9L775.7 1118.9L776.7 1118.9L777.7 1118.9L778.7 1118.9L779.7 1118.9L780.7 1118.9L781.7 1118.9L782.7 1118.9L783.7 1118.9L784.7 1118.9L785.7 1118.9L786.7 1118.9L787.7 1118.9L788.7 1118.9L789.7 1118.9L790.7 1118.9L791.7 1118.9L792.7 1118.9L793.7 1118.9L794.7 1118.9L795.7 1118.9L796.7 1118.9L797.7 1118.9L798.7 1118.9L799.7 1118.9L800.7 1118.9L801.7 1118.9L802.7 1118.9L803.7 1118.9L804.7 1118.9L805.7 1118.9L806.7 1118.9L807.7 1118.9L808.7 1118.9L809.7 1118.9L810.7 1118.9L811.7 1118.9L812.7 1118.9L813.7 1118.9L814.7 1118.9L815.7 1118.9L816.7 1118.9L817.7 1118.9L818.7 1118.9L819.7 1118.9L820.7 1118.9L821.7 1118.9L822.7 1118.9L823.7 1118.9L824.7 1118.9L825.7 1118.9L826.7 1118.9L827.7 1118.9L828.7 1118.9L829.7 1117.6L830.7 1113.7L831.7 1111.3L832.7 1109.3L833.7 1106.2L834.7 1102L835.7 1100.2L836.7 1098.2L837.7 1095.2L838.7 1096.6L839.7 1100.3L840.7 1105L841.7 1105.5L842.7 1106.4L843.7 1109.6L844.7 1112L845.7 1112.8L846.7 1113L847.7 1114.1L848.7 1115.2L849.7 1115.8L850.7 1116.4L851.7 1117L852.7 1117.6L853.7 1118.2L854.7 1118.8L855.7 1118.9L856.7 1118.9L857.7 1118.9L858.7 1118.9L859.7 1118.9L860.7 1118.9L861.7 1118.9L862.7 1118.9L863.7 1118.9L864.7 1118.9L865.7 1118.9L866.7 1118.9L867.7 1118.9L868.7 1118.9L869.7 1118.9L870.7 1118.9L871.7 1118.9L872.7 1118.9L873.7 1118.9L874.7 1118.9L875.7 1118.9L876.7 1118.9L877.7 1118.9L878.7 1118.9L879.7 1118.9L880.7 1118.9L881.7 1118.9L882.7 1118.9L883.7 1118.9L884.7 1118.9L885.7 1118.9L886.7 1118.9L887.7 1118.9L888.7 1118.9L889.7 1118.9L890.7 1118.9L891.7 1118.9L892.7 1118.9L893.7 1118.9L894.7 1118.9L895.7 1118.9L896.7 1118.9L897.7 1118.9L898.7 1118.9L899.7 1118.9L900.7 1118.9L901.7 1118.9L902.7 1118.9L903.7 1118.9L904.7 1118.9L905.7 1118.9L906.7 1118.9L907.7 1118.9L908.7 1118.9L909.7 1118.9L910.7 1118.9L911.7 1118.9L912.7 1118.9L913.7 1118.9L914.7 1118.9L915.7 1118.9L916.7 1118.9L917.7 1118.9L918.7 1118.9L919.7 1118.9L920.7 1118.9L921.7 1118.9L922.7 1118.9L923.7 1118.9L924.7 1118.9L925.7 1118.9L926.7 1118.9L927.7 1118.9L928.7 1118.9L929.7 1118.9L930.7 1118.9L931.7 1118.9L932.7 1118.9L933.7 1118.9L934.7 1118.9L935.7 1118.9L936.7 1118.9L937.7 1118.9L938.7 1118.9L939.7 1118.9L940.7 1118.9L941.7 1118.9L942.7 1110.7L943.7 1100.3L944.7 1095.9L945.7 1092.2L946.7 1087.8L947.7 1090.8L948.7 1084.3L949.7 1082.5L950.7 1080.4L951.7 1080L952.7 1081.3L953.7 1081.1L954.7 1082.9L955.7 1087.4L956.7 1090.1L957.7 1089.7L958.7 1086.4L959.7 1088.5L960.7 1090.2L961.7 1088.2L962.7 1087.1L963.7 1086.5L964.7 1089.9L965.7 1090.7L966.7 1090.2L967.7 1089.2L968.7 1090.3L969.7 1092.9L970.7 1091.7L971.7 1091.6L972.7 1087.4L973.7 1089.8L974.7 1093.5L975.7 1093.7L976.7 1092.6L977.7 1092.9L978.7 1096.7L979.7 1097.7L980.7 1096L981.7 1094.9L982.7 1094.3L983.7 1096.9L984.7 1098.1L985.7 1096.7L986.7 1096.6L987.7 1099.2L988.7 1100.7L989.7 1101.5L990.7 1099.5L991.7 1099.5L992.7 1101.2L993.7 1102.8L994.7 1101.8L995.7 1100.6L996.7 1102L997.7 1105L998.7 1104.7L999.7 1105.2L1000.7 1105.1L1001.7 1105.6L1002.7 1107.7L1003.7 1107.4L1004.7 1106.2L1005.7 1106.6L1006.7 1107.1L1007.7 1108.9L1008.7 1108.8L1009.7 1109.1L1010.7 1109.9L1011.7 1111.4L1012.7 1111.2L1013.7 1110.9L1014.7 1110.7L1015.7 1111.6L1016.7 1112.3L1017.7 1113.2L1018.7 1112.9L1019.7 1113.4L1020.7 1114.1L1021.7 1114.7L1022.7 1115.2L1023.7 1115.6L1024.7 1116L1025.7 1116.4L1026.7 1116.8L1027.7 1117.2L1028.7 1117.6L1029.7 1118L1030.7 1118.4L1031.7 1118.8L1032.7 1118.9L1033.7 1118.9L1034.7 1118.9L1035.7 1118.9L1036.7 1118.9L1037.7 1118.9L1038.7 1118.9L1039.7 1118.9L1040.7 1118.9L1041.7 1118.9L1042.7 1118.9L1043.7 1118.9L1044.7 1118.9L1045.7 1118.9L1046.7 1118.9L1047.7 1118.9L1048.7 1118.9L1049.7 1118.9L1050.7 1118.9L1051.7 1118.9L1052.7 1118.9L1053.7 1118.9L1054.7 1118.9L1055.7 1118.9L1056.7 1118.9L1057.7 1118.9L1058.7 1118.9L1059.7 1118.9L1060.7 1118.9L1061.7 1118.9L1062.7 1118.9L1063.7 1118.9L1064.7 1118.9L1065.7 1118.9L1066.7 1118.9L1067.7 1118.9L1068.7 1118.9L1069.7 1118.9L1070.7 1118.9L1071.7 1118.9L1072.7 1118.9L1073.7 1118.9L1074.7 1118.9L1075.7 1118.9L1076.7 1118.9L1077.7 1118.9L1078.7 1118.9L1079.7 1118.9L1080.7 1118.9L1081.7 1118.9L1082.7 1118.9L1083.7 1118.9L1084.7 1118.9L1085.7 1118.9L1086.7 1118.9L1087.7 1118.9L1088.7 1118.9L1089.7 1118.9L1090.7 1118.9L1091.7 1118.9L1092.7 1118.9L1093.7 1118.9L1094.7 1118.9L1095.7 1118.9L1096.7 1118.9L1097.7 1118.9L1098.7 1118.9L1099.7 1118.9L1100.7 1118.9L1101.7 1118.9L1102.7 1118.9L1103.7 1118.9L1104.7 1118.9L1105.7 1117.2L1106.7 1104.1L1107.7 1093.9L1108.7 1093.5L1109.7 1092.4L1110.7 1086.3L1111.7 1086.7L1112.7 1085.6L1113.7 1083.2L1114.7 1080.1L1115.7 1079.4L1116.7 1082.9L1117.7 1087.3L1118.7 1086.2L1119.7 1084.3L1120.7 1087.5L1121.7 1092L1122.7 1089.6L1123.7 1087.9L1124.7 1085.6L1125.7 1088.4L1126.7 1089.6L1127.7 1089.7L1128.7 1087.5L1129.7 1089.7L1130.7 1091.1L1131.7 1093.9L1132.7 1091.6L1133.7 1089.1L1134.7 1090.7L1135.7 1093L1136.7 1092.2L1137.7 1090.6L1138.7 1088.3L1139.7 1091.1L1140.7 1092.4L1141.7 1092.9L1142.7 1091.8L1143.7 1092.9L1144.7 1095.9L1145.7 1095.6L1146.7 1095.2L1147.7 1093.6L1148.7 1096L1149.7 1098.5L1150.7 1098.8L1151.7 1097L1152.7 1098.4L1153.7 1100.5L1154.7 1102.7L1155.7 1102.7L1156.7 1102.4L1157.7 1103.4L1158.7 1105.2L1159.7 1104.8L1160.7 1104.2L1161.7 1104.7L1162.7 1106.9L1163.7 1108.8L1164.7 1109.6L1165.7 1109.8L1166.7 1111.3L1167.7 1112.6L1168.7 1113L1169.7 1112.7L1170.7 1113.2L1171.7 1114.2L1172.7 1115.4L1173.7 1116.1L1174.7 1116.9L1175.7 1117.7L1176.7 1118.4L1177.7 1118.9L1178.7 1118.9L1179.7 1118.9L1180.7 1118.9L1181.7 1118.9L1182.7 1118.9L1183.7 1118.9L1184.7 1118.9L1185.7 1118.9L1186.7 1118.9L1187.7 1118.9L1188.7 1118.9L1189.7 1118.9L1190.7 1118.9L1191.7 1118.9L1192.7 1118.9L1193.7 1118.9L1194.7 1118.9L1195.7 1118.9L1196.7 1118.9L1197.7 1118.9L1198.7 1118.9L1199.7 1118.9L1200.7 1118.9L1201.7 1118.9L1202.7 1118.9L1203.7 1118.9L1204.7 1118.9L1205.7 1118.9L1206.7 1118.9L1207.7 1118.9L1208.7 1118.9L1209.7 1118.9L1210.7 1118.9L1211.7 1118.9L1212.7 1118.9L1213.7 1118.9L1214.7 1118.9L1215.7 1118.9L1216.7 1118.9L1217.7 1118.9L1218.7 1118.9L1219.7 1118.9L1220.7 1118.9L1221.7 1118.9L1222.7 1118.9L1223.7 1118.9L1224.7 1118.9L1225.7 1118.9L1226.7 1118.9L1227.7 1118.9L1228.7 1118.9L1229.7 1118.9L1230.7 1118.9L1231.7 1118.9L1232.7 1118.9L1233.7 1118.9L1234.7 1118.9L1235.7 1118.9L1236.7 1118.9L1237.7 1118.9L1238.7 1118.9L1239.7 1118.9L1240.7 1118.9L1241.7 1118.9L1242.7 1118.9L1243.7 1118.9L1244.7 1118.9L1245.7 1118.9L1246.7 1118.9L1247.7 1118.9L1248.7 1118.9L1249.7 1118.9L1250.7 1118.9L1251.7 1118.9L1252.7 1118.9L1253.7 1118.9L1254.7 1118.9L1255.7 1118.9L1256.7 1118.9L1257.7 1118.9L1258.7 1118.9L1259.7 1118.9L1260.7 1118.9L1261.7 1118.9L1262.7 1118.9L1263.7 1118.9L1264.7 1118.9L1265.7 1118.9L1266.7 1118.9L1267.7 1118.9L1268.7 1118.9L1269.7 1118.9L1270.7 1118.9L1271.7 1118.9L1272.7 1118.9L1273.7 1113.6L1274.7 1106.4L1275.7 1101.6L1276.7 1096.6L1277.7 1094.1L1278.7 1090.7L1279.7 1091.1L1280.7 1085.6L1281.7 1082.9L1282.7 1079.1L1283.7 1081.9L1284.7 1083.1L1285.7 1077.2L1286.7 1082.1L1287.7 1087L1288.7 1090.8L1289.7 1086.9L1290.7 1085.8L1291.7 1089.1L1292.7 1092.7L1293.7 1092.3L1294.7 1090.1L1295.7 1092.1L1296.7 1096.3L1297.7 1095.2L1298.7 1093.2L1299.7 1091.6L1300.7 1094.3L1301.7 1094.3L1302.7 1094.9L1303.7 1091.9L1304.7 1091.3L1305.7 1096.3L1306.7 1097.1L1307.7 1096.3L1308.7 1093.2L1309.7 1094L1310.7 1096.2L1311.7 1095.9L1312.7 1095.1L1313.7 1091.4L1314.7 1093.5L1315.7 1096.1L1316.7 1096.6L1317.7 1094.2L1318.7 1093.8L1319.7 1094.7L1320.7 1096.7L1321.7 1098.3L1322.7 1095.4L1323.7 1094.4L1324.7 1093.3L1325.7 1095.1L1326.7 1096.4L1327.7 1094.8L1328.7 1094.5L1329.7 1095.2L1330.7 1099.4L1331.7 1097.5L1332.7 1095L1333.7 1094.4L1334.7 1096.9L1335.7 1098.1L1336.7 1094.8L1337.7 1094L1338.7 1095.4L1339.7 1097.5L1340.7 1099.6L1341.7 1098.1L1342.7 1097.3L1343.7 1096.9L1344.7 1097.7L1345.7 1098L1346.7 1096.7L1347.7 1095.4L1348.7 1093.8L1349.7 1097.7L1350.7 1099.3L1351.7 1099.3L1352.7 1097.7L1353.7 1096.7L1354.7 1097.9L1355.7 1099.6L1356.7 1098L1357.7 1094.9L1358.7 1094.3L1359.7 1096.6L1360.7 1097.5L1361.7 1097.2L1362.7 1097.6L1363.7 1097.9L1364.7 1099.8L1365.7 1100.4L1366.7 1096.4L1367.7 1096.2L1368.7 1097.4L1369.7 1097.2L1370.7 1097.1L1371.7 1096.4L1372.7 1096.2L1373.7 1097.1L1374.7 1099.2L1375.7 1099.6L1376.7 1097.3L1377.7 1097.4L1378.7 1098.1L1379.7 1098.1L1380.7 1098.2L1381.7 1097.6L1382.7 1096.5L1383.7 1097.9L1384.7 1099.4L1385.7 1101.2L1386.7 1099.1L1387.7 1098.4L1388.7 1097.8L1389.7 1098.3L1390.7 1099.1L1391.7 1097.4L1392.7 1095.9L1393.7 1097.5L1394.7 1099.9L1395.7 1099.4L1396.7 1099.5L1397.7 1097.5L1398.2 1119.6L1397.7 1141.7L1396.7 1141L1395.7 1140.9L1394.7 1140.2L1393.7 1142.1L1392.7 1142L1391.7 1140.9L1390.7 1138.5L1389.7 1139.2L1388.7 1140.4L1387.7 1142L1386.7 1141.7L1385.7 1141.7L1384.7 1140.5L1383.7 1141.2L1382.7 1141.5L1381.7 1143.3L1380.7 1142.7L1379.7 1140.1L1378.7 1138L1377.7 1139.8L1376.7 1141.3L1375.7 1141.8L1374.7 1142.2L1373.7 1142.1L1372.7 1140.5L1371.7 1142.4L1370.7 1144.1L1369.7 1144.1L1368.7 1141.6L1367.7 1139.3L1366.7 1138.8L1365.7 1139.6L1364.7 1141.7L1363.7 1142L1362.7 1141.5L1361.7 1140.4L1360.7 1139.9L1359.7 1144L1358.7 1142.2L1357.7 1141.5L1356.7 1140.2L1355.7 1142.2L1354.7 1143.7L1353.7 1142.5L1352.7 1141.2L1351.7 1139.4L1350.7 1141.3L1349.7 1143.7L1348.7 1143.3L1347.7 1142.9L1346.7 1141.8L1345.7 1142.5L1344.7 1143.3L1343.7 1144L1342.7 1144.9L1341.7 1141L1340.7 1140.6L1339.7 1139L1338.7 1142L1337.7 1142.8L1336.7 1143.3L1335.7 1143L1334.7 1142.1L1333.7 1143.4L1332.7 1144.3L1331.7 1146.2L1330.7 1145L1329.7 1140.6L1328.7 1143.5L1327.7 1142.6L1326.7 1142.3L1325.7 1141.5L1324.7 1141.8L1323.7 1142.4L1322.7 1145.4L1321.7 1145.8L1320.7 1144.9L1319.7 1143.5L1318.7 1143.2L1317.7 1142.8L1316.7 1145.1L1315.7 1144.1L1314.7 1143.5L1313.7 1140.5L1312.7 1142.5L1311.7 1143.5L1310.7 1147.6L1309.7 1146.4L1308.7 1144.2L1307.7 1144.3L1306.7 1143.2L1305.7 1144.7L1304.7 1142.2L1303.7 1143.4L1302.7 1142.1L1301.7 1145.5L1300.7 1145.7L1299.7 1145.2L1298.7 1144.7L1297.7 1144.6L1296.7 1146L1295.7 1148.9L1294.7 1148.4L1293.7 1145.1L1292.7 1149.7L1291.7 1150.2L1290.7 1149.4L1289.7 1149.2L1288.7 1150.8L1287.7 1157.5L1286.7 1158.9L1285.7 1159.8L1284.7 1161L1283.7 1161.3L1282.7 1158.1L1281.7 1153.2L1280.7 1149.2L1279.7 1148.6L1278.7 1147.3L1277.7 1144L1276.7 1139.6L1275.7 1138.7L1274.7 1133.6L1273.7 1125L1272.7 1120.3L1271.7 1120.3L1270.7 1120.3L1269.7 1120.3L1268.7 1120.3L1267.7 1120.3L1266.7 1120.3L1265.7 1120.3L1264.7 1120.3L1263.7 1120.3L1262.7 1120.3L1261.7 1120.3L1260.7 1120.3L1259.7 1120.3L1258.7 1120.3L1257.7 1120.3L1256.7 1120.3L1255.7 1120.3L1254.7 1120.3L1253.7 1120.3L1252.7 1120.3L1251.7 1120.3L1250.7 1120.3L1249.7 1120.3L1248.7 1120.3L1247.7 1120.3L1246.7 1120.3L1245.7 1120.3L1244.7 1120.3L1243.7 1120.3L1242.7 1120.3L1241.7 1120.3L1240.7 1120.3L1239.7 1120.3L1238.7 1120.3L1237.7 1120.3L1236.7 1120.3L1235.7 1120.3L1234.7 1120.3L1233.7 1120.3L1232.7 1120.3L1231.7 1120.3L1230.7 1120.3L1229.7 1120.3L1228.7 1120.3L1227.7 1120.3L1226.7 1120.3L1225.7 1120.3L1224.7 1120.3L1223.7 1120.3L1222.7 1120.3L1221.7 1120.3L1220.7 1120.3L1219.7 1120.3L1218.7 1120.3L1217.7 1120.3L1216.7 1120.3L1215.7 1120.3L1214.7 1120.3L1213.7 1120.3L1212.7 1120.3L1211.7 1120.3L1210.7 1120.3L1209.7 1120.3L1208.7 1120.3L1207.7 1120.3L1206.7 1120.3L1205.7 1120.3L1204.7 1120.3L1203.7 1120.3L1202.7 1120.3L1201.7 1120.3L1200.7 1120.3L1199.7 1120.3L1198.7 1120.3L1197.7 1120.3L1196.7 1120.3L1195.7 1120.3L1194.7 1120.3L1193.7 1120.3L1192.7 1120.3L1191.7 1120.3L1190.7 1120.3L1189.7 1120.3L1188.7 1120.3L1187.7 1120.3L1186.7 1120.3L1185.7 1120.3L1184.7 1120.3L1183.7 1120.3L1182.7 1120.3L1181.7 1120.3L1180.7 1120.3L1179.7 1120.3L1178.7 1120.3L1177.7 1120.3L1176.7 1120.8L1175.7 1121.5L1174.7 1122.3L1173.7 1123.1L1172.7 1123.8L1171.7 1124.6L1170.7 1125.3L1169.7 1126.3L1168.7 1127.5L1167.7 1128.1L1166.7 1128.1L1165.7 1128.8L1164.7 1130.1L1163.7 1131.6L1162.7 1131.1L1161.7 1131.8L1160.7 1132.7L1159.7 1134.1L1158.7 1137.2L1157.7 1138.2L1156.7 1136.4L1155.7 1136.4L1154.7 1139.7L1153.7 1138.7L1152.7 1139.3L1151.7 1137.8L1150.7 1139.3L1149.7 1141.9L1148.7 1143.8L1147.7 1144.3L1146.7 1144.5L1145.7 1144.8L1144.7 1146.2L1143.7 1146.9L1142.7 1146.6L1141.7 1144.7L1140.7 1145.4L1139.7 1148.6L1138.7 1146.6L1137.7 1144.1L1136.7 1147.4L1135.7 1149.1L1134.7 1149.7L1133.7 1150.3L1132.7 1149L1131.7 1147.9L1130.7 1151.2L1129.7 1150.4L1128.7 1149.6L1127.7 1148.3L1126.7 1150.3L1125.7 1150.8L1124.7 1150.4L1123.7 1148.7L1122.7 1148.1L1121.7 1151.5L1120.7 1154.5L1119.7 1156.2L1118.7 1155.1L1117.7 1152.4L1116.7 1156.1L1115.7 1157.3L1114.7 1156.3L1113.7 1153.5L1112.7 1154.5L1111.7 1156.2L1110.7 1152.3L1109.7 1149.1L1108.7 1150.1L1107.7 1146.4L1106.7 1133.2L1105.7 1122L1104.7 1120.3L1103.7 1120.3L1102.7 1120.3L1101.7 1120.3L1100.7 1120.3L1099.7 1120.3L1098.7 1120.3L1097.7 1120.3L1096.7 1120.3L1095.7 1120.3L1094.7 1120.3L1093.7 1120.3L1092.7 1120.3L1091.7 1120.3L1090.7 1120.3L1089.7 1120.3L1088.7 1120.3L1087.7 1120.3L1086.7 1120.3L1085.7 1120.3L1084.7 1120.3L1083.7 1120.3L1082.7 1120.3L1081.7 1120.3L1080.7 1120.3L1079.7 1120.3L1078.7 1120.3L1077.7 1120.3L1076.7 1120.3L1075.7 1120.3L1074.7 1120.3L1073.7 1120.3L1072.7 1120.3L1071.7 1120.3L1070.7 1120.3L1069.7 1120.3L1068.7 1120.3L1067.7 1120.3L1066.7 1120.3L1065.7 1120.3L1064.7 1120.3L1063.7 1120.3L1062.7 1120.3L1061.7 1120.3L1060.7 1120.3L1059.7 1120.3L1058.7 1120.3L1057.7 1120.3L1056.7 1120.3L1055.7 1120.3L1054.7 1120.3L1053.7 1120.3L1052.7 1120.3L1051.7 1120.3L1050.7 1120.3L1049.7 1120.3L1048.7 1120.3L1047.7 1120.3L1046.7 1120.3L1045.7 1120.3L1044.7 1120.3L1043.7 1120.3L1042.7 1120.3L1041.7 1120.3L1040.7 1120.3L1039.7 1120.3L1038.7 1120.3L1037.7 1120.3L1036.7 1120.3L1035.7 1120.3L1034.7 1120.3L1033.7 1120.3L1032.7 1120.3L1031.7 1120.4L1030.7 1120.8L1029.7 1121.2L1028.7 1121.6L1027.7 1122L1026.7 1122.4L1025.7 1122.8L1024.7 1123.2L1023.7 1123.6L1022.7 1124L1021.7 1124.5L1020.7 1125.2L1019.7 1126.1L1018.7 1126.5L1017.7 1126.5L1016.7 1126.5L1015.7 1126.9L1014.7 1127.9L1013.7 1128.2L1012.7 1128.1L1011.7 1128.7L1010.7 1128.8L1009.7 1130.4L1008.7 1130.9L1007.7 1131L1006.7 1131.1L1005.7 1132L1004.7 1133.5L1003.7 1133.3L1002.7 1133.3L1001.7 1131.6L1000.7 1132.5L999.7 1134.6L998.7 1136.3L997.7 1136.6L996.7 1135.1L995.7 1137L994.7 1139.8L993.7 1139.5L992.7 1137.6L991.7 1138.3L990.7 1137.9L989.7 1140L988.7 1140.6L987.7 1140.7L986.7 1139.4L985.7 1140.7L984.7 1144.3L983.7 1143.2L982.7 1142.5L981.7 1142L980.7 1144.3L979.7 1147.5L978.7 1147.1L977.7 1145.9L976.7 1142.5L975.7 1143.9L974.7 1146.5L973.7 1146.5L972.7 1145.4L971.7 1147.6L970.7 1148.8L969.7 1152.1L968.7 1151.2L967.7 1149.7L966.7 1146.6L965.7 1148.1L964.7 1149.8L963.7 1147.1L962.7 1146.3L961.7 1148.2L960.7 1151.9L959.7 1152.1L958.7 1153.3L957.7 1150.4L956.7 1152.5L955.7 1154.9L954.7 1154.9L953.7 1151.4L952.7 1153.7L951.7 1159.6L950.7 1155.7L949.7 1152.5L948.7 1149.9L947.7 1151.7L946.7 1149.2L945.7 1146.1L944.7 1145.6L943.7 1142.1L942.7 1128.3L941.7 1120.3L940.7 1120.3L939.7 1120.3L938.7 1120.3L937.7 1120.3L936.7 1120.3L935.7 1120.3L934.7 1120.3L933.7 1120.3L932.7 1120.3L931.7 1120.3L930.7 1120.3L929.7 1120.3L928.7 1120.3L927.7 1120.3L926.7 1120.3L925.7 1120.3L924.7 1120.3L923.7 1120.3L922.7 1120.3L921.7 1120.3L920.7 1120.3L919.7 1120.3L918.7 1120.3L917.7 1120.3L916.7 1120.3L915.7 1120.3L914.7 1120.3L913.7 1120.3L912.7 1120.3L911.7 1120.3L910.7 1120.3L909.7 1120.3L908.7 1120.3L907.7 1120.3L906.7 1120.3L905.7 1120.3L904.7 1120.3L903.7 1120.3L902.7 1120.3L901.7 1120.3L900.7 1120.3L899.7 1120.3L898.7 1120.3L897.7 1120.3L896.7 1120.3L895.7 1120.3L894.7 1120.3L893.7 1120.3L892.7 1120.3L891.7 1120.3L890.7 1120.3L889.7 1120.3L888.7 1120.3L887.7 1120.3L886.7 1120.3L885.7 1120.3L884.7 1120.3L883.7 1120.3L882.7 1120.3L881.7 1120.3L880.7 1120.3L879.7 1120.3L878.7 1120.3L877.7 1120.3L876.7 1120.3L875.7 1120.3L874.7 1120.3L873.7 1120.3L872.7 1120.3L871.7 1120.3L870.7 1120.3L869.7 1120.3L868.7 1120.3L867.7 1120.3L866.7 1120.3L865.7 1120.3L864.7 1120.3L863.7 1120.3L862.7 1120.3L861.7 1120.3L860.7 1120.3L859.7 1120.3L858.7 1120.3L857.7 1120.3L856.7 1120.3L855.7 1120.3L854.7 1120.4L853.7 1121L852.7 1121.6L851.7 1122.2L850.7 1122.8L849.7 1123.4L848.7 1124L847.7 1124.7L846.7 1125.9L845.7 1127.4L844.7 1129L843.7 1130.8L842.7 1130.8L841.7 1133.9L840.7 1136L839.7 1136.7L838.7 1138.2L837.7 1143.3L836.7 1143.1L835.7 1137.8L834.7 1135.2L833.7 1134.4L832.7 1131.3L831.7 1127.8L830.7 1125.5L829.7 1121.6L828.7 1120.3L827.7 1120.3L826.7 1120.3L825.7 1120.3L824.7 1120.3L823.7 1120.3L822.7 1120.3L821.7 1120.3L820.7 1120.3L819.7 1120.3L818.7 1120.3L817.7 1120.3L816.7 1120.3L815.7 1120.3L814.7 1120.3L813.7 1120.3L812.7 1120.3L811.7 1120.3L810.7 1120.3L809.7 1120.3L808.7 1120.3L807.7 1120.3L806.7 1120.3L805.7 1120.3L804.7 1120.3L803.7 1120.3L802.7 1120.3L801.7 1120.3L800.7 1120.3L799.7 1120.3L798.7 1120.3L797.7 1120.3L796.7 1120.3L795.7 1120.3L794.7 1120.3L793.7 1120.3L792.7 1120.3L791.7 1120.3L790.7 1120.3L789.7 1120.3L788.7 1120.3L787.7 1120.3L786.7 1120.3L785.7 1120.3L784.7 1120.3L783.7 1120.3L782.7 1120.3L781.7 1120.3L780.7 1120.3L779.7 1120.3L778.7 1120.3L777.7 1120.3L776.7 1120.3L775.7 1120.3L774.7 1120.3L773.7 1120.3L772.7 1120.3L771.7 1120.3L770.7 1120.3L769.7 1120.3L768.7 1120.3L767.7 1120.3L766.7 1120.3L765.7 1120.3L764.7 1120.3L763.7 1120.3L762.7 1120.3L761.7 1120.3L760.7 1120.3L759.7 1120.3L758.7 1120.3L757.7 1120.3L756.7 1120.3L755.7 1120.3L754.7 1120.3L753.7 1120.3L752.7 1120.3L751.7 1120.3L750.7 1120.3L749.7 1120.3L748.7 1120.3L747.7 1120.3L746.7 1120.3L745.7 1120.3L744.7 1120.3L743.7 1120.3L742.7 1120.3L741.7 1120.3L740.7 1120.3L739.7 1120.3L738.7 1120.4L737.7 1121.6L736.7 1122.7L735.7 1123.9L734.7 1124.6L733.7 1126.1L732.7 1128.1L731.7 1129.2L730.7 1131.8L729.7 1135.6L728.7 1138.5L727.7 1139.1L726.7 1142.8L725.7 1145.2L724.7 1142.9L723.7 1139L722.7 1138.4L721.7 1139.5L720.7 1137.2L719.7 1136.8L718.7 1135.1L717.7 1137.9L716.7 1136.9L715.7 1136.3L714.7 1135.7L713.7 1137.9L712.7 1138.7L711.7 1135.4L710.7 1137.7L709.7 1138.9L708.7 1139.7L707.7 1140.4L706.7 1139.4L705.7 1140.4L704.7 1141.5L703.7 1141.5L702.7 1141.9L701.7 1139.9L700.7 1139L699.7 1142.1L698.7 1142.7L697.7 1140.2L696.7 1141.2L695.7 1142.4L694.7 1144.7L693.7 1144.4L692.7 1144.6L691.7 1142.9L690.7 1141.4L689.7 1142L688.7 1143.4L687.7 1144.4L686.7 1142.3L685.7 1143.1L684.7 1144L683.7 1145.2L682.7 1145.6L681.7 1145.3L680.7 1144.6L679.7 1147.3L678.7 1148.7L677.7 1145.4L676.7 1147.1L675.7 1149.3L674.7 1152L673.7 1152.5L672.7 1154.1L671.7 1162.4L670.7 1157.9L669.7 1152.2L668.7 1152.5L667.7 1147.4L666.7 1139L665.7 1127.3L664.7 1120.3L663.7 1120.3L662.7 1120.3L661.7 1120.3L660.7 1120.3L659.7 1120.3L658.7 1120.3L657.7 1120.3L656.7 1120.3L655.7 1120.3L654.7 1120.3L653.7 1120.3L652.7 1120.3L651.7 1120.3L650.7 1120.3L649.7 1120.3L648.7 1120.3L647.7 1120.3L646.7 1120.3L645.7 1120.3L644.7 1120.3L643.7 1120.3L642.7 1120.3L641.7 1120.3L640.7 1120.3L639.7 1120.3L638.7 1120.3L637.7 1120.3L636.7 1120.3L635.7 1120.3L634.7 1120.3L633.7 1120.3L632.7 1120.3L631.7 1120.3L630.7 1120.3L629.7 1120.3L628.7 1120.3L627.7 1120.3L626.7 1120.3L625.7 1120.3L624.7 1120.3L623.7 1120.3L622.7 1120.3L621.7 1120.3L620.7 1120.3L619.7 1120.3L618.7 1120.3L617.7 1120.3L616.7 1120.3L615.7 1120.3L614.7 1120.3L613.7 1120.3L612.7 1120.3L611.7 1120.3L610.7 1120.3L609.7 1120.3L608.7 1120.3L607.7 1120.3L606.7 1120.3L605.7 1120.3L604.7 1120.3L603.7 1120.3L602.7 1120.3L601.7 1120.3L600.7 1120.3L599.7 1120.3L598.7 1120.3L597.7 1120.3L596.7 1120.3L595.7 1120.3L594.7 1120.3L593.7 1120.3L592.7 1120.3L591.7 1120.3L590.7 1120.3L589.7 1120.3L588.7 1120.3L587.7 1120.3L586.7 1120.3L585.7 1120.3L584.7 1120.3L583.7 1120.3L582.7 1120.3L581.7 1120.3L580.7 1120.3L579.7 1120.3L578.7 1120.3L577.7 1120.3L576.7 1120.3L575.7 1120.3L574.7 1120.3L573.7 1120.3L572.7 1120.3L571.7 1120.3L570.7 1120.3L569.7 1120.3L568.7 1120.5L567.7 1121.3L566.7 1122.2L565.7 1123.1L564.7 1123.9L563.7 1124.4L562.7 1125.4L561.7 1126.3L560.7 1127.6L559.7 1127L558.7 1128.7L557.7 1130.6L556.7 1131.5L555.7 1132.8L554.7 1132.6L553.7 1133.7L552.7 1134.8L551.7 1136.7L550.7 1137.4L549.7 1135.4L548.7 1136.8L547.7 1139.9L546.7 1140.9L545.7 1139.4L544.7 1139.9L543.7 1140.5L542.7 1143.3L541.7 1147.6L540.7 1147.8L539.7 1143.5L538.7 1144.1L537.7 1144.8L536.7 1145.6L535.7 1142.1L534.7 1143L533.7 1145L532.7 1145.2L531.7 1148L530.7 1146.4L529.7 1146.3L528.7 1148.8L527.7 1146.7L526.7 1146.7L525.7 1144L524.7 1143L523.7 1143.2L522.7 1144.1L521.7 1143.9L520.7 1142.9L519.7 1143.6L518.7 1145.9L517.7 1148.6L516.7 1147.2L515.7 1146.4L514.7 1146.9L513.7 1149.1L512.7 1146.5L511.7 1147.6L510.7 1148L509.7 1156.9L508.7 1159.5L507.7 1161.9L506.7 1161.7L505.7 1156.8L504.7 1149.9L503.7 1150.1L502.7 1145.1L501.7 1141.3L500.7 1129.8L499.7 1120.3L498.7 1120.3L497.7 1120.3L496.7 1120.3L495.7 1120.3L494.7 1120.3L493.7 1120.3L492.7 1120.3L491.7 1120.3L490.7 1120.3L489.7 1120.3L488.7 1120.3L487.7 1120.3L486.7 1120.3Z" fill="#7fa4ca"/></svg>
<div class="a" style="left:918.1px;top:81.2px;width:2.2px;height:270.0px;background:#ececec;"></div>
<svg class="a" style="left:-21.8px;top:-830.8px;" width="1400.0" height="360.0" viewBox="0 0 1400.0 360.0"><path d="M934 905.4 H948 Q950.2 905.4 950.2 907.6 V912.4 L941 922.4 L931.8 912.4 V907.6 Q931.8 905.4 934 905.4 Z" fill="#e4e4e4" stroke="#a8a8a8" stroke-width="0.8"/><path d="M941 910 V930" stroke="#f6f6f6" stroke-width="2"/></svg>
</div>
<!-- loops -->
<div class="a" style="left:1401.4px;top:116.6px;width:626.0px;height:1064.4px;background:#1c1e20;border-radius:4.5px;"></div>
<div class="a" style="left:1402.6px;top:117.8px;width:1623.6px;height:1062px;width:623.6px;border-radius:3.5px;overflow:hidden;background:#383838;">
<div class="a" style="left:0.0px;top:0.0px;width:623.6px;height:42.2px;background:#4a4a4a;"></div>
<div class="a" style="left:0.0px;top:42.2px;width:623.6px;height:1.2px;background:#2a2a2a;"></div>
<div class="a" style="left:7.4px;top:7.0px;width:91.4px;height:29.0px;background:#3a3a3a;border-radius:5.5px;box-shadow:0 0 0 1px #2e2e2e;overflow:hidden;"></div>
<div class="a" style="left:7.4px;top:7.0px;width:45.0px;height:29.0px;background:#3572b4;border-radius:5.5px 0 0 5.5px;"></div>
<span class="t" style="left:199.2px;top:12.4px;font-size:18.4px;color:#c4c4c4;letter-spacing:0.17px;">Loop Packs:</span>
<span class="t" style="left:317.4px;top:12.4px;font-size:18.4px;color:#f0f0f0;letter-spacing:0.12px;">All Genres</span>
<div class="a" style="left:0.0px;top:43.4px;width:623.6px;height:55.8px;background:#393939;"></div>
<div class="a" style="left:57.8px;top:43.4px;width:169.8px;height:55.8px;background:#3874b6;"></div>
<div class="a" style="left:57.2px;top:43.4px;width:1.0px;height:55.8px;background:#2e2e2e;"></div>
<div class="a" style="left:227.6px;top:43.4px;width:1.0px;height:55.8px;background:#2c2c2c;"></div>
<div class="a" style="left:398.0px;top:43.4px;width:1.0px;height:55.8px;background:#2f2f2f;"></div>
<div class="a" style="left:567.0px;top:43.4px;width:1.0px;height:55.8px;background:#2f2f2f;"></div>
<div class="a" style="left:0.0px;top:99.2px;width:623.6px;height:1.2px;background:#2a2a2a;"></div>
<span class="t" style="left:102.3px;top:61.5px;font-size:16.2px;color:#e8f1fb;letter-spacing:0.34px;">Instrument</span>
<span class="t" style="left:291.2px;top:61.5px;font-size:16.2px;color:#e6e6e6;letter-spacing:-0.13px;">Genre</span>
<span class="t" style="left:440.2px;top:61.5px;font-size:16.2px;color:#e6e6e6;letter-spacing:0.46px;">Descriptors</span>
<div class="a" style="left:0.0px;top:100.4px;width:623.6px;height:214.0px;background:#4f4f4f;"></div>
<div class="a" style="left:10.0px;top:111.0px;width:599.8px;height:191.0px;background:#333333;border-radius:4px;"></div>
<div class="a" style="left:11.0px;top:112.0px;width:597.8px;height:189.3px;background:#393939;border-radius:3px;"></div>
<div class="a" style="left:160.0px;top:112.0px;width:1.0px;height:189.3px;background:#323232;"></div>
<div class="a" style="left:309.4px;top:112.0px;width:1.0px;height:189.3px;background:#323232;"></div>
<div class="a" style="left:458.8px;top:112.0px;width:1.0px;height:189.3px;background:#323232;"></div>
<div class="a" style="left:11.0px;top:138.6px;width:597.8px;height:1.0px;background:#343434;"></div>
<div class="a" style="left:11.0px;top:165.6px;width:597.8px;height:1.0px;background:#343434;"></div>
<div class="a" style="left:11.0px;top:192.7px;width:597.8px;height:1.0px;background:#343434;"></div>
<div class="a" style="left:11.0px;top:219.7px;width:597.8px;height:1.0px;background:#343434;"></div>
<div class="a" style="left:11.0px;top:246.8px;width:597.8px;height:1.0px;background:#343434;"></div>
<div class="a" style="left:11.0px;top:273.8px;width:597.8px;height:1.0px;background:#343434;"></div>
<div class="a" style="left:309.9px;top:193.2px;width:149.4px;height:27.1px;background:#434343;"></div>
<span class="t" style="left:50.2px;top:117.9px;font-size:16.2px;color:#e9e9e9;letter-spacing:0.10px;">All Drums</span>
<span class="t" style="left:214.7px;top:117.9px;font-size:16.2px;color:#e9e9e9;letter-spacing:-0.11px;">Piano</span>
<span class="t" style="left:358.1px;top:117.9px;font-size:16.2px;color:#e9e9e9;letter-spacing:0.13px;">Guitars</span>
<span class="t" style="left:507.6px;top:117.9px;font-size:16.2px;color:#e9e9e9;letter-spacing:0.43px;">Strings</span>
<span class="t" style="left:72.2px;top:144.9px;font-size:16.2px;color:#e9e9e9;">Kits</span>
<span class="t" style="left:209.7px;top:144.9px;font-size:16.2px;color:#e9e9e9;letter-spacing:0.29px;">Synths</span>
<span class="t" style="left:328.1px;top:144.9px;font-size:16.2px;color:#e9e9e9;letter-spacing:0.23px;">Acoustic Guitar</span>
<span class="t" style="left:495.6px;top:144.9px;font-size:16.2px;color:#e9e9e9;letter-spacing:0.24px;">Woodwind</span>
<span class="t" style="left:45.2px;top:172.0px;font-size:16.2px;color:#e9e9e9;letter-spacing:0.10px;">Percussion</span>
<span class="t" style="left:196.7px;top:172.0px;font-size:16.2px;color:#e9e9e9;letter-spacing:-0.05px;">Elec Piano</span>
<span class="t" style="left:344.1px;top:172.0px;font-size:16.2px;color:#e9e9e9;letter-spacing:0.09px;">Elec Guitar</span>
<span class="t" style="left:513.6px;top:172.0px;font-size:16.2px;color:#e9e9e9;letter-spacing:-0.10px;">Brass</span>
<span class="t" style="left:42.5px;top:199.0px;font-size:16.2px;color:#e9e9e9;letter-spacing:0.21px;">Tambourine</span>
<span class="t" style="left:212.4px;top:199.0px;font-size:16.2px;color:#e9e9e9;letter-spacing:0.12px;">Organ</span>
<span class="t" style="left:341.6px;top:199.0px;font-size:16.2px;color:#5e5e5e;letter-spacing:0.12px;">Slide Guitar</span>
<span class="t" style="left:509.8px;top:199.0px;font-size:16.2px;color:#e9e9e9;letter-spacing:0.15px;">Vocals</span>
<span class="t" style="left:60.2px;top:226.1px;font-size:16.2px;color:#e9e9e9;letter-spacing:-0.07px;">Shaker</span>
<span class="t" style="left:205.2px;top:226.1px;font-size:16.2px;color:#e9e9e9;letter-spacing:0.21px;">Clavinet</span>
<span class="t" style="left:367.1px;top:226.1px;font-size:16.2px;color:#e9e9e9;letter-spacing:-0.34px;">Bass</span>
<span class="t" style="left:513.1px;top:226.1px;font-size:16.2px;color:#e9e9e9;letter-spacing:0.14px;">Beats</span>
<span class="t" style="left:61.7px;top:253.1px;font-size:16.2px;color:#e9e9e9;letter-spacing:0.07px;">Conga</span>
<span class="t" style="left:208.7px;top:253.1px;font-size:16.2px;color:#e9e9e9;letter-spacing:0.28px;">Mallets</span>
<span class="t" style="left:350.6px;top:253.1px;font-size:16.2px;color:#e9e9e9;letter-spacing:-0.06px;">Syn Bass</span>
<span class="t" style="left:482.1px;top:253.1px;font-size:16.2px;color:#e9e9e9;letter-spacing:0.29px;">Sound Effects</span>
<span class="t" style="left:62.2px;top:280.2px;font-size:16.2px;color:#e9e9e9;letter-spacing:0.04px;">Bongo</span>
<span class="t" style="left:214.7px;top:280.2px;font-size:16.2px;color:#e9e9e9;letter-spacing:0.19px;">Vibes</span>
<span class="t" style="left:349.1px;top:280.2px;font-size:16.2px;color:#e9e9e9;letter-spacing:-0.13px;">Elec Bass</span>
<span class="t" style="left:508.1px;top:280.2px;font-size:16.2px;color:#e9e9e9;letter-spacing:0.26px;">Jingles</span>
<div class="a" style="left:0.0px;top:314.4px;width:623.6px;height:1.2px;background:#2c2c2c;"></div>
<div class="a" style="left:0.0px;top:315.6px;width:623.6px;height:50.0px;background:#5e5e5e;"></div>
<span class="t" style="left:10.0px;top:334.9px;font-size:18.4px;color:#d2d2d2;letter-spacing:-0.03px;">Scale:</span>
<div class="a" style="left:67.2px;top:328.4px;width:113.0px;height:29.4px;background:#4a4a4a;border-radius:5.5px;box-shadow:0 0 0 1px #3a3a3a;"></div>
<span class="t" style="left:82.9px;top:334.2px;font-size:18.4px;color:#f0f0f0;letter-spacing:-0.35px;">Any</span>
<div class="a" style="left:192.0px;top:328.4px;width:418.0px;height:29.4px;background:#525252;border-radius:5.5px;box-shadow:0 0 0 1px #3e3e3e;"></div>
<span class="t" style="left:232.0px;top:332.8px;font-size:18.4px;color:#6c6c6c;letter-spacing:0.27px;">Search Loops</span>
<div class="a" style="left:0.0px;top:365.6px;width:623.6px;height:1.0px;background:#303030;"></div>
<div class="a" style="left:0.0px;top:366.6px;width:623.6px;height:31.0px;background:#494949;"></div>
<div class="a" style="left:0.0px;top:397.6px;width:623.6px;height:1.6px;background:#262626;"></div>
<div class="a" style="left:42.4px;top:368.8px;width:1.2px;height:27.0px;background:#3a3a3a;"></div>
<div class="a" style="left:511.6px;top:368.8px;width:1.2px;height:27.0px;background:#3a3a3a;"></div>
<div class="a" style="left:582.8px;top:368.8px;width:1.2px;height:27.0px;background:#3a3a3a;"></div>
<span class="t" style="left:53.0px;top:373.4px;font-size:15.6px;color:#ececec;letter-spacing:-0.04px;">Name</span>
<span class="t" style="left:522.4px;top:373.4px;font-size:15.6px;color:#ececec;letter-spacing:0.13px;">Beats</span>
<div class="a" style="left:0.0px;top:399.7px;width:623.6px;height:34.1px;background:#353535;"></div>
<div class="a" style="left:0.0px;top:433.8px;width:623.6px;height:34.1px;background:#393939;"></div>
<div class="a" style="left:0.0px;top:468.0px;width:623.6px;height:34.1px;background:#353535;"></div>
<div class="a" style="left:0.0px;top:502.2px;width:623.6px;height:34.1px;background:#393939;"></div>
<div class="a" style="left:0.0px;top:536.3px;width:623.6px;height:34.1px;background:#353535;"></div>
<div class="a" style="left:0.0px;top:570.5px;width:623.6px;height:34.1px;background:#393939;"></div>
<div class="a" style="left:0.0px;top:604.6px;width:623.6px;height:34.1px;background:#353535;"></div>
<div class="a" style="left:0.0px;top:638.8px;width:623.6px;height:34.1px;background:#393939;"></div>
<div class="a" style="left:0.0px;top:672.9px;width:623.6px;height:34.1px;background:#353535;"></div>
<div class="a" style="left:0.0px;top:707.0px;width:623.6px;height:34.1px;background:#393939;"></div>
<div class="a" style="left:0.0px;top:741.2px;width:623.6px;height:34.1px;background:#353535;"></div>
<div class="a" style="left:0.0px;top:775.4px;width:623.6px;height:34.1px;background:#393939;"></div>
<div class="a" style="left:0.0px;top:809.5px;width:623.6px;height:34.1px;background:#353535;"></div>
<div class="a" style="left:0.0px;top:843.7px;width:623.6px;height:34.1px;background:#393939;"></div>
<div class="a" style="left:0.0px;top:877.8px;width:623.6px;height:34.1px;background:#353535;"></div>
<div class="a" style="left:0.0px;top:912.0px;width:623.6px;height:34.1px;background:#393939;"></div>
<div class="a" style="left:0.0px;top:946.1px;width:623.6px;height:34.1px;background:#353535;"></div>
<div class="a" style="left:0.0px;top:980.2px;width:623.6px;height:34.1px;background:#393939;"></div>
<div class="a" style="left:0.0px;top:1014.4px;width:623.6px;height:34.1px;background:#353535;"></div>
<div class="a" style="left:0.0px;top:399.2px;width:43.0px;height:625.0px;background:rgba(255,255,255,0.035);"></div>
<div class="a" style="left:42.4px;top:399.2px;width:1.2px;height:625.0px;background:#303030;"></div>
<div class="a" style="left:511.6px;top:399.2px;width:1.2px;height:625.0px;background:#303030;"></div>
<div class="a" style="left:582.8px;top:399.2px;width:1.2px;height:625.0px;background:#323232;"></div>
<div class="a" style="left:9.4px;top:404.6px;width:24.8px;height:24.4px;background:#33506f;border-radius:5.5px;"></div>
<span class="t" style="left:53.0px;top:409.6px;font-size:18.4px;color:#6e6e6e;letter-spacing:0.35px;">Splashy Clap Topper</span>
<span class="t" style="left:522.4px;top:409.6px;font-size:18.4px;color:#6e6e6e;">8</span>
<div class="a" style="left:595.2px;top:406.4px;width:18.0px;height:18.6px;background:#303030;border-radius:4.5px;"></div>
<div class="a" style="left:9.4px;top:438.7px;width:24.8px;height:24.4px;background:#33506f;border-radius:5.5px;"></div>
<span class="t" style="left:53.0px;top:443.8px;font-size:18.4px;color:#6e6e6e;letter-spacing:0.46px;">Splashy Hat Topper</span>
<span class="t" style="left:522.4px;top:443.8px;font-size:18.4px;color:#6e6e6e;">8</span>
<div class="a" style="left:595.2px;top:440.6px;width:18.0px;height:18.6px;background:#303030;border-radius:4.5px;"></div>
<div class="a" style="left:9.4px;top:472.9px;width:24.8px;height:24.4px;background:#33506f;border-radius:5.5px;"></div>
<span class="t" style="left:53.0px;top:477.9px;font-size:18.4px;color:#6e6e6e;letter-spacing:0.38px;">Split Seconds Beat</span>
<span class="t" style="left:522.4px;top:477.9px;font-size:18.4px;color:#6e6e6e;">8</span>
<div class="a" style="left:595.2px;top:474.7px;width:18.0px;height:18.6px;background:#303030;border-radius:4.5px;"></div>
<div class="a" style="left:9.4px;top:507.1px;width:24.8px;height:24.4px;background:#33506f;border-radius:5.5px;"></div>
<span class="t" style="left:53.0px;top:512.1px;font-size:18.4px;color:#6e6e6e;letter-spacing:0.43px;">Splitting Synth Layers</span>
<span class="t" style="left:522.4px;top:512.1px;font-size:18.4px;color:#6e6e6e;">16</span>
<div class="a" style="left:595.2px;top:508.9px;width:18.0px;height:18.6px;background:#303030;border-radius:4.5px;"></div>
<div class="a" style="left:9.4px;top:541.2px;width:24.8px;height:24.4px;background:#3a76b8;border-radius:5.5px;"></div>
<span class="t" style="left:53.0px;top:546.2px;font-size:18.4px;color:#f4f4f4;letter-spacing:0.52px;">Spooky Night Synth</span>
<span class="t" style="left:522.4px;top:546.2px;font-size:18.4px;color:#f4f4f4;">8</span>
<div class="a" style="left:595.2px;top:543.0px;width:18.0px;height:18.6px;background:#2e2e2e;border-radius:4.5px;"></div>
<div class="a" style="left:9.4px;top:575.4px;width:24.8px;height:24.4px;background:#33506f;border-radius:5.5px;"></div>
<span class="t" style="left:53.0px;top:580.4px;font-size:18.4px;color:#6e6e6e;letter-spacing:0.57px;">Sporadic Hit Topper</span>
<span class="t" style="left:522.4px;top:580.4px;font-size:18.4px;color:#6e6e6e;">8</span>
<div class="a" style="left:595.2px;top:577.2px;width:18.0px;height:18.6px;background:#303030;border-radius:4.5px;"></div>
<div class="a" style="left:9.4px;top:609.5px;width:24.8px;height:24.4px;background:#33506f;border-radius:5.5px;"></div>
<span class="t" style="left:53.0px;top:614.5px;font-size:18.4px;color:#6e6e6e;letter-spacing:0.37px;">Spotless Beat</span>
<span class="t" style="left:522.4px;top:614.5px;font-size:18.4px;color:#6e6e6e;">8</span>
<div class="a" style="left:595.2px;top:611.3px;width:18.0px;height:18.6px;background:#303030;border-radius:4.5px;"></div>
<div class="a" style="left:9.4px;top:643.6px;width:24.8px;height:24.4px;background:#3a76b8;border-radius:5.5px;"></div>
<span class="t" style="left:53.0px;top:648.7px;font-size:18.4px;color:#f4f4f4;letter-spacing:0.57px;">Spotlight Beat</span>
<span class="t" style="left:522.4px;top:648.7px;font-size:18.4px;color:#f4f4f4;">32</span>
<div class="a" style="left:595.2px;top:645.5px;width:18.0px;height:18.6px;background:#2e2e2e;border-radius:4.5px;"></div>
<div class="a" style="left:9.4px;top:677.8px;width:24.8px;height:24.4px;background:#33506f;border-radius:5.5px;"></div>
<span class="t" style="left:53.0px;top:682.8px;font-size:18.4px;color:#6e6e6e;letter-spacing:0.30px;">Spring Romance Erhu 05</span>
<span class="t" style="left:522.4px;top:682.8px;font-size:18.4px;color:#6e6e6e;">16</span>
<div class="a" style="left:595.2px;top:679.6px;width:18.0px;height:18.6px;background:#303030;border-radius:4.5px;"></div>
<div class="a" style="left:9.4px;top:711.9px;width:24.8px;height:24.4px;background:#33506f;border-radius:5.5px;"></div>
<span class="t" style="left:53.0px;top:717.0px;font-size:18.4px;color:#6e6e6e;letter-spacing:0.30px;">Springtime Garden Dizi 01</span>
<span class="t" style="left:522.4px;top:717.0px;font-size:18.4px;color:#6e6e6e;">8</span>
<div class="a" style="left:595.2px;top:713.8px;width:18.0px;height:18.6px;background:#303030;border-radius:4.5px;"></div>
<div class="a" style="left:9.4px;top:746.1px;width:24.8px;height:24.4px;background:#33506f;border-radius:5.5px;"></div>
<span class="t" style="left:53.0px;top:751.1px;font-size:18.4px;color:#6e6e6e;letter-spacing:0.40px;">Springtime Garden Dizi 02</span>
<span class="t" style="left:522.4px;top:751.1px;font-size:18.4px;color:#6e6e6e;">8</span>
<div class="a" style="left:595.2px;top:747.9px;width:18.0px;height:18.6px;background:#303030;border-radius:4.5px;"></div>
<div class="a" style="left:9.4px;top:780.2px;width:24.8px;height:24.4px;background:#33506f;border-radius:5.5px;"></div>
<span class="t" style="left:53.0px;top:785.3px;font-size:18.4px;color:#6e6e6e;letter-spacing:0.43px;">Springtime Garden Dizi 03</span>
<span class="t" style="left:522.4px;top:785.3px;font-size:18.4px;color:#6e6e6e;">8</span>
<div class="a" style="left:595.2px;top:782.1px;width:18.0px;height:18.6px;background:#303030;border-radius:4.5px;"></div>
<div class="a" style="left:9.4px;top:814.4px;width:24.8px;height:24.4px;background:#33506f;border-radius:5.5px;"></div>
<span class="t" style="left:53.0px;top:819.4px;font-size:18.4px;color:#6e6e6e;letter-spacing:0.43px;">Springtime Garden Dizi 04</span>
<span class="t" style="left:522.4px;top:819.4px;font-size:18.4px;color:#6e6e6e;">8</span>
<div class="a" style="left:595.2px;top:816.2px;width:18.0px;height:18.6px;background:#303030;border-radius:4.5px;"></div>
<div class="a" style="left:9.4px;top:848.6px;width:24.8px;height:24.4px;background:#3a76b8;border-radius:5.5px;"></div>
<span class="t" style="left:53.0px;top:853.6px;font-size:18.4px;color:#f4f4f4;letter-spacing:0.41px;">Square Arpeggio Lead</span>
<span class="t" style="left:522.4px;top:853.6px;font-size:18.4px;color:#f4f4f4;">16</span>
<div class="a" style="left:595.2px;top:850.4px;width:18.0px;height:18.6px;background:#2e2e2e;border-radius:4.5px;"></div>
<div class="a" style="left:9.4px;top:882.7px;width:24.8px;height:24.4px;background:#3a76b8;border-radius:5.5px;"></div>
<span class="t" style="left:53.0px;top:887.7px;font-size:18.4px;color:#f4f4f4;letter-spacing:0.16px;">Squeak Beat 01</span>
<span class="t" style="left:522.4px;top:887.7px;font-size:18.4px;color:#f4f4f4;">8</span>
<div class="a" style="left:595.2px;top:884.5px;width:18.0px;height:18.6px;background:#2e2e2e;border-radius:4.5px;"></div>
<div class="a" style="left:9.4px;top:916.8px;width:24.8px;height:24.4px;background:#3a76b8;border-radius:5.5px;"></div>
<span class="t" style="left:53.0px;top:921.9px;font-size:18.4px;color:#f4f4f4;letter-spacing:0.35px;">Squeak Beat 02</span>
<span class="t" style="left:522.4px;top:921.9px;font-size:18.4px;color:#f4f4f4;">8</span>
<div class="a" style="left:595.2px;top:918.6px;width:18.0px;height:18.6px;background:#2e2e2e;border-radius:4.5px;"></div>
<div class="a" style="left:9.4px;top:951.0px;width:24.8px;height:24.4px;background:#3a76b8;border-radius:5.5px;"></div>
<span class="t" style="left:53.0px;top:956.0px;font-size:18.4px;color:#f4f4f4;letter-spacing:0.39px;">Squeak Beat 03</span>
<span class="t" style="left:522.4px;top:956.0px;font-size:18.4px;color:#f4f4f4;">8</span>
<div class="a" style="left:595.2px;top:952.8px;width:18.0px;height:18.6px;background:#2e2e2e;border-radius:4.5px;"></div>
<div class="a" style="left:9.4px;top:985.1px;width:24.8px;height:24.4px;background:#3a76b8;border-radius:5.5px;"></div>
<span class="t" style="left:53.0px;top:990.2px;font-size:18.4px;color:#f4f4f4;letter-spacing:0.27px;">Squeaky Dub Break</span>
<span class="t" style="left:522.4px;top:990.2px;font-size:18.4px;color:#f4f4f4;">32</span>
<div class="a" style="left:595.2px;top:986.9px;width:18.0px;height:18.6px;background:#2e2e2e;border-radius:4.5px;"></div>
<div class="a" style="left:9.4px;top:1019.3px;width:24.8px;height:24.4px;background:#3a76b8;border-radius:5.5px;"></div>
<svg class="a" style="left:0.0px;top:0.0px;" width="624.0" height="1062.0" viewBox="0 0 624.0 1062.0"><g transform="translate(-1402.6 -117.8)"><rect x="1423.6" y="136.6" width="17.4" height="5.8" rx="1.2" fill="none" stroke="#f0f0f0" stroke-width="1.5"/><path d="M1429.4 136.6 V142.4 M1435.2 136.6 V142.4" stroke="#f0f0f0" stroke-width="1.4"/><rect x="1469.4" y="133.4" width="17.6" height="13.2" fill="none" stroke="#f0f0f0" stroke-width="1.5"/><path d="M1475.3 133.4 V146.6 M1481.1 133.4 V146.6" stroke="#f0f0f0" stroke-width="1.4"/><path d="M1823.4 135.6 L1828 131 L1832.6 135.6 M1823.4 142.8 L1828 147.4 L1832.6 142.8" fill="none" stroke="#c8c8c8" stroke-width="1.5" stroke-linecap="round" stroke-linejoin="round"/><path d="M1420.8 179 L1440 198.2 M1440 179 L1420.8 198.2" stroke="#8a8a8a" stroke-width="1.3"/><path d="M1997.2 198.2 C1992 193.6 1986.8 189.6 1986.8 185 C1986.8 181.6 1989.4 179.6 1992 179.6 C1994.4 179.6 1996.2 181 1997.2 183 C1998.2 181 2000 179.6 2002.4 179.6 C2005 179.6 2007.6 181.6 2007.6 185 C2007.6 189.6 2002.4 193.6 1997.2 198.2 Z" fill="none" stroke="#8c8c8c" stroke-width="1.4"/><path d="M1702.6 439.6 H1723.8" stroke="#bdbdbd" stroke-width="1.3"/><path d="M1563 457.2 L1567.8 452.4 L1572.6 457.2 M1563 463.8 L1567.8 468.6 L1572.6 463.8" fill="none" stroke="#c8c8c8" stroke-width="1.5" stroke-linecap="round" stroke-linejoin="round"/><circle cx="1607.4" cy="458.8" r="6.2" fill="none" stroke="#7c7c7c" stroke-width="1.5"/><path d="M1611.8 463.6 L1617 469.4" stroke="#7c7c7c" stroke-width="1.7" stroke-linecap="round"/><path d="M1618.6 459.4 L1621.8 462.4 L1625 459.4" fill="none" stroke="#7c7c7c" stroke-width="1.4" stroke-linecap="round"/><path d="M2005.9 506.4 C2001.8 502.8 1997.8 499.6 1997.8 496 C1997.8 493.4 1999.8 491.8 2001.8 491.8 C2003.7 491.8 2005.1 492.9 2005.9 494.5 C2006.7 492.9 2008.1 491.8 2010 491.8 C2012 491.8 2014 493.4 2014 496 C2014 499.6 2010 502.8 2005.9 506.4 Z" fill="#ffffff"/><path d="M1415.7 533.8 V535.4" stroke="#7f93a8" stroke-width="1.5" stroke-linecap="round"/><path d="M1418.6 530.9 V538.3" stroke="#7f93a8" stroke-width="1.5" stroke-linecap="round"/><path d="M1421.5 532.7 V536.5" stroke="#7f93a8" stroke-width="1.5" stroke-linecap="round"/><path d="M1424.4 528.8 V540.4" stroke="#7f93a8" stroke-width="1.5" stroke-linecap="round"/><path d="M1427.3 532.7 V536.5" stroke="#7f93a8" stroke-width="1.5" stroke-linecap="round"/><path d="M1430.2 530.9 V538.3" stroke="#7f93a8" stroke-width="1.5" stroke-linecap="round"/><path d="M1433.1 533.8 V535.4" stroke="#7f93a8" stroke-width="1.5" stroke-linecap="round"/><circle cx="1899.3" cy="534.6" r="8.8" fill="none" stroke="#cfcfcf" stroke-width="1.4"/><path d="M1899.3 529.4 V539.2 M1895 535.2 L1899.3 539.5 L1903.6 535.2" fill="none" stroke="#cfcfcf" stroke-width="1.4" stroke-linecap="round" stroke-linejoin="round"/><path d="M1415.7 568.0 V569.5" stroke="#7f93a8" stroke-width="1.5" stroke-linecap="round"/><path d="M1418.6 565.0 V572.5" stroke="#7f93a8" stroke-width="1.5" stroke-linecap="round"/><path d="M1421.5 566.9 V570.6" stroke="#7f93a8" stroke-width="1.5" stroke-linecap="round"/><path d="M1424.4 563.0 V574.5" stroke="#7f93a8" stroke-width="1.5" stroke-linecap="round"/><path d="M1427.3 566.9 V570.6" stroke="#7f93a8" stroke-width="1.5" stroke-linecap="round"/><path d="M1430.2 565.0 V572.5" stroke="#7f93a8" stroke-width="1.5" stroke-linecap="round"/><path d="M1433.1 568.0 V569.5" stroke="#7f93a8" stroke-width="1.5" stroke-linecap="round"/><circle cx="1899.3" cy="568.8" r="8.8" fill="none" stroke="#cfcfcf" stroke-width="1.4"/><path d="M1899.3 563.5 V573.4 M1895 569.4 L1899.3 573.6 L1903.6 569.4" fill="none" stroke="#cfcfcf" stroke-width="1.4" stroke-linecap="round" stroke-linejoin="round"/><path d="M1415.7 602.1 V603.7" stroke="#7f93a8" stroke-width="1.5" stroke-linecap="round"/><path d="M1418.6 599.2 V606.6" stroke="#7f93a8" stroke-width="1.5" stroke-linecap="round"/><path d="M1421.5 601.0 V604.8" stroke="#7f93a8" stroke-width="1.5" stroke-linecap="round"/><path d="M1424.4 597.1 V608.7" stroke="#7f93a8" stroke-width="1.5" stroke-linecap="round"/><path d="M1427.3 601.0 V604.8" stroke="#7f93a8" stroke-width="1.5" stroke-linecap="round"/><path d="M1430.2 599.2 V606.6" stroke="#7f93a8" stroke-width="1.5" stroke-linecap="round"/><path d="M1433.1 602.1 V603.7" stroke="#7f93a8" stroke-width="1.5" stroke-linecap="round"/><circle cx="1899.3" cy="602.9" r="8.8" fill="none" stroke="#cfcfcf" stroke-width="1.4"/><path d="M1899.3 597.7 V607.5 M1895 603.5 L1899.3 607.8 L1903.6 603.5" fill="none" stroke="#cfcfcf" stroke-width="1.4" stroke-linecap="round" stroke-linejoin="round"/><path d="M1415.7 636.3 V637.9" stroke="#7f93a8" stroke-width="1.5" stroke-linecap="round"/><path d="M1418.6 633.4 V640.8" stroke="#7f93a8" stroke-width="1.5" stroke-linecap="round"/><path d="M1421.5 635.2 V639.0" stroke="#7f93a8" stroke-width="1.5" stroke-linecap="round"/><path d="M1424.4 631.3 V642.9" stroke="#7f93a8" stroke-width="1.5" stroke-linecap="round"/><path d="M1427.3 635.2 V639.0" stroke="#7f93a8" stroke-width="1.5" stroke-linecap="round"/><path d="M1430.2 633.4 V640.8" stroke="#7f93a8" stroke-width="1.5" stroke-linecap="round"/><path d="M1433.1 636.3 V637.9" stroke="#7f93a8" stroke-width="1.5" stroke-linecap="round"/><circle cx="1899.3" cy="637.1" r="8.8" fill="none" stroke="#cfcfcf" stroke-width="1.4"/><path d="M1899.3 631.9 V641.7 M1895 637.7 L1899.3 642.0 L1903.6 637.7" fill="none" stroke="#cfcfcf" stroke-width="1.4" stroke-linecap="round" stroke-linejoin="round"/><path d="M1415.7 670.4 V672.0" stroke="#f2f6fb" stroke-width="1.5" stroke-linecap="round"/><path d="M1418.6 667.5 V674.9" stroke="#f2f6fb" stroke-width="1.5" stroke-linecap="round"/><path d="M1421.5 669.3 V673.1" stroke="#f2f6fb" stroke-width="1.5" stroke-linecap="round"/><path d="M1424.4 665.4 V677.0" stroke="#f2f6fb" stroke-width="1.5" stroke-linecap="round"/><path d="M1427.3 669.3 V673.1" stroke="#f2f6fb" stroke-width="1.5" stroke-linecap="round"/><path d="M1430.2 667.5 V674.9" stroke="#f2f6fb" stroke-width="1.5" stroke-linecap="round"/><path d="M1433.1 670.4 V672.0" stroke="#f2f6fb" stroke-width="1.5" stroke-linecap="round"/><path d="M1415.7 704.6 V706.1" stroke="#7f93a8" stroke-width="1.5" stroke-linecap="round"/><path d="M1418.6 701.6 V709.1" stroke="#7f93a8" stroke-width="1.5" stroke-linecap="round"/><path d="M1421.5 703.5 V707.2" stroke="#7f93a8" stroke-width="1.5" stroke-linecap="round"/><path d="M1424.4 699.6 V711.1" stroke="#7f93a8" stroke-width="1.5" stroke-linecap="round"/><path d="M1427.3 703.5 V707.2" stroke="#7f93a8" stroke-width="1.5" stroke-linecap="round"/><path d="M1430.2 701.6 V709.1" stroke="#7f93a8" stroke-width="1.5" stroke-linecap="round"/><path d="M1433.1 704.6 V706.1" stroke="#7f93a8" stroke-width="1.5" stroke-linecap="round"/><circle cx="1899.3" cy="705.4" r="8.8" fill="none" stroke="#cfcfcf" stroke-width="1.4"/><path d="M1899.3 700.1 V710.0 M1895 706.0 L1899.3 710.2 L1903.6 706.0" fill="none" stroke="#cfcfcf" stroke-width="1.4" stroke-linecap="round" stroke-linejoin="round"/><path d="M1415.7 738.7 V740.3" stroke="#7f93a8" stroke-width="1.5" stroke-linecap="round"/><path d="M1418.6 735.8 V743.2" stroke="#7f93a8" stroke-width="1.5" stroke-linecap="round"/><path d="M1421.5 737.6 V741.4" stroke="#7f93a8" stroke-width="1.5" stroke-linecap="round"/><path d="M1424.4 733.7 V745.3" stroke="#7f93a8" stroke-width="1.5" stroke-linecap="round"/><path d="M1427.3 737.6 V741.4" stroke="#7f93a8" stroke-width="1.5" stroke-linecap="round"/><path d="M1430.2 735.8 V743.2" stroke="#7f93a8" stroke-width="1.5" stroke-linecap="round"/><path d="M1433.1 738.7 V740.3" stroke="#7f93a8" stroke-width="1.5" stroke-linecap="round"/><circle cx="1899.3" cy="739.5" r="8.8" fill="none" stroke="#cfcfcf" stroke-width="1.4"/><path d="M1899.3 734.3 V744.1 M1895 740.1 L1899.3 744.4 L1903.6 740.1" fill="none" stroke="#cfcfcf" stroke-width="1.4" stroke-linecap="round" stroke-linejoin="round"/><path d="M1415.7 772.9 V774.4" stroke="#f2f6fb" stroke-width="1.5" stroke-linecap="round"/><path d="M1418.6 769.9 V777.4" stroke="#f2f6fb" stroke-width="1.5" stroke-linecap="round"/><path d="M1421.5 771.8 V775.5" stroke="#f2f6fb" stroke-width="1.5" stroke-linecap="round"/><path d="M1424.4 767.9 V779.4" stroke="#f2f6fb" stroke-width="1.5" stroke-linecap="round"/><path d="M1427.3 771.8 V775.5" stroke="#f2f6fb" stroke-width="1.5" stroke-linecap="round"/><path d="M1430.2 769.9 V777.4" stroke="#f2f6fb" stroke-width="1.5" stroke-linecap="round"/><path d="M1433.1 772.9 V774.4" stroke="#f2f6fb" stroke-width="1.5" stroke-linecap="round"/><path d="M1415.7 807.0 V808.6" stroke="#7f93a8" stroke-width="1.5" stroke-linecap="round"/><path d="M1418.6 804.1 V811.5" stroke="#7f93a8" stroke-width="1.5" stroke-linecap="round"/><path d="M1421.5 805.9 V809.7" stroke="#7f93a8" stroke-width="1.5" stroke-linecap="round"/><path d="M1424.4 802.0 V813.6" stroke="#7f93a8" stroke-width="1.5" stroke-linecap="round"/><path d="M1427.3 805.9 V809.7" stroke="#7f93a8" stroke-width="1.5" stroke-linecap="round"/><path d="M1430.2 804.1 V811.5" stroke="#7f93a8" stroke-width="1.5" stroke-linecap="round"/><path d="M1433.1 807.0 V808.6" stroke="#7f93a8" stroke-width="1.5" stroke-linecap="round"/><circle cx="1899.3" cy="807.8" r="8.8" fill="none" stroke="#cfcfcf" stroke-width="1.4"/><path d="M1899.3 802.6 V812.4 M1895 808.4 L1899.3 812.7 L1903.6 808.4" fill="none" stroke="#cfcfcf" stroke-width="1.4" stroke-linecap="round" stroke-linejoin="round"/><path d="M1415.7 841.1 V842.7" stroke="#7f93a8" stroke-width="1.5" stroke-linecap="round"/><path d="M1418.6 838.2 V845.6" stroke="#7f93a8" stroke-width="1.5" stroke-linecap="round"/><path d="M1421.5 840.0 V843.8" stroke="#7f93a8" stroke-width="1.5" stroke-linecap="round"/><path d="M1424.4 836.1 V847.7" stroke="#7f93a8" stroke-width="1.5" stroke-linecap="round"/><path d="M1427.3 840.0 V843.8" stroke="#7f93a8" stroke-width="1.5" stroke-linecap="round"/><path d="M1430.2 838.2 V845.6" stroke="#7f93a8" stroke-width="1.5" stroke-linecap="round"/><path d="M1433.1 841.1 V842.7" stroke="#7f93a8" stroke-width="1.5" stroke-linecap="round"/><circle cx="1899.3" cy="841.9" r="8.8" fill="none" stroke="#cfcfcf" stroke-width="1.4"/><path d="M1899.3 836.7 V846.5 M1895 842.5 L1899.3 846.8 L1903.6 842.5" fill="none" stroke="#cfcfcf" stroke-width="1.4" stroke-linecap="round" stroke-linejoin="round"/><path d="M1415.7 875.3 V876.9" stroke="#7f93a8" stroke-width="1.5" stroke-linecap="round"/><path d="M1418.6 872.4 V879.8" stroke="#7f93a8" stroke-width="1.5" stroke-linecap="round"/><path d="M1421.5 874.2 V878.0" stroke="#7f93a8" stroke-width="1.5" stroke-linecap="round"/><path d="M1424.4 870.3 V881.9" stroke="#7f93a8" stroke-width="1.5" stroke-linecap="round"/><path d="M1427.3 874.2 V878.0" stroke="#7f93a8" stroke-width="1.5" stroke-linecap="round"/><path d="M1430.2 872.4 V879.8" stroke="#7f93a8" stroke-width="1.5" stroke-linecap="round"/><path d="M1433.1 875.3 V876.9" stroke="#7f93a8" stroke-width="1.5" stroke-linecap="round"/><circle cx="1899.3" cy="876.1" r="8.8" fill="none" stroke="#cfcfcf" stroke-width="1.4"/><path d="M1899.3 870.9 V880.7 M1895 876.7 L1899.3 881.0 L1903.6 876.7" fill="none" stroke="#cfcfcf" stroke-width="1.4" stroke-linecap="round" stroke-linejoin="round"/><path d="M1415.7 909.5 V911.0" stroke="#7f93a8" stroke-width="1.5" stroke-linecap="round"/><path d="M1418.6 906.5 V914.0" stroke="#7f93a8" stroke-width="1.5" stroke-linecap="round"/><path d="M1421.5 908.4 V912.1" stroke="#7f93a8" stroke-width="1.5" stroke-linecap="round"/><path d="M1424.4 904.5 V916.0" stroke="#7f93a8" stroke-width="1.5" stroke-linecap="round"/><path d="M1427.3 908.4 V912.1" stroke="#7f93a8" stroke-width="1.5" stroke-linecap="round"/><path d="M1430.2 906.5 V914.0" stroke="#7f93a8" stroke-width="1.5" stroke-linecap="round"/><path d="M1433.1 909.5 V911.0" stroke="#7f93a8" stroke-width="1.5" stroke-linecap="round"/><circle cx="1899.3" cy="910.2" r="8.8" fill="none" stroke="#cfcfcf" stroke-width="1.4"/><path d="M1899.3 905.0 V914.9 M1895 910.9 L1899.3 915.1 L1903.6 910.9" fill="none" stroke="#cfcfcf" stroke-width="1.4" stroke-linecap="round" stroke-linejoin="round"/><path d="M1415.7 943.6 V945.2" stroke="#7f93a8" stroke-width="1.5" stroke-linecap="round"/><path d="M1418.6 940.7 V948.1" stroke="#7f93a8" stroke-width="1.5" stroke-linecap="round"/><path d="M1421.5 942.5 V946.3" stroke="#7f93a8" stroke-width="1.5" stroke-linecap="round"/><path d="M1424.4 938.6 V950.2" stroke="#7f93a8" stroke-width="1.5" stroke-linecap="round"/><path d="M1427.3 942.5 V946.3" stroke="#7f93a8" stroke-width="1.5" stroke-linecap="round"/><path d="M1430.2 940.7 V948.1" stroke="#7f93a8" stroke-width="1.5" stroke-linecap="round"/><path d="M1433.1 943.6 V945.2" stroke="#7f93a8" stroke-width="1.5" stroke-linecap="round"/><circle cx="1899.3" cy="944.4" r="8.8" fill="none" stroke="#cfcfcf" stroke-width="1.4"/><path d="M1899.3 939.2 V949.0 M1895 945.0 L1899.3 949.3 L1903.6 945.0" fill="none" stroke="#cfcfcf" stroke-width="1.4" stroke-linecap="round" stroke-linejoin="round"/><path d="M1415.7 977.8 V979.4" stroke="#f2f6fb" stroke-width="1.5" stroke-linecap="round"/><path d="M1418.6 974.9 V982.3" stroke="#f2f6fb" stroke-width="1.5" stroke-linecap="round"/><path d="M1421.5 976.7 V980.5" stroke="#f2f6fb" stroke-width="1.5" stroke-linecap="round"/><path d="M1424.4 972.8 V984.4" stroke="#f2f6fb" stroke-width="1.5" stroke-linecap="round"/><path d="M1427.3 976.7 V980.5" stroke="#f2f6fb" stroke-width="1.5" stroke-linecap="round"/><path d="M1430.2 974.9 V982.3" stroke="#f2f6fb" stroke-width="1.5" stroke-linecap="round"/><path d="M1433.1 977.8 V979.4" stroke="#f2f6fb" stroke-width="1.5" stroke-linecap="round"/><path d="M1415.7 1011.9 V1013.5" stroke="#f2f6fb" stroke-width="1.5" stroke-linecap="round"/><path d="M1418.6 1009.0 V1016.4" stroke="#f2f6fb" stroke-width="1.5" stroke-linecap="round"/><path d="M1421.5 1010.8 V1014.6" stroke="#f2f6fb" stroke-width="1.5" stroke-linecap="round"/><path d="M1424.4 1006.9 V1018.5" stroke="#f2f6fb" stroke-width="1.5" stroke-linecap="round"/><path d="M1427.3 1010.8 V1014.6" stroke="#f2f6fb" stroke-width="1.5" stroke-linecap="round"/><path d="M1430.2 1009.0 V1016.4" stroke="#f2f6fb" stroke-width="1.5" stroke-linecap="round"/><path d="M1433.1 1011.9 V1013.5" stroke="#f2f6fb" stroke-width="1.5" stroke-linecap="round"/><path d="M1415.7 1046.0 V1047.6" stroke="#f2f6fb" stroke-width="1.5" stroke-linecap="round"/><path d="M1418.6 1043.1 V1050.5" stroke="#f2f6fb" stroke-width="1.5" stroke-linecap="round"/><path d="M1421.5 1044.9 V1048.8" stroke="#f2f6fb" stroke-width="1.5" stroke-linecap="round"/><path d="M1424.4 1041.0 V1052.6" stroke="#f2f6fb" stroke-width="1.5" stroke-linecap="round"/><path d="M1427.3 1044.9 V1048.8" stroke="#f2f6fb" stroke-width="1.5" stroke-linecap="round"/><path d="M1430.2 1043.1 V1050.5" stroke="#f2f6fb" stroke-width="1.5" stroke-linecap="round"/><path d="M1433.1 1046.0 V1047.6" stroke="#f2f6fb" stroke-width="1.5" stroke-linecap="round"/><path d="M1415.7 1080.2 V1081.8" stroke="#f2f6fb" stroke-width="1.5" stroke-linecap="round"/><path d="M1418.6 1077.3 V1084.7" stroke="#f2f6fb" stroke-width="1.5" stroke-linecap="round"/><path d="M1421.5 1079.1 V1082.9" stroke="#f2f6fb" stroke-width="1.5" stroke-linecap="round"/><path d="M1424.4 1075.2 V1086.8" stroke="#f2f6fb" stroke-width="1.5" stroke-linecap="round"/><path d="M1427.3 1079.1 V1082.9" stroke="#f2f6fb" stroke-width="1.5" stroke-linecap="round"/><path d="M1430.2 1077.3 V1084.7" stroke="#f2f6fb" stroke-width="1.5" stroke-linecap="round"/><path d="M1433.1 1080.2 V1081.8" stroke="#f2f6fb" stroke-width="1.5" stroke-linecap="round"/><path d="M1415.7 1114.3 V1115.9" stroke="#f2f6fb" stroke-width="1.5" stroke-linecap="round"/><path d="M1418.6 1111.4 V1118.8" stroke="#f2f6fb" stroke-width="1.5" stroke-linecap="round"/><path d="M1421.5 1113.2 V1117.0" stroke="#f2f6fb" stroke-width="1.5" stroke-linecap="round"/><path d="M1424.4 1109.3 V1120.9" stroke="#f2f6fb" stroke-width="1.5" stroke-linecap="round"/><path d="M1427.3 1113.2 V1117.0" stroke="#f2f6fb" stroke-width="1.5" stroke-linecap="round"/><path d="M1430.2 1111.4 V1118.8" stroke="#f2f6fb" stroke-width="1.5" stroke-linecap="round"/><path d="M1433.1 1114.3 V1115.9" stroke="#f2f6fb" stroke-width="1.5" stroke-linecap="round"/><path d="M1415.7 1148.5 V1150.1" stroke="#f2f6fb" stroke-width="1.5" stroke-linecap="round"/><path d="M1418.6 1145.6 V1153.0" stroke="#f2f6fb" stroke-width="1.5" stroke-linecap="round"/><path d="M1421.5 1147.4 V1151.2" stroke="#f2f6fb" stroke-width="1.5" stroke-linecap="round"/><path d="M1424.4 1143.5 V1155.1" stroke="#f2f6fb" stroke-width="1.5" stroke-linecap="round"/><path d="M1427.3 1147.4 V1151.2" stroke="#f2f6fb" stroke-width="1.5" stroke-linecap="round"/><path d="M1430.2 1145.6 V1153.0" stroke="#f2f6fb" stroke-width="1.5" stroke-linecap="round"/><path d="M1433.1 1148.5 V1150.1" stroke="#f2f6fb" stroke-width="1.5" stroke-linecap="round"/></g></svg>
<div class="a" style="left:0.0px;top:1020.6px;width:623.6px;height:1.4px;background:#222222;"></div>
<div class="a" style="left:0.0px;top:1022.0px;width:623.6px;height:40.0px;background:#494949;"></div>
<div class="a" style="left:11.4px;top:1026.8px;width:46.4px;height:29.0px;background:#393939;border-radius:5px;box-shadow:0 0 0 1px #2e2e2e;"></div>
<span class="t" style="left:514.4px;top:1032.2px;font-size:18.4px;color:#bdbdbd;letter-spacing:0.89px;">4689 items</span>
<svg class="a" style="left:0.0px;top:0.0px;" width="624.0" height="1062.0" viewBox="0 0 624.0 1062.0"><g transform="translate(-1402.6 -117.8)"><path d="M1426.4 1153.8 H1431 L1438.8 1147.6 V1170.6 L1431 1164.4 H1426.4 Z" fill="#f0f0f0"/><circle cx="1445.4" cy="1159.2" r="2.5" fill="#f0f0f0"/><path d="M1623.6 1156.6 H1626.4 L1631 1152.8 V1166.4 L1626.4 1162.6 H1623.6 Z" fill="#f0f0f0"/><path d="M1634.4 1155.6 A4.6 4.6 0 0 1 1634.4 1163.6" fill="none" stroke="#f0f0f0" stroke-width="1.4" stroke-linecap="round"/><path d="M1651 1159.6 H1773" stroke="#2c2c2c" stroke-width="4.6" stroke-linecap="round"/><circle cx="1721.6" cy="1159.4" r="7.9" fill="#b6b6b6"/><path d="M1788 1156.4 H1791 L1796 1152.2 V1167 L1791 1162.8 H1788 Z" fill="#f0f0f0"/><path d="M1799.4 1156.2 A4 4 0 0 1 1799.4 1163 M1802.8 1153.6 A7.4 7.4 0 0 1 1802.8 1165.6 M1806.2 1151.2 A10.8 10.8 0 0 1 1806.2 1168" fill="none" stroke="#f0f0f0" stroke-width="1.3" stroke-linecap="round"/></g></svg>
</div>
</div></body></html>
